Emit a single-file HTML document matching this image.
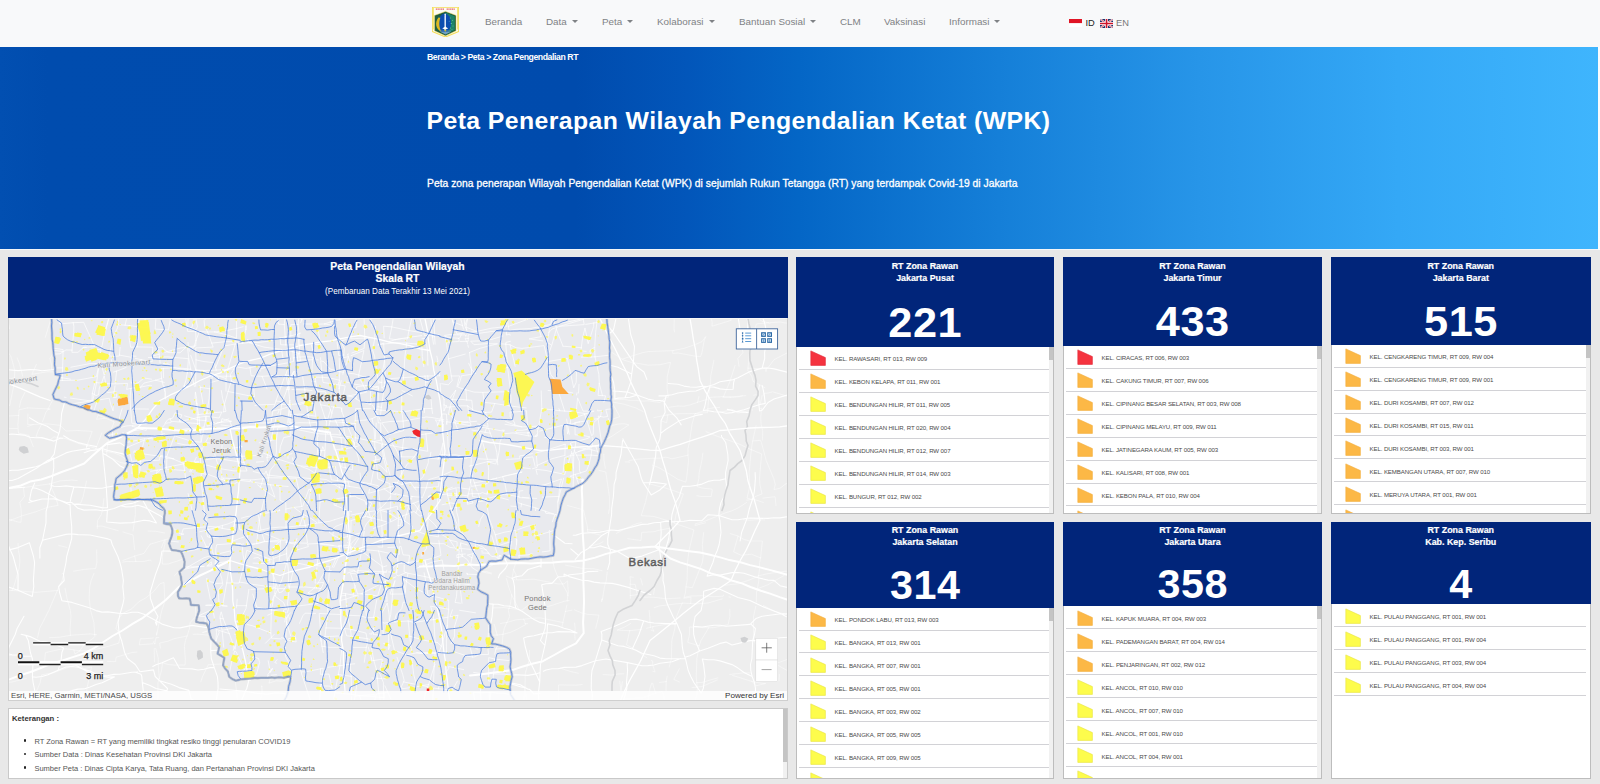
<!DOCTYPE html>
<html><head><meta charset="utf-8"><title>Peta Penerapan Wilayah Pengendalian Ketat (WPK)</title>
<style>
*{box-sizing:border-box;margin:0;padding:0}
html,body{width:1600px;height:784px;overflow:hidden;background:#e8e8e8;font-family:"Liberation Sans",sans-serif;}
body{position:relative}
.abs{position:absolute}
#nav{position:absolute;left:0;top:0;width:1600px;height:47px;background:#f8f9fa}
#nav .it{position:absolute;top:15px;font-size:9.85px;color:#7f8285;white-space:nowrap;line-height:14px}
#nav .car{display:inline-block;width:0;height:0;border-left:3px solid transparent;border-right:3px solid transparent;border-top:3.2px solid #7f8285;margin-left:5px;vertical-align:2px}
#hero{position:absolute;left:0;top:47px;width:1598px;height:201.5px;background:linear-gradient(90deg,#024fb1 0%,#004cae 3%,#004bad 36%,#0256ba 43%,#0466c6 50%,#157fd8 62.5%,#2795e8 75%,#34a8f6 87.5%,#3fb5fd 100%)}
#bc{position:absolute;left:427px;top:51px;font-size:8.7px;font-weight:bold;color:#fff;white-space:nowrap;line-height:12px;letter-spacing:-0.42px}
#ttl{position:absolute;left:426.5px;top:105.3px;font-size:24.8px;font-weight:bold;color:#fff;white-space:nowrap;line-height:32px;letter-spacing:0.41px}
#sub{position:absolute;left:427px;top:176.8px;font-size:10.3px;color:#fff;white-space:nowrap;line-height:14px;-webkit-text-stroke:0.3px #fff;letter-spacing:0.02px}
#wband{position:absolute;left:0;top:248.5px;width:1600px;height:1.5px;background:#f4f6f8}
.navy{background:#01257a}
#mp{position:absolute;left:8px;top:257px;width:780px;height:444.2px;background:#e9e9e9;overflow:hidden}
#mph{position:absolute;left:0;top:0;width:780px;height:60.5px;background:#01257a;color:#fff;text-align:center}
#mph .a{-webkit-text-stroke:0.2px #fff;position:absolute;left:0;width:779px;top:3.6px;font-size:10.4px;font-weight:bold;line-height:12.6px}
#mph .b{position:absolute;left:0;width:779px;top:29.2px;font-size:8.15px;line-height:11px}
#map{position:absolute;left:0;top:60.5px;width:780px;height:384px;overflow:hidden;background:#e9e9e9}
#attr{position:absolute;left:0;top:434px;width:780px;height:10.5px;background:rgba(255,255,255,.82);font-size:7.75px;color:#4a4a4a;line-height:10.2px}
#ket{position:absolute;left:7.5px;top:708px;width:780.5px;height:70.5px;background:#fff;border:1px solid #c9c9c9;font-size:7.5px;color:#555}
.card{position:absolute;background:#fff;overflow:hidden}
.chead{position:absolute;left:0;top:0;right:0;background:#01257a;color:#fff;text-align:center}
.ct1,.ct2{-webkit-text-stroke:0.2px #fff}
.ct1{position:absolute;left:0;right:0;top:3.3px;font-size:8.9px;font-weight:bold;line-height:12px}
.ct2{position:absolute;left:0;right:0;top:14.9px;font-size:8.9px;font-weight:bold;line-height:12px}
.cnum{position:absolute;left:0;right:0;font-size:43.5px;font-weight:bold;line-height:48px;letter-spacing:0.6px;text-indent:0.6px}
.clist{position:absolute;left:0;right:0;overflow:hidden;border:1px solid #bdbdbd;border-top:none}
.row{position:absolute;left:2px;right:4px;height:22.96px;border-bottom:1px solid #d2d2d6}
.row .ic{position:absolute;left:10.5px;top:3.3px}
.row .rt{position:absolute;left:35.5px;top:1.6px;line-height:21.96px;font-size:6.1px;color:#4a4a4a;white-space:nowrap;letter-spacing:-0.1px}
.sbar{position:absolute;right:0;top:0;bottom:0;width:4px;background:#f1f1f1}
.sthumb{position:absolute;left:0;top:0;width:4px;height:13px;background:#c4c4c4}
</style></head><body>
<div id="nav">
<svg class="abs" style="left:432px;top:6.7px" width="27" height="30.4" viewBox="0 0 27 30.4">
<path d="M0.3,0.3 H26.7 V24.4 L13.5,30 L0.3,24.4 Z" fill="#fdfcf4" stroke="#f4dc55" stroke-width="1.1" stroke-linejoin="round"/>
<path d="M1.2,1 V22.5 M25.8,1 V22.5" stroke="#f6e36a" stroke-width="1.3" fill="none"/>
<path d="M3.8,2.1 H12 M14.6,2.1 H22.8" stroke="#e4606a" stroke-width="1.3" stroke-dasharray="1.3 0.45" fill="none"/>
<path d="M13.5,4.4 L24,8.4 L24,23.8 L13.5,28.8 L2.6,23.8 L2.6,8.4 Z" fill="#1c5a3c" stroke="#e9d34a" stroke-width="0.5"/>
<path d="M13.5,5.6 L22.8,9.2 L22.8,22.8 L13.5,27.6 Z" fill="#1f8466"/>
<path d="M3.9,9.4 L13.5,5.6 L13.5,27.6 L3.9,22.8 Z" fill="#1b5f45"/>
<ellipse cx="12.8" cy="16" rx="6.3" ry="9.6" fill="#0c4db0"/>
<path d="M6.4,10.4 C2.6,15.5 3.4,22 9.8,25 C7,21 6.6,15.5 8.4,10.8 Z" fill="#dcb81f"/>
<path d="M8.5,25 L18.5,25 L13.5,27.6 Z" fill="#6f9fc4"/>
<path d="M8,24.1 H19" stroke="#5b8fc0" stroke-width="1" />
<path d="M13.2,7.2 V21.5" stroke="#ffffff" stroke-width="1.25" stroke-linecap="round"/>
<path d="M13.2,9 V20" stroke="#dbe9fb" stroke-width="0.5"/>
<path d="M10.2,21.6 L13.2,19.4 L16.2,21.6 L14.4,21.9 L13.2,23.4 L12,21.9 Z" fill="#ffffff"/>
<circle cx="13.3" cy="23.6" r="1" fill="#c9c238"/>
<g fill="#7fe0c0"><circle cx="18.2" cy="11" r=".45"/><circle cx="20.4" cy="13.2" r=".45"/><circle cx="19.2" cy="16.6" r=".5"/><circle cx="21" cy="19" r=".45"/><circle cx="18.4" cy="21" r=".45"/><circle cx="20" cy="22.6" r=".4"/><circle cx="17.2" cy="14.2" r=".4"/></g>
</svg>

<span class="it" style="left:485px">Beranda</span>
<span class="it" style="left:546px">Data<i class="car"></i></span>
<span class="it" style="left:602px">Peta<i class="car"></i></span>
<span class="it" style="left:657px">Kolaborasi<i class="car"></i></span>
<span class="it" style="left:739px">Bantuan Sosial<i class="car"></i></span>
<span class="it" style="left:840px">CLM</span>
<span class="it" style="left:884px">Vaksinasi</span>
<span class="it" style="left:949px">Informasi<i class="car"></i></span>
<svg class="abs" style="left:1069px;top:18.7px" width="13" height="8.6" viewBox="0 0 13 8.6"><rect width="13" height="4.3" fill="#e01525"/><rect y="4.3" width="13" height="4.3" fill="#fff"/></svg>
<span class="it" style="left:1085.4px;color:#1c1c1c;font-size:9.3px;top:15.6px">ID</span>
<svg class="abs" style="left:1100px;top:18.7px;border-radius:1.5px" width="13.2" height="9" viewBox="0 0 60 40" preserveAspectRatio="none"><rect width="60" height="40" fill="#20336b"/><path d="M0,0L60,40M60,0L0,40" stroke="#fff" stroke-width="8"/><path d="M0,0L60,40M60,0L0,40" stroke="#cf142b" stroke-width="3"/><path d="M30,0V40M0,20H60" stroke="#fff" stroke-width="13"/><path d="M30,0V40M0,20H60" stroke="#cf142b" stroke-width="7"/></svg>
<span class="it" style="left:1116px;color:#777;font-size:9.3px;top:15.6px">EN</span>
</div>
<div id="hero"></div>
<div id="wband"></div>
<div style="position:absolute;left:1598px;top:47px;width:2px;height:203px;background:#fbfcfd"></div>
<div id="bc">Beranda &gt; Peta &gt; Zona Pengendalian RT</div>
<div id="ttl">Peta Penerapan Wilayah Pengendalian Ketat (WPK)</div>
<div id="sub">Peta zona penerapan Wilayah Pengendalian Ketat (WPK) di sejumlah Rukun Tetangga (RT) yang terdampak Covid-19 di Jakarta</div>

<div id="mp">
 <div id="map"><svg width="780" height="384" viewBox="0 0 780 384" style="position:absolute;left:0;top:0;font-family:'Liberation Sans',sans-serif">
<rect width="780" height="384" fill="#eeeeee"/>
<path d="M43.2 -17.6l-.2 2.9-.1 2.8 .7 3-.2 3.8-.3 3.2 .5 3.3 .2 3.2-.3 3.4 .3 3.9 .2 3.1 0 3.2 .1 3 .7 3.5 .2 2.7 .2 3.2 .4 3.6 .3 3.2 .8 2.6-.1 3.5-.1 3.3 .7 3.2-.1 3.3 .3 3.3 4.8 .6-.7 2.9-1 2.6-.8 3.7-1.2 2.5-1.9 3.9-1.7 3.7 1.2 4.3 2 .7 3.3 .6 2.8 1.6 3.6 .3 3.3 1.7 3.3 1 3.5 .9 3.7 1.3 3.9 .9 3.6 1.9 2.8 .4 2.7 1.2 3.1 .2 3.3 1.2 3 .9 2.8 1.2 2.9 1.3 3.2 1.4 3.1 1.2 3.6 1 2.7 1 2.3 1.2-2.9 4.9-3.6 1.5-3.6 2-4.2 2.5-3 2.5 4.1 3 4.1-.9 4.8-1.3 3.8-1.4 4 .2 .5 3.3-.3 3-.2 3.7-.6 3.4-.4 4.8 .8 3.6 1.3 3.2 .7 3.4-1.5 3.9-1.8 3.4-2.5 2.9-3 2.6-3 2.5-.5 3.3-.9 3.5 .1 3.7-.7 3.4-.5 4.1 .7 3 2.5 .4 3.9-.2 3.3 0 4.1-.5 3.5 .3 3.3 .1 3.4-.5 3.1 .3 3 .1 2.7 0 3.1 .3 2.6 .3 3.3 1.7 2.9 1.8 2.2 2.7 2.2 1.7 1.2 2.2 .2 2.9-.7 3.6 0 3.6-.2 3.1 3.3 .7 3.1 .6 1.3 2.7 .9 3-.3 2.9-.9 3.7-1.3 3.1-1 3.2 1.5 4.1 1.3 2.7 4.5 .3 4.4 .9 1.5 2.8 1.4 3.7 1 3.9-.3 2.8-.1 3-4.9 4.3 1.6 4.7 .4 3.8 .7 4.3-1.8 3.8-2.3 3.9 .1 3.5 1.2 2.3 3 .3 4.2-.1 3.2 .3 .8 2.8 .4 3.4 4.2 .4 3.7 0 .5 5.1-1.3 3.9-1.4 4.3-.3 3.1 3 .9 3.7 .3 3.6 .7 1.5 2.4 .9 3.5 .4 3 1 3.3 1 3 2.6 2.5 3 3.2 2.2 2.7-.9 4-.7 2.5 3.3 1.8 3.6 2.5-.7 3.3-.5 4 1.9 3.4 2.8 2.8 1.3 5.2 2.9 2.3 3.9 1.7 4.5-1.2 2.9-.4 3.8-.3 3.7-.2 3.7-.7 3.1 .2 3.1-.3 3.8 0 3.4 0 3.8-.4 2.9 .5 3.7-.6 2.7 .1 3 .4 4.1-1.4 2.4 .3-.2 3.2-.7 3.1-1.1 3.3-.4 4.5-.9 3.2-1.2 3.3-2.1 3.8-2.6 3.2-1 3.9-.4 3.1 .6 3.9 3 2.8 5.7 2.3 1.6 .6 2.7-.4 2.5 .2 2 .1 2.4 .2 3 .1 2.8-.2 2.1 .1 3 .2 2.8 .3 2.8 .3 3 .1 2.4-.3 3.5 .1 2.5 .1 3 .3 3.4-.4 3.3 .3 2.7 .1 3.6-.1 2.6-.1 3.2 .3 3.5 .3 3.2-.6 3.5 .1 3.2 .1 3.3 .4 3.9-.2 3.1 0 3.6 .2 2.8 .1 3.6-.4 3.3 .5 3.9-.3 3.3 .2 3.1 0 3.9 .2 3-.3 3.7 .2 3.4-.1 3.8-.2 3.1 .3 3.1 .1 3.6-.4 3.3 .2 3.6-.1 3 .1 3.9-.2 2.8-.3 3.5-.2 3.6 .2 3.2-.2 3 .4 3.2-.3 2.7-.1 3.4 .3 3.4 0 3.1-.6 2.3 0 2.9-.2 3.3 0 2.9 0 2.6 .4 2.7-.2 2.9-.2 2.4 0 3.1-.5 2.3 .2 2.5 0 2.5-.4 2.4 .2 2.1-.2 2.4-.2 5-2.6 3.3-2.8 .4-3.4-.2-3.4-2-3.5-1.7-3.6-2-3.3-2.3-3.3-.2-2.8-.5-4.7 .7-3.5 .5-3 1.1-3.8-.5-3.3-.9-3.4-.7-3.2 .6-4.2 .2-3.4-.3-3.6 .1-3.4-1.3-3.3-2.8-1.6-4-1.5-3.2-.8-4.2-1.1-3.6-.1 1.8-5.2-2.2-3-1-3.6 .1-3.9-.1-3.5-2.5-3.6-2-3.2 .3-3 .5-4.5 .3-2.6 .9-3.3 0-3.4 .2-3-.1-3-3.6-1.9-3.1-1.4-3.5-2.5 .7-3.1 .7-2.9-.4-3.4-.8-2.9 .7-3.6 2-3 3.3-2.2 2.6-1.7 2.8-5.1 2.7-.4 4 .2 3.3-.7 2.9-.5 2.1-4.7 2.9 1.7 4 2.3 2.8 .2 4 .3 3.2-.7 4.2-.2 2.8 .1 3-.6 2.9-.6 3.2-.5 2.8-.4 3.4 .2 3.7-.4 3.3-.8 2.9-.3 .7-3.5 .2-3.5-.5-4.5 .2-3.9 .3-3.7 .2-3.5 .4-3.6 1-3.3 .3-3.6 1-3.4 1.2-3.3 1.6-5 1.1-5.6 1.1-3.6 1.2-3.5 1.8-3.3 1.3-2.9 3.4-1.7 4.1-2.1 2.6-1.5 2.1-1.1 3.2-1.6 2.4-1.7 2.5-2.7 1.8-2.5 2.4-2.6 2-3 1.8-3.3 2.1-3 1.4-3.7 .9-3 .3-3.5 1-3 .3-3.3 1.6-3.3 1.7-3 1.7-3.7 1.3-3.2 1.2-3.2 .6-2.6 .9-3.5 1.1-2.5 .9-3.8 .2-2.8 .1-3.5 0-3.3-.4-3.4 .1-2.8-.8-3.9 .5-3.2-.5-2.7 .1-3.3-.4-3.3 .1-3.8-.3-3.2 0-3.3 .4-3.1-.6-3.6-.2-3.2 .1-3.6-.1-3.1-.4-3.2 0-3.4 .3-2.8-.4-3.3 .2-3 .1-2.9-.5-2.7-.4-3.6-.4-3.1-.4-3.3-.4-3.3-.6-3.2-.2-3.2-.6-3.6 .4-3.1-.2-3.9-.5-3.1-.1-3 .4-2.6z" fill="#e9eaee"/>
<path d="M-37.3 333.9l-11.8 24.6-1.6 6-.4 12-4.1 18-.3 6 1 18 M-38 26.3l6 2.3 6 1 6 1.9 18 1.1 4.5 4.7 1.1 3.2 3.2 12-.3 7.2 M-38 100.9l18-4.1 6-.3 6-1.4 2.2 1.2 M-38 182.8l6 2.2 7.9 1.3 M-38 234.1l12 .6 8.4-1.3 M-38 335.6l2-.1 M-38 370.6l6-2.3 6-.2 12.4-2.4 M-38 422.5l6-1.4 13-5.7-.4 3.1 M-37 78.4l11 4.6 6 1.9 21.7 2.7 4.7-23.1 .1-4.8 M-37 78.4l35-16.3 8.5-2.4 M-26.5 270l-1.9 28.5 4.8 6-4.8 13.8-3.3 6 M-24.1 186.3l7.5 1.3 M-24.1 186.3l4.1-1.8 3.2-4 .6-8-1-18 .6-6 7.3-18 3.1-12 1.4-8.4 .8 .1 M-17.6 380.9l9.6-.2 18 2 11 2 M-17.6 380.9l-.1 7.6-.9 6 .6 6.6 16-3.5 6-.6 4.8-5.2 M-13.6 365.7l-4 15.2 M-13.6 365.7l17.6-1.7 14.2-3.5 M-12.1 231.8l-4.1 12.7-4 18 .5 13.2 5.7-1.3 6-.2 6-1.3 6.1-.5 M-7.4 337.3l20.1 .6 M-5.9 -37.5l1.3 12 3 12 0 6 1.9 10.2 M-4.4 107.8l-.4 2 .8 .4 M-4 110.2l13.3 .4 .8 .2 .4 4.4 10.4 2.1 4.4 11.4 M-4 106l3-7.9 11.7-.7 M.3 2.7l-.6 7.4 M.3 2.7l1.2 7.9 M3.4 202l.6-.3 9.3-3.6-.2 6.2-3.1-.3-6.6-2 M3.4 202l-12.4-3.5-.6 7.7 7.6-1.9 5.4-2.3 M4.1 272.4l23.9 1.9 21.3-1.8 M10 225.4l.4 7.1 1.2 6 .2 6-.7 6-5.2 18-1.8 3.9 M9.2 40l2.6 6.5 2.8 11.6 M10.7 97.4l-.8 9.1 .2 4 M10.7 97.4l.3-5.6 8.4-1.9 M16.9 74.4l-3.9 8.1-1.6 6.7 M13.4 197.8l-.4-7.3-1.2-6 4.7-6-1.1-8.9 26.3-3.7 M13.9 197.9l14.1-4.2 12-4.5 10.1-1.9-2.7-8.8-5.7-12.6 M17.2 390.2l-2.7 4.3-2.3 6-1.8 11 11.6 1.4 12 .2 18-5.4 18-6.6 7-1.1 M19.4 89.9l20.7 1 M19.8 108.4l5.3-1.8 M19.9 96l-.2 10.6 5.4 0 M21 384.7l7 .3 6-1 24 3.2 13.6-.7 M21 384.7l5.7-8.2 3-6 2.5-6 1.4-7.6 12.4-2.3 23.5-8.6 M25.1 106.6l8.6-.5 M28.4 46.4l-4.5 9.9 16.1-2.6 6.2 .3 M49.3 272.5l-8.5 20-9.2 18-2 8.9 M33.7 106.1l-3.4 6.4-2.3 6.2 14 3.3 4-3.1 12 1.8 12 4.6 9 2.5 M33.7 106.1l6.3-.2 12 1.4 6 5.7 12-.5 14.1 .9-5.1 14.4 M40.1 90.9l2.3 .2-2.6 .3-1.9 3.1-3.3 9 M36.6 343.5l.8-8.8 14.6-3.4 6-.5 7.9 1.1 M42.5 2.3l-5.2 17.1 M44.9 80.2l-.5 2.3-4.3 8.4 M41.5 319.7l10.5-.5 10.4-1.9 M41.7 165.9l10.3-3 12-.8 5.3 .5 M44.9 35.7l-2.9 4.8 1.3 6 .2 5.1 M48.1 -23.2l-.7 4.7 M54.9 258.7l-.8 3.8-4.8 10 M52.5 -37.5l-1.9 15.2 M50.7 227.5l8.1 1.9 M54.1 255.6l1.6-.3 M57.1 270.3l1.9 10.2 3.4 12 .6 6-.9 12 .3 6.8 M62.4 317.3l19.6-1.4 4.7 .5 M64 186.6l8.7-1.4 2.5-6.7 3.3-15.4 M65.6 253.2l10.4-1.8 11.6-.9 1.3-6-.3-12.6 M65.9 331.9l5.8 1 M65.9 331.9l1 4.2 4.8-3.2 M69.5 346l-.9-3.3 7.4-2.1 9.3 .2 M69.5 346l.5-.3 6 5 7.5-1.7-4.6 21.5-.4 16.7 15.5 1.9 12-1.4 6 .3 12 2.1 8.8 2.2-5.5 2.5 M71.6 386.5l3.9 .4 M86.7 316.4l.2 2-2.4 2.5-7.9 5-4.9 7 M71.7 332.9l10.3-.2 18-4.2 9.8-3.1 M77.7 402.1l0 4.4-2.9 12 M77.8 400l10.2-1.7 15.5 1.4 M79 127.8l8.9 2.6 M79 127.8l-1.1 4.2 4.1-.1 5 1.1 M86 255.4l-2.9 7.1-1.4 6-.5 12 1.4 12 3.3 12 .8 11.9 M86.7 316.4l1.9 .2 M87.9 130.4l10.9 3.3 M93.8 115l-5.9 15.4 M89.3 208.2l0 2.3 M95.9 180.6l-1.1 9.9-1.4 6-3.8 6-.3 5.7 M89.3 208.2l4.7-.1 16.2 4.6 M90.1 97l16.1 6.9-3.2 8.1 M90.1 97l-1.6 4.3 8.5-1 M98.8 133.7l7.2 1.1 6 2.5 5.2 3.1 M98.8 133.7l-.1 4 13.3 6.7 6.4 1.2 M100.5 120.5l-1.7 13.2 M99.3 343.4l8.3 .2 .5-4.4 15.9-4.7 4.9-.4 M103.5 399.7l.5 6.8-.4 6-1.5 5.9 M102.1 418.4l9.9-.5 12-1.9 5.7-.1 M103.5 399.7l2.5 .3 12-1.8 9.3-3.4 M107.8 -27.8l-.4 9.3 M107.6 390.8l19.7 4 M109.1 -37.5l-.1 3 M149 314.1l-.5 3.2 5.2-24.8 2.2-6 .8-6-.7-16.1-4.1 1.4-6.2 7.6-7.8 6.5-7.1 3.8-7 7.1-9.1 4.6-4.5 5.9-2.2 9.2 4.4 6-1.5 8.5-1.1 .4 M114.8 244.1l3.2-.6 9.8 .1 M114.9 242.4l11.8-4.3 M115.1 214l9.9 3 1.6 14.6 M118.3 -37.5l.7 2.6 M119 -34.9l18.7 6 M119 -34.9l.9 3.4 .6 13 M127 182.5l.4 14-2.3 16.3 M126.7 238.1l1.1 5.5 M126.7 238.1l9.3-2.7 6-9.2 14.5-4.2 M127.8 243.6l8.2-.2 6-1.4 1.3 .8 M137.7 -28.9l-3 10.4 M135.1 392.8l11.2 .4 M137.7 -28.9l23.6 10.4 M139.4 416.9l32.6 6.3 12 .3 6-1.1 18-6.2 17-2.4 M139.4 416.9l.3 1.6 M139.4 416.9l-.8-4.4 1.8-12 5.1-4.6 1 0 M140.1 213l7.9 .3 8.7 1.7 M145.3 320l-9.3 .8-3.5-.2-1.3 6.2 13.5-1 1.3-2.6 M146.5 343.9l-.3-13.2 1.6-.1 2.5 9.9-.1 6 1.1 14 M146.5 395.9l4.2 .2 M147.4 393.3l-.9 2.6 M146.8 325.4l-.1 .8-.2-.7 .3-.1 M146.8 325.4l1.2-5.8 2.7-.1 M149.7 383.9l.5-.1-.3 1.1-.2-1 M151.3 360.5l-1.3 4-.3 19.4 M150.7 396.1l3.3 .3 9.7-1.2 M150.7 396.1l-.2-3.1 3.5-.5 6-.5 12 .6 12-2.5 2.3 2.1 M179.1 318l-1.7 4.5-1 6 .9 12-.2 6.5-11.1 .1-6-.7-5.5-1.5-1 7.6-2.2 8 M152.4 330l-.7-5 8.3-1.8 6-2.5 13.1-2.7 M156.5 222l-3.1 7.9 M157.1 221.8l-.3 4.7-2.6 12 .2 7.6 5.6-.1 14.7-4.7 M157.1 221.8l2.6-.7 M170.5 253.8l-4 3.8 M187.5 288.3l.2 10.2-5.5 6-.7 6-2.4 7.5 M185.2 316.3l4.8-.1 11.4 1 M192.8 363.8l1.7-5.3 5.8-11.8 13.8-.7 M200.1 312.4l-5.7 2.2 5.9-1.5 M215.3 -37.5l-3.5 19 M227.4 363.7l2.2 18.8-.3 6-2.3 10.9 11 1.9 8.2 .2 M245 418.5l-.4-6.6 7.3-1.3 M246.2 401.5l3 .4 M246.2 401.5l.9-7-.3-6.2 5.1 .2 M249.1 418.5l3.4-2.3 M251.9 388.5l-.3 13.7 4.5 .5 .2-8.2 2.5-5.1 M254.1 368.4l-.1-.5-.6 .1 .6 2.5-.1 6-1.7 6-.3 6 M257.9 409.9l2.3 8.6 M262.3 409.8l10-5.1 16.7-.1 M262.3 360.8l-1.4 4.4 7.1-2.4 6 .4 7.2-2.6 M278.2 -37.5l2.5 19 M288.8 418.5l.3-3.7 .5 .1 M289.2 413.3l.4 1.6 M289.6 414.9l14.4 2.1 12-.6 6 .6 6 4.8 18 2 18-1.5 6-1.1 4.3-4.1 6.4 0 M300.7 -37.5l-3.1 12-.5 7 M305.8 -37.5l-.4 12 1.1 7 M328.1 -37.5l-3.2 19 M334.7 -37.5l-2.6 19 M344.3 -37.5l-1.8 12 4.8 6 .3 1 M347.2 403.5l-1.9 15 M349.6 403.5l-1.4 15 M355.2 -18.5l.6-7 1.4-6 1.9-4.2 8.8-.7 M367.9 -36.4l2.1-.2 4.1 .8 M374.1 -35.8l12.4 3.8 M374.1 -35.8l1.7 4.3 2.6 13 M379.4 403.5l1.3 13.6 M380.7 417.1l1.3-.1 12.7 1.3 M394.7 418.3l6.8 .6 M417.1 403.5l-5.3 14.1 M411.8 417.6l6.2-1.2 6-.1 M418.1 -37.5l-1.8 14.3 M424 416.3l-.8 2.2 M426.3 403.5l-1 9-1.3 3.8 M424 416.3l6-.4 6 .5 17.1-2.4-5.1-10.5 M426.6 -20.3l3.3-1.5 M428.6 -18.5l.3-.8 2.5 .8 M434.8 -37.5l-1.2 6-3.7 9.7 M429.9 -21.8l12.1-3.4 11.9-1.7 M453.1 -37.5l.8 10.6 M453.9 -26.9l1.1 8.4 M456.9 -25l-.9 6.5 M456.9 -25l3.1 2.2 6.7-1.8 M457.7 -37.5l-.8 12.5 M466.7 -24.6l-.7 6.1 M466.7 -24.6l5.3-1.9 12-2.8 7.3-.8-1.1 11.6 M493.9 403.5l-3.4 3 .3 7.6-21.4 .8-.5 3.6 M472.9 253.6l10.5 2.3 M473 253.4l5 .1 5.6 1.6 M475.9 251.5l7.7-3.9-.6-3.3 M484.3 247.2l7.2-3.7 M484.4 289.9l11.6-.3 5 .8 M484.4 317l4.8 .1 M486.2 306.3l3 10.8 M489.2 317.1l5.8-.8 M490.7 414.6l1.5-.5 M492.6 305.5l6.3-1.1 M495 316.3l-.9 10.6 M498.9 304.4l-2.7 6.1-1.2 5.8 M495 316.3l7-1.8 6-2.7 9.7-5.2-.2-.9 M495.5 241.4l3-1 0-.7 M498.2 258.1l5.8 2.2 M498.5 260.7l2 7.8 3.2 8.5 M501 290.4l-.7 2.1 1.4 6-2.8 5.9 M498.9 304.4l9.1-2.6 7.7-.6 M501 290.4l10 1.2 M503.7 277l-1.4 9.5-1.3 3.9 M507.1 -31.5l-2.3 6-1.5 7 M503.7 277l7.3 14.6 M504 260.3l3.2 1.6 M505.6 251.7l-1.6 8.6 M505.6 251.7l2.2 4.8 .7 5.4 17.5-.7 24 4.7 4.3 0 M508.5 242.4l-2.9 9.3 M510 -37.5l-1.5 3 M508.7 -31.8l2.2 13.3 M511 291.6l3 .5 6-4.7 12 1.6 6-.1 6-1.5 12-4.1 3.2-.5 M515.7 301.2l1.1 2.2 0 2.3 .7 0 M515.7 301.2l16.3-1.4 22.9 4.7 M516.7 414.7l0-1.8 9.4 2.4 M516.8 368.7l.1 1.9 M516.9 370.6l1.9 11.9-.2 12-1 10.2-.5-10.2 1.2-6-2.5-6 1.1-11.9 M517.9 353.2l-.7 3.1-.1 12.4 M517.5 305.7l2.1-.1 M521.6 332.3l0 8.2-3.7 12.7 M523.8 416.2l2.3-.9 M526.1 415.3l5.9-2 11.7-5.4 M531.7 416.6l6.3 .3 1.6 1.6 .8-1.8 M543.7 407.9l-3.3 8.8 M540.4 416.7l9.6 .4 18-1.7 6-1.1 14.9-.2-2-7.6-1.1-12-2.6-2.9 14.8-5.7 13.6-3.6 .2 5 4.3-4.8-.5-1.3 18.4-1.3 6.8-2.3 M543.7 407.9l1.5-7.4 4-12 1.1-6 .3-15.6 17.4 .3 6.2-.7 M544.5 238.4l.5 6.1 1.5 6 2.4 6 5.4 9.4 M552.5 350.2l9.5 3.2 8.4 1.8 M554.9 304.5l-1 4.8 M554.3 265.9l1.7 0 3.5-3 .8 11.6-.5 3.2 M554.3 265.9l4.8 8.6 .7 3.2 M557.5 293.4l-2.6 11.1 M558.8 287.2l-1.3 6.2 M557.5 293.4l6.5-1.2 M557.6 247.2l16.4 3.1 12 .5 7.9 1.9 M559.8 277.7l-.6 5.1 M559.2 282.8l1.9-.3 M559.5 187.5l16 4.4 3.8 16.6 .2 3.2 M561.5 -37.5l1.7 6 1.8 11.8 M566.4 291.8l7.6 3.3 6 1.3 11 .7-3.3 13.2 M566.6 305.1l.6 5.4-.5 6 .4 5.1 M578.7 -23.5l9.8-3.3 .4 8.3 M579.5 211.7l.1 2.1 13.8 3.6 M579.5 211.7l.5 0 13.9 1.7 M581.6 228.5l10.4-3.1 3-1.7 M590.9 152.4l6.9 1.6 3.6 24.5 0 12-.8 5 M591.3 -18.5l0-7-.5-2.4 2.6-1.4 M592.7 414.1l11.3-.8 9.7 .3-.2-10.2 M594.5 281.1l-.8 2.7-.3-2.6 1.1-.1 M599.2 254l-.9 8.5-1.8 6-2 12.6 M595.2 356.6l8.8 .5 6-1.1 5.8-.2 M595.8 136.3l.2 6.2 1.3 7.8 M598.6 121.1l5.4-2.9 16.8-11.3-4.8-1.2-6 .4-6.9 1.6 M602.7 33.6l11.5 7.5 19.8-6.3 6-1.2 24.9-1 M614.5 41.3l1.5 .9 6 1.8 18 3.2 12-.5 10.6-2.4-3.3 14.2-.2 12 1.2 8.7-2.3 .1-6 5.2-12-1.7-6 .4-6-.8-6 0-6-1.1-6 .2-5.8-.6 M604.3 101.2l7.6-2.5-7.4-13.3 M604.4 84l11.6 2.2 12 3.8 7.1 3.6 M608.3 215.5l7.7-4.2 12-5.4 5.3-1.3 M611.7 363.2l1.3 9.6 1.4-9.2 M617.2 143.9l4.6 .2 M619.9 220.7l13.1 1.8 .7-8.1 12.3-.7 6-1.7 13.7-2.4-1.3 4.9-4.3 10.8 M621 142.6l7-1.3 18.5-1.1 M621.7 312.7l12.1-1.4 M621.7 312.7l-3.2 14 9.5 5.5 10.9 7.7 M621.7 312.7l-12.7-.6 7-2.7 6.7-3.9 M622.2 266.2l5 .3 2.1 10.2 M622.2 266.2l.1 11.4 M622.2 266.2l.3-3.7-.6-3.7 3.4 .5 M622.3 277.6l.1 2.7 M622.3 277.6l7-.9 M629.3 276.7l.6 2.4 16.1 .1 12 1.6 14.3-.8 M640.8 377.6l-1.9 10.9-4.1 12-2.6 12.9 M632.8 260.6l1.7 6.4 M638.5 310.3l4-1 M640.8 377.6l1.2-7.1 1.6-5.2 1-.1 2.9 9.9 M640.8 377.6l6.7-2.5 M641.2 292.5l1.3 16.8 M641.6 166l-4.2 18.5-4.2 13.1 12.8 .9 20.6 6.2 1.4-8.2 7.3-20.6-17.3-5.7-16.4-4.2 M645 147.3l-1.5 13.2-1.9 5.5 M642.5 309.3l2.4-.7 M643.1 312.1l2.9 1.2-1.4-2.8 .3-1.9 M643.4 342.5l1.3 .6-.1 3.7 2.5 7-2.3-.4 M644.9 308.6l13.1-2.3 9.2 .4 M645 147.3l7 2.9 18 11.2 7.7 2.7 .9-3.6 2-18-.7-5.3 M646.5 140.2l-1.5 7.1 M646.5 270.2l-.9 6.1 M645.8 99.6l14.1-2.8 M646.1 289.7l5.9-1.9 22.2-2.6 M646.5 140.2l5.5 0 6-1 6 1.6 15.9-3.6 M647.5 375.1l6.7-1.7 1.2 3.1 1.9 9.5 M651.6 364.5l6.6-.9 M659.9 96.8l-1.3 7.9-4.9-1.6 M653.9 417.6l4.9-.3 M658.2 363.6l-.2 9.1 M658.2 383.8l-.2 5.4 M659.1 358.2l-.9 5.4 M659.9 96.8l10.1-1.1 17.5-.1 M660.9 89.3l9.1-1.3 6 .2 6-1.3 7.6-2.6 M667.2 306.7l-.3 3.8-3.1 12-.4 18-2.2 8.5 M662.3 417.4l7.7 .8 6 4.9 6 1 12-.8 18-3 12 1.6 6 1.8 18 1.9 12-.3 12-2.6 6-.4 18-4.3 6 0 12 1.8 6 0 M664.9 32.6l-.4 2.8 5.5-.4 18 3.3 4.6 .2 1.4-4 2.2-12 1.5-3.9-3.7 5-6 2.6-12 4.2-11.1 2.2 M666.5 205.3l19.4 6.6-4.9 20.6-1.5 12-.4 18-1.1 6.4 M673 -37.5l-1.3 6 .1 6-5.5 24-.3 12 .5 3.4 M674.2 285.2l-5.6 13.3-1.4 8.2 M671.4 350.7l-5.6 10.7 5.7 2.6 M674.2 285.2l1.8-.1 6.7 .5 M675.8 280.3l7.2-1.2-.3 6.5 M695.6 214.6l-1.2 11.9 .8 12-.9 6-9.9 25.1-6.4-.7 M678 268.9l-.5 5.6-1.4 5 5.9-1.4 12-.4 12 1 9.2-.5 .3-1.2 M687.5 95.6l-.7 .3-2.8 10.6-2.6 18-1.4 6-.1 6.7 M689.3 371.4l-.4 5.1-5.1 18-1.7 12-.1 12 M682.7 285.6l5.3 .3 12-.9 14.2-4.1 M684 369.6l5.2-.5 M687.5 95.6l.5 0 6-.7 5.5-.2 .3-3.8 M687.5 95.6l6.5-2.1 5.8-2.6 M688.8 364.7l.4 4.4 M691.1 327.8l-2.2 12.7-.7 18 .6 6.2 M688.8 364.7l5.2-.3 15.8-4.5 M694.8 135.2l-.9 7.3-2.7 12-.4 6-1.7 8.1 4.9 1.4 10 1.1 .2 1.4-1 6-9.2 0-5.2-.7 M689.2 369.1l4.8-.6 15.4-6.6 M690.9 78.6l-1.3 5.7 M689.6 84.3l11-3.4 M700.7 309.8l-19.3-.8 .1 7.5-1.8 7.9 11.4 3.4 M700.7 309.8l-7.7 12.7-1.9 5.3 M697.7 204.8l-10.7 2.7 .4-1.8 6.6-1.4 24-9.7 6-1.8 6-2.8 8.6-5.5 M698 113.6l8 3.5 23.2 8.2 M700.6 80.9l-.8 10 M699.8 90.9l6.2-1.2 5.6-.3 M700.6 79.4l0 1.5 M705.9 42.3l-3.2 16.2-.1 6-2 14.9 M700.6 79.4l14.9-.8 M700.7 309.8l5.3-.2 14.1-3 1.8-8.1-.1-7.3 M703.1 -11.7l-.4 4.2 .4 6 1.1 6-.2 3.7 19.2-5.9-3.6-9.8-1.1-6-3.8-6-1.2-6-2.7-6.9 0-5.1 M710.6 94.4l7.4-1.3 6-2 6 4 11.8-2.5 1.4-3.5 M715.1 79.5l7-.4 M715.5 78.6l6.6 .5 M727.1 47.4l-5.6 17.1-6 14.1 M717.2 267.2l12.8-1.4 12-4 8.6-4 M721 278.9l1.6 .4 M721.8 356.5l14.2-1.7 6.3 .1 M722.1 79.1l1.9 .1 6-.3 4.3-1 M722.1 79.1l12.2-1.2 M722.1 215.5l7.9 2.6 M724.5 357.4l19.6 6.1 M729.7 125.4l13.6 6.3 M730 218.1l6 3.4 6 1.5 12.4 0-1.8 16.9 M730 218.1l-4.4 15.8 7.7 3.3 10-1 9.3 3.7 M732.8 25.2l2.2 9.3-5.1 6 1.1 7.9 M734.3 77.9l3.4-.2 M735.5 201.7l6.5 .5 6-.5 8.6 .2 M738.8 182.2l4.7-.9 M740 50.1l14 .8 3.8-.8 .2 3.5 .4-3.6 1.6-.3 6-8 12-6.2 6-2.4 6-1.9 4.7 0 M740 50.1l-.1 2.4 3.9 6 1.3 4.8 11.9 6.4 M740 50.1l2.1-21.6 2.7-12 3.6-10.6 12.1-1.1 M743.2 89.1l1.3 3.1 M743.3 131.7l10.3 4.2-2.1 24.6 .4 6 2.1 9.5-6 2.2-4.5 3.1 M743.3 131.7l-2.2 22.8 .6 12-.8 6-1.9 7.6 4.5 1.2 M744.7 123l-1.4 8.7 M743.5 181.3l4.5 .7 7.4 2.5 M744.1 363.5l9.9 1.8 3.7 .2-9.7 2.3-3.9-4.3 M748 107.6l-3.3 15.4 M744.7 123l7.7-.7 1 2.2 4.8 18 7.5 18 1.6 6-1.3 5 6-1.2 6-4.6 10.5-.9 .1-4.3 2.8-6 .5-15.2 M745.6 77.2l2.4-.5 M747.8 288.4l-2.3 10.1 .1 24 4.3 6 .7 6 4.6 17.1 M748.3 284.1l.2-9.6 .9-3.7 10.6-4.1 18-10.4 10.3-3.4 M750.6 257.8l.2 4.7-1.2 7.2 M752.6 239.9l-1 4.6 0 6-1 7.3 M750.6 257.8l9.4-2.2 18-2.4 6 0 4.3-1 M751.7 90.6l1.8-.6-.8 10.5 .5 6 1.5 6-.1 9.6 M754.1 77.4l-1.7 8.3 M754.9 180.1l12.2-1.4 .9 8.9 M755.3 287.4l10.7 5.6 13.1 3.9 13.1-4.7 M755.4 77.4l.5-2.1 4.1-.2 4.6-1.3 16.3 4.8 9.1 .3 5.1-.5-.2 2.1 13.1 .6 6 .9 1.3 .3 .5 2.8 M760.5 4.8l1.5 .5 M761.6 -37.5l-.6 6-3.1 12-7.5 19.8 3.6 3 6.5 1.5 M761.9 4.7l10.1-.7 6 1.1 6 .1 6 1.2 9.2 3-4 13.1-.8 6 .3 2.7 M771.4 356.5l-.4 6.3 M781.7 370.7l-1.9 5.8-7.1 15.8 2.4 2.2 .4 6-1.3 18 M780.3 341l-13 4.8 10.7 6.1 8.3 3.2-.9 3 M787.3 299l-.3 11.5-1.3 6-.3 12-3.4 6-1.1 6-.6 .5 M780.3 341l9.4-2.3 1.5-10.2-.9-6 .9-12 1.2-10.4 .9 .1 M784.8 360.9l11.2 3.2 6.9 2.9 M787.9 265.9l2.6-.4 M788.3 252.2l-2.8-8.2 4.5 .1 M788.3 252.2l3-13.7 .3-6-1.7-12-.2-16.5 15.6-2.4 M788.4 252.8l7.6-4.1 6-.1 9.1-2.6 M789.8 183.4l6.2 3.1 20.3 7.2 6.8-15.2 4.7-18 2.9-6 2-6 5.1-8.9 M790.6 192.3l24.1 4.8-.9 2.6-8.5 1.9 M792.2 292.2l1.1 8 M792.2 292.2l-1.1-5.3 4.9-4.8-2.2 9.7 M793.3 300.2l.3 10.3 1.7 12 4.8 12 2.1 3 M794.5 85l7.5-.6 13.8 .7 M794.7 31.2l13.3 1.1 6.1-.3 1.9-9.5 0-6 .9-5.4 M795.2 74.6l6.8-3.3 10.7-3.9 M795.3 67.4l12.7 .5 4.7-.5 M801.4 372.2l12-.5 M805.3 201.6l2.8 18.9 .6 12 2.4 13.5 M806 357.4l.2-.9 6.6 3.8 6.8 22.2 5.9 10.1 M813.3 335.9l-2.6 4.6-2.5 8.6 M811 10.7l9-.7 M811 10.7l-9-.4-2.6-.8 8.6 .6 3 .6 M811.8 357.4l8.2 0 M813.1 67.2l6.9-1.6 M820 264.5l-6.5-.2 3.6 22.2 4.4 18-1.3 12-3.8 12-3.1 7.4 M813.3 335.9l6.7-.2 M814.9 80.4l5.1-.2 M815.8 85.1l.7 3.4 .2 10.1 M816.7 98.6l.2 7.9-1.9 12-.3 6 .8 12-2.2 18-3.1 10.9 9.8-1.3 M816.7 98.6l3.3-1.5 M840.2 -37.5l-.6 6-3.4 12-1.7 12 .2 6 2 12 2.1 36-3.1 24-4.8 18-.1 6 3.2 24 3.8 21.1 M870.5 -37.5l-6.9 24-1.1 12-3.5 12-2 18-2 6-4.1 18-3.8 12-2.4 12-.6 6 .3 6 3.7 6 1 18-1.3 6-2.2 6-7.8 15.1" fill="none" stroke="#ffffff" stroke-opacity="0.55" stroke-width="0.8" stroke-linecap="round" stroke-linejoin="round"/>
<path d="M-56.9 -37.5l1.8 6 1.1 6 .4 6 4.4 12 1.8 12-.1 12-1.1 6-.1 12 .6 12-.9 12 1.6 6 6.2 12 8.2 6 1.3 6 1.2 12 .2 12 .9 1.3 M-38 -108.9l6 .6 6 1.9 6 1 12 .3 6 1.7 6 .8 12-.7 6 1.7 12 6 12 8.6 12 9.8 6 2.1 18 4.8 12 1.1 6-.1 6-1.2 6-2.1 6-.8 18 2.3 24-.7 6 1.6 12 .6 6 1.4 6 2.4 6 1.6 12 2 12 4.1 6 2.9 6 4 12 9.5 12 7.1 6 4.3 6 2.5 6 1.5 8.7-.3-.1 8.1 M-38 48l6-.1 12 1.8 6-.3 12 2.1 12 1.1 12-1 6 .1 6 1 12.1-1.2 M-38 111.3l8.6 2.5 M-38 153.8l6 2.5 10 5.7 M-38 165.2l16-3.2 M-38 200l6-4.3 12-.4 6 .5 6 3.7 1.8-.7 M-38 230.1l18 1 6 1.5 6 .6 10.1-1.6 M-38 265.3l6 .2 6 1.1 12-1.1 6 .6 18 6.2 M-38 333.6l6 .9 6 0 12-1.9 6 .5 7.2 2.5 M-38 368.5l6-.3 6-1.9 6-.1 6-.9 9.8 .3 M-38 396l12 .4 12-3 7.9-3.7 M-38 459.6l6-1.3 6-.3 18 1.8 6-.4 6 .6 6 1.4 6-1.2 6-.3 12-2.6 12-3.4 12-2.3 6-2 6-3.2 12-4 12-2.2 6-.8 12-.5 6-1.6 12 .3 6-.9 12-3.9 6-.7 6 2.3 18-1.7 6-1.5 6-.6 12-3.5 12-6.1 6-3.7 6-2.2 8.2-4 M-38 463.7l6-.3 12-3.2 6-.1 6 .5 6 1.1 6 2.2 6 .2 6-.7 18-5.7 24-3.5 6-1.7 12-.9 6 .8 12 2.6 6 .5 12-.7 12-2.7 6-.1 12 2.5 6 0 18-3.1 6 5.3 24-7.9 6 .2 6 1.1 12-.1 12 1.8 12-.5 18 3 12 4.7 6 .8 18 5.5 6 .5 12-1.7 12-3.9 12-1.6 18 2.4 18-.4 6-1.8 6-.5 6-.2 12 1 6-.7 6-1.5 6-.5 6-5.3 18 .2 6 .5 6 1.3 6-.5 18-7.2 6-1.5 12-.9 6 .8 18 6.9 6 .7 12.9-2.6 M-37.9 174.8l17.9 2.8 6-.5 .7-.2 M-37.9 174.8l5.9-.5 12 2.5 6.7 .1 M-29.4 113.8l3.4 .6 6-.1 12 2.5 6 0 6-.8 12 1.1 6 2.1 6 .5 6-.1 12 3.5 2.7-1.3 M-22 162l8 5.1 5.9 2.1 M-14.2 156.1l18.2-3.9 6 0 12-2.3 6-1.2 5.4-2 M-13.3 176.9l6.7-1.7 M-13.3 176.9l6.8-1.4 M-6.1 389.7l-3.2 10.8-.8 6 .1 6-1.2 6 M-8.1 169.2l6.1 1.3 18.5-1.2 M-8.1 169.2l-.6-2.7-2-4.2 2.7 .4 12-.2 6-2 18-9.9 5.4-3.9 M-6.6 175.2l2-.4-1.9 .7 M-6.5 175.5l.8 3-5.4 6 2.6 6 1.3 6 1 2.3 M-6.2 198.8l1.6 3.7 4.6 24 2.1 5.1 M-6.1 389.7l4.1-1.8 6-6.2 6-1.8 6-.8 12.2 .2 M-.8 335.6l4.8 1.2 6 .2 6 1.2 7.6 .1 M16 298.3l-6.9 12.2-1.9 6-6 12-2 7.1 M2.1 231.6l3.1 6.9 4.9 18-.1 15.8 M2.1 231.6l7.9-2 11.4-4.9 4.1 13.8 1.1 6-1.2 18 .4 6-1.5 10-14.3-6.2 M13.1 316.2l4.6 1.2 M17.7 317.4l5.3 1.5 8.9 4.4 6.1 .4 10.4 3.2 7.2 3.2-1.7 4.4-.9 8.4 M17.7 317.4l2.6 5.1 2.1 12 1.2 3.8 M20.8 184.5l3.8-1.1 M21.5 99.7l8.4 5.1 9.3 3.4 6.1 4.4 5.6 2.8 M23.6 338.3l.7 2.2 .6 6-.5 12.2 M24.4 358.7l3.6 .5 6-.7 6-1.8 10.1-4.5 M24.4 358.7l.7 5.8 3.1 14.8 M24.6 169.8l-1.2 2.7-1.9 9.6 3.1 1.3 M24.6 183.4l9.4-2.4 6.4 0 M24.6 169.8l3.4 .5 6 2.1 6.8 3.5 M26.7 165.1l-2.1 4.7 M28.2 379.3l3.3 9.2 7.9 12.2 M34.5 222.3l-2.7 7.5 .1 10.3 M33.4 146.7l6.6-4.5 2.2-.9 M33.4 146.7l6.9-3 M40.4 181l-.6 6.1-1.7 6.3-.1 11.5-3.5 17.4 M34.5 222.3l23.5-5.9 5.7-.5 M39.4 400.7l-.2 5.8 1.5 6 2.9 6 M74.2 350.8l7.8 4.4 6 2 12 1.9 6.4-.2-12.4 5.9-6 1.7-6 2.5-6 1.9-6 .2-6 1.5-18 6.6-4.3 .3-2.3 21.2 M42.2 141.3l-1.9 2.4 M40.3 143.7l5.3-2.8 M40.8 175.9l-.4 5.1 M40.4 181l5.6-.1 5 1.2 M40.8 175.9l10.2 6.2 M43.4 167.5l-.1 1.7-2.5 6.7 M48.7 121.8l-2.5 14.3-4 5.2 M42.2 141.3l3.5-1.4-.1 1 M43.4 167.5l2.6 .8 6 .2 6-.6 7.9 1 M45.6 140.9l.2 8.9-2.4 17.7 M45.6 140.9l12.4-6 6-1.6 17.4-2.9 M50.9 115.4l-2.2 6.4 M48.7 121.8l3.3-1.6 2.6 .1 M53 342.9l-2.9 9.3 M50.1 352.2l7.9-3.2 6-.5 6 .7 4.2 1.6 M56.4 85l-2.8 10.5-.6 8.5-1.3 8.9-.8 2.5 M51 182.1l7 2.2 4.1 .2 M51 182.1l10 4.5 M53 342.9l5 1.8 6 1.1 6 2.4 4.2 2.6 M55.6 117.8l5.9 3.5 8.5 3.3 9.2 2.2 M56 -37.5l.5 6 2.2 6 3.3 7 M61 186.6l1.1-.2 0 .8 M62.1 184.5l1.9 .1 1.6 1.5 M65.9 168.9l-2.7 9.6-1.1 6 M62.1 187.2l.4 9.3 1.2 12 0 7.4 M63.7 215.9l0 4.6-5 18-.7 6-2.5 12 .7 6-5.6 6 1 6 2.4 8.3 10 1.6 18 5.7 6 2.5 6 1.5 6-.2 12.2 1.6 M63.7 215.9l.3 0 6 .7 12 .4 18 3.9 2.9 1.1 1.3 4.5 5.7 12 2 6 1.6 6 1.9 12-.6 6 1.2 12-1.2 6-2.6 9 M65.6 186.1l16.4 1.2 12 2.3 5.5 .2-1.2-20.5 M65.6 186.1l4.4 4.2 6 1.8 12-.3 6 1 5.4-.7 M65.9 168.9l22.1 1.5 6-.1 4.3-1 M75.6 -49.3l-2 7.7-2.5 23.1 M74.2 350.8l7.8 2.3 6 2.9 6 1.7 6-.2 6-1.1 6-.1 12-2.1 5.8-.2-1.7 .5 4.9 1.8 .8 2.2 .5 6.1 M76.1 134.7l5.9-1.9 6-.9 5-1.9 M79.2 126.8l-.7 2.2 M79.2 126.8l9.4 1.8 M93 130l1.3-.6 0 1 M94.3 130.4l5.7 2.1 16.1 3.6 M94.3 130.4l.5 5 M94.8 135.4l2.9 1.3 7.2 4.7 7.2 6.6 4.1 2 M94.8 135.4l3.5 33.9 M98.3 169.3l7.9-1.4 M99.2 126.6l12.8-1.7 4.9 3.2 M99.4 192.1l-.7 11.9 13.3 1.1 12-.5 12-2.3 6 .6 6.4 2-8.7-13.9 M99.4 192.1l6.6-1.6 6.7-2.8 M112.2 295.5l-2.1 9 1.2 12 2.3 6 3 12 2.8 6 7.9 6 4.7 7.3 13.5-1.9 1.7 6.6 4.5 4.3 M112.2 295.5l5.8 0 6-1.2 6 0 6 1.9 12.2 6.6 M112.7 187.7l5.3 1.2 6-.3 6-1.3 6 1.8 3.7 1.9 M112.7 187.7l5.3-1.5 6-.8 8.2-2.8 M134.3 364.6l7.7 2.8 6 3.1 11 2.4 .5-2.4-7.8-7.7 M134.3 364.6l1.4 11.9-.7 6-4 18 .1 6 2.2 6 1.1 6 M135.1 182.7l4.6 8.3 M139.7 191l14.3 7.8 1.5 1.6 M144.8 348.4l3.2-1.7 6-2 11.5-4.9 6 10.7 12.5 .4 6 1.1 6-.8 6-1.6 4.3 0 M148.2 302.8l-.7 1.7 1.2 2.7 .3-3.9 M154 233l-2 11.5-4.5 12-5.4 18 .3 6 4.3 12 3.3 6-1.8 4.3 M149 303.3l5 2.8 12 3.7 6 .1 12-2.5 15 2.2 M151.7 362.8l11.7 3.4 7.7 3.4 9.8 2.8 2.3 8.9 M154.9 233l9.5 .1 M163.2 -37.5l3 6 2.3 13 M183.2 381.3l12.8 5.1 6 1.2 6.4-.1 M183.2 381.3l1.2 13.2-.5 6 1.9 12 2.3 6 M202.7 332.6l.6 7.9 3 9.1 M203 321.7l-.3 10.9 M202.7 332.6l6.8-.3 M206.3 349.6l3.1 8.9 .6 6 .1 6-1.9 12.5 M208.2 383l7.5 .8 5 2.5 M208.2 383l.2 4.5 M208.4 387.5l5.6 .1 6.7-1.3 M211.9 371l25.5 2.2 M218.1 -37.5l2.9 12 2.5 7 M220.7 386.3l12.6 5.9 M220.7 386.3l12.6-2.1 M233.3 384.2l-.4 4.3 .4 3.7 M237.4 373.2l-3.9 9.3-.2 1.7 M233.3 384.2l16.7-.8 6 .8 6-.1 6 1.7 11.7 7 M233.3 392.2l9.5 1.2 7.9 3.4 6.9 1.6 7.6 2.8 M233.3 392.2l.3 2.3-.9 6 1.5 10.6 M234.2 411.1l9.8-3.2 6-2.6 15.2-4.1 M237.4 373.2l11.1 2 10.5 1.1 8.4-1.5 9.2 .7 M240.5 361.7l-.2 2.8-1.5 6-1.4 2.7 M265.2 401.2l14.6-5.7 M276.6 375.5l2.5 .9 M276.6 375.5l2.8 8.4 M285.9 403.5l.6 3 5.6 12 M292 403.5l6 3.1 18 6.4 6 1.4 6 .1 8.7 1.3 M297.2 -37.5l0 6-1.1 5.6 M331.8 -37.5l.5 6 2 6 .2 7 M356.9 -37.5l-1.3 6-.3 6 .8 7 M362.6 -37.5l2.2 6 2.9 13 M414.1 -37.5l-2.4 6-1.7 13 M421.6 -37.5l-.6 12 .9 7 M480.3 285.7l4.8 .4 M485.1 286.1l-1 12.4-1.3 6.7 M485.1 286.1l4.9 .2 6 1.5 6 .5 5.9 2 M496.5 239.4l3 7.4-2.1 3.7-5.8 6-1.2 3.3 M503.4 366l10.6 3.2 2.9 .2 M503.6 365l8.7 1.8 4.6 2.6 M504.9 357.1l3.1-.3 12 .6 8.1-1.5 M507.9 290.3l6.1 3 12 8.3 6 2.8 5.6 1.1 M533 240l.1 9.1-1.1-1.2-12 3.6-6 6.2-6 1-3.8 1.6 1.1 2.2 1.2 6 .5 18 .9 3.8 M516.9 369.4l3.3 1.9 1.5 .1 4.3 4.6 4.4-.6 M528.1 355.9l3.6 8 M528.1 355.9l-7.6-15.4-3.3-12-1.6-8.4 4.4-1.5 6-.8 9.3-2.4 M528.1 355.9l4-1.3 M530.4 375.4l.5 7.1 3.6 18-1 12 .6 6 M531.7 363.9l-1.3 11.5 M530.4 375.4l1.8-.2 M532.1 354.6l-.4 9.3 M536.9 327.4l-4.4 19.1-.4 8.1 M535.3 315.4l-2.9 7.1 4.5 4.9 M537.6 305.5l-.6 5-1.7 4.9 M535.3 315.4l3.8-.6 M535.4 353.2l2.6-1.2 6-1.2 6 0 6-1.4 12-.3 6-1.5 13.4-4.9 M539.1 314.8l-2.2 12.6 M537.6 305.5l-.8-19-3.1-19.7 4.3-1.1 6-.3 6-6.5 6-.4 M539.1 314.8l4.9-.1 6-1.1 12 .3 7.1 1-7.1-3.2-6-1.4-6-2.3-10.5-2.1-.4 8.9 M544.9 448.8l5.1 2 12 7.5 12 4.6 24 1.1 6-.8 12 1.6 6 0 12 2.7 6 .2 6 1.7 12 1.9 6 .1 12 2.4 30 1.7 6 1.7 6 .3 6 1.7 6 2.4 6 3.4 6 1.7 12 5.8 6 2.1 6 .6 6-1.5 6 2.1 12 6.2 6 4 6 1.6 6-.3 6 .6 6-.7 M544.9 448.8l5.1-2 6-1.3 6 0 12-1.4 6 .8 6-.6 12 .5 12-2.1 6 1.4 12-1.3 6 0 18-5.5 6 .3 12 2.6 12 .1 24 2.7 18 .7 6-2.5 6 0 6 0 24 2.7 6-.9 12 .4 12-2.9 24-2.3 M547.5 218.3l9.4 7 7.2 .5 M556 258.5l.1-2.5 3.2 1.6 M556 258.5l3.3-.9 M559.3 257.6l2.7 1.3 12 3.4 6 .3 6 1.5 6 .8 12 .5 6 1.2 12 3.3 21 6.9 M559.3 257.6l2.7-.8 12-1.3 6-1.9 9.9-.4 M562.8 230.9l7.8 6.6 M565.2 217.2l2.8-.1 6-1.8 18-1.1 9.1-1.9 M570.6 237.5l-3.4 4 M581.3 229.5l-1.4 1.3-6.7 3.6-2.6 3.1 M571.1 -30.1l3 5 5.2 6.5 M574 -37.5l.2 .8 .4-.8 M581.3 229.5l4.7 .3 6-1.9 9.6 2.8 M601 213.4l-6.8 3.8-12.9 12.3 M587.4 342.7l-3.4 9.8-.6 6-.2 12 1.2 6-.6 8.4 8.2 3.9 12 8.1 9 3.4 M593.7 322.1l-6.3 20.6 M587.4 342.7l10.6-1.7 21.5 3.6 M593.7 322.1l16.3 5.7 6 .6 8.3 2.6 M593.7 322.1l.2-5.6-.8-3.1 10.9-3.8 18-8.1 6-.4 7.7 1.7 M599.3 -7.2l10.6-1.2 M601.6 230.7l.8 1.8-.8 6 .1 6-2 6.9 M600.8 8.8l3.7 4.5 M601 213.4l-1.3 7.1 .1 6 1.8 4.2 M602.7 212.1l-1.7 1.3 M615.6 122.6l-1 0-1.6 13.9-4.9 18-.2 6-1.8 6-.7 12-1.7 12-.1 6-2.5 15.8 M601.1 212.3l1.6-.2 M601.6 230.7l8.4 3 13 7.5 5-1.8 6-1.3 17.5-6.7 M601.8 15.1l2.7-1.8 M602.7 212.1l1.3-.1 6 .6 24-6.2 6-.3 6-1.3 6.6-.5 M603.2 47.5l6.8 1.7 13.7 6.9 M603.6 58.9l2 5.6 1.3 8.5 M604 73l2.9 0 M604.6 13.4l20.8 30.7 M609.9 -8.4l-4.1 18.9-1.1 2.8 M606.9 73l12.4 1.1 M606.9 73l-.1 8 3.2-.9 6.9-.3 M610.3 -37.5l1.1 6 .3 6-1.1 6-.7 11.1 M613 400.3l9 2.6 12 4.6 18 2 12 3.6 6 2.7 6 1.2 12-.9 6-1.6 6-.4 10.2-2.1 M613 400.3l-.5 6.2 1.2 12 M619.5 344.6l-.3 1.9 .4 6-1.1 12 .4 6-3.4 12-2.5 17.8 M614.9 120.8l.7 1.8 M615.6 122.6l14.5 25.9 3.3 12 1.9 4.2 M619.3 74.1l-2.4 5.7 M616.9 79.8l5.1-.6 6.8-2.1 M619.3 74.1l9.5 3 M623.7 56.1l-1.1 8.4-3.3 9.6 M619.5 344.6l14.5 3.2 6-.2 6-.6 6-1.7 12-1.5 8.7-3.3 M625.4 44.1l-1.7 12 M624.3 331l3.7 1.2 6 3 12 2.6 6 2.3 6 .6 14.7-.2 M635.7 302.8l-4.7 13.7-6.7 14.5 M625.4 44.1l3.4 4.6 7.2 5.3 2.9 7.5 M626 -37.5l-3.4 12-2.5 12-.1 6 .1 6 2.6 18 3.8 12-1.1 15.6 M628.8 77.1l11.2 4 6 1.2 6 .2 3.3 .6 M642 164.5l4-.1 12.4 1.6-6.6 6-8.6 4.9-7.9-12.2 M635.3 164.7l6.7-.2 M635.7 302.8l4.3 1.3 6 .9 12 .6 10.9-.1 M642 164.5l-.6 2 M652.7 115.4l-.9 5.9-3.6 8.3-.6 8.5-1.8 10.9-3.8 15.5 M651 77.9l7.2-.3 M651.5 231.4l1.7 12.3 M652.6 204.3l.6 10.2-.4 6-1.4 6 .1 4.9 M652.6 204.3l5.4-1.2 5.2 .5 M656.5 84.5l-.3 1.3 1 8.5-4.1 8.3-.4 12.8 M652.7 115.4l5.3-4.1 12.8-8.2 M653.2 243.7l2 12.8-.2 6 1.5 6 1 12 2 6 5.5 12 3.9 7 M663.2 203.6l-2.5 16.9-5.2 18-2.3 5.2 M655.3 83.1l1.5 .3 M655.3 83.1l1.2 1.4 M656.5 84.5l4.4 7.5 7.9 7.9 2 3.2 M658.2 77.6l-1.4 5.8 M658.2 77.6l5.8-.8 6-1.8 12-1.7 6-.3 11.4-4.5 M660.2 65.5l9.8 .7 6 1.9 6 .9 6 .2 6-.8 5.4 .1 M663.2 203.6l.8 .1 6-.2 6-.3 6-1 12 .5 6-6 10.8 .8 M663.2 203.6l.8-7.1 1.7-6 2.1-6 3.5-6 3.1-10.1 7.6-.1 6-.9 6-1.3 6-2.7 6-1.2 6-.1 5.6-1.4 M668.9 305.5l4.5 11 .9 12 1 6 1.6 4.7 M670.8 103.1l2.4 3.8 M670.8 103.1l17.2-5.7 6.3-1 M672.7 340.5l4.8 .3 M676.9 339.2l.6 1.6 M676.9 339.2l5.1-1.4 9.7-4.7 M677.5 340.8l2.7 11.7 2.6 6 3.1 6 7.3 10.6 2.1-4.6 1.7-12-1.4-12-1.3-5.5 5.7 .8 6-.1 6 1.2 12 3.7 6 3.5 6 4.4 8.2 4.1 M685.4 308.2l8.6 .8 12-1.7 6 0 6 .9 24-1.8 .7-.6 M685.4 308.2l.3 8.3 1.5 6 4.5 10.6 M685.4 308.2l1.7-9.7 6-6 2.4-12 .1-7.3 10.4-2.8 6 .8 18 8.3 12 3 12 5.8 19 7.5 M691.7 333.1l8.3-2.8 12-4.9 6-1.3 6 2.9 18-4.4 2.7 0 M699.4 68.5l6.6-2 6-2.8 12-1.8 2.7-1 M710.8 197.5l13.2 4.2 6 0 9.1-1.4 M710.8 197.5l1.1 5 1.1 12-1.8 12-1.9 6-2.7 6-1.7 6-5.9 13.6 7-1.3 6 .3 12-2.5 6-.1 6 .8 12 4 12 2.8 6 .3 6 5.3 6 1.4 12 3.9 6 .8 12-1.8 6 .1 6-6.7 M717.6 160.7l.8 5.8-.4 6-1.9 6-3.1 6-1.5 6-.7 7 M713.5 117.3l0 1.2 4.2 6 2.1 12 .3 6-2.5 12 0 6.2 M719.3 91.4l9.1 2.1 M723.7 -12.1l5.8 0 M727.4 -37.5l.2 1.1-15.6 4.8-18 8.8-6 4.9-6 2.6-12 2.1-6.3 2.4 6.3 .5 18-.5 6 .4 12-.7 6-1.3 11.7 .3 M723.7 -12.1l3.2-7.4 2.4-8.4 .6 8.4-.4 7.4 M726.7 60.9l-1.1 3.6-.5 6.8-7.1 .2-6-.6-6-1.8-4.1-.4-2.7 7.8-2.4 12-1.5 4.3 4.7-.1 6 1 6 .3 6 1.2 6-.6 4.4-1.1 M726.7 60.9l3.3-1.2 12-6.1 12.2-3.5 M728.4 93.5l13.1 1.2 M728.4 93.5l7.6-1.8 14.9-4.9 M729.5 -12.1l7.9-.9 M729.5 -12.1l-.4 4.6 2.8 18 2.6 6 2.6 4.4 1.9-4.4 1.1-12-1.7-6-1-11.5 M731.2 -37.4l10.8-2.6 6 .3 6-4.4 12 1.9 6-.1 18-3.9 6-1.9 6-.7 6 .2 12 2.2 M739.1 200.3l-5.5 14.2-1.5 8.5 M737.4 -13l4.6 0 8.5-1.4 3.7 12.9 2.3 6 2.7 12-.5 6-2.1 12 .1 6-2.5 9.6 M747.1 154.5l.3 6-.9 12-1.1 6-4 12-2.3 9.8 M739.1 200.3l2.9-.2 18 .3 6-.7 6 .2 7.7-1.3 M742.7 305.8l4.7 4.7-.9 6-1.8 6.1 M742.7 305.8l5.3-5.4 6-2.1 19-2.5 M744.2 358.6l2.2 5.9 1.1 6-.1 6 1.6 18-1.7 10.4 6.7-.3 6 .4 6 1.2 12 3.5 12 6.6 6 4.5 6 2.5 18 10.7 M744.7 322.6l-.8 17.9-1.4 6 .3 6 1.4 6.1 M744.7 322.6l3.3-.1 6 .3 18-3.1 18-.9 6 .6 6-.3 6-1.4 5.9-.2 M750.9 86.8l.7 6.2 2.4-.7 6-7.8 6-3.5 12-3.6 6-2.6 6-1.2 18 .5 6 1.3 6 .5 M751.4 67l-.6 3.5 .1 16.3 M750.9 86.8l6.3-1.4-1-8.9-1.9-8.9 M777.4 -37.5l4.4 24 .2 6 1 6-.3 24 1.4 6 3.4 6 4.2 12 1.9 7.2-3.6 .7-6 .2-6-.7-12-3-6-.9-5.8 .1 M773 295.8l5 .1 12-2.4 6-2.8 6.9-1.7 M773 295.8l5 2.6 6 2.1 12 2 6 2.6 2.1 .4 M779.7 198.6l4.3 .2 12-1.1 6-2 6 0 9.3-2.1 M779.7 198.6l1.8 7.5 M802.9 289l-.9 9.5 2.1 7 M802.9 289l11.1-5 6-1.6 M804.1 305.5l9.9 1.1 2.8 .9 M807.4 91.5l3.4 .1 M810.8 91.6l9.2 0 M810.8 91.6l5 6.5 4.1 2.7 M814 317.7l-1.6 10.8 1.3 6 .7 6 0 6 2.7 18-.3 8.7 M816.8 307.5l-2.8 10 M814 317.5l6-.7 M816.8 373.2l-.8 15.3 .2 12 1.8 6-3.5 6 .7 6 M816.8 307.5l3.2 1.1 M818.5 198.5l2.1 10-.6 6 2.9 6 2.2 18 2.3 12 .1 6-3.2 6-.4 6-1.9 6-.8 6-1.8 6 2.9 6-4.8 12-.7 3 M816.8 373.2l3.2 1.3 M819.9 100.8l-1.3 5.7-.2 6-1.2 6-1.8 6-2.9 18 0 6-1.2 6-.3 6 .3 12 2.8 12 3.2 9.1 M817.3 193.6l2.7-.5" fill="none" stroke="#ffffff" stroke-opacity="0.95" stroke-width="1.1" stroke-linecap="round" stroke-linejoin="round"/>
<path d="M43.5 -10.3l-.1 3.9 M43.9 -17.5l-.4 7.2 M43.5 -10.3l4.9-.2 M45.3 30.1l9.8 1.5 0 1.9-9.5-1.1 M45.9 36.1l6.1-.3 3.1-2 M47 49.9l7.6 0 M48.4 -10.5l17.2 .5-.8-5.5 1.8-2 M48.4 -10.5l3.2 16.4 13.6-1.2 M50.8 62.3l3.5 .2 M51.7 59.5l2.5 .3 M54.2 59.8l8.3 1.4 M54.2 59.8l.1 2.7 M54.6 49.9l-.4 9.9 M54.3 62.5l15.7-.4 18.4-3.4 2.8-12.8 M55.1 33.8l-.5 16.1 M55.1 33.8l2.9-1.9 6 .2 M56.3 79.2l1.8 .3 M62.5 80.1l19.9 2.8 M62.9 49.2l19.1-3.6 9.2-.1 M63 86.1l19.4-3.2 M64 32.1l-.1 2.2 6.1 0 5-4.5 M65.2 4.7l.7 3.8-.2 6-1.7 17.6 M65.2 4.7l10.5-.4 10.9 24.3-8.5 .7 M75 29.8l1-.8 2.1 .3 M75 29.8l3.1-.5 M82.4 82.9l1.5-.1 M83.7 88.4l-.1 4.3 M84.4 75.3l-.5 7.5 M83.9 82.8l.7-.1 1.6-6.3 M84.4 75.3l1.8 1.1 M84.4 75.3l2.5-10.8 1.7 .1 M84.6 83.3l4.2 .7 M88.8 84l-3 9.4 M86.2 76.4l1.8 1.2 2.6-.9 .7-6.8 2.2-4.6 M88.6 64.6l-2.4 11.8 M87.3 30.8l5.6 1.2 M88.6 64.6l4.9 .7 M91.2 45.9l-2.6 18.7 M88.8 84l.6-1.8 11.9-2 1.4 6.3 2.4 6.4 .1-4.1 M91.5 43.7l2.9 6.8 1.6 6.1 M92.9 32l-.4 3.8 .6 .1 M93.4 28.5l.6 0 2.3-11.9 M93.5 65.3l2.7-7.6 1.6 7.9 9.1 .3 M99.3 5.4l-3 11.2 M99.6 5.4l-3.3 11.2 M103.4 41.7l.9 5.5-5.1-.7-2.6 10 M96.8 -17.5l7.5 3 M98.5 118.2l5.9-1.8 M101.1 -1.1l-1.8 6.5 M99.6 74.5l6.6-.6 M101.1 -1.1l-1.5 6.5 M103.5 -10.3l-2.4 9.2 M104.3 -14.5l-.6 3.2 M103.8 -11.3l2.2 0 6 4.7 8.1 .7 M104.7 -17.5l-.4 3 M104.4 116.4l0 2.9 M104.4 112.3l0 4.1 M104.4 116.4l5.2-1.1 M105.4 54.1l3.2-1 M106.2 73.9l-.6 5.7 3.2-.4-.9-5.6 M107 67.9l-.8 6 M108.6 53.1l-1.4 12.8 12.4-.5-1 6 4.2-1 M108.6 53.1l9.5-3.6 M109.9 6.7l7.2 .5 M109.9 6.7l-.3 3.1-4.4 8.9-3.9 19.1 4.7 .8 5.3-.7 .1-.8 M110.7 .7l-.8 6 M110.2 109.4l-.1 .7 1.5-.4-.4-.9 M114.1 90.6l-2.4 7.9-.6 4.2 M111.4 37.1l11.9 2.2-.8 7.9 M112.1 29.5l-.7 7.6 M112.7 107.1l.7 2.2 4.6-1.3 5-.4 1.4 .5 M115 114.4l.7 2.9 M117.1 7.2l4.2 .4 M120.1 -5.9l-3 13.1 M117.9 133.9l-.2 4.3 M117.9 133.9l3.7 .5 M118 124.7l1.6 4.5 M118 124.6l18.6-3.9 M118.2 148.3l.9 9.4 M119.6 129.2l2 5.2 M119.6 129.2l16.7-7.1 M120.6 -8.2l-.5 2.3 M120.6 -8.2l1.4 .5 M121.9 -17.5l-1.3 9.3 M121.3 7.6l9.9 1.3 M121.3 7.6l-.1 12.9 1.5 8.8 6.5-.4 M121.6 134.4l2.3 9 M122.6 90.9l1.2 14.4 15.3 0 M122.8 70.4l-.7 10.1 .5 10.4 M122.6 90.9l1.4 0 12 .1 4.5 .1 M122.8 70.4l9.9-1.3 M123 170.2l.4 11.3 M123.4 38l4.6 .2 M124.6 146.9l-.7 8.7 M124.4 108.1l10.1 3.3 M124.4 108.1l-.2-.7 14.8-1.8 M124.6 146.9l5.9 16.1 M124.6 146.9l.4-3.6 7.4-.1 M125.1 112.8l9.4-1.4 M125.9 134.8l.1-1.9 7.2 1.1 M127.4 40.4l6.4 1.4 M128.6 -5.9l3.9 .6 M131.2 8.9l-2 20 M129.2 28.9l15.7 .3-.7 9 7-2 M130.7 -17.5l2.6 9 M131.2 8.9l9.1 .9-5.7-14.9 M132.5 -5.3l-1.2 7.8-.1 6.4 M132.4 143.2l19.1-1 .6-3.9 M132.4 143.2l-.7 11.9 17.5-2.9 M133 135.6l-.6 7.6 M132.5 -5.3l2.1 .2 M132.7 69.1l3.3-4 11.7-2.9 M132.7 69.1l9.3-1.9 1.5 .3 M133.3 -8.5l-.6 2.5 M132.7 -6l1.5 0 M133 135.6l19.1 2.7 M133.2 134l-.2 1.6 M136.3 122.1l-3.1 11.9 M133.3 -8.5l.9 2.5 M134.8 -17.5l-1.5 9 M133.8 41.8l10.4 2 0-4.3 M133.8 41.8l-7.7 3.5-1.7 5.2-1.3 14.6 6.9-.1 6-5 7.5 1.2 M134.5 111.4l3.7 1 .2-1.4 M136.6 120.7l3.7-.1 M140.3 120.6l7.7-2.9 6.1-1.3 M140.3 120.6l1.7-.1 6 .8 7.3 1.6 M140.4 39.5l3.8 0 M144.2 39.5l7.3-.4 M147.7 62.2l6.5 1.7 M147.7 62.2l5.9-1.9 M148.5 -8.4l-1.3 19.5 13.3 .8 1.6-9.4-.3-12.9-7.8 .6-5.5 1.4 M149.9 -17.5l-1.4 9.1 M149.2 152.2l-.9 3.7 4.2-4.4 M149.2 152.2l3.3-.7 M151.2 36.2l.3 2.9 M151.2 36.2l-.7-6.9 3.5-.2 5.1 4.6 M151.5 39.1l.6 6 M151.5 39.1l8.5-.2 20.4 1.8-.7 10-13.7-1-6-3.9-4.6-.3 M152.1 138.3l6.8 1.7 M152.1 138.3l.2-.9 6.4 1.3 M152.5 151.5l2.5-.3 M153.6 60.3l.6 3.6 M153.6 60.3l-.8-9.7 2.5-.2 M154 115.2l-.7-4.7 4.8-5.4 4.7-.5 M154.1 116.4l.4 2.2 M154.1 116.4l2.3-.8 M154.2 63.9l2 .5 M154.2 63.9l2.9 10.6 0 6 .2 .7 0-6.7-.6-6.4 M155.3 50.4l.3 9.3 M155.3 50.4l10.7-.6 13.6 2.1 M155.4 149.7l3.2-.4 M156.9 105.3l3.1-3.9 2.2-.6 M157 34.4l2.1-.7 M158.6 149.3l-.2 1.9 18.3 1.3 M158.9 140l-.3 9.3 M158.6 149.3l16.9-3.4 M166.6 117.8l-7.8 20.6 M158.8 138.7l5.3 1.8 M158.9 140l5.2 .5 M159.1 33.7l.9 .8 12 .3 6-5.5 1.5 .1 M159.1 33.7l12.9-3.6 8.4-1.3 M162.1 223.1l8.3 .8 M162.2 100.8l1 2.8 M162.2 100.8l2.4-.6 2.5-5.5 6.8 2.2-2.8 6.6 14.7-2.9 M163.2 103.6l2.8-.1 23.4 2.1 M164.1 140.5l2 .2-1.4 .1 M164.7 140.8l10.6 4.5 M166.2 113l11.8-2.2 11.6-.8 M166.4 211l5.6 4.8 1.7 .1 M167.5 118.2l16.5 5.2 9 .8 M169.6 125.4l8.4 1.6 12-.1 3.3 2.7-.3 4.9 1.5-4 M172 253.3l3.3-1.7 M172.4 -17.5l2.5 6.5 M173.2 234.3l10.8-1.8 14.4-3.6 M173.5 216.6l2.4-.5-2.2-.2 M173.7 215.9l1.5-5 14.7-1.4 M174.9 -11l5.5 .3 M174.9 -11l2.2 7.5 1.8 11.7 M175.3 251.6l4.7-2.6 M175.3 251.6l8.7-2 12.4-1.3-16.4 .7 M175.3 145.3l-.8-3.5 3.5 1.9 6.8 .6 M175.5 145.9l1.2 6.6 M175.5 145.9l9.3-1.6 M176 68l3.7 .3 0 .3-3.9 0 .2-.6 M179.3 54.7l-1.4 7.8-1.9 5.5 M176.1 248.9l3.9 .1 M176.7 97.9l9.1 2.7 M176.7 152.5l1.1 10.4 M178.9 8.2l.7 5.2 8.1 0 M179.6 52.8l-.2 1.9 M179.5 29.4l1.3 11.4 M179.7 51.9l3.1 .1-.1-.7 M179.7 51.9l.1-1.1 2.9 .5 M179.8 8.5l3.9 1.6 M180.4 -10.7l-.6 19.2 M180 24.6l.4 4.2 M180 249l16-9.3 8.5-2.4 M180.1 175.6l6 24.9 3.8 9 M180.2 -17.5l.2 6.8 M180.4 -10.7l5 .6 M180.4 28.8l5.8-.7 M180.6 29.4l5 .4 .6-1.7 M180.6 29.4l.8 3.8 M180.8 40.8l1.9 10.5 M183.7 149l-2 4.7 M182.8 37.4l5.1 14.6 .1-10.1 M186 150.1l-2.5 2.4-.5 1.5 M183.7 149l2.3 1.1 M185.8 144.4l-2.1 4.6 M183.7 10.1l4.6 1.5 1.1-3.1-2.2-11.2 M187.2 -2.7l-3.5 12.8 M183.8 -17.5l1.6 7.4 M185.4 -10.1l4 .7-2.2 6.7 M185.8 100.6l3.6 1.3 M185.8 100.6l3.6-1 M188.3 139.4l-2.3 4.7 4.6-.7-.4 1.5-4.4-.5 M186 150.1l16 7 12.2 4.5 M188 22.5l-1.8 5.6 M186.2 28.1l1.6-.1 .2-5.5 M186.4 68.5l-3.3-14.5 4.7-.9-.1 15.2 M187.7 13.4l3.6 .2 M187.7 13.4l.3 9.1 M187.9 52l-.8 0 .8 .1 M187.9 52.1l3.5 .6 M187.9 52.1l2.1-.1 6.3 .5 M191.3 13.6l-3.3 8.9 M188 41.9l8 1.7 10.5 1.1 1.1 5.1 M203.7 25.1l1.5 4-17.5 .8 .3 12 M188.2 53.1l3.2-.4 M188.8 85.7l1.8 10.9 M188.8 85.7l.5 11 M188.8 85.7l-1.7-5.2 .3-6.6 1.2 6.6 .2 5.2 M189.3 96.7l.1 2.9 M189.4 101.9l1.9 .2 M189.4 101.9l0 3.7 M189.4 99.6l0 2.3 M189.4 105.6l2.2 .1 M189.4 105.6l.2 4.4 M189.4 99.6l1.6-.3 M189.6 110l2.2-.3 M189.9 209.5l7.2-.6 M190.1 298l7.3 .7-.4 6.4 M190.1 298l14.8-6.8 1.4 8.4 M190.6 96.6l.4 2.7 M190.6 96.6l6.2-.8 M191 99.3l.3 2.8 M191 99.3l6.4-1 M191.3 13.6l8.3 .4 M191.3 102.1l6.3 .4 M191.3 102.1l.3 3.6 M191.4 52.7l6.5 1.3 M191.4 52.7l4.9-.2 M191.6 105.7l.2 4 M191.8 109.7l1.1 6.8 .1 7.4 M191.8 109.7l4.3-.7 M191.8 67.8l.4 1.5 M191.8 213.7l6-1.3 M192.2 69.3l9.5 1.5 M192.2 69.3l4.6 26.5 M192.5 139.4l5.4 .4 .4 1.9 9.5-1.5-2-8.1 8.1-.7 M192.5 139.4l-.1 6 19 5.2 M196.1 109l-3 15.1 M193.3 217.8l5.1 11.1 M197.4 124.5l-2.5 4.9 M197.6 102.5l-1.5 6.5 M196.3 52.5l11.9-.4 M196.8 95.8l2-.5 M197.4 98.3l.5 2.6 M197.4 124.5l6.2 .7 M197.4 124.5l3.7-6.8 2.5 7.5 M197.6 102.5l.6 .1-.3-1.7 M197.9 100.9l-.3 1.6 M197.8 212.4l1.9 6.5 2.1 .3 M197.8 212.4l2.7-.8 M198.3 98.3l-.4 2.6 M197.9 54l7.2 2 M197.9 54l4.1 3.7 2.5 .1 M198.3 -17.5l2.2 9 M198.8 95.3l15-1.3-2.6 6-12.9-1.7 M198.4 228.9l3.9-.9-.7-2.3 1.5 .1 M201.7 70.8l-.6 9.7-2.3 14.8 M198.9 248.2l5.2-.3 M198.9 156.5l-5.7-1.1 .8 15.1 2.5 24 3.2 14.1 M200.5 -8.5l.8 5-5.2 6 .5 6 2.7 4.8 M199.6 14l6.9-.1 M199.6 14l4.1 11.1 M199.7 208.6l.8 3 M199.7 208.6l2.3-.2 7.1 .7 M200.5 211.6l1.3 7.6 M200.5 211.6l8.6-2.5 M202.8 64.5l-1.1 6.3 M201.8 219.2l8.6 .6 M206.5 264.5l-.1-.8-.1 .8-4.3-.7-3.3-3.5 .6 6.2 3.1 14.9 M204.5 57.8l-1.7 6.7 M202.8 64.5l8.2-2.3-1.1-4.1 M203.5 227.8l.8 5.7 1.4 3.5 M203.6 125.2l10.5 .5-.2 5.7 M203.7 25.1l13.7-1.4 M203.8 286.8l-6.3 .5 6.5 .2 M204.5 57.8l5.4 .3 M205.1 56l-.6 1.8 M205.1 56l4.8 2.1 M206 267.2l2-1.8 6.6-.2 .2 1.3-4.6 6 1 14.4 M206.5 13.9l12.9 3 M206.5 13.9l7.5-.5 14.7-2.9 M206.5 104.7l-7.8 .9 .4 2.5 9.2-2.6 M207.9 322.7l-.8 2.2 M207.3 245.5l-.1 2.3 2.3-.3 M207.3 245.5l.2-4.3 1.4 4 M207.3 245.5l1.6-.3 M207.9 322.7l-.3 2.7 M207.6 49.8l.6 2.3 M216 28l-8.4 21.8 M207.9 322.7l.6-8.2-.4-3.2 6.1 2.1 M210.7 313.3l.4 1.2-3.2 8.2 M208.2 52.1l11.6-.7 M208.4 105.3l.5-.8 2.6 0 M208.7 105.4l2.8-.9 M208.9 245.2l.6 2.3 M208.9 245.2l13.2-2.3 M209.1 209.1l5.1 1.2 M209.1 209.1l5.5-1.7 M209.5 247.5l4.3 13 .7 4.4 M211 58.1l7.3 .1 M211 58.1l7.1 2.5-.1 12.6 M211.2 287.9l.6 .3 3-1.2 M211.4 150.6l-3.4-9.8 4.8 .3 M211.5 104.5l1.8-.6 M211.5 104.5l10.4-.9 M212.2 300.4l3 .4 M212.2 300.4l1.8 11.8 5.3-.9 M215.2 300.8l-2-7-1.2 4.3 .2 2.3 M212.7 150.8l13.3 2.1 13 .1-3-8.5 M212.7 150.8l1.3 9.1 M212.8 141.1l-.1 9.7 M212.8 141.1l23.2 3.4 M212.9 139.9l21.1-1.6 M213.2 106.9l10.6 1.5 M213.3 103.9l.6-3.2 4.4 1.2 M213.3 103.9l5-2 M213.3 72.5l1.3 8 1.8 5.6 M213.9 131.4l18-2.3 M214 159.9l.2 1.7 M214.2 210.3l5.8 1.1 7.7 .4 M214.6 207.4l-.4 2.9 M214.2 161.6l2.3 .9 M214.2 313.4l7 2.1 M214.2 313.4l1.5 15.8 M214.6 207.4l5.4-1.5 10-4.3 1.9 10.2 12.1 0 5.9 1.3 M214.7 287.4l-.1 .8 4.8-.1-4.7-.7 M218.7 264.9l-3.9 22.1 M215.2 300.8l4.1 10.5 M215.4 160.1l26.9 1.9 M215.4 160.1l1.1 2.4 M217.4 23.7l-1.4 4.3 M216 28l11.2-2 M216.5 162.5l9.5 3.7 6-3.9 9.7 1.3 M220.1 73.5l-3.5 12.2 M219.4 16.9l-2 6.8 M217.4 23.7l2.6 0 6 .1 9.1 .4-.4 1.2 M218.3 58.2l-.1 2 M218.3 101.9l5.3 1.4-1.7 .3 M218.3 101.9l2.5-1 M218.3 58.2l1.7 0 2.7 0 M219.8 51.4l-1.5 6.8 M218.7 264.9l12.3 .2 .3-.9 M222.1 242.9l-3.4 22 M219.3 311.3l1.9 4.2 M219.3 311.3l11.3-2.6 M219.4 16.9l9 3.4 .3-9.8 M227.2 26l-7.4 25.4 M219.8 51.4l6.3-.5 M223.3 62.9l8.7 4 13.6 2.9 .9 9.1-26.4-5.4 M223.3 62.9l-3.2 10.6 M221 357.6l2.5-13.1 3.2-11.5 1.3 .6 8.2 18 M221.2 315.5l4.9 13.4 M221.9 103.6l1.9 4.8 M223.9 225.6l-15.2 1.1-.8 3.8-.3 6.1 15.3-3.8-.8 10.1 M222.7 58.2l.6 4.7 M226.1 50.9l-3.7 5.6 .3 1.7 M222.7 58.2l3.6-.1 M223.8 108.4l24-.4-.3-3 M224.5 223.1l-.6 2.5 M223.9 225.6l8.8-.1 1.9 2.5 M224.5 223.1l15.1-5.5-.6 8.5 M226.1 328.9l-.8 3.5 M226.7 316.3l2.6 .5-2.2 14.6-1-2.5 M226.1 50.9l.9-2.4 10.6 1.9 4.4-.6 M227.2 26l7.5-.6 M238.4 287.7l-.4 2.8-3 6-2.9 8.1-4.5-1.3 M227.9 -17.5l-.1 3.3 .8-3.3 M228.7 287.7l-.4 2.2 M228.7 287.7l9.7 0 M229.2 281.2l-.5 6.5 M228.7 10.5l-.6-16.6 .7-.1 M228.7 10.5l6.4-1.8 M230.9 -17.5l2.3 11.2 M231.3 264.2l5.3-19.3 M231.3 264.2l.7 0 6 .9 3.1 .7 M231.9 129.1l2.1 9.2 M231.9 129.1l.1 0 2.4-.4-2.8-.8 .3 1.2 M236.2 351.6l-3 3.1 M233.4 200.2l4.6-1.4 12.1-2.1 1.2 6.1 M234 138.3l2 6.2 M234 138.3l16.7-.9 M234.4 229.2l.5 7.3 1.6 7.8 2.2-12 22.7 8.6 M235.1 225.8l-.5 2.2 M234.7 25.4l5.4-.7 M236.2 351.6l2.9-2.8 5.8-10.1 5.6 1.8 1.1 4-3.2 12-3 2.3 M237.9 11.4l-2.5 11.6 4.6 1.4 M237.9 11.4l-.5-3.4 1.2-.2-.1 .7-.6 2.9 M240.9 271.4l-2.5 16.3 M239 226.1l-.1 1.7 8-1.9 M239 226.1l7.9-.2 M239.4 306.6l4.6 1 18.8 7.4 M240 24.4l-.4-3.2 1.6 3.4 M241.2 24.6l2.2-.1 M241.2 24.7l14.8 4.4 17.4 2.3 M242 49.8l1.1 8 11 .5 M242 49.8l8.5-2 M242.1 266l24 3.3 M242.3 162l12.7-1.2 M242.3 162l.6 1.8 10.7 1.8 M242.9 271.3l23.4-.9-.2-1.1 M244.7 276.1l4.1 13 12.5 2.5 M244.9 24.5l5.1 0 12-1.5 10.2-3.1 M245 245.1l11 .4 6.1-.6-.5-3 M245.2 153.5l11.4 2.7 1.5-3.3 1.3 3.9 M245.9 240.2l4.1-.8 6 4.5 5.6-2 M246.9 87.6l3.1-.7 16.2-.5 M246.9 225.9l1.8-.4 M247.5 105l15.5-.1 .6-4.3 M247.5 105l-7.2-.7 23.3-3.7 M248.4 144.1l7.1-.5 M248.7 225.9l4.5-1.4 M249.9 213.1l-1.2 12.4 M248.7 225.5l4.5-1 M249.6 166.9l2.7 2.1 M249.9 213.1l.1 0 2.9-1 M251.3 202.8l-1.4 10.3 M250.7 137.4l3.7 1.7-1.5-4.9 M252 133.9l-1.3 3.5 M251.1 124.8l11.7-2.2 M251.3 202.8l1.6 9.3 M252.5 196.2l-1.2 6.6 M252 133.9l.6-1.2 .3 1.5 M252.3 169l5.8 4.4 M253.6 165.6l-1.3 3.4 M252.3 53l-.7-1.9 10.4-3.1 17.5-3.1 M258.1 173.4l-5.6 22.8 M252.5 196.2l18.8-3.6 M252.9 212.1l9.1-2.1 9.5-.9 M252.9 134.2l6.8 2.6 M253.2 224.5l3.3-1.2 M253.2 224.5l3.4-.8 M253.6 165.6l6.1 .9 M255 160.8l-1.4 4.8 M254.1 58.3l4.9 12.6 M254.1 58.3l13.9-.8 8.6 1.1 M255 160.8l5.3-1 M256.5 223.3l1.5 .2 M256.5 223.3l-2.9-9 17.7 7.2 M262.6 320.1l-5.1 5.1 M258 223.5l13.3 .4 M258 223.5l13.3-1.3 M258.1 173.4l8.8 5.8-4.5-12.4 M259.7 166.5l-1.6 6.9 M259 139.4l.4 3.6 M259.7 136.8l-.7 2.6 M259 139.4l5.2-.7 M260.1 357.3l-1 2.5 M259.4 156.8l1.8 .4 M259.4 156.8l.9 3 M259.7 136.8l4.5 1.9 M259.7 166.5l2.7 .3 M260.3 159.8l.4 1.4-1 5.3 M259.7 297.2l3.6-1.6 M262.2 353.5l-2.3 3 .2 .8 M260.2 342.7l2 10.8 M261.2 157.2l-.3 2.5 M260.9 159.7l20.1 .4 M261.2 157.2l12.8 1.5 7.1-.1 M267.2 142l-.4 4.5-4.8 6-.8 4.7 M261.3 291.6l2.1 .4 M266.2 277.8l-3.1 6.7-1.8 7.1 M261.4 240.9l2 .4 M263.9 351.3l-1.7 2.2 M262.4 166.8l9.5 1 M263.9 351.3l-1.5 3.2 M268.1 99.6l-5.3 23 M262.8 122.6l5.7-1.4 M262.8 315l.5 4.4 M263.3 295.6l-.5 19.4 M263.3 319.4l.1 .8 9.9 .7 M266.2 316.4l-2.9 3 M263.3 357.2l5.1-.5 M263.4 292l-.1 3.6 M263.4 292l7 1.3 M266.2 277.8l-2.8 14.2 M264.8 92.9l-1.2 7.7 M263.6 100.6l4.5-1 M263.9 351.3l.5-1.2 0 .4-.5 .8 M264.2 138.7l3.2 1.3-.2 2 M268 83l-3.2 9.9 M264.8 92.9l6.7-1.4-1.7 4 M265.1 256.4l2.9 8.3 M265.1 256.4l1 12.9 M265.2 245.1l-.1 11.3 M265.2 241.5l0 3.6 M265.2 245.1l13.3 .3 M267.2 276.1l-1 1.7 M267.2 142l3.6-.6 M267.2 276.1l.4 2.4 7.9 6 2.8 6.6 M267.3 270.4l-.7 5.2 1.1-.2 M268 264.7l-.7 5.7 M267.3 270.4l.7-.1 1.6 .1 M267.4 -8.7l1.6 5.2 1.5 9.6 5.8 .4 M269.9 271.4l-2.2 4 M268.5 121.2l-.1 13.3-.7 3.7 M268 83l6.3 .9-.6 2.4 M276.6 58.6l-8.6 24.4 M268 264.7l1.3 4.5 M268.1 99.6l4.1-1.1 .8-7.3 M268.5 121.2l1.3-11.6 8.9 .4 M269 341.7l-2.2 2.9 1.9 .6 M269.9 271.4l1.1 3.3 3-.7 2.5-3.3 M269.9 271.4l.5-1 6.1 .3 M271 141.4l14.9 4.7 M278.5 245.4l-4.2 15.1-3.3 8.5 M271.7 238.1l-.5 4.5 M271.3 223.9l-6.8 6.6 .7 10.1 6.5-2.5 M271.3 192.6l.5-.1-.3-1.1-.2 1.2 M272.4 223.8l-.7 14.3 M271.7 238.1l6.9-2.4 M271.9 167.8l8.2 .7 M271.9 167.8l.1 14.5 5.8 2.5 .1 6.2 M272.2 19.9l.4 6.8 5.2 .2 M272.2 19.9l5-1 M272.3 222.2l.1 1.6 M272.3 222.2l6.4-.2 0 2.2 M272.6 209.1l5.5 .1 M273.7 86.3l-.7 4.9 M273 91.2l8.1-2.6 M273.4 31.4l5.3 .7 M273.4 31.4l1.8 9.5 M273.6 319.6l2.8 1.1 M273.7 86.3l7.5 .3 M274.3 83.9l-.6 2.4 M279 71.6l-4.6 12.1 M275.8 294.3l2.2 .1 M275.8 294.3l1.6 5.6 M275.8 294.3l-.4-2.3 2.9-.9 M276.3 6.5l.9 12.4 M276.3 6.5l1.4-14.1 6.4 1.1 1.4-10.1 1.5 10.6 4 .8 M276.5 270.7l1.4-1.9 M277.3 57l-.7 1.6 M277.3 300.7l-.5 3.3 M277.2 18.9l.6 8 M277.2 18.9l5.6-1 M277.8 57.1l2.3 .4 M277.8 57.1l2.4 10.8 M281.3 44.5l-3.5 12.6 M277.8 26.9l9.3-.1-2.2 6.7 M277.9 321.3l-.8 11.2 .5 6 3.2 6 3.2 17.4-2.1 .4 M277.9 191l.2 18.2 M277.9 191l8-1.6 M278.6 304l-.7 16.6 M278.1 209.2l13.7-1.5 M279 299.3l-.8 1.6 M278.5 245.4l1.1 0 1 9.1-.3 14.5 1.1 0 M278.6 235.7l.6 6.7 M278.7 224.5l-.1 11.2 M278.6 304l4.1 14 M278.8 301.1l-.2 2.9 M278.7 32.1l6.1 1.6 M278.7 32.1l.5 8.2 M278.7 224.2l8.6 .7 M278.7 224.2l-1.2-.1 1.2 .4 M278.7 224.5l8.1 1.6 M279.7 69.5l-.9 2.1 M279 299.3l-.2 1.8 M280.3 297.2l-1.3 2.1 M279.7 69.5l-.7 2.1 M279 71.6l1.5-.1 M279.2 242.4l.3 2.1 M283.7 233.9l-4.5 8.5 M281 271.4l-1.5 14.5 1 4.6-1.1 4 M279.5 244.5l6 .7 M280.2 67.9l-.5 1.6 M281.1 88.6l-1.3 16.3 M279.9 136.5l.1 3.9 M282.9 110.3l-.2 7.9-7 1.3-3.3 9-1.2 9.4 8.7-1.4 M279.9 136.5l4-.8 M280.1 57.5l3.1 .2 M280.1 57.5l.2 2 M280.2 67.9l.3 3.6 M280.3 59.5l2.3 .6 M280.3 59.5l.5 6.5 1.8-5.9 M280.3 297.2l1.8 5.1 M282.3 294.9l-2 2.3 M280.5 71.5l1.3 10.9 M280.9 66.1l.6 5.4 M281 160.1l7.2 .1 3.6 16.3 1.8 12 M281.4 269l-.4 2.4 M281.2 86.6l-.1 2 M281.1 158.6l24.2 2.2 M281.8 82.4l-.6 4.2 M282.6 40l-1.3 4.5 M281.3 44.5l4.3-1.1-.3-3.6 M281.4 269l16.6 0 8.5 .9 M286.9 245.3l-5.5 23.7 M281.8 82.4l.1 2.2 M281.9 84.6l.2 1.9 M282 88.3l-1.1 10.2 .4 6.4 1.6 .1 M288.7 85.9l-6.4 .6-.3 1.8 M282 88.3l.1 0 0 4.2 .3 4.2 M282.4 96.7l.5 8.3 M282.4 96.7l9.6-.6 8 .8 M283.2 57.7l-.6 2.4 M282.8 17.9l0-11.3 7.2-.1 M282.8 17.9l6.8-1.8 .2 .9 M282.9 110.3l25.7 5.2 M282.9 105l0 5.3 M282.9 105l3.1 .1 6-.4 9.6 .2 M285.5 54l-2.3 3.7 M283.7 320.6l3.9 0 M283.7 320.6l1.3 2.8 M283.7 320.6l-3.1-.1-.8 1.6 5.2 1.3 M286.8 226.1l-3.1 7.8 M283.7 233.9l4.8-1.8 M284 71.4l12.8 .5 M284.2 57.8l1.7 .1 M284.2 57.8l-1 2.4 2.2 .6 .5-2.9 M285.5 54l-1.3 3.8 M284.5 139.8l1.4 6.3 M284.9 33.8l5.2 1.3 M284.9 33.8l.4 6 M285 323.4l3.2 .6-.6-3.4 M285.3 39.8l4.3-.5 M285.5 54l.8-1-.4 4.9 M285.9 146.1l6.1 1.7 16.7 1.6 M285.9 189.4l6.7 5 M285.9 189.4l7.7-.9 M285.9 57.9l8.7 .6 2.2 13.4 M285.9 313.9l1.7 6.7 M286.9 245.2l5.1 .4 13.8 3.1 M287.2 -17.5l3.9 11.2 M287.3 224.9l12.2 .3-2.3-17.8 M288.9 220.5l-1.6 4.4 M288.1 390.2l16.1-.7 2 11.7 M289.4 226.1l-.9 6 M288.5 232.1l11.8-3.5-.7-2.6 10.3-.5 M288.8 288.2l21.6-2.9-.8-8.6 M289 85.9l9.2-2.6 M289.1 85.9l2.9 .7 4.5-1.7 M289.6 39.3l-.9 3.5 .8-.2 M289.8 39.2l-.3 3.4 M289.5 42.6l2.8-.5 M290.1 35.1l-.5 4.2 M289.8 17l.7 3.5-.2 6.3 1 0-.2-11.2 M289.8 17l.3-1.1 1-.3 M290.3 35.1l-.5 4.1 M290.1 6.8l1 8.8 M291 -5.2l-.9 11.7 M291.1 15.6l1.6-.5 M292.7 -17.5l-1.6 11.2 M291.4 26.8l.2 8.7 M291.5 305.4l3.4-7.7 2.2-2.5 10.5 .2 M291.6 35.5l.3 3.5 M291.6 347.3l1.3 6.3 M295.1 197.7l-3.3 10 M291.8 207.7l5.4-.3 M291.9 39l.4 3.1 M291.9 39l6.1-.3 7 .5 M292.3 42.1l12.2-.4 M293.8 1.9l-1.1 2.7 M293 -.4l.8 2.3 M293 -.4l-1.6-4.8 2.1 .4 M293.5 -4.8l-.5 4.4 M293.1 148.5l7.9 2.9 6 3.8 M293.5 -4.8l5.1 1 M293.6 188.5l1.1-.2 6.2-17.1 1.9 .7 M298.6 -3.8l-4.8 5.7 M293.9 190.6l.9 5.5 M296.8 -17.5l-2.6 7.9 M294.8 196.1l8.4 4.4 6.3 4.6-12.3 2.3 M294.8 196.1l.3 1.6 M295.1 197.7l2.1 9.7 M295.5 6l13.5 0 M296.8 71.9l1.4 11.4 M296.8 71.9l1.2-.1 6.1 .8 M298.2 83.3l6.7-1 M298.6 -3.8l9.3 1.8 M312.6 350.8l-14.6 3-4.4 0 .2 .5-.7 .1 10.1 30.6-4.1 .6 M299.1 84.5l6.3 1.2 M299.1 84.5l-.8 .1 1.7 12.3 M299.1 84.5l6.1-.6 M302.8 171.9l-1.8 10.6-1.6 4.9 M300 96.9l8 1.4-2.6-12.6 M300 96.9l1.6 8 M301.6 104.9l1.7 5.6 5.3 5 M301.6 104.9l7.1-.7 .3 11.4 M303.3 169l-.5 2.9 M303.2 26.6l2.5 8.8 M303.7 63.4l4 .4 M304.5 41.7l-.9 17.3 3.9 .2 M304.9 39.8l-.4 1.9 M304.6 -17.5l3.3 15.5 M304.9 39.8l1.9 .8 M304.9 82.3l.3 1.6 M304.9 82.3l6.3-.7 M305 39.2l1.6 .2 .2 1.2 M305.2 83.9l.2 1.8 M307 155.2l-1.7 5.6 M307 155.2l2.3 1.4 .3 4.2-4.3 0 M305.5 247.5l3.6 .2 M306.2 401.2l2.1 0 M306.5 269.9l2.1 .1 M306.5 269.9l-6.7 5.2 7.2 1.2 .2 3.4 M308.4 267.3l-1.9 2.6 M306.8 40.6l.2 1.2 3.1 .1 M308.7 149.4l-1.7 5.8 M310.1 8.8l-.2 1.4 2.8 16.5-5.5-.3 M307.5 59.2l6.9 .1 M307.5 59.2l.2 4.6 M307.7 63.8l1.6 9.4 M307.9 -2l3.4 .7 M308.9 249.6l-1.8 15.6 1.1-.2 M309.2 397.9l-.9 3.3 M308.4 267.3l.2 2.7 M310.1 264.8l-1.7 2.5 M308.6 270l4.1 .6 M308.6 140.2l2.8 .4 M308.6 140.2l.2 8.6 M309.7 132.9l-1.1 7.3 M312.7 270.6l-4 6 M308.8 148.8l.1 .7 5.7 .2 M309 115.6l8.8 .6 M309 115.9l1.4 2.3 M309.1 247.7l12.8 .9-.4 3.2 M309.1 247.7l1.1-11.2-.3-9.8 1.9-.6 M309.2 397.9l.3 3.3 M310.7 384l-1.5 8.5 0 5.4 M309.2 397.9l1.6-7.6 12.6 .6 M309.3 73.2l8.3 .7 1.5 6.9 M309.3 73.2l1.9 8.4 M309.3 118.2l.4 14.7 M309.7 132.9l4-.4 M309.9 163.3l0 .9 .3-.8 M309.9 225.5l3.3 .2 M309.9 225.5l1.9 .6 M310.1 8.8l.4-2.7 5.9-.1 M310.1 264.8l5.3-8.9 5.4-3.6 2.7 .5-2.3 2.3-.5 9.1 M310.1 264.8l5.5-.4-1.4 4.2-1.5 2 M310.2 163.4l5.8 1.7 8.3 .9 M311.1 160.9l-.9 2.5 M312 184l-1.2 20.9 M310.8 204.9l11.2-1.7 4.5-1.5 M311.1 160.9l7.3 .6 5.6 3.4 M312.1 158l-1 2.9 M311.2 81.6l7.9-.8 M311.2 175.2l.8 8.8 M311.4 140.6l5 .4 M313.7 132.5l-2.3 8.1 M311.8 226.1l13.3 1.4 M312 184l7.7-1.7 M312.4 371.9l-.8 12.1 4.4 0 10.5-1.7 M312.4 371.9l-.2-7 1.1 .9 M313.3 365.8l-.9 6.1 M312.4 318.8l.7 4.3 M312.6 350.8l-.3 5.6 2.3-.2 M312.6 350.8l2.6-.6-.6 6 M312.6 39.7l0 1.9 M312.7 86.8l8.6 1.6 1.2 3.4 M312.7 86.8l4.4 13.3 M312.7 86.8l-1.1-3.7 7.7-1.5 M312.9 318.8l.2 4.3 M319.9 296l-8.7-.6 1.7 23.4 M312.9 318.8l4.1-.1 M313.1 323.1l.9 5.2 M313.2 225.7l11.9 1.8 M313.2 225.7l11.2-3.6 M314.6 356.2l6.4-.1 3.2 14.5-2.2-2.5-6-.1-2.7-2.2 M314.6 356.2l-1.3 9.6 M313.7 132.5l1.1-3.9 1.5 3.7 M313.7 132.5l2.6-.2 M313.9 -17.5l6.1 17.3 5 0-1.8-9.3-3.1-8 M314 328.3l2.2 .3 M314 328.3l1.2 6.3 M314.4 59.3l7.6 .7 9.2 2.1 M314.4 59.3l.6 5.1 15.3 2.4 .8-2.6 M314.4 59.3l-1.8-16.6 3.4 1.1 6 7.2 9.8 2.6 M314.6 149.7l6.7-.5 M316.4 141l-1.8 8.7 M316.2 328.6l5.8 .8 11.9-.1-1.9 18.4 M317 318.7l-.8 9.9 M316.3 132.3l.7 1.6-.6 7.1 M316.4 6l5.6 .8 5 2.5 M316.4 6l6-2 M316.4 141l3.5-.1 M318 309.9l-1 8.8 M318 309.9l17 .4-.6 7.5-17.4 .9 M317.1 100.1l2.7 .6 M317.1 100.1l1.4 3.5 M317.6 118l-.5 14.3 M317.8 116.2l-.2 1.8 M318.5 103.6l-.7 12.6 M319.9 296l-1.9 13.9 M319.1 80.8l9.7-.7 M319.7 349.3l12.3-1.6 M319.8 100.7l2.6 .6 M322.5 91.8l-2.7 8.9 M319.9 140.9l1.4 8.3 M319.9 140.9l2.1 0 6 .7 6.9 1.2 M319.9 296l12.7 .5-.5-6 .6-8.1 M320.5 271.9l-.9 12.6 .3 11.5 M321.3 149.2l2 12.6 6.5 .9 M321.3 149.2l6.1-.7 2.4 14.2 M321.9 103.6l-2.6 12.7 8.7 0 4.5 .9-1.5-6.7-2.8-6.5 M322.4 101.3l-.5 2.3 M321.9 103.6l.1 0 6.2 .4 M322.4 4l4.6 5.3 M322.4 4l24-6.3 M322.4 101.3l4.8 .8 M323.9 95.2l-1.5 6.1 M322.5 91.8l1.4 3.4 M323.4 88.7l2.2 .3 M325.6 89l-1.7 6.2 M324 164.9l1.8 1.1 M324.3 166l1.5 0 M331.5 237.5l-3.7 3.1-3.5 8.5 M324.9 217.1l6.8 3.5 8-2.1 M324.9 217.1l-3.9-3.1 4.5-3.4 M325.5 210.6l-.6 6.5 M325.1 227.5l5.8 1 M325.5 210.6l2.5-2.3 9.9-3.9 M325.6 89l7.7 .9 .5 3.4 M325.8 166l3.5 .2 M325.8 166l5.9 3.8 M331.5 237.5l-5.7 11.9 M327 373.8l-1 6.4 M326.4 181.1l-.3 6.1 1.9 .5 M326.5 201.7l10.6-3.2-.9-7.5 M327 9.3l5.6 13.7 M327 373.8l1 1.1 15.5 1.4 M330.3 356.6l-3.3 17.2 M327.2 75.6l-1.2 4.2 6.1-1.1 M327.2 102.1l7.5 .1 M327.2 102.1l1 1.9 M328 187.7l8.2 3.3 M328 187.7l.5-6.9 14.2-2.1 M328.2 104l6.7 .5 M329.8 162.7l10.3 1.1 M330.3 356.6l12.9 1.7 M332 347.7l-1.7 8.9 M330.6 227.5l10.9-.3 M330.9 228.5l8.5 1.1 M330.9 228.5l2.1 6.9-1.5 2.1 M331 66.9l.2 3.8 M331.1 64.2l-.1 2.7 M331.2 62.1l.5 .1-.6 2 M331.2 40.2l.6 13.4 M331.8 53.6l-.6 8.5 M331.2 70.7l.9 8 M332 67.1l-.8 3.6 M331.7 169.8l7.9 3.8 M331.7 169.8l-1-3.4 10.5 2 M331.8 402.5l-.5-4-2.2-7.3 13.9 1.2 M331.8 53.6l3.4 .6 M332 347.7l10.2-1.5 M332 67.1l5.2 .8-1.9 9.2 M333.3 62.7l-1.3 4.4 M332.1 78.7l8.9-.8 M332.6 23l3.7 7.4-.5 6.6 M332.6 23l-3.5 1.2 1.7 13.5 5-.7 M332.6 23l5.4-1.4 M332.7 282.4l.3-4.5 4.6-.5 M332.7 282.4l5.3-1.3 M333 119.7l4.2 .2 M333 119.7l1.1 11.3 M333 119.7l-9.6-1.2 1.3 4 1.5 9.4 7.9-.9 M333.8 93.3l3.3 9 M333.9 89.9l-.1 3.4 M334.1 131l3.1-.2 M334.7 102.2l2.4 .1 M334.7 102.2l.2 2.3 M334.9 142.8l1.5 .3 M334.9 142.8l-1.3 6.2 3.8 .8 M334.9 142.8l.7-3.5 .8 3.8 M335.2 54.2l-.3 2.1 M334.9 104.5l3.3 .4 M334.9 104.5l2.2 13.7 M335.2 54.2l.2 .1 3.3-9.8 1.5-5.8 M335.8 37l-.1 2.7 4.5-1 M336.2 191l4.4 1.7 M336.4 143.1l8.3 1.2-.2 7.6-7.1-2.1 M336.4 143.1l1 6.7 M336.4 251.5l.2 7 M336.5 310.5l6 .7 M336.5 310.5l2.1 7.3 4.6 .5 M339.2 297.3l-3.6 10.1 .9 3.1 M336.6 258.7l-3.2 16.4 4.1 .6 M337.1 102.3l1.1 2.6 M337.1 118.2l7.1 1.1 1.5 4.7 M337.1 118.2l.1 1.7 M337.2 119.9l0 10.9 M337.2 130.8l8.1-1.5 .9-3.5 M337.2 119.9l2.8 .1 5.7 4 M342.4 229.9l-.2 6.6-4 6-.9 12.2 M337.5 275.7l7.6 1.3 M337.5 275.7l.1 1.7 M337.6 277.4l.4 3.7 M337.9 204.4l1.8 14.1 M337.9 204.4l4.2-1.6 M338 281.1l1.2 16.1 M338 281.1l9.8-3.4 M338.1 63.9l7.9 2.2 9.3 1.3 M338.2 104.9l9 .7 M338.2 104.9l5.3 12.7 M339.2 297.2l12.8 .6 6.7 1.9 M339.2 297.3l3.3 13.9 M339.4 229.6l3 .3 M341.5 227.2l-2.1 2.4 M339.5 255.1l6.5-2.3 .8 .4 M339.6 224.6l2.1 1 M339.7 218.5l2 7.1 M340.1 163.8l1.1 4.6 M340.1 55.2l5.9 .6 4.7 1.3 M340.1 163.8l12.9 .2 M340.3 38.4l-.8-2.1 1.2-.3 M340.3 38.7l1.7 4.6 M340.6 192.7l3.1 1 M340.6 192.7l.6 4.7 M341 77.9l5 1.4 2.2 1.5 M341 77.9l7.3-1.5 M343 392.4l-1.8 10.1 M341.2 168.4l12.3 1.9 M341.7 225.6l-.2 1.6 M344.3 392.4l-2.5 10.1 M341.8 252l4.7 .2 .3 1 M342 227.2l.7 0 .1 .9 M342.2 346.2l1 12.1 M342.2 346.2l4.5-.4 M342.2 175l.5 3.7 M342.4 229.9l.1 0 .3-1.8 M342.5 311.2l15.5 3.9 1 5.6 M342.5 311.2l.7 7.1 M342.7 178.7l4.4-.5 2.7 1.8 6.9 2.7 1.6 4.1 .6-3.4 4.9 1.6-3.6 7.4 M342.7 9.7l2.1 0 M342.7 226l.3 .7 .2-1.1 10.6-11.2-11 3.4 0 1.7 M356.3 198.9l-13.2 3.6-.4 15.3 M342.8 228.1l0 1.8 1.6 .1 M343 37.7l12.9-5.2-5.2 24.6 M343.5 378.6l-.5 13.8 M343.2 358.3l.3 18 M343.2 318.3l15.8 2.4 M344.4 230l-1 1.6 M343.5 196.9l13.9-2.6 M343.5 376.3l3.7 .6 M343.8 35l12.3-4.5 .7-10.4 M347.1 378.1l-2.8 14.3 M344.4 230l2.5 .2 M344.4 230l.9-1.2 1.6 1.4 M344.8 9.7l3.3-.1-.1-11.9 M344.8 9.7l-2.1 11.1 14.1-.7 M345.1 277l2.7 .7 M347 267.7l-1.9 9.3 M345.1 329.4l13.2 0 M345.7 124l1 .3-.5 1.5 M345.7 124l.5 1.8 M346.2 125.8l.8 3.1 M354.2 214.3l-7.9 13 M349.8 -17.5l-2.3 8-1.1 7.2 M346.8 253.2l2.6 1.1 M346.9 230.2l6.6 3.7 M347 128.9l3.5 11.6 .5 4 M347 128.9l4.4-1.3-3.1-3.2 M347 267.7l2.5 8.2 3.6-.1 M347 267.7l-4.6-12.4 5.2 .5 M347.1 378.1l4.5-.4 M347.3 119.8l-.2 3.1 M347.2 376.9l4.4 .8 M347.3 359l1.3 9.5-1.4 8.4 M347.2 102.9l0 2.7 M347.2 102.9l.4-12.4 15.2 .2 M347.2 102.9l10.8-.9 6.1-1.3 M347.2 105.6l.1 14.2 M347.3 119.8l17.4 3.5 M348.8 -10.9l-.3 1.4-1.1 6.9 M347.8 277.7l2-.7 .3 1.2 M348 -2.3l7.9-1.3 M348.8 -10.9l-.7 8.1 M348.2 80.8l3.8 2.5 10.9 3.3-.5-13.4 8-2.4 M348.3 76.4l-.1 4.4 M348.3 76.4l10.4-2.3-.8-1.5 M348.8 258.7l.4-2.7 8.8 .5 16.7-1.7 M350.1 -17.4l-1.3 6.5 M350.1 -17.4l.3 .1-1.6 6.4 M349.4 254.3l2.6 1.1 8.7-2.2 M349.9 252.6l-.5 1.7 M349.9 252.6l10.8 .6 M353.5 233.9l-3.6 18.7 M350.5 58.2l4.8 9.2 M350.7 57.1l10.8 3.7 M351.6 377.7l4.8 14.8-5.2 6 .5 4 M351.7 377.7l14.5-1.2 .3 2.3-2.5-.4-12.3-.7 M352.1 155l.9 9 M353 164l9.9 2 M353 164l.5 6.3 M353.1 275.8l2 .2 M353.1 275.8l1.7-.8 M353.5 170.3l1.6 6.4 M353.5 233.9l3.6 1.8 16.8 12.4 M353.5 233.9l.5-2.6 16.6 1.7 M354.4 -16.4l4.5 1 M354.4 -16.4l1.4 12 M356.2 213.4l-1.5 14.8 M354.8 275l18.6-9.4 M355.1 276l14.6 1.9 3.7-12.3 M355.1 276l1.9 8.5 1.7 15.2 M355.6 67.9l2.3 4.7 M355.6 67.9l-7.1 .9-.2 6.4 9.6-2.6 M355.6 67.9l1.9-.2 M355.8 -4.4l4-1 M355.9 -3.6l.9 23.7 M355.9 -3.6l2.1-.3 1.8-1.5 M358.3 329.4l-2 14.9 M356.3 198.9l1.5-.5 M363.4 202.8l-.5-2.2-4.2 5-2.1 3.9-.2 1.9 M356.8 20.1l7.6-.4 M359.2 194l-1.8 4.3 M357.5 67.7l4.6 .6 M357.5 67.7l4.5-.9 M357.9 72.6l4.4-1.2 M357.9 -17.5l1 2.1 M359 320.7l.5 4.8-1.2 3.9 M358.7 299.7l6.9-.3 M358.9 -15.4l10.1 3.2 M359 320.7l3.1 .7 M359 198.7l3.5 .8 M359 198.7l4.3 1.4 M360.2 192.4l-1 1.6 M359.8 -5.4l1.8-.6 M360.2 192.4l.4 1.4 M360.3 329.2l3 10.8 M360.6 193.8l1.9 5.7 M360.6 193.8l8.7-1.3 M360.7 253.2l13.9 .3 M361.6 -6l2.5 14.3 M361.6 -6l7.4-1.9 M361.6 171.1l-1 4.2 9.9-2.7 M361.6 315.8l2.1 .4 2.1-6.5-.5 6.8 10 1-.7-13.7 1.4 1.4 5.1-.8-.7 4.1 .3 18.4 M362.1 68.3l6.6 .6 M362.1 68.3l.2 3.1 M362.3 71.4l6.4-2.5 M362.9 166l7.4 1.7 .2 4.5 .6 .2 M367.1 144.4l-4.2 21.6 M363.3 329l2.5 13.5 M363.3 340l1 2.7 1.5-.2 M363.3 340l0 2.9 M363.3 200.1l.7 .3 .8-.3-1.2-.3 M369.3 192.5l-5.7 7.3 M363.9 360l5.5 .3 M364.1 100.7l1.9 9.8 .7 11.1 .6-.5 .9-16 M364.1 100.7l5.2-2.7 M366.9 381.5l-2.7 10.5 M364.3 87l2.7 4.2 M364.6 32l2 6.5 3.6 25 3.5 .9 M364.7 123.3l-.5 .5 1.5-.2 M367.5 8.4l-.8 12.1-1.3 7.3-.6 .1 M365.4 210.4l8.4-2.7 M368.7 282l-3.1 17.4 M365.6 299.4l4.4-.1 .9 .9 M365.7 123.6l7.4-1.5 M365.8 342.5l2.5 8.7 M365.8 342.5l8.4-1.4-.2 3.4-1.8 6 2.1 3.5 M366.7 123.8l6.6 1.8 2.4 14.7 M366.7 123.8l.2 6.2 M366.9 130l1.1 11.9 7.7-1.6 M366.9 130l-.9 4.5 1.7 6-.3 1.5 M366.9 381.5l1.3 10.5 6.1-.5 M367.6 378.9l-.7 2.6 M367 91.2l2.9 .5 M367 91.2l2.7 5.1 M367.1 144.4l1.5 .9 M367.1 144.4l-1.8-1.8 2.1-.6 M367.4 142l-.3 2.4 M367.6 378.9l4 .4 M367.6 378.9l.9-2.9 2.3-.4 M368.3 351.2l4 5.3 1.5 4.1 M368.3 351.2l1.1 9.1 M368.6 145.3l5.2 3.5 5.3 5.7-3.4-14.2 M368.6 145.3l1.2 15.8 12 4.5 .2 3.4 M368.7 68.9l1.6 .2 M368.7 68.9l1.6-.7 0 .9 M369 -7.9l0-2.2 4.9-.4 M369 -7.9l6.7-2 M372.2 189.7l-2.9 2.8 M369.4 360.3l4.4 .3 M369.4 360.3l1.4 15.3 M369.7 97.8l.6 7.2 2.3-.2 .4 13.4 M369.7 97.8l0-1.3 .6 1.1 M369.9 91.7l3.1 .5 M370 88.7l-.1 3 M370 88.7l3.4 .6 M370.4 70.8l-.4 17.9 M370 228.8l4.7 .5-.9-21.6 M370.2 65.1l3.5-.7 M370.3 97.6l2.2 4.9 M370.3 97.6l2.2-.1 .5-5.3 M370.3 69.1l.1 1.7 M370.5 172.6l1.7 17.1 M370.6 233l11.4 2.4 7.7 .8 M370.6 233l3.8 15.5 M370.8 375.6l.8 3.7 M370.8 375.6l4.8-.6 M371.1 172.4l5-1.5 M371.6 192.2l-6.1 8.1 8.4 2.2 M371.6 379.3l4.2 .2 M371.6 379.3l2.7 12.2 M382.6 178.5l-5.8 7.8-2.1 1.6-2.3 3.2 M372.5 192.1l1.4 10.4 M373 92.2l20.8 1.5 M373.4 89.3l-.4 2.9 M373 192l.9 .8 5.3 1.3 M373 192l9.7-2.1 M373 118.2l0 1.6 M373 118.2l-.3 .1 .3 1.5 M373 118.2l7.7-1.6 M373 119.8l.5 2.2 M373 119.8l.1 2.3 M374.7 254.8l-1.3 10.8 M373.4 265.6l4-2.2 M373.8 69.8l2.3 .5-2.7 19 M373.5 122l.9 4 M373.8 207.7l7.3-3.1-7.2-2.1 M373.8 360.6l1.6 4 .2 10.4 M373.8 64.4l0 5.2 2.5-1.2 M376.6 42l-2.6 14.5-.2 7.9 M373.9 248.1l.7 5.4 M374.3 391.5l1 4 M374.4 -10.5l4.2-.4 M374.4 126l11.4 2 M374.4 126l2.7 14.1 M384.7 276.1l-2 20.4-1.3 6.2-.2-6.2-1.9-11.5-4.9 9.3 M374.4 249.1l.8 4.4 M374.8 249l4-1.2 M375.2 253.5l.8 0 2.7 .3 .1-1.6 M375.8 379.5l-.6 11.9 M375.3 395.5l1.1 4.3 M375.3 395.5l.1 7 M375.4 254.7l2 8.7 M375.4 254.7l3.3-.5 M375.5 282.9l3.6 .2 M375.5 360.7l2.6 .2 M375.6 325.5l5.1 1.4 M375.6 375l.2 4.5 M375.7 26l.9 16 M375.7 26l-5.9 1 6-1.9 M375.7 26l12.3-1.2 10.8 .3 M375.7 -9.9l10.6 3.7 M375.8 379.5l.4 .1 0-4.7 3.5-.9 M376.1 170.9l6.6 4.6 M376.1 170.9l5.9-1.9 M376.2 19.9l-.6-11.7 8.2 .7 M376.5 65.1l-.2 3.3 M376.3 68.4l2-2.7 M376.4 399.8l.8 2.7 M376.4 399.8l.2 2.7 M376.5 65.1l1.8 .6 M376.6 63.9l-.5 1.1 .4 .1 M376.6 42l.6 14.5-.6 7.4 M378.1 267.9l-1.2 8.4 M376.9 367.8l2.8 6.2 M377.1 140.1l5.5 18.8 M377.4 263.4l.7 4.5 M378 63.8l4-3.1 13.5-1 M378 63.8l1.8-.2 M378.1 267.9l1 15.2 M378.5 262.9l-.4 5 M378.3 65.7l1.5-2.1 M378.5 262.9l9.3-4 M378.6 -10.9l9.5-2.4 M378.6 -10.9l9.2-1.2 M379.2 194.1l3.5 2.1 M379.2 194.1l3.6-1.3 M379.7 374l3 6.7 M379.8 229.6l10.2-.8-.3 7.4 M379.8 63.6l15.3 0 .4-3.9 M380.5 253.9l2.7 .5 M380.7 326.9l-.2 4.4 M380.7 326.9l1.5 .5-1.5 4 M380.7 116.6l-.6-2.3-6.5-9.5 8.4-1.3 13.1-.4 M380.7 116.6l15-4.1-.6-9.4 M380.8 23.8l6.6-2.2 M381.9 120.5l.8 2.9 3.1 4.6 M382 169l.6 5.7 M382 169l3.5-.8-1.1-3.1 2.6-.6 M382.7 196.2l6.5 4.3 M382.7 196.2l-.2 7.8 6.7-3.5 M382.7 175.5l4.7 1 M382.7 175.5l0 14.4 M382.7 189.9l6.7-1.7 1 11.7 4.4-2.1 M383.2 254.4l5.2 .8 1-8.5 M383.2 254.4l-1.3-.7 6.1-7.1 1.4 .1 M383.8 8.9l17.1 3.7 M383.8 8.9l-2.4 11.8 6 .9 M386.3 -6.2l-2.5 15.1 M384.7 276.1l.1-3.6 2.2-10-5 13.6 2.7 0 M384.7 276.1l12.1-.1 M384.7 402.5l-2.3-10 .8-2.1 13.1-2.3 3.4 14.4 M385.8 128l8.8 1.7 M385.8 128l2.4 3.5 3.4 7.4 M386.3 -6.2l17.6 5.8 M387 164.5l1.5 2 M387 164.5l1-.2 1.4 .6 M387.1 303.8l-5.6 .6 .9 10.1 4.1 18 12.2 4.3 M387.1 303.8l-.5-1.3 1.7-6 5.5-6 1.3-6.3 3.5 .2 M387.1 303.8l13.1-.8 M387.3 175.7l6.8 1.7 M387.4 21.6l6.6-1 5.5 .4 .2-1.5 M387.4 21.6l12.3-2.1 M387.8 -12.1l6.2-1.3 11.5 .4 M389 -17.5l-.9 4.2 M388.1 -13.3l18-2.7 M388.4 256.8l1.8 1.1 7.8-3.3 M389.7 246.7l-1 8.4 M389 339.3l5.7 17.2 1.5 6-.6 1.4 M389.4 164.9l3.9 1.6 M393.7 155.4l-4.3 9.5 M389.7 236.2l1.6 .2 .2-7.8 1.5-.3 2 8.5 6.6 .6-.9 7.1 M389.7 236.2l.1 9.4 M389.8 245.6l10.9-1.1 M390.2 207.4l2.1 .5 1.5-6 M390.2 207.4l.4 11.1 1.2 6.7 M390.4 200.8l-.2 6.6 M390.4 200.8l3.4 1.1 M391.6 138.9l1.5 3.6 .6 12.9 M391.6 138.9l1.7-.1 M394.6 129.7l-1.3 9.1 M393.3 138.8l12.9 .1 M393.3 166.5l1.1 .4 0-.7 M393.7 155.4l.7 10.8 M406.2 138.9l-7.3 7.8-5.2 8.7 M393.7 92.5l3.3 1 M393.8 75.3l-.1 17.2 M393.8 201.9l2.7 .9 M394.8 197.8l-1 4.1 M393.8 93.7l2.8-.1 M393.9 94l1.2 9.1 M394 72.5l10.3 5.4 M394.1 177.4l6.6 .9 M394.1 177.4l-2.1 11.1 .6 1 8.5-2.5 M394.4 166.2l8.1-1.8 M394.6 129.7l16.2 2 M394.6 129.7l1.2-10.5 10.2 .2 6-2.5 5.9-1 M396.5 202.8l-1.8 5.8 M394.8 197.8l3.4-1.1 M395.1 103.1l19.9-3.6 1.3 .4 0-.6 1.7-.3 6 .5 8 1.6 M398.8 25.1l-1.9 13.4-1.4 21.2 M395.5 59.7l21.5-1.6 M395.6 363.9l12.8 2.6 M395.6 363.9l-2.1 4.6 .4 2.3 15-2.1 M395.7 384.2l16.7 5.4 M396.2 247l-.1 7 1.9 .6 M396.5 202.8l8 5.3-.7 3.5 13.3 4.5 2.1 1.6 .1-1 M398.2 196.7l-1.7 6.1 M397.2 274.1l-.4 1.9 M397 93.5l19.6-2.8 M397.2 274.1l-1.6-13.1 2.8 2.4 M398.4 263.4l-1.2 10.7 M398 254.6l2 .6 M401.1 187l-2.9 9.7 M398.2 196.7l7.8-3.3 1.9 1.5 M398.4 263.4l10.3 7.7 8.7 4.1 M400 255.2l-1.6 8.2 M398.7 336.8l4.8 1.5 2.2 18.2 2.7 10 M398.7 336.8l10.3-2 M398.8 25.1l15 1.4 .5 12 1.5 10 M400.9 12.6l-1.2 6.9 M399.7 19.5l14-1.9 M400 255.2l16.9 3.4 M400.2 303l5.8 1.4 19.8-2.9 M400.2 303l1.6 15.3 M400.7 244.5l-.2 3.1 M400.7 178.3l2.5 3.3 1-3.1 M400.7 244.5l13.7-1.9 M400.9 12.6l12.5 1.9 M403.9 -.4l-3 13 M401.1 187l4.6-1.8 M401.8 318.3l16.2 4.3 9.2 1.6 M401.8 318.3l1.6 15.6 M402.5 164.4l3.5 4.9 M402.5 164.4l3.5-.7 3.5 .5 5.8-5.7 5-13.8 0-4.5 1.5 0 M403.9 -.4l7.7 1.2-.1-2.4 M405.5 -13l-1.6 12.6 M404.2 178.5l10.4 .9 M404.2 178.5l-1.2-.2 1.3 0-.1 .2 M406.1 -16l-.6 3 M405.7 185.2l4 5.3 M405.7 185.2l7.6-3-3.6 8.3 M406 169.3l1.5 0 M406 169.3l1.1 1.3 M406.4 -17.5l-.3 1.5 M410.8 131.7l-4.6 7.2 M407.1 170.6l1.2 1.6 M407.5 169.3l10.8 .5 M407.9 194.9l4.1 3.3 3.2-1.4-5.5-6.3 M409.7 190.5l-1.8 4.4 M408 -17.5l.3 1.3 3.3-.4 M408.1 250.4l7.4-2.7 M408.4 366.5l.5 2.2 M408.9 368.7l5.7-1.1 M409 334.8l3 .6 15.1 .1 M409 334.8l18.1-.3 M410.8 131.7l9 1.6-1.9-17.4 M415.5 124.5l-4.7 7.2 M411.4 -12.9l6.6-4.2 5.4-.1 M411.4 -12.9l.1 11.3 M411.4 -12.9l-2.1 0 2.2 11.3 M411.6 -16.6l-.2 3.7 M411.5 -1.6l.5 2.4 M412 .8l10.9-.2 M412 .8l3.8 13.9 M412.4 389.6l4.2 1.4 M412.4 389.6l.4 1.5 3.8 .1 M416.6 391.2l-3.1 11.3 M414 20.7l3-.2 1.6 6 .9 6 .4 14.7 M414 238.2l-.1-1.7 4.6-6 .1-5.6 12.7 .8 M414.4 242.6l1.1 5.1 M414.4 242.6l9.6-2.1 9-3.1-1.7-11.7 M414.6 367.6l5.2 1.2 M414.6 367.6l6-1.1 M418.3 169.8l-3.4 8.7 M415.5 247.7l8.5-3.6 10.2-2.1 2.2 12.6 13.3 .7 M415.8 14.7l8.1 .6 M415.8 14.7l.6 2.9 7.8-.4 M416.1 254.7l.8 3.9 M416.6 90.7l-.3 3.9 M416.6 90.7l7.2-.3 M419.8 368.8l-2.2 5.7-1.2 6 1.4 6-1.2 4.5 M416.9 258.6l13.1 3 19.5 3.4 M416.9 258.6l3.2 19.2 9.9 1.5 10.7 3.1 0 8.8 M417 58.1l.7 5.8 M417 58.1l2.8-.1 M417.3 391.2l6.8 .7 M417.3 391.2l6.7 1.4 M417.7 63.9l2.5 .1-.4-6 M417.7 63.9l.1 16.9 5.3 .5 .7 9.1 M417.9 115.9l10.1-1.5 M418.3 169.8l12.2-1.1 1.1-10.3-11.1 3.3-2.2 8.1 M419.3 216.7l11.2 2.2-.5-7.7 M420.1 200.1l-.8 16.6 M419.8 58l11.9-.2 M420.6 366.5l-.8 2.3 M420.1 200.1l7.3 7.1 2.6 4 M429.9 178.5l-.9 14.9-8.4 1.7-.5 5 M420.6 179.3l3.6-.1 2.4-1.8 M426.2 348.5l-5.6 18 M420.6 178.8l.1-.8 2.2-.3 M420.6 178.8l2.3-1.1 M421.8 140.2l8.4 .7 M422.9 134.2l-1.1 6 M422.9 .6l1 14.7 M422.9 .6l1.1 0 1.6 0 M422.9 177.7l3.7-.3 M423.4 -17.2l1.6 7.7 .6 10.1 M423.4 -17.2l.6-.1 5 .6 M423.8 90.4l.8 5.1 M423.9 15.3l.3 1.9 M424.1 391.9l7.9 1.1 M424.1 391.9l1.4-21.9 5.1 .7 M424.2 17.2l.2 1.7 M424.2 17.2l2.4 0 0 1.4 M424.4 18.9l1.1 7.3 M424.4 18.9l2.2-.3 M426.2 348.5l-.7 17.5 M425.6 .6l6.8 .6 M425.6 .6l1 15.3 5.8 1.3 M425.8 301.5l1.4 22.7 M425.8 301.5l-.7-5-2.5-8.3 18.1 3 M425.8 301.5l14.1-2.3 M427.1 335.5l-.9 13 M427 346.4l-.8 2.1 M426.6 177.4l3.3-.2 M426.6 18.6l.5 7.5 M427.1 334.5l4-.2 M427.1 335.5l12.4-1.3-1-.1 M427.2 324.2l2.8 .5 3.3 3.7 M428.8 38.2l1.2 5.2-.8 .3 M431.7 399.1l-2 3.4 M431.5 102.5l-4.2-.6 1.7 2.6 .7 3.2 M429.9 177.2l.1-2.2 8.7-2.5 M429.9 177.2l9.4-1.2 M430 211.2l3.1 4.9 8 4.9 .8 1.2 M431.5 102.5l-1.5 4.2 M434.6 136.6l.5-11.9-2.5 9.8-2.4 6.4 M430.2 140.9l3.2-.1 M430.6 370.7l13.8 1.3 5-8.8 M455.7 351.6l-15.2-3.1 .2 2-4.5 6 .8 6-6.3 6-.1 2.2 M430.9 222.7l.4 3 M433.3 328.4l-2.2 5.9 M431.1 334.3l7.4-.2 M431.3 225.7l4.7 0 6 3.7 4 .5 M431.7 399.1l-.4 3.4 M431.4 54.7l.3 3.1 M431.5 102.5l4.2 .8 M433.8 395.7l-2.1 3.4 M431.9 394.4l1.9 1.3 M432 101.1l3.8 .6 M432 101.1l2.4-5.2 4.1 .3 .2 5.6 M432.2 65.4l.5 9.1 3.4 7 M439.3 307.7l-6 20.7 M433.4 140.8l-.7-4.4 1.9 .2 M433.4 140.8l.7 0-.3 4.4 M433.7 65.7l6.6 1.1 3.9-4.3-.9-4.5 M433.8 395.7l2.2 1.6 24 .2 8.2 .6 M441.4 185.2l-7.3 1.6 M434.6 136.6l6.7 .4 M435.5 106.3l-.2 6.8 4.3-.2 M435.8 156.8l8.9-4 M436 86.9l2.3 .9 M436 86.9l-.1 6.2 2.4-5.3 M436.1 81.5l-.1 5.4 M436.6 17.4l5.4-.8 11.1 .3 M438.1 168.9l.5 2.5 M438.3 87.8l0 1.6 3.3-.4 M438.3 106.3l.5-2.5 M438.3 24.2l2.3 16.6 M438.3 24.2l-1.4-5.9 5.1 1.4 8.5 .6 M450.5 20.3l.7 1.5-.5 1.7-12.4 .7 M439.3 307.7l-.9 12.8 .1 13.6 M438.6 171.4l5.7-2.1 M438.7 172.5l.6 3.5 M438.7 172.5l9.3-2.6 M439.2 101.8l-.4 1.6 M438.8 103.8l8.4 1.1 M438.8 103.8l.2 2.5 M439.9 299.2l-.6 8.5 M439.3 176l.3 1.5 M439.3 176l9.3-.4 M439.6 112.9l.4 15.6 1.3 8.5 M447.2 104.9l2.9 7.6-10.5 .4 M439.6 177.5l1.8 7.7 M439.6 177.5l9.1-.3 M439.8 -17.5l1.3 8 3.8 13.4 M440.7 291.2l-.8 8 M440.6 40.8l2.7 17.2 M440.6 40.8l16.6-4.7 M440.9 81.5l3.6-.1 M440.9 81.5l7-9.5-3.4 9.4 M441.3 137l6.7-.1 10.7 2 M441.3 137l.5 4 17.3-.8-.4-1.3 M441.4 185.2l1.5 5.3 M448.3 185.9l-5.4-1-1.5 .3 M441.9 222.2l7.2 1.6-.1 6.4 M441.9 222.2l6.6 10 .5-.2 0 .9 M441.9 89.1l.8 .1 3.4 11.9 M441.9 89.1l-1.5 7.3 1.6 .2 4.1 4.5 M442.9 190.5l6.3 16-1 3.9 M442.9 190.5l5.4-1.2 M444.4 291.8l-2.4 7 8.1-1.6-3.6 11.3 .1 9.8-3.5 7.5 M443.3 58l8.3-.1-2.7 10.9 M444.5 81.4l-2.2 6.4 .3 1.1 11.4-1.1 5.7 .1 M444.5 81.4l9.5 0 4.7 .6 M444.9 3.9l9.6 3.7 M444.9 3.9l4.1 12.2 7.7-1.2 M445.2 333.5l14.8 4.8 4.4 .6 M446.1 101.1l1.9 2 M447.2 104.9l2.8 .5 M447.2 104.9l-.6-2.1 1.4 .3 M448 103.1l11.8 1 M448 169.9l.6 5.7 M448 -17.5l1.1 3.8 M448.3 189.3l.5 5.2 1.7 6 .8 12.2 4.3 3.5 M448.3 185.9l0 3.4 M448.7 177.2l-.4 8.7 M448.6 175.6l.1 1.6 M448.7 177.2l5.3-.1 5.9 .8 M449.1 -13.7l5.3 1.5 M449.1 -13.7l5.4 21.3 M449.5 265l2.2 .4 M449.5 265l-1 13.5-1.5 5.9 5.4 .8 M449.5 231.8l1.7 .9-.3 3 M449.5 231.8l1.9-.9 M449.7 169.7l11.8 1.4 M450 257.3l1.7 8.1 M459.8 104.1l2.4 .4 .9 3.4-13.1-2.5 M450 105.4l9.8-1.3 M450.6 239.3l-.5 16 M450.5 20.3l1.2-.1 1.4-3.3 M450.8 236.5l-1.9 .2-.1 3 1.8-.4 M450.8 236.5l-.2 2.8 M450.6 239.3l4.1-.9 M452.6 226.2l-1.1 4.2 M451.6 292.3l15.9 2.5 M451.7 265.4l10.8 1.4 M451.7 265.4l2.3 20 M451.9 236.4l2.8 2 M451.9 236.4l2.3-.2 M451.9 23.5l6.5-.1 M452.4 230.4l.8-.3-.6-3.9 M452.6 226.2l-.1-1.4 .5 .2 M453 225l6.5 2 M453.1 16.9l4.2 0 .5 1.6 .6-1.7 M453.8 234.1l-.6-3.6 13.1 1.2 M454.1 -17.5l.3 5.3 M454.2 236.2l.6 2.1 M454.2 236.2l3.1-.2 M454.4 -12.2l5.6 3.3 1.7 0 M454.4 -12.2l2.5 19.6 M454.5 7.6l1 3.5 M454.9 238.5l4.4 3.1 3.2 5.6 M460.2 -2.1l-3.3 9.5 M457.1 8.7l1.5 2.9 M457.9 71.8l8.1 2.3 8.8 .3 M457.9 71.8l.8 10.2 M463.5 51.3l.1 5-10.2 1.5-1.1 4.7-2.7 6.5 8.3 2.8 M458 9.1l10.7 4.3 M458 9.1l.6 2.5 M460.2 -2.1l-2.2 11.2 M458.4 23.4l-1.3-3.2 3.1 .3 M458.6 11.6l.6 2.9 9.5-1.1 M458.7 82l5.1 .3 .9 9.3 M458.7 138.9l4.6 .8-.3 8.1 M459 23.4l.5 2.1 M459 23.4l1.2-.1 0-2.8 M459.3 256.2l11.3 .5 M459.3 256.2l-.3-1.3-.1 1.2 .4 .1 M459.4 184.5l-.1 1.7 5.7-1.2-.3-1.6-1.9-.1-3.4 1.2 M459.9 177.9l-.5 6.6 M459.7 87.9l5 3.7 M459.7 87.9l2.4 15.9 6.4-.5 M459.8 27l.6 2.2 M460.2 176l-.3 1.9 M461.5 171.1l-1.3 4.9 M460.2 176l4.1-.3 M460.2 20.5l-.1-3.7 23.9-3.3 14.5-.7-.2 4.3 3.5-1.1 .3 1.3 M462.4 -8.8l-2.2 6.7 M460.7 45.3l2.8 6 M461.2 148.2l1.8-.4 M462 168.6l-.5 2.5 M461.5 34.5l2 16.8 M461.5 34.5l10.5-4.2 17.5-4.5-11.5-.1-12 1-3.3-3.5 9.3-.3 12-1.6 11-3.3 M463.4 -17.5l-1.7 8.6 M462.4 330.4l1.4 5.5 M462.4 -8.8l3.6 .1 6-.2 6 6.3 20.6 2.7-.2-9.6 .7-.7 M462.5 247.2l1.4 2.3 7.7 4.9 M463.9 239.8l-1.4 7.4 M462.6 164.7l.7 3.7 4.1-.6 M462.8 153.2l-.6 5.3 .4 6.2 M463.7 156.9l-1.1 7.8 M462.8 153.2l.9 3.7 M463 147.8l-.2 5.4 M463 147.8l3.7-.8 M463.5 51.3l4.1 4.4 M463.7 156.9l2.7 8 M463.8 335.9l.8 .1-.6 .9 M463.8 171.5l.5 4.2 M463.9 112.1l7.1 1 M463.9 239.8l-3.2-2-1.4-.7 5.8-1.5-1.2 4.2 M464 336.9l.4 2 M464.3 175.7l.2 2.8 7.3 1.1 M464.3 175.7l6-.1 M464.4 338.9l1.6 .2 5-2.4 M464.7 91.6l1.3 .9 6 1.4 5.7 .5 M465.7 354.5l7.5 1 M466.3 231.7l-1.1 3.6 1.7-.2 M467.1 229.1l-.8 2.6 M466.4 164.9l1 2.9 M466.4 164.9l13.9-2.5 M468.5 140.7l-1.8 6.3 M466.7 147l13.1-3.4 M467.1 229.1l10.2 2.3 M467.5 225.7l-.4 3.4 M467.4 167.8l1.9 5.1 M467.4 167.8l10.6-1.7 2.1-1.8 M467.5 225.7l7.5 3.4 2.3 2.3 M467.5 225.7l-.1-.1-2.3-1.7 2.9-1.2-.5 3 M467.7 330.5l2.3 .9 M468.5 140.7l10.9 .6 M474.3 122.9l-5.8 17.8 M468.7 13.4l15.3-3.3 13.3-1.4 M469.6 106l10.6 2.5-.7-3.2 M470.1 109.1l7.9 .7 2.6 .6 M470.1 109.1l.9 4 M477.1 182.8l-6.9 .8 M470.3 175.6l1.7 .1 2.3-1.1 4.3 1.5 .9-2.2 M470.3 175.6l1.5 4 M476.5 195.2l-4 6-1.8 7.2 M471 113.1l6 1.2 M471 113.1l3.3 9.8 M480.4 305.3l.1 9.2-1 12 1 9.9-9.5 .3 M471.8 179.6l5.8 1.5 M472.5 374.7l8.7-.2 M472.5 374.7l.3 5.8 2.5 12.8-7.6 1.1-.3-7.9-2-12.1 7.1 .3 M473.2 355.5l-.7 19.2 M473 182.7l4.6-1.6 M473.2 355.5l7.5 .5 M473.7 232.8l0 .6 1.3-.4 M473.8 234.9l6.2 .3 M474.3 122.9l5.1 18.4 M474.6 247.4l3.3 1.7 M474.8 74.4l1.5 10 10.4 1.1 M474.8 74.4l27.8-.8 M477 114.3l5.2 .8 M477 114.3l1.4-4.3 2.2 .4 M477.3 231.4l1.3 .5-.6 .2 M477.6 181.1l1.4-.4 M477.7 94.4l5.9-.3 3.1-8.6 M477.7 94.4l1.5 9.2 M478 232.1l3.3 3.3-1.3-.2 M479 182.5l.1 6 2.1 12 6.1 16.3 M479 180.7l0 .9 1.5 .6 M479 180.7l8.6-2.4 M479.5 173.9l-.2 2.3 M479.4 141.3l10 .1 M479.8 143.6l9.2-.9 M479.8 143.6l7.8 2.5 1.4-3.4 M479.8 143.6l.9 8.9-.4 9.9 M481.8 98.1l-1.9 5.5 M480 235.2l4 3.3 2.9-.1 3.2 1.8 M480.3 162.4l-.2 1.9 M480.1 164.3l3-2.5 M480.3 162.4l2.8-.6 M480.6 110.4l15.4 2.9 .1-.8 M480.6 110.4l1.6 4.7 M480.7 356l0 7.1 3.3-.1 .9-.1 .6-7 M480.7 356l0-16.4 5.8 1.4 M481.2 374.5l.5 11.3 M481.2 374.5l1.6-.1 M481.7 385.8l-1.8 13.4 2.2 .3-.4-7.5 14.3-3.4 4.8-.2-4 13.9 M482.8 374.4l-1.1 11.4 M482.2 115.1l5.2 13.4 1.4 6 .6 6.9 M482.8 374.4l1.2 0 6 .7 6 .2 6.3 1.4 M483.1 161.8l.9-.8 4.7-.8 M483.1 161.8l5.6-1.6 M483.8 217.8l3.4 11.1 M486.5 341l-.2 9.5-.8 5.4 M485.5 355.9l10.5 .2 7.9 1.2 M486.5 341l15.3 1.7 M486.7 85.5l15.6 2.5 M487.9 331l-1.2 5.3 M487.2 228.9l2.3 7.7 M487.2 228.9l2.5-1 M487.3 216.8l2.4 11.1 M487.3 216.8l8.7-2.5 11.8-2.1 .5 9.5 M487.6 178.3l12.8 3.5 M487.6 178.3l9-2 14.3 2.4 M490.1 326.7l-2.2 4.3 M487.9 331l12.2-.8 M488 236.4l1.5 .3 M488.7 160.2l6-1.5 M489 142.7l.4-.1 .4 4.2 M489.4 141.7l2-9.5 .5-8 3.5-8.4 9.6-.9 15.3 2.9 M489.7 227.9l14.1-4.6-2.8 14.7 M489.8 238.3l.3 1.9 M490.1 240.2l.4 2.4 M491.2 237.3l2.1 .7-2.1 .2 M491.2 238.2l.1 2.7 M491.3 240.9l2.3 1.3 M493.6 25.9l4.2 .3 M494.1 112.1l2.1 .1 M494.7 158.7l2 5.8 2.1 11.2 M494.7 158.7l1.3-.6 6-1.4 9.6-2 M494.7 158.7l16.9-4 M495 50.3l4.6-.8 M497 106.3l10 1.6 M497.6 237.8l3.4 .2 M497.7 103.6l9.1 3.4 M497.8 26.2l4.3 .6 M497.8 26.2l1.8 23.3 M497.8 26.2l.1-1.8 4.6-1.1 M498.2 141.4l13.7-.7-.2-2.8 4.6-.7 M498.4 -17.5l.7 7.3 M498.6 2.2l.1 6.4 M503.5 -17.5l.3 2-4.7 5.3 M499.3 .1l20.7 1-19.6 7.3 M499.3 .1l1.1 8.3 M499.6 49.5l3 24.1 M500.4 8.4l.7 4 6.9-1.1 14.3-.8 20.3-4 1.6-5.9 M500.4 330.4l1.1 7.6 M501 238l-.4 2 M501 238l1 0 3.8-.2 1-1.3 1.7-10.2 M501.5 338l.3 4.7 M502.1 26.8l5.9 2.9 6 .7 22.1-2.8 2.8 11.8 M502.1 26.8l5 21.5 M502.3 88l15.9 1.9 M502.6 73.6l.4 6.9-.7 7.5 M502.8 188.1l6.6 .5-2.5 15.8 M506.8 107l7 1.8 M506.8 107l-.3-2.5-4.3-6-.2-4.6 6 0 10.5-1.2 1 16.1 M507 107.9l6.8 .9 M507.6 112.3l6.4 .1 5.7-1.1-.1-1.4 M507.7 112.7l.3 2 11.9 .2 M508.3 221.7l.2 4.6 M508.3 221.7l.7-.2-.5 4.8 M509.9 211.5l10.1-3.4 6.9-1.2-.1 11.3 14.2-4.2 .5-1.6 M510.2 184.7l3.3 1.2 M520.2 180l-9.4-.4 .1-.9 M510.9 178.7l.4-5.6 3.5-.5 M511.6 154.7l2.4-.5 .3-.3-2.3 .6 M511.9 149.7l.1 4.8 M513.5 185.9l-.5 3 M523.9 235.7l-3.9 1.2-9.3 .5 .9 3.6 1.7 .3 M513.5 185.9l14.4 4.1 M513.8 108.8l5.7 0 M514.3 179.3l5.9 .7 M514.3 149.7l8.1 1 M516.3 137.2l-.5 3 9-1.4 2.3 9.6 M516.3 137.2l8-1.5 M519.5 108.8l11.2-.8 3.1-17.4 M519.9 114.9l.4 2.9 M519.9 114.9l.1 0 1.5-.1-1.6-.5 0 .6 M528.8 180.4l-8.6-.4 M520.3 117.8l7.4 .5 M523.1 110.8l7.2-.5 1-2.4 M524.1 -17.5l2.9 15.4 15.8-6.1-2.6-9.3 M524.4 150.8l4.7-1.5 .1-1.9 M527.9 190l-.4 2.6 M527.7 118.3l1.4 .1 .1-1.2 M527.7 118.3l.3-1.5 1.2 .4 M527.9 190l9.3 3.2 M529.2 156.4l-1.3-5.1 10.1 1.2 17 3.5 M555.9 126.5l-17.9 5.9-9.8 2.5 1 12.5 M529.2 147.4l14.8-6.7 12.9-3.3 M530.3 110.3l-1.2 3.4 .7-.1-.6 3.6 M531.7 113.1l26.7-6.7 M531.9 167.7l6.1-1.4 15.6-5.4-1.7 5.2-1.1 12.3 M533.2 72.9l.6 17.7 M533.8 90.6l18 2.1 M534.2 233.9l7.9-1.1-.5-19 5.5-1.7 M550.8 178.4l-16.6 .7 M534.8 22.9l-13.7-2 12.2-2.3-3.1-9.4 11.8-.6-1.1 5.9 M536.8 119.4l21.1 3.4 M537.2 193.2l.6 2.1 8.3 .8-2.1-.6-6.8-2.3 M539.3 24.3l-.4 2.8 M538.9 39.4l-1.1 4.7 2-.5 M539.1 40.4l.7 3.2 M543.7 27.3l-4.6 13.1 M539.3 24.3l3.8 2.6 M540.9 14.5l-1.6 9.8 M539.8 43.6l3 12.9 4.7 6 2.7 10.5 M539.8 43.6l19.5-3.4 6.4 29.6 2.5-5.5 .3-10.8 M540.1 72.5l10.1 .5 M540.9 14.5l3.1-3.5 3.8-1.3 M548.3 11.2l-4.4 15.6 M544.2 .6l.5-2 .6 1.9 M547 196.4l-2.6 7.3 M545.3 .5l1.4 5.3 M547.8 -17.5l-1.4 8.3 M547 196.4l2.1 .6-1.7 6.5 M547.3 8.3l1.7 0-.2 1 M548.3 11.2l6.7 17 M548.8 9.3l-.5 1.9 M548.8 9.3l2.8-1 M549.2 5.5l12.8-2 13.1-3 .1 .9 M549.7 -17.5l-.5 17.3 M550.8 178.4l-1 5.7 M555.6 160.2l-5.8 23.9 M549.8 184.6l.1 9.2-.8 2.9 1.4 .3 M550.2 73l14.2 1.7 M550.2 73l6.5 20.1 M550.9 90.7l.9 2 M551.6 8.3l24.6-1.7-1-5.2 M551.6 8.3l23.6-6.9 M551.8 92.7l4.9 .4 M555 28.2l18.3 1.5 M555 156l1.7 .5 6-19 M555 156l1.6-16.4 6.1-2.1 M555.9 126.5l1.4-.3-.1 .5 M556.7 93.1l6.9 .5-1.3 11.7 M557.2 126.7l-.3 10.5 M558.6 101.1l.9 5 2.8-.8 M558.7 107.2l.9 8.5 M560.7 113l-1.1 2.7 M559.7 107l1 6 M560.7 113l.6 3.3 M562.3 105.3l-.2 1.1 4.9-1.3 M562.5 125.1l3.6-1.2 1.7 .4-.6 4.6 M562.6 125.5l1.4 2.7 M562.6 125.5l.3 2.4 1.1 .3 M562.8 137.1l.2-1.3 .7-.2 M563.5 133.5l.2 2.1 M563.7 135.6l2.3-.7 M563.9 136.6l2.1-.9-.2 1.6 M563.9 137.4l.6 9.1 .9 3.5 M563.9 137.4l1.9-.1 M565.4 159.3l-.3 11.4 M565.4 159.3l-3.5-1 3.5-1.3 M565.4 157l0 2.3 M565.4 150l0 7 M565.8 137.3l-.4 12.7 M565.4 157l1.9-.6 M566.4 132.8l-.4 2.1 M566.4 132.8l.9 1.7 M567.2 128.9l-.8 3.9 M566.8 99.7l9.7-3.2 M567 104.5l4.6-.6 M567 105.1l.1 11.7 6.9 .4 7.9 1.7-1.9 1.4-12.2 3.4 M567 105.1l4.6-1.2 M567.2 128.9l9.9 1.8 M567.3 156.4l1.2 3.7 M567.3 156.4l5.2-1.5 M567.5 135l1.1 2.2 M567.5 135l2.9-1.4 M568.4 92.1l1.2-12.2 5.5 13.2 11.1 0-7.9 2.7 M569 74.8l-.5 2.2 M568.5 160.1l5.4 1.6 M568.5 160.1l2.4 7 M568.5 94.3l7.5 1.1 M568.6 137.2l2.7 6 .2 9.4 1 2.3 M568.6 137.2l14.6-.1 M570.4 133.6l6.7-2.9 M570.4 133.6l9.5-2.6 M571 66.4l-.5 8.6 M571 -17.5l3.6 13 5-.5 M571.6 103.9l7.4-1.1 M572.5 154.9l6-2.1 2.5-6.3 2.2-9.4 M573.3 29.7l-.2 3 5 .8 M585.8 5l-.2 3.5-5.4 17.2-3.2-15.8-2.5 10.6-1.2 9.2 M573.4 39.1l9.9-.1 M573.9 161.7l1.5 .3 M573.9 161.7l.8-1.2 .7 1.5 M575.4 162l2.1 .3 M575.4 162l.8 1.7 M576 95.4l2.3 .4 M576.5 96.5l2.2 5.5 M576.5 96.5l1.8-.7 M577.1 130.7l6.7-2.1 M577.7 6.4l8.1-1.4 M578.7 102l11.4-1.3 M579.6 -5l-.7 4.9 M579 102.8l4.6 14.8 1.6-1.1 .5-12 4.4-3.8 M579.6 -5l9.5-.7 .7-7.7 M579.6 -.2l8.1-1.4 M579.9 131l3.8 .9 M579.9 131l3.9-1.3 M580.5 -13.8l9.3 .4 M583.2 137.1l7.7 .8-1.5-4.6 M583.7 131.9l-.5 5.2 M583.3 39l-1.5-6.4 4-2.9 M583.3 39l3.7-.2 M583.7 131.9l5.7 1.4 M584.4 119.6l.4 1-.8 6.8 2.8 .5 M585.8 5l3.1-.4 M586.7 29.7l.3 9.1 M588.9 4.6l-1.3 9.9-.9 15.2 M587 38.8l3.9 17.7 .4 8.9 M587 38.8l14.8-1.7 M587.5 127.8l2.9-.6 M587.7 128.1l2.7-.9 M587.7 -1.6l.9-2.3 3.6-1.6 6.2-.2 M587.7 -1.6l1.3-.3-.1 6.5 M587.7 128.2l1.7 5.1 M589.7 91.9l0 1 3.8-.5-.9 6.1 M589.8 -13.4l2.5 0 M590.2 -17.5l-.4 4.1 M590.1 100.7l3.6 25.4 M590.4 127.2l3.3-1.1 M590.4 127.2l3.3-.7 M592.6 98.5l-2.4-.4 .6 2 M592.6 98.5l-1.8 1.6 M591.3 65.4l3.1 12.2 M591.3 65.4l-1.2 12 4.3 .2 M592.6 98.5l3 .6 4.1-.6-1.9-7 6.2-.7 M593.7 126.1l1.6-.5 M593.7 126.5l.3 1.6 M594.4 77.6l3.2 .2-1.7 6.2 M600.4 100.6l2.1 5.7 M199.6 247.5l4.2-1.1-.5-2.5-3.7 3.6 M215.3 93.8l2.7-.4-1.5-7.1-.9 6.2-.3 1.3" fill="none" stroke="#ffffff" stroke-opacity="0.85" stroke-width="0.8" stroke-linecap="round" stroke-linejoin="round"/>
<path d="M740 .5l.9 5 1.7 7.2-.3 4.8 1.7 5 0 5.4-2.1 4.7-.1 4.2 .2 5.7 1.7 5.3 1.6 5.3 1.7 4.3 1 5.1-.4 5.7 2.5 5.1-.1 4.2-2.4 3.9-3.7 5.2-1.9 5.9-.9 5.1-2.4 6 .7 4.9-2.4 4 .9 4.5 .4 6.3 1.7 4.2-1.5 4.5-1.5 5.7-3 4.8-4.2 3.1-3.3 3.5-4.5 3.4-.6 4.1-.9 5.4-.5 4.8-2 5.7-1.4 5.1-.9 5 .3 4.2-2 5.7 M632 272.5l-2 5.5-2.6 4.4-3.4 5.1-4.8 2-4.6 2.1-4.6 2.9-2.7 5.9-2 6-1.3 6.1-.8 4.5-2 5.8 .7 4-1.9 5.7 2 5.4 2.4 5 .4 3.9 2.2 5.7 .1 4.5-2.8 6.4-.3 3.7 0 5.4 M662 202.5l.1 4.4 1.4 5.2-.1 5.2 .6 5.2-1.9 3.8-3.2 5.3-2.9 5.9-1.8 5.3-.5 3.7-.5 7-1.2 4-3 5-2.9 6-4.1 4-5.8 4.5-4.2 5.5 M-8 60.5l6.1 1.5 3.2 0 6.6 .2 4.1 .3 6.5 2.1 4.9 1.2 6.6 2.7" fill="none" stroke="#d2d3d5" stroke-width="1.6" stroke-linecap="round" stroke-linejoin="round"/>
<path d="M222 242.5l10.6 3.3 9.3 2.7 10.2 2.5 9.8 3.5 10.1 3 9.6-3.5 10.8-2.7 9.6-2.3 10.1-3.8 9.9-2.7 10.6-4.2 8.8-3.6 10.1-4.4 10.9-3.6 9.6-4.2 9.4-2.6 10.5-2.4 9.7-2.4 10.4-2.6 6.2-10.3 7-9.2 6.8-10.5 .5-9.7 1.1-10.2 1.3-10.1 1.4-10.1 .7-9.9-1.5-10.5-1-9.1-.3-9.8-1-11.2-1.2-9.4-1.8-9.7-1.9-10.3-2.5-10.1-1.4-10.2-2.4-9.7-1.6-10.7-1.2-10.3-2.2-11 M129.8 109.8l7.9-8.7 6.7-9.8 7.6-8.8 10-5.3 9.9-4.5 10.6-5.1 9.5-5.1 10.4-4.5 9.4-2.9 9.8-4.7 9.9-4.4 10.5-3.5 10.5-2.4 9.7-4 9.6-2.9 10.4-2.5 9.8-3.2 9.9-1.6 9.6-1.7 11-1.4 9-1.9 10.8-2 9.7-1.4 10.5 2.1 9.7 2.1 10.4 2.6 9.5 1.3 9.8 2 10.2 3.2 9.9 1.7 M222 110.5l2.1 10.5 2.9 10.4 2.8 11.1 2.2 10-.8 10-.6 9.8-1.3 10.4-1 10.2-1.3 9.6-1.6 10.1-1 10.1-.6 10-1.8 9.8 .2 10 1.7 10.5 .8 9.9 .1 10.1 1.6 9.6 .6 9.9 3 10.5 1.5 9.9 3.3 9.2 2.5 10.5 1.8 10.3 2.9 9.6 M322 114.5l2.6 9.7 3.3 9.2 3.2 9.9 2.5 10.2 3.4 9 .3 9.4 1.3 11 1.1 9.9 .6 9.9 .7 9.5 1 10.3-1.7 9.4-2.1 10.9-1.6 10-.9 9.6-1.8 10.4-1.9 9.7 1 9.6-.3 10.3 .9 9.9 0 10.3 1.7 9.7 .1 10.1 .4 10.5 .4 9.8 .8 9.8 M417 242.5l2.5 10 3 9.5 2.4 10.3 2.3 10.6 2.5 9.5 2.3 10.1 1.7 9.6 1 10.5 1.1 10.7 1.6 9.9 .6 9.6 1.4 10.1 1.1 11 1.5 9.6 M472 122.5l9.5 2 10.4 1.2 9.9 1.3 10.1 1.8 10 1.8 10.1 1.9 10.5-.3 9.4-1.2 10.6-1.2 9-.9 10.1-.4 10.4-1 9.8 .7 10.6 .6 10 1.4 9.5 1 9.9 .9 10.2 .4 10.5-3.3 9.7-2.8 10.1-3.6 10.1-3.1 9.9-3.3 9.7-3.9 9.7-.6 10.5-1 9.7-.9 10.6-.5 9.5-.1 9.6-.6 10.4-1.3 M592 .5l4 8.5 4.7 9.6 5.1 9.7 4.3 8.6 4.2 8.8 4.8 9.3 3.8 9.4 4.2 8.8 4.9 9.3 4.5 9.5 3.1 10.1 4.1 10.3 4 9.9 4.3 10.2 2.6 9.7 3.2 10.1 2.6 10.5 2.5 9.3 3.8 10.3 2.8 9.7 2.5 10.4-8.3 9.1-8.6 8.6-8.1 8.3 M-8 62.5l10.1 3.9 10.5 4 9.4 4.2 9.8 4.3 10.2 3.6 M682 .5l1.8 10.4 1.6 10.8 2.2 10.2 1 9.8 1.8 9.9 1.6 10.9 4.5 9.3 5.1 8.7 5.6 8.7 4.3 8.1 5.9 8.4 4.1 9.1 5.1 8.5 5.4 9.2 3.1 9.5 3.2 10.7 1.7 10.3 3.1 9.5 3.3 9.6 2.7 9.9 2.9 10.5-5.2 10.5-4.1 9.5-5 10.5-5.5 9.5-4.8 9.5-4.4 10.5 M612 383.5l4.5-10.5 5-10.2 5.4-9.7 5.5-9.8 4.9-10.6 4.7-10.2 8.8-7.1 7.4-5.9 9-7.3 8-6.6 8.4-6.5 8.4-6.6 10.2-6.3 10.8-7 10-6.7" fill="none" stroke="#ffffff" stroke-width="1.3" stroke-linecap="round" stroke-linejoin="round"/>
<path d="M-8 172.5l10.2-2.7 10.7-2.3 9.2-3.9 11.1-2.1 9.8-3.2 11.3-4.5 11-3.9 10.9-4.4 7.7-7.2 7.4-6.5 7.7-6.6 10.5-4.5 10.6-5.7 9.7-5.2 10.1 .4 9.7 .4 10.8 1 10.2 .9 10.1 .1 10.5-.8 9.9-1.1 10.4-.2 10.5 0 10 .1 10.2-1.5 10.3 .3 9.8-.4 10-.7 9.7-.8 9.8 2.3 10.8 .8 9.7 2.4 9.7 1.5 M-8 364.5l10-3.4 10.2-3.8 10.3-3.3 10.3-4 10.2-4.2 10.8-3 11.7-3.9 10.5-3.4 9.7-5.2 9.8-6.3 9-6 9.9-5.5 10.5-6.8 10-5.9 11.9-9.2 11-8.6 12.8-12.8 11.2-6.1 10.2-5.6 10.5-4.8 9.5-5.2 10-5 M412 248.5l11.7-.3 11.1-.8 11.7 .5 11.6-1.4 11.8 .4 11.1-.6 11.2-.7 10.4-.4 10.6-.1 10.1 .5 10.6-.8 11.1-.3 10.7-1 9.4 .1 10.6-1.1 11.4-2.9 11-3.7 11.6-2.8 11.9-3.4 12.2-.1 13.2-1.1 15.4 12 9.6 3.9 10.2 3.1 11.2 3.6 9.4 4.3 10.5 2.9 10.3 4.2 10.3 2.9 8.6 3.6 10.4 3.8 9.2 2.8 9.6 3.5 10.3 3.4 M647 228.5l11.6 1.8 11.4 1.5 11.2 1.4 10.8 1.3 10 2.2 10.2 2.7 9.3 2.7 10.9 2.2 9.7 2.8 9.9 2.3 10.6 2.7 9.5 2.7 9.9 2.7 M574.4 162.5l-.6 10.1 .6 9.9-.2 9.7 .1 10.3 .3 10.8 .7 10.6 .7 10.2-.3 9.6-.3 10.1 0 10.4 .4 10.5 .2 9.6-.4 10.5-.5 9.6 .6 10.8-7.7 10.2-11.1 5.5-10.7 6.1-11.3 6.2-10.7 2.6-10.1 3-9.9 3.3-10.5 1.3-10.8 1.6-10.7 1.6-10.2 .9" fill="none" stroke="#ffffff" stroke-width="2" stroke-linecap="round" stroke-linejoin="round"/>
<path d="M10.7 131.4l1-2.6 4.5-.9 3.2 1.7 .7 2 .7 2.9-5.1 1.3-3.6-2.2z M192.7 340.9l-2.5 1.1-1.4-4 .5-5.2 3.1-.9 2.3 2.9 .3 4.6z M740.2 320.5l-1.2 2.8-1.9 1.4-2.7-.2-1.2-1.7-.7-2.8 4-1.3z M416.5 79.5l1.5-2.1 2.7-.6 1.8 1.7 .9 2.4-2.8 .8-2-.7z" fill="#cfd0d2"/>
<path d="M146.4 11.8l1.4 1.8 .5 2.2-2.4 .4-.2-2.2z M285.6 189.4l-.4 .4-.6-.2 .2-1 .6 .1z M549.8 101.1l-.1 .9-.9 .8-1.2-.8 .5-1.1z M408.8 300.2l-1.1-1.1 1.3-.6 1.5-.2-.5 1.4z M371.9 153.4l-1.3-.4-.3-1.3 1.3-.5 .5 1z M225.1 235l-.2-1.2 .7-.5 .8 .3-.1 1.1z M424.4 165.9l-1.3-.4-.3-1.3 1.2-.4 1.2 .8z M136.5 59.5l.4 1.2-1.8 .1-1.7-.6 1.2-1.2z M246.1 326.4l-1.7 1.2-1.6-1.5 1.2-1.2 2.1-.4z M450 162.9l1.3 1.1 0 1.4-2 .4-.1-1.6z M182.2 224.4l-.2 .7-.8-.1-.1-.5 .4-.2z M146.9 128.7l-.3 .8-.7-.3 0-.8 .6-.3z M298.1 167.8l.4 1.2-.8 .6-.8-.5 .3-1z M330.6 360.3l-1.6 .9-1.1-1.9 1.4-1.7 2.2 .8z M461.8 327.4l1-1.4 2.1-.3 .5 1.8-1.9 .9z M213.9 51.4l.5 1.1-1.1-.1-.4-.7 .3-1.1z M442.7 97.7l-1.3-1.4 .9-1.4 1.4-.3 .1 1.9z M361.8 68.7l-.5 1-1.7-.3-.2-1.2 1.7-.5z M206 171.1l.3 .9-1 .2-.6-.4 .1-.7z M315.4 207.8l-.7-.2-.1-.4 .3-.5 .8 .3z M325.9 321.5l.4-1.4 1 .5 .3 1-.9 1.5z M231.6 268.4l1.3 .1 .4 .8-1 .5-.9-.6z M65.8 22.8l1.5 1-1.5 1.2-2.3-.5 .4-1.5z M282.8 323.1l1-.1 .2 1-.9 .2-.7-.4z M106.1 85.9l-.3 1.3-.9 .3 0-1.3 .4-.8z M444.8 178.5l-.6-2.7 .6-1.8 1 .8 .9 2.6z M179.9 28.1l1.1 .7-1.1 1-1.6-.4 0-1.5z M346 13.9l-.1 1-.8 0-.3-1.2 .8-1.1z M264.9 334.3l.6 0 .2 .8-.6 .5-.6-.7z M388.6 334.8l-1.4 .3-.5-1.2 .7-1.5 1.8 .7z M214.1 157.2l-1 .4-.1-1.1 .6-.9 1.1 .6z M212.7 47.4l1.3-1.1 1.1 .5-.1 1.3-1.2 .7z M305.1 292.5l-.4 .6-.5-.4-.1-.7 .7 0z M219.5 348.3l.9 1.3-2.2 .2-1.7-.9 1.1-1.5z M481.9 96.8l-.1 1.7-1.2 0-.4-1.3 .7-.8z M369.4 352.2l1.7 1.6-2.5 1.5-1.2-1.7 0-1.4z M268.9 303.5l-.9 .9-1.5-.6 .6-2.4 1.5 .3z M338.8 231.5l-.2 1.3-1.4 .6-.8-1.3 1.2-.6z M76.5 31.7l-.8 1-.8-.7-.1-1 1-.2z M408.3 221.2l-2.6-.7 .6-2 2.6-.9 1.5 2.1z M214 31.2l.5 1-1.1 .6-1.5-.7 .9-1.3z M172.4 46l.7 1-.2 1.4-1.5-.4 .2-1.2z M108 6.1l1.3-1 .8 1.2-.3 1.2-1.2 .2z M324.8 143.9l-.9-.5 .9-.7 .7 .5 .3 .8z M404.2 290.9l-.9 .5-1-.8 .8-1 1.2 .1z M82.8 30.4l-.5 .2-.8-.1 .3-.6 .7 .1z M276.9 332.4l.8-.5 .8 .6-.5 .6-1.2 0z M481.5 330.1l-2.7 .4-.9-2.2 1.9-1.7 2.6 1.3z M300.9 144.5l1.8 1.7-.1 2.2-1.7 .6-1.4-2z M83.4 3.3l-.7-1 1.1-.1 1.1 .2-.8 .8z M402.4 166.7l.1 .9-.5 .8-.5-.7 0-.7z M516 79l-1.6-.9 .3-1.9 1.9-.6 0 1.9z M478.5 5l-1.6-1-.3-1.7 2 .2 1.9 1.2z M433.8 313.3l.8 2-.4 1.4-1.3-.4-1.1-1.8z M534.2 92.1l1.9-.9 .1 1.9-1.1 1.5-1.4-1.3z M194.2 151.7l-.7-1.2 1.3-.9 .6 1.2 .1 1.4z M126.6 146.9l-.3-.9 1.1-.5 1.3 .5-.9 .7z M498 366.8l-1.1 .4-.8-.8 .6-1.2 .7 .4z M277.8 162.1l-3.2-.4 0-2.3 2.1-.9 2.7 1.2z M329.8 185.1l-.2-1.9 1.8-.5 1.1 1.4-1 1.5z M214.2 254.1l-1.1-1.5 1.1-1.6 1.2 .7 .9 2.3z M248.2 67.3l-1.8-.5-.8-1.4 2.1 0 .9 .7z M175.1 87.7l-.4 1.9-2.1 0-2.6-.7 2.2-1.5z M517.7 .6l1.2-.3 1.2 .4-.8 .6-1.2 .1z M339.3 203.3l.5 1.5-1.8 2.1-1.2-2.3 .3-2.3z M180.1 112l.8 .6-.5 1-.9 0 .1-1z M320.5 303.6l-1.2 0-.9-.6 1-.5 1.1 .1z M259.9 133.4l.2 1.4-.9 .9-.6-1 0-1z M182.7 91.6l-.4-1.5 1.3-1 1.9 .6-.4 1.7z M504.2 4.9l-.6-1.5 1.9-.6 1.2 1.4-1 1.6z M174.6 140.3l.1-1.5 1-.6 .7 1.3-.7 1.4z M185.7 82.1l.6-1.2 1.2 .4-.3 1.1-.7 .3z M428.3 282.8l-.6 1.6-1.7 .1-1.1-1.9 2-.6z M260.4 22.8l.4-1.5 1.9 .8-.3 1.6-1.5 .1z M399 142l.6-.1 .3 .8-.8 .8-.3-1z M335.6 219.8l.1 2.5-2 .6-2.1-1.3 1.6-2.5z M505.8 137.6l-.3 1.8-1.3-.2-.1-2.2 1.1-.8z M404.6 335l-1.1-.3-.6-1.2 .8-.8 1.2 .1z M396.2 329.9l1.5 .6 1.3 1.4-1.4 1.4-1.2-1z M225.1 21.7l1.4 .5-.4 2.3-1.4-.6-.9-1.5z M217.4 201.1l-1.4 .2-1-.8 .8-1.1 1.6 .1z M511.7 163.6l-.7 1.2-.9 0-.6-1.2 1-.4z M520.2 54.4l1.1 .6 .2 1-1.9 .2 0-1z M261.3 283.1l1.6-1.1 1.3 1.2-.7 1.7-1.3 .9z M339.8 286.4l-.8 .3-.5-.4 0-.8 .9 .1z M154.1 37.5l1.4 0 0 1.5-.8 1.4-.8-1.4z M270.8 295.5l.2 .6-1 .1-.3-.4 .1-.5z M370 328.2l-1.1-2.4 2.1-1.6 1.1 2.2-.3 2.4z M438.7 237l.7-.7 .9 .2-.3 1.2-.8 .4z M252.5 305.3l1 .1-.2 1.2-.5 .4-.7-.6z M344.9 120l-.8-.5 .1-1.8 1-.3 .3 1.5z M325 365.1l.4 1-.9 1-1.1-.8 0-1.3z M251.1 301.4l1.2 1.3-1.9 .6-1.6-.5 .9-.9z M100.4 23.3l.6-.9 1.1 .8-.6 1.4-1.1 .1z M300.6 93.9l2.1-1.5 2.5 1-.3 2.2-2.5-.3z M439.1 223.3l-1 .8-1.3-.7 0-1.1 2.3-.3z M107.1 116.1l.8-.8 1.5 .2-.6 1.1-1.2 .6z M58.7 58.1l-.8-.9 .2-1 1.6 0 .2 1.2z M201.5 231.3l1.7-.2 .7 .9-.9 .9-1.7-.4z M252.1 242.9l1.3 1.4-.9 1.5-1.2 .5-.8-2.2z M524 26.4l-1.1 .2-.8-.4 .4-.9 1.8 .1z M219.4 116.5l.1 1.5-2.3-.1-1.7-.9 1.7-1.3z M319.6 155l1.3-.7 .6 1.5-.8 1.2-1.7-.4z M202.1 31.3l1.9 .6 1 1.1-1.1 1.9-1.3-1.6z M429 45.7l-.2 1.9-1.2-.1-1.1-2 1.6-2z M511 43.4l-1.7-.7-.1-1.1 1.2-1 1.7 1.2z M152.9 189.4l.7-.9 .7 0 .3 .6-.5 .6z M122.4 123.9l-.1-1.8 1.9-.6 1.2 1.4-1 1.5z M234.6 340.5l.8 .5 .3 1.2-1 .3-.6-.9z M353.8 137.7l1.6 .4 .9 1.6-2.6 .6-1.8-1.6z M425 169.8l2-.5 1.4 1.3-1.5 1.1-1.9-.3z M268.8 230.3l1-.7 .3 1.1-.7 .6-.7-.4z M178.1 153.6l-.7 1-.7 .3-.7-.8 .8-.9z M477.1 130.9l1.3-.6 .2 1.2-.3 1-1.5-.3z M239.9 207.1l-.7-.7 .1-1 1.4 .1 .1 1.1z M299.8 318.3l2-1.2 1.5 1.4-.4 1.5-2.4 .1z M160.5 68l0 .8-.5 .6-.7-.6 .5-.6z M328.2 58l.3-1.1 .9-.7 .5 1-.3 1z M278.4 136.2l1-.7 1.7 .7-.9 1.4-2.1-.3z M314.8 163.3l1 .4 .1 1.1-.8 .2-.5-.6z M107.9 62.7l.6 .2 0 .7-.7 .8-.5-1z M485.9 121.5l.8-1 1.2 .9-.6 1.2-1.4-.1z M278.4 50.7l.9-.2 .2 1.1-.9 .7-.6-.9z M221.2 245.1l-.8 .8-.2-1.4 .3-1.1 .7 .6z M336.7 117.9l.8 .3 .3 .8-.9 .1-.5-.5z M311.4 66.4l1.1 1 .7 1.3-1.4 .3-.8-.9z M184.2 176.8l.5 1.6-1.6 .4-1.5-.4 .5-1.4z M136.1 156l.5-2.1 1.7 .8-.1 2.2-1.3 .1z M67.5 61.8l1 .2 .5 .7-1.1 .4-.9-.5z M283.2 244.5l-1.2-.3-.7-1.2 1.7 0 1.5 .6z M475.1 98.3l-.6-.6 .3-1.1 1.1 .3-.3 .9z M237.7 225.5l1-.6 .3 1.2 0 1.6-1.1-1z M187.7 164.4l.5-.8 .9 .3-.1 1.3-.9 .1z M434.3 355.8l.3 1.6-1.9-.2-1.1-1 1.2-1.3z M222.1 210.3l1.1-.4 .8 .6-.5 .6-1 0z M142.2 167.2l.5-1.1 .9 .3-.1 1.4-1 1.1z M429.6 272.3l.6 .1 .3 1.5-.9 .6-.8-1.2z M499.1 208.4l-1.7 .6 .2-1.5 1.1-.5 1.3 .6z M123.9 168.1l-2.4 1.4-1-2.2 .8-1.7 2.5 .1z M195.1 145.2l.8-.2 .7 .9-.8 .9-1.1-.4z M363.6 78.3l.7 .7-.3 .9-.7 .2-.3-.9z M337.8 241.9l2.2-1.1 1 2.2-1.9 1.1-2.9-.3z M295.5 119.3l1.4-1.4 .9 1.9-.8 1.2-1.4 0z M474.8 133.9l.2-.8 1-.1 .2 .8-.6 .8z M350.3 229.3l.9 2.3-1.8 1.2-2.1-.8 .8-2.1z M173.6 134l.3 1-.3 1.1-.8-.7-.3-1z M564 76.4l.7-.3 .8 .6-.7 .7-1.1-.2z M423.9 368.3l1.5 2.9-2.7 1-2.8-.5 1.2-2.7z M267.8 193.4l1.1-.5 .1 1.2-.4 .8-.8-.4z M377.2 332.6l-2.6 .2-2.1-1.3 2.4-1.1 2.9 .5z M421.6 214l.5-1.7 1.7 .1-.5 2.1-.9 .8z M314.2 273.7l-.7-.1-.4-.7 .7-.5 1 .4z M199.7 241.8l.7 1.4 .2 2.4-1.7-.5-.7-2.3z M311.8 167.3l.6-2 1.4 .4 .6 1.8-1.3 .9z M520.1 78.6l-1.2-.8 .3-2 2.6 .6-.1 1.9z M326.6 263l-.6-.6 0-1.1 .9 .3 .7 .9z M530.8 11.6l.2 2-1.8 0-1-.7 .7-1.3z M167.8 67.2l.9 .2 .5 .9-1.3 .2-.6-.7z M550.6 49.1l-.9-1 .9-.8 1.2-.2-.5 1.2z M229.8 135.4l-.4-1.5 1.1-.4 .5 .9-.2 1z M296.3 216.5l-.6 .9-.9-.6 .2-1.1 1.2-1z M119.9 146.7l.7 1-.9 .9-1.7-.5 .3-1.1z M171.7 85.8l-1.8 .7-1.5-.7 .8-1 1.8-.8z M430.4 291.8l-.2-.7 .6-.6 .5 .9-.4 .7z M328.4 346.1l1.3 .3-.3 1.6-.7 .6-.6-1z M187.4 2.8l-.7 2.3-1.6 1.6-.7-2.2 .7-1.7z M141 16.3l-1.8-.9 1.3-1.7 1.6 .4 .8 1.7z M69.2 71.3l-.7-1.4 1-1.3 1.2 1.1-.1 2.2z M441.6 197l.3 2.3-1.9-.1-1-1.5 1.1-1.6z M267.6 182.2l-1 .3-.2-.8 .7-.5 .8 .4z M345.4 214l-.7-.7 .7-.7 .5 .2 0 .9z M108 75.8l-1.8-.2 .1-1.2 1.5-.3 1.1 .7z M581.3 100.2l-.4 1.4-1.6 .8-.2-2 1-.9z M423.5 368.8l-1 .6-.8-.3 0-1.2 1-.1z M180.2 187.5l-.4-.6 .3-1 .7 .4-.1 .9z M206.3 301.3l.8 .6-.8 .5-1.2-.1 .6-.8z M343.9 339.9l-1-.2-.6-1 1.1-.6 .6 .8z M205.2 271.1l1.7-.2 .6 .8-.9 .7-1.2-.5z M228.1 268.3l.2 1.4-.4 1.2-1.1-.4 .3-1.5z M211.1 326.8l1.2 .2 .7 1.2-1.3 1.3-1-1.4z M163.1 50.5l.8 .7-.6 .7-1 .1-.2-1.2z M324.9 23.4l-.8 .7-.7-.6 .3-1.2 .6 .3z M363.9 146.3l.2-1.1 1.4 .5-.2 1.1-1 .3z M546.6 20.1l.1-2.2 2.2 .2-.1 2.2-1.2 1.5z M373.8 15l.8-.2 .5 .7-.8 .5-.9-.3z M321.7 87.2l-1.1 .3-.7-.8 .5-.8 1.7-.2z M444.8 255.9l-.4-.4 .1-.6 .7 .2 .5 .6z M308.3 266.4l2.4 .3 .7 1.9-2 .6-2.1-.8z M427.4 269.2l1-.5 1.1 .5-.7 .8-.9 .2z M458.9 245.6l.9 1.3-1.7 .8-2.2-.7 1.6-1.4z M581.6 155.8l-1.2-1 .8-2 1.8 .5 .4 2.6z M572.9 31.6l1.4 .4 0 2-1.7 .6-1.1-2z M530.2 218.8l-.8 1.8-2.3 .3 .4-2.4 1.4-.6z M419.5 104.8l-1.5-.3-.7-1.1 1.2-1.3 1.6 1.1z M436.7 290.3l-.6-.6 .5-.6 .9-.1 .1 1.2z M579.3 64.5l2.4 .8-.6 2.2-1.5 1-1.2-1.7z M145 179.4l1.4-.2 1 .4-.4 1.1-1.4 .7z M137.8 53l0-1 1.4-.1 .1 1.1-.8 .4z M216.7 17.7l1.2-.8 .8 .8-.2 1.1-.9 0z M386.9 245.9l-.8 1.1-.9-.5-.2-1.5 1.2-.7z M180.4 199.6l-1.5-.1 .5-1.3 1-.9 .9 1.2z M287.8 315.1l-1 3.1-2.3-1.4-.5-1.9 1.8-1.8z M572.9 160.1l-2 1-1.6-1.8 2-.9 1.3 .5z M478.3 34.7l-.9 .9-1.1-.5 .4-.9 1-.9z M82 20.7l-1.7-.3 .5-1.3 1.3 .1 .7 .7z M447.9 232.8l-.6-.5 .4-.9 .6 .3 .2 .7z M415.2 351.5l.9 .9-1.1 .6-1.9 .1 .8-1.2z M446.2 335.6l-1.7-.3 .1-1.9 1.8 0 .4 1.1z M274.2 172.7l.5 1-.9 1.1-1.1-1.2 .9-1z M365.8 213.1l.1 2.2-1.4 1.1-2.8-.6 1-2.2z M468.3 118.6l.2 .8-.7-.1-.5-.6 .6-.6z M218.7 52.9l1.7 .1 .5 1.4-1.3 1-.8-1.1z M303.9 346.5l-.7 .1-.2-.7 .6-.2 .6 .2z M306.7 327.8l.2 1.5-1.4-.2-.5-1.4 1-.7z M335 142.3l-2.5 .8-1.1-2.2 1.8-.9 2.1 0z M200.6 165.2l3 .9-.9 1.4-1.7 .4-2-.9z M119.8 120.1l1.7-.1 .7 1.3-1.3 1.2-1.5-.9z M446.7 298.1l.4 2.4-1.2 .9-1.2-1.1 .6-2.3z M237.8 318.7l2.1 1.6 .3 2.6-3.3-.1-.9-2.2z M197.3 214.3l-.4-.8 .7-.4 .7 .2-.1 1.3z M402.1 347.6l-.5-.8 .2-1.6 .8 .8 .4 1.4z M228.5 133.3l-.4-1.1 .9-.7 .4 1.2-.3 1z M243.4 335.3l2.7 0-.2 2.7-2.9 .8-1.1-2.2z M141 126.3l.4 1.3-.6 .9-.6-.8 .1-1z M466 172l-.3-.5 .1-.9 .6 .3 .1 .7z M322 303.2l1.1-.1 .8 .7-1 .4-.6-.3z M96.7 49.6l-.6 .4-.3-.8 .3-.9 .8 0z M412.3 289.3l.6 .5-.1 .9-.8-.1-.5-.9z M135.5 52.3l-.3 .7-.6-.2-.6-.8 .9-.2z M410.8 140.5l-.3-2.6 1.5-1.6 .8 2.1-.4 1.9z M306.2 157.1l.5-.3 .4 .5-.2 .8-.8-.1z M210.1 150.8l1 .1 .1 1-.8 .8-.6-1z M411.2 293.9l-2 1.6-2.5-1.9 1.6-3.1 2.5 1z M105.5 18.2l.4-.8 .9 .5 .2 .6-.9 .2z M297.1 181.5l.9-.6 .8 1-.8 .9-1.3-.3z M303.7 347.8l0 1.3-.7 .2-.7-.6 .4-1.1z M153.1 184.5l-.9 1-1-.8 .5-.9 .8-.2z M277.5 197l.9 .2 .4 1.1-1.4 .5-.7-1.1z M235.8 141.6l1.3-.6 1.2 1.2-1.3 .8-1.3 0z M325.7 137.5l2.4 .6 1.3 2.4-2.3 1.5-1.6-1.7z M383.9 198.9l-1.2 2-1.4-1.1-.4-2.4 2-.9z M463 308.5l.9 .1 .5 .6-.7 .4-.9-.1z M295.8 180.8l-1.1-.8 .2-.7 .8-.2 .4 .6z M289.6 148.4l-.9 1.3-1.1-.5-.1-1.2 1.1-.8z M268.9 316.3l0-2.4 1.6-1.3 1.3 2.1-1.3 1.4z M121.5 19.7l.3-1.7 1.1-1.4 1.5 1.5-.9 1.7z M386.6 123.4l2.1-.4 .5 1.5-.5 1.4-1.3-.7z M362.4 321.7l.8-1.6 1.3 .6 .8 1.5-1.7 1.3z M129.7 68.1l1-.5 .8 .7-.4 .6-1-.2z M326.4 33.3l-1-.2 0-1 .9 0 .3 .5z M481.3 144.9l.7 1.2-.7 1-1.1 0 0-1.9z M381.5 359l-1.2 1.5-2.2 .2-2.2-1.5 2.9-1.4z M293.2 348.7l.7-.2 .5 .4-.3 .8-1.2-.2z M196.5 67l.5 .8 0 1.1-1.5-.5 0-.9z M452.5 308.6l-.4 1.2-.9-.4 0-.9 .6-.9z M263.7 72.7l-1.6-.2 .8-1.1 1.1-.2 .3 .8z M409.9 374.3l-.7-.7 .7-.7 1 .3 .2 .9z M275.2 137.8l.3-.6 .8 .2-.5 .9-.6 .4z M160.8 206.1l-1-1.1 2.2-1.1 2.3 1.3-1.2 1.6z M437.5 174.6l-2.3-1.5-.7-2.8 2.8-.4 1.5 2z M422.2 67.2l-.9-.4-.2-.6 1.1-.6 .6 .9z M506.3 35.2l.6-.5 .7 0 .4 .7-1 .4z M365.6 260.9l-1.3-1.5 .5-2.3 2.4-.2-.4 2.6z M120.9 59l.6 1.7-.5 1-1.7 0-.2-1.5z M190.6 183.4l1.1 .6 .5 .9-1 .5-.6-.7z M185.1 261.2l.7 2.3-1.4 .7-1.4-.7 .8-1.8z M155.9 152.2l-.7-.3 .5-.6 1.1-.1 .1 .9z M374.7 291.5l-1.5 .8-1.4-.9 .5-1.8 2 .4z M406.9 292.6l.5-1.2 .7-.4 .3 .9-.2 1z M336.3 365.9l0-2 1.7-.1 1.5 .7-1.2 1.4z M358.1 303l.8 .8-.2 1.2-.9-.3-.1-.7z M257.1 5.3l.9 .4 .5 .7-.9 .5-.9-.6z M496.9 355.1l-.2-.6 .3-.7 .6 .6 .3 .8z M563.4 17.3l.4-1.6 1.4 .7 0 2-1.3 .3z M201.1 11l.2-1.4 1.8 .1-.4 1.5-.9 .5z M97.2 51.9l.9-1.9 1.3 .1 .2 1.6-.9 1.4z M481.3 44.3l1.4 .6-.3 .8-1 .8-1.1-1z M330.2 218.6l.4-1.4 1.3 .6 .5 1.6-1.6 .7z M520.7 163.5l.6 1.4-2.6 .3-2.1-1.1 1.8-1.4z M234.1 329.8l-.8 0-1-.6 .9-1.2 1.1 .9z M367.8 271.1l-.6 1.2-1.3 .6-.4-1.1 .7-.7z M353.1 248.7l-1-.4-.3-1.1 1.6-.1 .4 1z M45.7 40.5l.5-.7 1.3 .1 .2 .8-1 .1z M225.2 264.9l.3 1.4-1.1 .9-1.3-1.1 .8-1.7z M439.5 22.2l.4 1.9-1 .5-1.2-.4 .6-2.4z M389.7 334.9l-1.7 .2-.6-.7 .3-.9 1.3 .1z M542.5 106.5l-.8 .7-.5-.7-.1-1 1 .1z M130.4 166.7l-1.8 1.2-1.6-1.9 1.6-1.5 2 .3z M51.4 67.9l.8 1.8-1.4 1.7-1.8-1.3 1-1.5z M193.8 232.4l-1.1 .6-.5-1.6 .8-1.5 .8 1.2z M347.9 103.6l.5 .7-.6 .4-.4-.2 0-.8z M209.7 187.8l-.3 1.2-.9 .3-.5-.9 .6-.5z M295.2 268.7l-.1-3.6 2-1.5 .8 2.6-.7 1.5z M70.2 24.3l-1.3 .4-1-.7 .8-.9 1.1 .4z M148.4 33l1.3 1.5-2 1-2-.7 .8-1.6z M153.7 146.2l-.8 1.7-1.6-.8-.5-1 1.2-.6z M279.6 111.8l1.7 2.1-1 2.9-2.3-.9 .1-2.4z M481.4 98.5l.6-1.1 1.2-.1 1.5 1-1.8 .5z M243.7 343.1l-1.4 0 .1-1.7 1.1-.1 .7 .8z M122.4 7.9l1.1 2.4-1.9 1.3-2.2-.8 .5-2.1z M91.2 91.8l1.1 .3-.2 .6-.6 .3-.5-.5z M239.8 337.6l-.4 .9-.5-.8 .3-.6 .5-.1z M225.6 290.7l-1.2 .1 .3-1.8 1-.8 1 1.5z M451.6 243.7l.3 2.6-1.4 1-1.9-.6 1.2-1.8z M289.7 216.1l.7-1 1.1 .9-.2 1.3-1.5-.1z M360.8 125.5l-1.1-1.4 .8-1 1.4-.3 .4 1.7z M196 175.7l-1.1-.2-.3-.8 1-.4 .7 .6z M441.7 180.1l1.1 .2 .4 .6-.8 .8-.7-.7z M185.4 253.2l.1 1.6-.9 .8-.7-1.2 .3-1.7z M355.1 288.8l.8-.1 .9 .7-.8 1-1.1-.4z M373.1 159.4l1-2.1 2.2-.7 1.1 2.1-1.7 1.8z M194.7 140.4l.8-1.9 1.9 .1 .8 1.7-1.7 1.7z M215.8 252.7l-.3-.9 .6-.9 .7 1.2-.5 1z M244.5 215.5l.7 .7-.2 1.2-1.7 .2-.2-1.8z M474.8 55.3l.1 1.5-1.7 .6-.8-1.1 .5-1.2z M194.1 223.1l-1 .9-.9-1.2 .7-1 1 .4z M341.7 332.1l1.1 .1 .5 .7-1 .5-1.6-.5z M425.2 272.4l1.1 .4 .2 1.8-1.9 .1-.3-1.6z M492.1 37.3l1.4-.1 .9 .7-.7 1-1.4-.3z M51.6 10.7l.8-.4 1.2 .6-.6 1.6-1.4-.7z M281.8 197.6l-.5 2.8-2.2 .2-.1-2.5 1-2.3z M460.6 212.4l-.9 1-1-.9 .1-1.2 1.7-.4z M192.4 36.2l.6 .7-.6 .6-.7 0-.3-1z M492.7 27l.6 1.3-1.8 .6-.8-1.1 .6-.8z M297.5 201l-.6 .7-1-.3-.5-1.2 1.8-.3z M475.8 244.9l-1.6 .4-1-.6 .5-.6 1.1 0z M445.7 91.9l1.3 .5 .6 1.1-.9 .6-.8-.3z M271.1 167.7l1.7 .1 1.3 .5-1.2 .6-1.8 .1z M161.1 162.2l-1.9 .3-.2-2 1.3-.7 1.5 .7z M164.4 19.9l-.6-.9 .3-.8 .8 .3 .3 .7z M325.3 72l.8 .7 .3 1.1-1.4 .1-.2-1z M255.6 302.4l1.8 .1-.1 2.2-2.4 .7-.4-2.1z M184.6 220.4l-.7 2.3-1.2 1-.1-2.3 .5-1.7z M287.2 128.3l.1-1.3 .9-.5 1.1 1.2-1.3 .7z M247.7 204.8l.5-.5 .9 .1-.1 .7-1 .7z M212.7 188l1.2 .8-.6 1.5-1.3 .2-.2-1.6z M270.9 233.3l0-.7 .6-.4 1 .3-.8 .6z M366.1 75.8l1.2 1.1 .1 1.6-1.8 1.1-1-2.4z M181.4 102l-.8-.9 .6-1.2 1 .2 .3 1.6z M202.2 117l.5 1.7-1.6 1.1-.8-1.4 .4-.9z M235.6 254.1l.1-1.3 1.4-.2 .1 1.2-.6 .8z M95.9 94.7l-.9-2.7 1.4-2.3 2.1 1.5 0 2.4z M350.9 16.8l-1 .3-.5-.8 .3-1.1 1.2 .4z M450.2 314.4l.9-.4 1 1.1-.8 1.8-1-.8z M223.2 129.1l.6 1-.4 1.2-.8-.4 0-1.1z M171.9 195.7l.9 1.5-.7 1.8-1.1-1.2-.1-1.2z M244.4 4.3l1.9 .2 1.2 .9-1.3 .8-1.6-.1z M232.2 80.4l-1.7 .7-.6-1.4 .4-1.1 1 .4z M225 128l-1.1 .4-1-1.1 .9-1.1 1-.1z M541.6 96.5l-.5 .7-.8 .1-.2-1.4 1-.5z M390.2 249.8l-.1 1.1-.6 .3-.8-.6 .7-.9z M458.6 130.9l-.8 .5-.8-.4 .2-.5 .6 0z M279.1 138.4l-.8-.5 .3-1.1 .8-.1 .3 1.1z M525.5 224.3l-.6 .3-1 0 .5-.6 .7-.3z M261.1 326.6l1.4-.4 1 .5-.2 1.6-1.6-.1z M301.9 174.3l.8-.3 .5 .7-.4 .8-.6-.5z M386.6 350.1l.8 0 .4 .8-.7 .8-.6-.8z M601 80.6l-.6 .7-.8 .1-.3-1.3 1-.1z M254.9 260.5l-1 .1-.3-.6 .1-1 1 .5z M209.8 289.1l.6-.3 .5 .1 0 .5-.6 .2z M305 262.7l-1.2 0-.3-1.9 1.3-1 .9 1.5z M439 226.5l-1 .2-.3-.8 .6-.5 .9 .2z M136.3 51l-.8-.9 .6-1.2 1.3 .4 0 1.3z M439.9 117l.2 .5-.5 .5-.5-.4-.2-.8z M317.5 183.2l-.7 1.2-.9-1-.3-1.7 1.5 .6z M332 24.3l-.3-.9 1 0 .7 .5-.5 1z M283.3 85.4l.3 .8-.1 .6-.5-.1-.2-.7z M282.7 192.5l.2 .5-.4 .7-.4-.6 0-.7z M429.6 380l-.3 1.7-.9 1.5-1.4-1.3 .3-1.8z M182.9 62.3l-1 .4-1.2-.4 .4-1.1 1.6 .2z M315.5 249.5l-1.1-2.8 2.1-1.7 1.9 1.5-.5 2.3z M318.7 76.1l.6 .6-.3 .7-1-.3 0-.5z M464.2 273.4l.7 0 .5 1.2-.8 .2-.7-.2z M334.1 184.2l1.4-.5 .9 1.9-1.5 1.6-1.2-1.6z M386.9 254.8l-1.6 .3-.6-1.1 .7-1.4 1.8 .8z M158.2 45.4l-.7-.1-.3-.7 .7-.6 .6 .6z M133.6 78.1l1.3-.2 .7 .5-.3 .8-1.3-.1z M321.6 320.9l-.7-.7-.2-1.1 1.1-.4 .3 1.2z M206.9 162.4l1.1-1 .9 1-.2 1.3-1.3-.1z M555.7 155.3l-.1 .9-.9 .2-.3-1.2 .8-.6z M470.7 305.6l.3 .8-.9 .5-1.2-.3 .2-1.2z M244.4 208.6l.5 1.8-2.6 .6-1.8-1.5 1.8-1.4z M194.4 58l-1.6-2.3 1-3 1.5 1.1 .3 2.1z M477.5 210.6l-.2-1 .4-.5 .5 .1 0 1.1z M494.2 117.8l.4-2.2 1.4-1.6 .6 2.3-.6 2z M438.9 334.6l.4-1 .7 .9 .2 1.1-1.1-.2z M303.1 353.1l-.6-1.2 .6-1.2 .9 .5 0 1.5z M141.3 122.9l-1.2 1.7-2.4-.5 .5-1.8 1.7-1.1z M455.4 162.8l-.1 1.3-2 .1-.2-1.2 1-.8z M174.7 129.8l-1.2 .5-.6-1 .6-1 1.4 .5z M265.7 352.7l.3-.9 .7 .3-.1 1-.5 .2z M468.6 119.3l-.2 1.2-1.3 .2 0-2 1.2-1.1z M346.7 146.7l1.2-.1 0 1.3-1.3 .4-.9-1z M365.7 198.8l-.9-.5 .5-.8 1.2 .4 .3 .5z M335.8 245.3l-1.1 .6-.9-1 .7-.9 .8 .3z M534.5 215.6l-.4 .8-.7-.4-.4-1 1.1-.2z M433.3 201.6l-1.9-1 .6-1.6 1.8-.1 1 1.4z M228.5 3.2l-1.4-.9-.6-1.7 1.7-.2 1.2 1.1z M226.5 61.4l-2.2-.7 1.1-1.5 2.4-.1 .4 1.5z M152.9 96.3l-1.1 1.5-1.4-.2-.1-1.4 1.1-1.5z M319.9 76.8l.7-1 1.6-.1 .2 1.2-1.3 1.1z M371.2 263.9l-.7 .8-1.7-.2-.1-1.3 1.9-.4z M385.2 195.5l-.4-1.1 .8-.4 1.1 .1-.2 1.3z M247.1 164l-.7 .6-1.1 .1-.3-.9 1.1-.2z M462.8 260.8l-1.3 .7-.4-1.9 1.1-.6 1 .4z M215.6 285.7l-1.3 1-1.2-.9-.1-.9 1.6 .2z M118.7 141.9l1 .1 .1 1.1-.7 .4-.4-.6z M290.5 50.8l-2.4-.2-1.2-2.1 2.4-.8 2.1 1z M309.2 100.8l-.4-1.4 .8-1 1.3 .4-.6 1.7z M231.4 145.8l.8-.1 .1 .9-.9 .1-.8-.5z M255.5 43.7l.3-.5 .7 .2 .3 .7-1 .3z M224.8 156.1l1.4 .2 .2 .9-.6 .4-1.2-.2z M365.6 179.8l-.6-1.3 1.4-.8 1.9 .5-.5 1.2z M258 172.9l-.2-.7 .7-.8 .8 .8-.6 .9z M248.5 47.3l1 .5 .6 1.2-1.6 .7-1-1.3z M265.4 229.9l1.4 1.4-1 1.6-1.7 .5-.8-2.6z M452.7 360.9l0 1.6-1.2-.3-.5-.7 .6-.9z M374.4 345.2l-.3-.9 .6-.5 1.3 0-.4 1z M160.5 122.4l-1-.3 .2-1.1 1.2-.3 .3 1.1z M333.3 374.4l.8-.7 1.3 0 .6 1-1.7 .5z M230.3 255l.1-.8 .9-.3 .2 .9-.4 1z M449.9 155.6l-1.5-.2 0-1.6 .7-1.2 1.2 1z M283 361.5l-.7-.8 .5-.8 .9-.2 .1 1.3z M193.5 72.6l1-.4 .1 1.4-.7 1.1-.9-1z M461.4 375.6l.2-1.2 1-.2 1.1 1.3-1.4 .6z M528.1 138.1l-1-1.3 .6-1.2 1.5-.3 .1 1.7z M126 18l.8-.8 1 .4-.5 1.1-1 .6z M128.5 63.4l-.1 1.4-.9 .5-.9-.5 0-1.3z M310.2 326.2l-.3 .8-.9 .1-.3-1.1 .9-.4z M108.8 3.8l.4-1.2 .8 .9 .2 1-1.1 .4z M313.6 301.8l-1.3-1.8 2.7-1.3 1.5 1.7-.3 1.8z M267.4 168.7l-1-.9-.2-1.5 1.6-.3 .2 1.5z M499.6 .4l.7 .5 .4 1.2-1.1 0-.5-.8z M387.5 121l-.8 .9-1.2-.1-.1-1.6 1.2 0z M471.1 228.7l.5 1.8-1.8 1.1-1-1.3 .5-.9z M132.7 159.8l-1.2-.4-.6-1.7 1.5 .1 .9 .7z M281.6 173.3l.8 .6-.7 .7-1.5 .2 0-1.4z M168.5 62.5l-.5 1.1-1.6-.3 .1-1.6 1.6-.7z M56 40.5l.7-1.2 1.2 .8-.4 1.1-1.2 .5z M51.6 13.7l.4-1.1 1.6 .2-.1 1.7-1.6 1z M521.6 146.9l.5-.8 .2 1-.2 .7-.8 .1z M410.6 38.1l1.4-.3 .5 1.6-1.1 .8-1.6-.3z M379.4 335.9l.9-.1 .4 1-.9 .3-.7-.4z M280 270.6l2.1 1.3-.9 2.2-2.6 .2-1.4-2.6z M259.7 163.7l.9 .1-.4 .8-.8 .3-.2-.8z M366.2 308l1 0 .3 .6-.8 .6-1.1-.5z M286.8 164.4l-1.5-.7 .6-1.4 1.4-.7 .5 1.6z M230.9 233.1l1.1-1 1.2 .6 .2 1.4-1.7 .1z M240.1 104.1l.9 .3-.2 .6-.8 .5-.1-.8z M490.4 208.8l-1.4-.1 0-1.9 1.5-.1 .8 1.1z M251.5 231.1l-.4 2.1-2.4-.4 .4-2.5 1.5-.1z M241.6 147.9l-2.6 .1-.6-1.5 1.3-1.1 2 .7z M438.1 184.1l1.6-.2 .8 1.3-1.4 .4-.8-.4z M538.1 2.2l.3 1.4-1.4 .8-1.5-1.5 1.5-1.1z M282.8 46.8l-1 1.1-1-1.2 .3-1.5 1.6-.1z M260.7 350.5l1.1-.1 .2 1.2-.6 .6-.8-.5z M296 311.9l-1.8 .7-.8-1.9 1.4-.8 1.6 .1z M583.1 33.3l-.1-1.6 1.5-.9 2 1.6-1.6 2.6z M396.4 158.9l-.8 1.7-1.4 .4-.2-2.6 1.4-2.3z M391.2 143.9l-.2-1.6 1.3-.5 1.2 .9-.8 1.5z M523.6 76.8l1 .4-.2 .7-.9 .3-.6-.7z M357.8 148.6l-.8-.2-.2-1.3 .7-.5 .3 .8z M521.7 236.9l1.4-1.2 2 1.5-1.5 1.8-1.7-.3z M386.1 95.7l-.2-1 .5-.7 .9 .3-.3 1z M326.1 67.8l1.6-1.8 .3 2.6-.4 2.4-2-1.1z M485.3 211l.6-.4 .5 .3 .2 .7-.8-.1z M217 188.2l-.2-.6 0-1 .8 .3-.2 .9z M441.3 22.3l.8-1.6 2.2-.5-.1 2.8-1.9 1.9z M530 232.4l.9 0 .2 1.3-1 .6-.8-1.1z M404.2 17.2l-.3 2.3-1.7 1-1-2 1.3-1.1z M354.2 290.9l-1.6 .8 0-2.9 1.3-1.9 1.2 2.3z M328.1 382.9l-1.4-1.6-.6-1.9 2.3 .4 1 1.2z M381.3 260.4l.9-1.5 2.7 .5-.3 1.4-2 1.1z M358.5 333.9l.3 1.7-2 1.1-1.9-1.6 1.3-2.1z M236.3 320.9l1.4 1.4-.8 1.4-1.8 .4 0-1.8z M150.9 174.1l-1.6 .3-1.2-1 1-1.4 2.1 .6z M481.2 361.4l-2.3-.1 .1-1.7 1.7-.3 2 .7z M226.1 149.4l-1.1 .5-.8-.6 .4-.7 1.1 .2z M461.9 278l-1.1 .7-1-.7 .5-.7 1.2-.2z M78 41.7l-1.2-.1 .1-1.2 .8-.5 .7 .8z M332.4 361.1l1.9 .5 .4 1.3-1.8 .6-1.4-1.1z M380.5 161.6l-.6-.3 .3-.6 .5-.3 .4 .7z M134.2 131.5l-.4-1.3 1.7-.1 1.6 .3-.9 1.1z M590.1 18.2l-.7-.3 .8-.5 .7 .3 0 .6z M165.7 148.4l1.2 2-1.8 1.3-1.3-1.3 .1-2.5z M228.8 38.3l-.8 1.3-1.8 .7-.9-2.1 2-.4z M389.1 178.3l1-.2 .1 1-.8 .2-.9-.4z M177.9 267.3l-.2 1.6-1.6 .8-1.9-1.1 1.7-1.1z M576.1 139.8l0-1.5 1.2 .2 .6 .8-.6 1z M260.1 314.6l.2 .5-.4 .6-.5-.6 .3-.5z M335.1 265.4l-1.1-2 .3-2.5 1.5 1.3 .9 1.6z M185 155.2l.8 .5 .1 .9-1.2-.3-.7-.6z M589.8 4.9l-.6-1.5 1.1-1.4 1.6 1-.4 1.7z M266.4 214.6l-1 .6-.9-.9 .5-1.3 1.4 .5z M406.9 213.9l-2.5 .6-2.7-1.4 2.4-1.6 2.8-.5z M326.3 125.2l-2 .3-.5-2.4 1.8-.3 1.5 .7z M153.4 33.4l.4-1.7 1.9 .2 .7 2-1.9 .8z M234.9 120.6l-2-1.3 1.6-1.2 1.7 .1 1 1.5z M431.5 347.6l.7 1.3-1.3 .6-.7-1 .4-1z M286.1 222.8l0-1.1 1.3 0 .2 1.2-.9 .5z M206 264.8l.4-.4 .6 .3-.2 .6-.7 .1z M401.1 328.5l1.4 1.4 .1 1.8-1.7-.4-.7-1z M278.9 149.1l1.6-.1 .1 1.7-1.3 1-.9-1.3z M560.6 57.8l-.9 .6-1-1.2 1.1-.8 .9 .2z M190.2 158.7l-.1 .8-1 .3-.6-.7 .7-.5z M395.2 297.2l1.1-.9 0 1.6-.5 1-1.2-.5z M259.4 89.1l-1.3 .8-1.2-.3 .4-1.6 1.4-1.3z M323.1 245.4l-.3 1.3-1 .7-.2-1.3 .4-1z M209.2 239.1l.6-1.2 .9 .6 .2 2.1-1.5 .4z M327.2 173.6l.2-1.9 1.7-.8 1.2 2.1-1.5 2.1z M364.8 150.9l-.3 .6-.8 .3 .1-.9 .4-.4z M149.8 97.9l.7 1.5-1.4 .8-1.7-1 1.1-2.1z M303.7 180.8l1.1 .4 .2 1.6-1.4 .7-1.4-1.6z M154.1 52.6l-1.4 1.2-1.6-.7 .3-2.6 1.6 .3z M402.2 366.5l-.6 1.6-1.6-.6 .1-1.1 .9-.6z M332.9 361.9l.8-.1 .3 .7-.6 .5-.4-.5z M337.9 131.8l-1.6 1.3-1-2.5 1.7-1 1.1 .8z M369.9 135.7l-.5 .7-.6-.4 0-.7 .6-.2z M500.7 176.2l1.8 .9-.3 1.5-1.3 .6-1-1.3z M330.1 323.5l1.5 1.6-1.4 1.4-1.4-.2-.5-1.9z M424.7 343.3l.9-.7 .9 .3 .1 .8-1.2 .8z M139.2 167.7l-.2 2-2.2 0-.7-1.4 1-1.7z M306.5 199.3l1-1.3 2.2 .8-.7 1.8-2.2-.1z M307.9 58.9l-.3 1.2-1.6-.2 .1-1.1 .9-1z M403.4 241.5l-.1-1.7 1.5-.6 .2 1.6-.5 .8z M387.9 196.1l-.9 .6-.6-.7 .3-.7 .7 0z M272 104.2l-2.5 .5-1-1.3 .6-1.6 1.9 1z M560 139.8l.6 1.2-1.1 .6-.8-.8 .4-1.1z M364.3 121.8l-1.5 .7-1.1-.3-.8-.9 1.8-.3z M548.3 97.8l1.1-.5 1.1 .8-1.2 .5-1.1 0z M108.8 16.3l-1.4-.7-.8-1.4 2.3-.2 .7 1.2z M307.3 193.7l.1 1-.6 .6-.7-.7 .5-.7z M216.1 40.5l-.7-2 .5-1.7 1.7-.1-.3 2.3z M439.1 281.4l-.8 1.7-1.9 .2-.6-2.6 2-.4z M251.4 318.4l1.7 .9-.4 2-1.6 1.3-.6-2.4z M285.3 198.2l.8 .3 .1 .6-.7 .1-1-.4z M434.2 318.4l-1.5 1.5-1.2 0-.6-1.6 1.4-1.2z M219.4 163.6l-1.8 .4-.4-1.7 1.2-.8 1.6 .6z M279.8 59.2l.7-.9 .6 .7 .2 1.1-.9 0z M380.1 147.5l.4 .8-.7 .8-.9-.6 .3-1.3z M61.7 77.3l.9-2.5 1.7-.5 .8 2.8-1.6 .6z M297 309.8l1.2-.7 2.1 0-.6 1.5-1.9 .5z M544.1 100.8l.7-1.3 1.6 .1-.2 1.5-1 .5z M215.9 195.2l0-.9 .4-.9 .6 .7 .1 .9z M227.1 149.4l-.7-.4 .5-.8 .6 .1 .1 .7z M231.6 248.8l.6 1.2-1.7 .3-.5-1 .6-.8z M379.8 326.4l-1 0-1.1-1.1 1.6-.8 1.3 .9z M248.6 121.5l-.5 1.5-.8 .4-1.1-1 1-1.2z M164.1 32.4l.8 .1 .1 1.2-.6 .5-.5-.8z M250.3 223.5l-1.1-.4 0-1.6 1.8 .5 .2 1z M274.7 152.2l.7 1.2-.7 1.1-1.2-.4 0-1.6z M349.5 240l.8 1.1-.8 .8-1 .1 .3-1.1z M413.8 205.5l.9 1.4-1.6 .8-.9-1.3 .6-1.4z M347.4 279.5l1.3-.4 .6 .9-.5 .7-1.5 .4z M403.2 272.5l-.2 .6-.7 .1-.7-.5 .7-.8z M513.7 203.9l1.2 0 .3 1.2-.9 .6-.6-.7z M451.9 128.8l-1.6 .2-.6-1.2 1.2-.8 1.7 .5z M234.3 242.2l0 1.5-1.3 .7-.7-1.4 .8-.9z M214.5 134.4l.4 1.8-.6 1.2-1.1-.4-.2-2.2z M434.5 197.5l-.9-1 .4-1.4 1.1 .1 .5 1.5z M271.4 333.4l0-2.2 1.3-1.1 2.2 1.2-1.2 3.1z M244.7 340.2l-.5 1.6-1.6-.5-1.2-1.2 1.9-1.1z M479 181l.3-1.5 1.9 .7 .6 1.2-1.9 1.1z M346.9 367.2l-1-.1-.5-.9 .6-.9 .9 .5z M548.3 200.4l-.5-.3-.4-.7 .6-.7 .5 .7z M308 251.6l1.6 .5 .7 1.6-3.3 .2-1.5-1.6z M236.4 110.9l2.9 .4-.2 2.1-2.2 1.2-1.4-1.8z M508.8 111.6l-.6 1-1.2 .5-.6-.9 .8-.8z M320 15.2l-1.7-.7-.1-1.3 1.5-1.3 .8 1.7z M181 180.5l-.3 .9-.6-.4-.5-1.1 1 0z M529.6 213.6l.6 2.9-2.1 1-2.1-1.8 1.5-2.6z M499.3 3.9l-2.4-.4 0-2.6 1.8-1.4 1.5 1.9z M310.1 312.9l.9-1.4 .8 1.6-.2 2.2-1.4-.7z M241.1 300l-.5 1.4-.9-1-.1-1.3 1.2-1.1z M424 241.5l-.2-1 .6-.9 .4 1-.2 1z M530.2 229.6l1.5-.7 .6 1.3-1.1 1.1-1.4-.8z M425.1 293.2l1.9 1.2-1.3 1.3-1.4-.2-.9-1.2z M590.4 26.4l.8-.1 1 .6-1 .6-.8-.4z M316.5 362.2l-1.4-.5-.5-1 1.5-.6 1 .9z M319.3 232.8l1.1-1.6 1.3 .5 .7 1.2-1.4 .3z M457.8 279.2l2.2-.1 1.9 .9-1.7 1.2-1.8 0z M111.4 13.6l-.7-.3-.2-.7 .7-.4 .3 .7z M263.1 2.1l-1 .4-.3-.7 .5-.4 .6 .1z M152.1 41l-.3-1.4 .5-.8 1.3-.2 .1 2z M376.1 355.3l-1 1.2-1.1-.7-.3-1.7 1.5 .1z M409 348.6l-1.1-.9 .8-.9 .9 0 .4 1z M296.1 359.2l.8-.3 .3 .7-.7 .4-.9-.1z M211 168.9l-1.4 .9-1.7-1.1 .9-2.2 1.8 .7z M406.1 4.4l1.7 .2-.7 1.1-1.1 .6-.8-1z M585.8 101.7l-2.4 1.9-2.4-2 1.2-2.3 3-.5z M105 38.7l0 1.3-.8-.1-.3-.7 .3-1.1z M508.4 163.3l-.4 .6-.9-.2 .2-.7 .7-.2z M89.1 84.5l.2-.9 1-.1 .3 1.1-.9 .3z M279.5 48.1l1.5 .8-.3 1.9-1.5 .1-.7-1.5z M159.5 133.3l-1.8 0-.9-1.5 1.5-.5 .7 .5z M276.1 252l.3 .7-.9 .5-.7-.6 .3-.5z M357.6 193.2l-.5-.8 .5-1.1 .7 .8-.1 .8z M542.2 62.9l.9-.2 .4 .7-.8 .5-.9-.4z M296.9 77l-1.2 2.6-2.5-1.3-.9-2.4 2.9-.8z M238.5 297.3l1.4 1.1 .1 1.7-2.3 .9-.1-2.2z M572.4 118l-2-.6-.9-1.1 2.1-.9 1.7 1.2z M183.5 237.8l1.5-.6 .7 1.3-1.3 .8-1.6-.6z M372 278l1.7 1.5-.1 2.2-1.9 .3-.4-1.8z M402.8 356.7l.9-.5 .6 .7-.1 1.3-1.1-.1z M343.8 199.9l-1.2 .3-.4-.8 .2-.7 1.3 .1z M467.4 150.3l1.7 1.5 .4 2-2.1 1-1.8-2.2z M539.4 19.9l-1.2-.6-.6-1.2 1.6 .2 1.4 .5z M537 146l1.6-.6 .8 1.2-1.1 1.5-2.5-.8z M469 48.1l.6 1.7-1.1 .6-1.3 0 .3-1.8z M523.8 109l-1.5 2-1.7-1.9 1-2.4 1.5-.1z M527.4 206.3l.6 .8-.4 1-1.3-.2 .2-1.1z M520.5 27.3l1.2-.9 1 1.2-.7 1.3-1.1 .3z M413.6 142.1l-.7-.5 .7-.6 .6 .5 .3 .6z M336.2 256.9l-1.1-.5 .6-.8 1-.1 1.2 1z M333.1 32.4l-.4 1-.7-.8 .2-.7 .8-.3z M174.2 233.1l.2-.4 .8-.1-.2 .8-.6 .4z M130.3 132.9l.9-1.4 2.2-.2-.4 1.8-1.3 1z M317.7 19l-.7-1.4 .7-1.3 .8 .7 .3 1.2z M575 56.6l2.3-1.8 1.4 2-.3 1.8-1.9-.1z M344.7 230l1.3-.5 .5 2-1.2 .6-1.3-.4z M85.7 38.7l1.7 1.3 1 1.8-1.6 1-1.1-1.3z M538.3 111.8l-.2 .8-1.1 .5-1-1.2 1.4-1z M179.6 59.8l2.2 .1 1.1 .7-1.2 .6-2 .1z M511.6 202.8l-.9-.8-.3-1.6 1.9 0 .3 1.5z M190.9 69.6l-.5-.7 .6-.3 .8 0-.3 .6z M469.8 38.5l-1.6-.3-.5-1.5 .8-1.8 1.2 1.6z M384.5 342.1l.7-1 1.5 .6-.5 1.6-1.8 .4z M437 169.9l1-1.9 1.6 1.2-.3 1.5-1.3 .6z M147.5 52.5l-.8-1.2 1.1-.8 1.3 .5-.2 1.5z M512.8 164.6l1.3-1.3 .9 1.4-.2 1.2-1.6 .5z M318.6 138.3l1.9-.2 .1 1.1-.7 .5-1.8 0z M276.6 266.9l.9-1 .8 1.1-.3 1.1-1.6-.1z M111.6 101.8l-.5-.2 .2-.5 .4-.3 .4 .6z M452.2 103.8l1.4 1.1-1.4 1.1-1.6-.2 .1-1.6z M431.5 241.9l-.7-.4-.4-.8 1-.4 .9 .8z M394.6 350.3l-1.1 .2-.7-.9 .7-1.2 1 .8z M191.7 131.8l-3.6 .4-.6-1.8 1.3-1.7 2.2 1.3z M450.5 228.8l-.3 1.6-.9 .3-.5-.8 .2-1.5z M429.2 340.3l-1-.1-.6-.6 .9-.5 .6 .4z M208.3 109.1l-.1 .6-.5 .4-.7-.4 .5-.8z M164.7 15.2l.9 .6-.4 .9-.7 0-.3-.7z M261.2 312.9l.7-.2 .4 .8-.4 .6-.5-.3z M525.9 214.9l.1 1.6-1.1 1.7-1.4-1.7 .8-1.6z M150.9 138.6l0-1.3 .9 0 .5 .5-.4 .8z M151.1 168.1l.1-.7 .6 0 .5 .8-.8 .6z M339 298.1l.2 .8-.3 1-.6-.7-.1-1z M560.5 151.2l-.4 .6-.5-.4-.1-.7 .8-.3z M229.2 86.7l.5 .7-.3 .8-1.5 .1 .3-1.3z M326 148.3l.7 .2 .4 .7-1.1 .2-.3-.6z M363.5 344.6l-1.5 1.3-2.4-.5 1.1-2.1 2.1-.9z M363.3 336.7l-1.9 0-1.5-1.6 1.9-1.8 2.6 1.2z M397.7 32.3l-.4-.6 .1-1 .6 .3 .4 .9z M419.9 110.3l-.8 .2-.5-.2 .1-.6 .8 .1z M227.9 79l-.5 .7-.5-.6 0-1.2 .7-.1z M137.6 145l-.1 1.1-.9 .5-.7-1.2 .9-.5z M544.4 217.1l-1-.7 .8-.7 1.3 0-.1 .9z M193.3 111l-1.3-.1-1.2-.7 .9-1.7 1.7 .7z M211.9 274.3l1.6-.2 .1 .9-.7 1-1.4-.8z M508.6 219.2l-1 .7-1.1 .1-1.3-.8 1.8-.8z M328.8 231.6l1.2 .4 .8 .6-1.1 .3-.9-.3z M279.4 159.3l-.3 1.4-1.4 .5-.8-.8 .2-1.3z M330.2 369.3l-.5-.4 .1-.7 .6-.6 .1 1z M254.9 170.3l.6 .8-.8 .9-1.1-.6 .3-1.3z M134.3 115.9l-.9 1.2-1.6-.1-.1-1.5 1.5-.8z M367.1 136.4l-1.2-1.8 .5-2 1.9 .3 .1 1.9z M146.2 151.5l-2-.1 .6-2.6 1.7-.2 1.2 1.7z M275.8 113l1.3-.6 1.2 1.3-1 2-1.7-.8z M489.7 236.2l-1 1.3-2.5-.5 1.3-1.5 1.3-.5z M342.5 320.3l-.7-1 1.5-.5 1.7 .5-.1 1.7z M378 267.8l.4 1.3-.6 .7-1 .1 .3-1.6z M481.7 223.1l.8 .5 .6 1.7-1.4-.4-1.1-.9z M345.6 207.1l.4-.8 .6 .2 .3 .6-.6 .4z M435.1 368.6l-3-.6 2.2-1.9 3.3-.2-.7 2.2z M254.8 197.1l-.2-2.5 2.5 .1 .3 2.5-1.4 2.1z M311.9 311.4l.4-.6 .8 .4-.1 1-.9-.2z M414.4 43.8l1.9-1.6 1.5 1.9-.4 2.4-2.2-1z M267.5 322.5l0 1.3-1.5 .5-.8-1.4 1.2-.8z M219.5 157.6l-.2 1.1-.9-.2-.3-1.3 .9-.8z M119.5 181.6l.9-1.5 2.4 .4-.2 1.1-1.3 .8z M535.8 93.6l-1.8-1.8 2.1-1.6 2.9 .6-.9 2z M143.8 148.4l1.4 .1-.2 1.4-1.8 .1-.5-1.2z M290.2 287.1l-.4-1.3 .6-.6 .6 .3 .2 1.3z M232.9 355.3l1 0 .4 .8-1 .2-.6-.3z M130.4 76.7l.7-.5 1 .2-.2 .6-.9 .2z M454.9 357l.8-1.2 .9 .7 .6 1.2-1.3 .2z M434 213.9l-.7-1.3 .8-1.3 1.3 .7 0 1.8z M97 54.4l.5 .3 .4 .8-1.1 .3-.1-.9z M495.1 367.6l.5 1.4-.2 1.4-1.6-.1 .1-1.8z M246.4 351.7l-1.1 .5-.2-1.5 .7-1 1.4 .5z M184.5 144.2l2.1 .3 .5 2.3-2.7 1.2-2.1-2.2z M240.7 170l.3-.9 1.5-.1 .4 .7-.9 .5z M365.3 143.4l1.3 2.2-1.1 3-2.1-1.7-.6-3.3z M229.1 55.1l1-.5 1 .6-.3 1.3-1.1-.4z M143 165.3l-.4-.9 .4-.6 .8 0-.1 .8z M360.3 311.6l-2.2-1.1 1.2-1.8 2.1-.4 .2 1.9z M163.6 122.2l-1 .4-.5-1.7 1-.7 .5 .9z M330.2 320.4l1.3 .6-.3 1.6-1.1 .2-.2-1.2z M409.2 327.5l-.3-.7 .6-.3 .5 .5-.1 1z M387.3 366.7l-2.3-.4 .1-2 1.5-1 1.5 1.3z M131.1 116.6l1-.5 1.4 .3-.7 1-1.4 .2z M500.2 192.4l-.9-.5 .6-.9 1-.2 .2 1.2z M320.6 281.8l0 1.6-.9-.2-.6-1.1 .8-1.2z M440.1 219.9l-1.5-.4 .1-1.2 1.3-.2 1 .8z M480.4 21.6l-.3 1.1-1-.4-.5-1.1 1.2-.5z M383.4 93.4l0 1.3-1.7-.2-1-.9 1.3-1z M321.1 67.3l0-1.4 .5-.4 .5 .4-.3 .9z M506.1 171.8l-.6 .8-.6-.4 .1-.6 .4-.2z M435.4 297.9l-1.1 .5-.6-1.4 .7-.6 1-.2z M327.2 86.3l.8 .8 .5 1.8-1.2 0-.9-1.1z M213.8 48.5l.6-1.7 1.5 .2 .8 1.5-1.4 .8z M199.7 307.6l-1 .5-.7-1 .9-.4 .9 .1z M302.6 54.1l-1.7-.3-.8-1.9 2-1 1.4 1.5z M127.9 168.2l-.5 1.3-.9-.1-.8-.8 .9-1z M199 7.5l2.1 1.8-1.7 1.6-2-.2-.3-1.7z M163.7 151.4l.4 2.4-2.4 1.2-.6-2.3 .2-2.3z M80.8 90.9l-.1-1 1.3 .1 .1 1-.7 .6z M339.6 177l1.4 1.1-.9 1.5-1.3-.6-1-1.5z M370.8 53.2l.2-1.5 .7-1.5 1.1 1.3-.8 1.3z M150.8 122.4l0 2.1-1.1 0-.8-.8 .7-1z M431.6 107.3l1.9 .1-.4 1.8-2-.3-1.3-1.2z M140.6 152.1l1.7 1.3-1.7 1.1-1.1-.3-1-1.8z M344.6 371.7l1.3 0 .2 .9-.7 .6-.7-.5z M343 289.3l1.2-.2 .7 1.2-.9 .7-1.1 0z M500.3 337l-.5 .6-.6-.5-.3-.8 1.1 0z M161.6 59.6l-.8-.3 .2-.8 .8-.1 .3 .6z M491.8 162.2l.9 .3 .5 1.4-1.2 0-.8-.6z M427.9 117.8l-.8-.9 .9-.8 1.9 .2-.4 1.3z M213.8 54.7l.3-1.5 1.2-.2 .7 .6-.3 1.2z M204.6 165.8l.4-1.2 1.3 .2 .6 .8-1 .4z M417.8 213l.4-1.1 1.5 .2-.2 1.1-.8 .3z M171.3 113.4l.3-.7 1-.7 .3 1-.3 .8z M115.5 161.1l.6-.7 .9 .5 .1 1.1-1.3-.1z M408.5 277.9l1.3 .8 .4 1.7-2.1 .5-.8-1.7z M131.7 123.8l-1.5 .3-.8-2.3 1.7-.6 .8 1.1z M209.9 8.3l-.4-1 .9-.7 1 .7-.7 .7z M200.9 264.3l-1.8-.3-.2-2.1 1.5-1 .5 1.6z M340.9 104.3l1.4 1.1 .4 1.3-1.6 .1-1.5-.9z M145.1 162.1l.7-.3 .2 .9-.3 .5-.8 0z M87.8 64.5l-1.7 .8-.8-1.2 .3-1.2 1.4 .2z M484.2 88.2l-.8 .2 0-.9 .4-.4 .4 .4z M391.9 198.6l-.8 .2-.4-1.1 .9-.8 .5 .9z M357.3 269l-1.2-.8 1-1.5 1.7 .7-.5 1.4z M409.7 49.6l.5 1.3-1.5 1.6-1.6-1.7 .5-2.3z M336.8 65.4l-1.4-.6 1-1.4 1 .1 .3 1.3z M214.3 253l-1.4-.1-.1-1 1-.5 1.2 .6z M436.1 142.9l1-1.4 1.3-.3 .8 1.3-1.3 1.6z M152.9 184l-.7-.1 .2-.5 .8-.4 .1 .7z M169 122.6l-.4 1.6-1.5-.7 .4-1.6 1-.3z M355.9 61.1l.3 1.7-1 1-1.3-.7 0-1.5z M305 198.9l.2-1.4 2.1-.4 .6 1.3-1 .7z M56.8 52l.8-2.9 2.2 .4 .7 2.8-1.9 .7z M126.8 45l-.7-.3 .4-.5 .5-.1 .4 .5z M256.7 268.1l0-1.3 .9 .4 .6 .9-.8 .9z M168 130.6l.5 .4-.2 .9-1-.2 0-.9z M148 122.8l-.6-.9 .5-1.1 .7 .5 .2 1.1z M116.7 66.8l-.1 .6-.8 .3-.3-.7 .5-.7z M412.4 370.2l-.9-.5 .1-1.2 1.1 0 .8 1.1z M196.3 93.2l1.3-.2 .2 1.6-.8 1.9-1.6-1.5z M338.3 298.8l-1.3 0 .4-1.4 .8-.6 .8 1z M255.8 300.6l-1.4 .9-.4-1.9 .9-1.2 1.7 .5z M314.1 371.2l1.6 .7-.4 2.4-2-.3-.4-1.8z M75.8 71.8l-.4-1 .3-.8 .8 .2 .6 1.1z M99.7 70.4l-.9-1 1.2-.6 1.4 .2-.4 .8z M215.5 87.1l-1.1 .4-1-.7 .7-1.1 .8-.1z M163.4 204.4l-1.2 1.1-1.5-.7 .7-1.1 .9-.2z M446.8 207.9l-1.1 1-.8-1.1 .7-.7 1.1 0z M167.6 96l.8 0 .4 .8-.7 .6-1.2-.2z M183.8 239.7l-.9-.4 .2-1.5 .8-.3 .5 1.1z M85.3 59.2l-.8-.7 .3-1.3 1.1-.1 .3 1.6z M281.4 147.4l-1.4 .9-2.6-.4 .9-1.5 2.5-.3z M365.1 373.1l-1.1-1 1.3-1.2 2 .8 0 1.3z M446.1 349.2l-.1-1.5 1.3-.2 .7 1.7-1.1 .9z M105.7 75.9l.4 2.4-1.3 1.2-1-1.4 .4-2.3z M202.6 70.1l1.5-1.1 1.2 1.1-.5 .9-1.5 .3z M117.9 60.9l-.9 1.2-1.1-.5-1-1.7 1.9 .1z M180.2 86.6l-.2-1.8 2-1.7 1 2.5-1 1.9z M201.2 93.6l.7 .5-1 .5-1-.4 .6-.5z M144.9 174.9l-.2-.6 .3-.5 .6 .2-.1 .8z M256.3 178.6l.9-.3 .5 .6-.2 .6-.7 .1z M480.1 53.1l1-.9 .5 1.4-.7 1-1.4-.2z M112.1 6l.8 .3 .1 .8-1.4 0-.4-.7z M307.7 12.5l1.4-.9 2.1 .9-1.5 1.6-1.5-.5z M266.3 145.1l1-2.6 2.2 .4-.1 2.8-1.4 .2z M209.1 235.9l.1-1.3 1.7-.2 1 1.3-1.5 .6z M228.9 162.8l1-1.9 2.6 .1-.8 2.2-1.4 1.4z M378.9 167.6l.5 .3 .2 .5-.7 .4-.5-.7z M445.1 15.3l.1-.5 .7-.3 .3 .7-.5 .7z M448.5 253.6l1.8-2.1 1.7 1.8 .4 2.5-2.5-.3z M291.4 225.8l-.4 1.3-.9-.5-.3-1 .9-.7z M573.7 46.8l.4 1.1-1 .9-1.2-.8 .8-.9z M308.8 167.5l-1.7 1.1-1.9-1 1.1-1.3 1.9-.3z M233.7 349.3l1.3-.5 .6 1.2-.6 .9-1.4 .1z M76.9 86.4l.9 2.2-.6 1.4-1.6 .3-.4-2.2z M442.4 345.8l-1.8-.3-.3-1.6 1.6-.9 1.5 1.2z M485.5 111.7l-.6-.6 .6-.6 1.2 .1-.4 .9z M213.1 324.9l-.7 .9-.7 0-.4-.9 .9-.8z M172.1 183.6l-.1 1.1-1 .1-.4-.8 .5-1z M572.5 36.9l-.9 .6-1.8-.1 .4-1.3 1.7-.1z M312.5 279.1l2.3 2.4-1.2 2.8-2.7-.7-.1-2.1z M77 22.2l-.9-.1-.2-.9 .9-.4 .6 .7z M261.8 253.1l1 2-1.7 1.7-.9-2 .1-1.8z M275.4 219.7l.3 .9-.2 .8-1 .1 0-1.4z M137.2 15.9l-1.2-.3-.2-.7 .9-.4 1.1 .4z M538.2 42.3l-1.1-2.1-.2-2.4 1.9 .7 .3 1.6z M175.9 20.7l0-1.2 1.4-.2 .7 .6-.2 1.1z M306.5 341.9l-1.2 .2-.7-.8 .7-1 1 .6z M80.5 67.6l1 .6-.2 .7-1 .6-.6-1z M290.2 287l-.1-1.5 1.1-.1 .4 .7-.2 1.1z M473.1 178.4l.6 1.8-.4 2.6-1.9-1.1 .5-2.3z M195.4 205.7l1.1 .8-.7 1-1.2-.2 .1-.9z M359.9 193l-1.8-.4-.3-1.5 .8-1.5 1.6 1.1z M478.9 165l-1.1-1.5 1.2-1.6 1.1 1.2 .2 1.3z M240.4 201.8l-.2 1.5-1.4 .2-1-.6 .5-1.1z M358.3 156.6l.5 .2 .2 .6-.4 .4-.6-.3z M230.1 307.2l-1.3-1 .3-1.4 1.4 .1 .9 1.2z M478.4 187.9l.9-2.2 1.8 1.4-.9 2.3-1.3 .5z M141.7 68.8l2.5 .7-1.3 1.6-2.5 .8 .1-1.9z M162.4 13.3l1 1.1-1 .8-1.5 .2 .2-1.8z M219.2 156.7l-.3 .8-.9-.4 0-1.2 .9 .2z M386.1 183.7l.7 .9-.2 1.1-.9-.1-.6-1.2z M182.4 181.9l-.6 .2-.6-.5 .6-.6 .5 .4z M339.8 43.6l.5-1 .7 1-.4 1.2-.8-.4z M356.3 6.4l2.2 .9 1.2 2.1-2.3 1.3-2-1.7z M378.1 263.3l.8 .1 .4 .6-.6 .5-.6-.3z M226.3 165.7l.1 1.8-1.3 1.1-1.9-1 1-2z M442 373.9l-.8-1.2 .9-1.7 2.6 .9-.9 1.7z M544.5 174l-.7 1.6-1.9-.4-1-1.2 1.8-.8z M224.9 161.6l.8 .8-.5 .8-1.6 .1-.1-1.2z M337.2 297l1 .5-.7 .8-.9 .1-.1-.9z M578.4 86.4l-1.1-.9 .1-1 1.2-.7 .6 1.3z M518.9 159.6l.8-1 .9 .8 .2 1.2-1.2-.2z M483.3 226.7l-1.9-1.5 1.6-1.8 1.5 .3 .9 2.1z M393 94.5l-1.1 1.2-1.2-.7-.8-1.5 1.8 0z M508.6 213.6l.9 0 0 1.1-.8 .6-.5-.9z M131.3 180.4l.9-.2 .4 .8-.8 .6-1.2-.3z M230.3 338.8l-1.6 0-.1-1.2 1.2-.7 1.5 .7z M451.5 190.4l1.3-2.1 1.1 1.9 .3 1.9-2 .6z M440.8 277.2l-1.4-.5 .5-1 1.3 .2 1 .8z M152.5 84.9l-1.7 .4-.3-1.5 .7-.9 .9 .5z M397.1 21.9l.6-.2 .2 .7-.3 1-.6-.6z M93.7 3.1l1.4 0 .1 1.6-1.3 .7-1.2-1.1z M243.7 77.8l0-.9 1.3-.5 .4 1.4-.9 .9z M176.8 233.3l.7-1.3 1.8 0 0 1.3-1.1 .9z M410.1 235.3l1.2 1.3-1.7 .8-1.5-.5 .3-1.3z M454.9 273.6l1.1-.5 1.2 .2 0 1.1-1.3-.1z M227.4 224.3l.4 2.2-2.5 .2-1.5-1.1 1.4-1.1z M369.5 144l1-.3 .9 .6-.9 .6-.9-.2z M593.6 93l.7-.7 .7 .7-.3 .8-1.1 .1z M160.1 41.8l-.4 .4-.8-.3 .3-1.1 1 .2z M359.6 348.2l1.4 .5 .3 1.4-2.5 .2-.4-1.4z" fill="#fcf75a" fill-opacity="0.8"/>
<path d="M130.5 6.6l10.3-2.6 2.1 16.4-9.9 2.5z M132.5 10.1l6-3 3.2 16.9-6.7-.5z M131.5 2.6l8.8-.6 1 13.1-9.2 .8z M128.5 5.4l9.6-2.4 3.6 13.7-8.4 2.8z M133.3 9.7l7.8-1.1 2.2 16.8-8.3 .1z M131.9 5.2l5.9-1.5 4.8 13.7-5.1 3.1z M124.1 17l4.4 1-1.5 6.3-5.2-1.7z M122.7 18.8l4.5 .7-.9 3.7-4.1-.4z M123.8 18l4.5 1.1-1.3 4-4.4-1.5z M124.3 17.8l3 .3-.3 5-3.4-.1z M109.6 20.4l3.7 1.1-1 4.8-3.7-.8z M109.5 20.9l2.5 .3-.1 3.5-2.7 .3z M110.7 20.7l2.2 .3 0 3.2-2.3-.1z M110.6 23.2l2.1 .2-.2 3.3-2.2-.5z M90.2 6.9l7 2.4-1.8 8.2-6.6-2z M90.8 11.1l4.9 .5-1.1 6.5-5.1-1.3z M91.3 8.7l5.4 .4-.9 7.5-5.3-.7z M93.1 9.3l4.8 1.7-1.3 7.1-5.8-.9z M89.6 11.1l5.4 1-.6 5.3-6-.7z M89.8 8.8l5.2 1.5-2.1 6.7-5.8-2.5z M77.7 34.6l9.5-4.4 4.4 8.8-11.9 4.1z M81 36l6.2-2.6 2.8 5.6-6.9 2.3z M81.5 33.8l7.6-1.8 1.9 6.9-8 1.8z M81.1 32l7.3-1.9 2.3 6.7-7.1 2.1z M81.1 35.4l6.9-.8 1.5 6.7-6 2.4z M76.6 38.2l5-2.2 2.8 5.2-6.4 2.5z M90.3 34.4l9.4 2.1-1.9 6.1-10.1-2.8z M93.5 35l6.6 .9-.9 4.1-6.3-.7z M96 35.4l5.4 1.5-1.4 4.1-5.7-1.4z M93.5 38.1l5.4 1.4-.7 3.1-5.3-1.3z M89 35.6l8 1.8-1.2 4.8-7.2-1.6z M93.4 34.1l6.4 2.2-1.1 3.9-6.7-2.4z M47.9 18.8l5.2 1.6-2 5.3-5.1-.9z M47.4 18.7l4.5 .6-1.4 5.5-4.1-1.1z M46.8 22l4 1.1-.8 2.9-3.9-.9z M47.8 19.7l3.4 .2-.2 5.3-4.3-.4z M67 14.7l6.4 1-.6 3.6-6.5-.8z M66.4 15.2l4.8 1-.3 2.5-4.6-.5z M69 14.6l4.8 .6-.3 2.1-4.4-.7z M68.1 15.7l4.8 .9-.7 2.6-4.9-.7z M174 5.3l3.4-.3 .4 3.1-3.3 .4z M175.2 5l1.8-.4 .5 2.7-1.7 .4z M174.2 5l2.3-.2-.1 2.7-2.3 .1z M173.9 6.2l2.7-.3 .6 2.7-3 .3z M211.1 10.1l4.5-1.4 .9 4.3-4.8 1.2z M212.7 9.3l2.4-1.1 .9 3.8-2.7 .3z M212.6 10.4l4.1-.6 .2 3.5-3.9 .2z M211.1 9.4l2.5-.6 .5 2.3-2.5 .5z M91.7 65.8l6.8-1.3 .9 3.2-6.3 1.1z M92 66.1l3.5-1.2 .5 2.4-3.2 1.2z M93.8 65.9l3.2-.4 .6 1.5-3.5 .6z M92.7 65.7l3.8-1.5 .9 2.2-3.6 1.4z M111.9 75.9l6.7 1.3 .2 3.6-6.8-1.8z M110.8 75.7l4.3 1.1-.7 2-4.1-1.4z M115.1 76l4.6 .7-.2 2.5-4.3-.7z M112.9 77.2l5.8 .9-.9 2.5-5.6-.8z M113.2 75.8l5.2 1.4-1.2 1.9-5.3-1.4z M112.7 76.7l5.2 1.6 .1 2.7-6.3-1.8z M126.8 66.6l3.4-.9 2.1 6-3.4 .7z M127.5 66.8l3.3-.3 .6 3.5-3.2 .7z M126.6 68l1.7-1.1 2.5 5.7-2 .5z M126.7 68.8l2.7-.9 1.2 4-2.6 1z M128.6 66.8l1.8-1 1.3 5-1.8 .2z M128.5 67l2.3 .1 1 6-2.5 0z M161.3 80.6l5.7 1.7-.9 5.2-5.7-.6z M162.9 80.4l3.2 .7-.8 4-3.3-.9z M160.5 83.2l4.1 1.4-1.2 2.7-3.5-.7z M162.7 81.1l4 1.1-.2 3.3-4-.4z M146.8 84.2l5.2-.1 .1 2.6-5.9-.1z M145.8 84.5l2.6 0 .1 1.4-2.8 0z M148.4 84.6l3 .3 0 1.7-3.2-.5z M145.6 84.6l3.8 .4-.1 1.5-3.7-.5z M192.9 87.2l5.2-1.2 .1 2.4-4.9 1.3z M192.4 87l3.6-.9 .4 2.1-3.6 1z M194.1 88.6l3.5-1.4 .8 1.4-3.5 1.3z M194.8 87.3l3.1-.8 .4 1.4-2.6 1z M86.4 81.8l4-1.4 1.3 2.8-4.8 1.4z M89.1 81.2l2.4-.8 .5 1.7-2.1 .8z M87.8 81.8l2.3-.8 1.3 2.3-2.5 1.1z M86 81.6l3.1-.4 .4 1.8-3.1 .2z M233.2 1.1l4.6 1.8-.6 3.7-4.9-1.7z M235.4 3.1l2.3 .8-.6 2.3-2.6-.6z M234.6 3.6l3.5 .4-.3 2.5-3.5-1z M234.6 2.4l4.1 1.1-1.3 2.9-3.4-1.2z M233 14.7l3.1-1.1 1.1 9.6-3.8-.4z M232.9 15.9l2.8-.3 .2 5.6-3 .4z M232.7 16.3l3.1 0 1.2 5.5-3.2 .7z M234.8 15.3l2-.1-.1 6.1-2 .4z M233.1 15.8l2.3-.3 .1 4.7-2.4 .1z M233.7 17.4l2.8-.6 .7 7.3-2.6-.5z M257.8 4.8l2.7 .4-1.1 4.8-2.4-1z M258.2 5.9l2 .2-1.2 3.2-1.8-.2z M258.3 5.5l1.6 .4-.7 2.3-1.5-.6z M258.8 5.9l2 .3-.6 2.4-2.3-.4z M249.9 14.3l2.9 .2-.3 3.6-2.8 0z M250.1 14.2l2.2-.5 .4 3.5-2.5-.1z M249.4 14.3l2.6-.5 0 2.6-2.3 .2z M250.6 14.6l1.7-.1 .2 2.1-1.8 .4z M281.1 9.4l2.4-.7 .8 3.3-2.2 .7z M281.6 9.3l2.1-.5 .2 2.6-2 0z M281.7 10.1l1.8-.6 .8 2-1.8 .7z M281.1 10.4l2-.3 .5 2-2.2 .3z M304.2 6.4l5.4-1.7 1.8 4.2-5.5 2.2z M306.1 6.4l3.3-.9 .9 2.2-3.4 1.1z M304.1 5.5l3.5-.9 .8 3.1-2.8 1.3z M305.4 6.7l3-1.6 1.5 3.7-2.9 1.7z M409.7 23.1l6.7 .6-1.2 4.7-6.2-1.1z M411.2 23l5 .9-.5 2.7-5.3-1z M410.2 22.7l4.7 .1-.1 3.7-4.9-.5z M412.7 24.7l3.2 .6-.3 3.2-3.4 0z M365.8 43.2l4.1-.2-.6 4.6-3.8 .3z M367.4 44.4l2.8-.4 0 3.2-2.7 .1z M366.5 43.4l3.5 .7-.3 2.6-3.6-.8z M365.7 44.4l2.6 .3 0 2.3-2.8-.2z M367 50.9l3.9 .8-1 4-3.4-.3z M368.4 52.4l2.8 .6-.8 2.3-2.3-.7z M368.2 52l2.7-.2 0 2.5-2.9 0z M367.2 50.6l2.3 .5-.6 2.6-2.6-.4z M399.1 36.2l4.4 .8-.7 5.2-4.1-1.5z M399.5 37.1l3.5 1.1-1 3.8-3.3-.9z M400.6 38l2.6 1-.9 2.7-2.7-1z M398.5 37.6l2.8 .3-.4 2.7-2.6-.5z M297.5 82.9l6 1-.2 4.1-6.9-1.4z M297.6 83.6l5.2 .5-.2 2.9-6-.5z M297.3 83.3l5 1.6-1.1 3.7-5.1-1.9z M297.9 83l3.9 .2-.3 3.7-4.1-.7z M339.2 85.8l3.5-1.5 1.3 4.1-3.5 .7z M340.4 85.5l2.3-.6 .7 2.5-2.2 .7z M341.5 86.2l1.7-.7 1 3.3-2.1 .5z M340.2 85l3.3-.6 .1 2.3-3.1 .5z M368.6 12.8l1.8 .5-.9 3.1-1.7-.6z M369.3 13.2l1.1 .1-.7 2.3-1.2-.2z M368.6 12.2l1.2 .4-.5 1.9-1.3-.4z M368.7 12.8l1.7 .2-.2 1.9-1.7-.3z M346.6 29.2l3.7 .5-.6 3.4-3.7-1.1z M380.6 53.7l2.9 .7-.8 2.6-2.9-.5z M380.1 82.9l2.8-.8 1.4 3.5-3.1 1.1z M264.4 37.1l3-.9 .5 2.1-3 1.2z M237.8 62.2l2.5-.2 0 2.4-2.4 0z M240.9 78.3l3.5 .8-.9 2.9-3.6-.8z M394.1 62.7l3.5-.3 .3 4-3.5 .1z M406.5 59.4l3.3-1.1 1.2 3.6-3.7 1.2z M364.8 28.2l2.4 .1-.3 2.6-2.2-.2z M340 5.8l2.4-.6 .8 3.2-2.1 .9z M309.5 27.7l2.3-1 1 3.3-2.2 1.2z M393.9 84.3l2.7 .5-.2 2.7-3-.2z M321.4 65.7l1.8 .3-.2 2.4-1.7-.1z M246.9 8.3l2.6-.4 .6 2.9-3 .4z M490.3 46.7l6.7 .3-.7 6.9-6.9 0z M489.7 47.1l6.1 1-.9 5.2-6.8-1.4z M489 50.3l5.2-.3-.1 4-4.5-.2z M491.7 49.3l5.1 1-.5 4.7-4.9-1.2z M492.3 46l5.7 .6-.2 4.2-6.1-.8z M491.4 49.6l6.3 1.3-1 4-6.1-1.5z M488.7 59.9l4.7 .2 .7 7.3-4.9 .6z M490.7 61.4l2.9-.4 .9 7.1-2.8 .1z M490.3 62.4l3.5 .1-.4 5.6-3.3-.2z M488.5 62.3l3.6-1.3 1.1 6-3.5 .6z M490.2 62.5l2.7-1.1 1.2 6.2-2.6 .8z M489.1 62l2.7 .3 1 5.6-3 1.1z M497.1 73.2l4.3 .7-.9 13-4.4 1.1z M496.9 74.3l3.7 .6-.9 6.3-4.3-.3z M496.6 73.3l2.5-.6 .8 11.2-2.2 0z M496.9 73l3.2 .4-.8 10.3-3.5-1.5z M496.6 72l2.6 .8-1.5 10.3-2.5-.8z M496.3 76.5l2.5-.5 .2 8.1-2.3-.6z M502.2 32l5.1-1 .9 3.8-4.4 1.4z M504.5 31l3.8-.5 .1 2.6-3.6 .5z M504.2 31.4l2.5-.3 .4 3.5-2.7 .3z M503.5 32.3l3.4-1.3 1.3 3.5-3.7 1.3z M512.2 33l3.3-.8 1.3 3.1-4.2 1.2z M512.7 34l3.1-1.1 1.1 2.3-3.6 1z M513.1 32.8l3.1-1.2 .7 2.4-2.7 1.2z M512.1 33.4l2.6-.5 .8 2.6-2.7 .5z M523.9 40.6l3.7-.4 .2 3.6-3 .7z M525.2 40.4l1.9 .1 .3 2.7-2.1 .2z M524.1 40l2.7-.4 .1 3.1-2.8 .2z M525.2 40.9l2.5-.3 .4 3.4-2.4 .4z M492.6 36.3l2.6 1-1.1 2.9-2.6-.9z M492.8 37.3l1.2 .4-1.2 2.4-1.3-.2z M492.5 37l1.8 .4-.7 2-1.7-.5z M492 36.2l2.5 .7-.7 2.7-2.1-.6z M507.5 42.2l3.6 .5-.1 3.7-3.8-.7z M594 5.5l4.6 .7-1.8 5.8-4.9-1.4z M594.9 6.5l3 .2-.4 5.3-3.3 .2z M595.5 5.9l2.9 1.7-1.6 3.4-2.8-1.3z M595.2 6.1l3.2 .6-.8 3.4-2.9-.6z M576.9 17.4l6.2 2.1-.8 2.5-6.5-1.8z M577.1 17.9l4.7 2-1.2 1.5-4.1-2z M579.9 18.3l3.5 .6-.4 1.9-3.1-.7z M576.8 18.4l5.1 1.8-.8 1.8-5.2-1.8z M575.3 17.8l4.8 .9-.1 1.9-4.6-1.1z M576.5 17.9l5.1 1.1-.3 1.8-4.6-1z M576.3 36.2l7.7 0-.8 2.3-6.9 .2z M576.6 36.9l4 .1-.1 1.5-4 .3z M575.6 36.6l5.9-.7 .7 1.8-6.9 .7z M576.9 37.4l5.3-.8 .7 1.3-5.5 .9z M576.5 36.7l5-.6 .4 1.7-5.6 .4z M575.3 37l6.6 .6-.5 1.6-6.3-.6z M553.3 40.5l4.1-.4 .6 3.3-4.6 .5z M554.4 40.1l3.2-.1 .2 2-3.1 .1z M554.5 41.3l2.6-.4 .7 2-2.8 .7z M554 41.7l3-.7 .3 2.2-2.9 .6z M561.7 36.9l3.3 .6-.3 3.8-3.3-.7z M561.6 37.4l2.6 .6-.6 3.4-2.7-.4z M560.8 36.7l2.9 0-.3 2.4-2.6 .2z M562.2 37.9l2.8 .6-.6 2.9-2.7-.7z M586.3 44.8l4.4-1.5 .6 3.3-3.9 1.5z M587.8 43.8l3.4-.6 .4 2.5-3.3 .8z M586.5 45.5l3.2-1.1 .5 2-3.2 1z M588.5 46.1l2.2-.5 .7 1.6-2.6 .7z M564.1 27.8l3.4 .2-.1 2-3.7-.3z M564.2 27.8l2.1 .1 .1 1.3-2.2 .1z M564.2 28.4l2.4 .3 0 1.4-2.6-.3z M563.9 28l2.2 .5-.1 1.2-2.4-.4z M582.5 69.3l5.2 1.7-.8 3-5-1.7z M582 69.1l4.3 1.8-1.1 1.9-4.2-1.5z M583 71.4l4.3 .8-.4 1.8-4.7-1.3z M583.9 70l3.7 2-1.1 2.1-3.4-1.8z M532.6 4.7l3.7 1.1-1.1 3.4-3.3-.6z M533.5 4.7l2.3 .4-.4 2.3-2.6-.8z M532.9 5.9l3.1 1-.8 2.4-2.8-1.3z M533.6 5.1l3 .8-.8 2.1-2.9-.8z M492.7 3.1l4.5-.6 .9 3.9-5 1z M493.3 3l2.8 .1 .5 2.7-2.7 .1z M492.5 2.4l4.8-.1-.3 2.9-3.9 .1z M492 5.3l3.2-.2 .2 2.2-3.2 .2z M562.4 89.8l6.2 1.3-.6 1.8-5.7-1.5z M562.6 90.3l4.9 1.1 .2 1.1-5.2-1.1z M562.3 89.9l4.8 1.6-.2 1.4-4.9-1.5z M563.2 90.2l4 1.4-.6 1-3.7-1.2z M436.2 57l3-.5 .9 4.8-3.3 1z M436.8 58.5l2.9-.5 .1 3.6-2.6 .3z M436.1 57.3l2.5 .1 .2 4.2-2.7 .4z M436 57.8l2.6-.2 .3 4.4-2.7 .4z M453 52.1l3-.5 .5 3.2-3.2 .3z M472.8 83.7l1.8 .3-.5 3.8-1.8-.5z M473.4 84.5l.9 .3-.7 2.8-1-.3z M473.2 84.6l1.6 .2-.3 2.9-1.7-.1z M472.7 84.5l1.5 .2-.3 2.6-1.5-.3z M488.4 77.2l2.3 .5-1.2 3.7-1.9-.7z M487.9 78.5l2 .5-.6 2.1-1.7-.1z M489.4 78l1.3 .6-.5 2-1.3-.6z M488.9 78.5l1.5 .4-.2 2-1.8-.5z M92.7 92l4.6 1.8-.8 2.1-4.2-1.6z M92.6 93l3.3 .8-.6 1.3-2.9-.6z M94 92.2l3.6 1.1-.6 1.7-3.4-.9z M92 92.4l3.7 2-1.2 1.7-3.4-1.9z M111.6 102.6l3.6-1.3 .8 2.6-3.6 1.2z M111.8 102.1l2.4-.6 .5 2.4-2.2 .8z M111.7 102l3.2-.7 .6 1.9-3.2 .8z M111.2 102.8l2.4-.7 .6 1.2-2.9 .8z M138.4 97.9l4.2-1.2 1.6 6.3-4.3 1.3z M138.3 99.4l2.5-.6 1 3.4-2.8 .9z M140.2 99.8l3.6-.4 .9 3.6-3.8 .3z M140.7 99.3l2.6-.7 .8 3.6-2.8 .7z M150.5 108.8l3.7 .7-.7 3-3.9-.6z M149.9 108.5l2.4 .1-.3 3-2.6-.7z M149.5 109.9l2.5 .4-.2 2.1-2.2-.2z M151.9 110l1.9 .5-.1 2.1-2.2-.5z M160.9 108.2l5.2 1.5 0 2.4-5.5-1.6z M161.7 108.9l3.1 1.1-.8 1.5-3.1-.7z M162.3 108.3l4 .9-.8 2-3.5-.9z M161 108.8l4.6 .8-.3 1.4-4.2-.7z M173.1 111.5l3.6 1.3-1.4 3.7-3.7-1.4z M172.2 111.7l2 .6-1 3.3-2.1-.4z M173.2 113.5l3.3 .5-.9 2.9-2.8-.9z M172.4 111.2l3.3 1-.9 2.8-3.2-1z M185.4 92.3l2.4 .6-.7 2.9-2.1-.7z M189.4 107.5l2.3 .9-1.5 5.1-2.4-.9z M189.1 106.9l1.6 .1-.9 4.6-1.5-.4z M189.9 108.6l1.7 0-1 5.6-1.2-.9z M189.5 109.2l1.8 .2-.8 4-1.8-.3z M146.2 120.2l10.7-2.1 1 2.6-10.6 2.2z M145.4 120.3l8.5-1.2 1.1 2.2-9.5 1.1z M148.8 120.3l8.6-1.9-.6 1.9-8.1 2z M148.2 119.1l6.1-.8 .4 2.4-6.4 .9z M148.7 119.2l8.7-.9 .1 1.7-8.5 1z M147.4 119.9l7.2-1.2 .3 2.1-7.4 1.5z M153.7 123.8l5-.9 .1 5.4-4.7 .5z M154.9 124.4l3.3 .4-.1 3.4-3.2-.4z M154.9 123.4l3.1-.9 .4 4-2.7 .9z M154.8 125.9l2.9-.5 .7 3.3-2.8 .5z M117.2 131.7l3.5-1.7 1.8 5.6-3.2 1.4z M117.4 131.7l2.8-.8 .8 3.9-2.8 .8z M118.6 131.1l2.4-1 1.4 4.3-2.5 .9z M117.4 132.5l3.2-.8 1.3 2.6-3.3 .8z M126.4 135.1l8.3-2.5 2.5 7.7-7.5 3z M127.5 136.3l5.5-.7 .7 5.5-5.1 .5z M127.8 133.5l3.9-2.2 3.2 6.5-4.3 1.8z M127.8 136.2l4.1-1.2 1.3 6.1-4 .7z M127.8 133.2l7-1.3 1.9 6.2-6.9 2.2z M126.4 137.6l4.9-2.3 2.1 4.5-5.8 1.9z M181 121.9l2.9 1.2-1.3 3.2-2.4-1.3z M180.9 123.5l1.5 .2-.4 2.7-1.6-.3z M181.1 122.2l2 .6-.2 2-2.2-.6z M182.3 122.6l1.8 .7-1.2 2.4-1.8-.8z M194.4 125.5l3.5-1 .8 2.5-3.4 1.2z M196.4 126.8l1.9-.8 .9 1.4-2.2 .9z M194.5 125.8l1.9-.3 .6 2-1.8 .4z M196.3 125l2.4-.3 .3 1.7-2.3 .5z M182 131.2l3.9-.8 .4 3.4-3 1.2z M190.5 134.5l3.5-.3 .3 5.7-3.5 0z M192 134.7l2.1-.2 .4 5-1.7 .3z M190.4 134.4l1.7 .2 0 3.2-2 .2z M192.3 134.4l2.5 .3-.4 4.8-2.5-.3z M173.2 139.1l3.7 .3-.2 3.9-4.2-.8z M172.6 139.5l3.2 .1-.2 3.1-3.2-.2z M173.2 141.4l2.4 0-.3 2-2.2 .1z M174 139.4l3.2 .7-.2 2-3.4-.8z M179.5 143.8l15.3 1.7-.7 7.4-14.9-3z M186.5 145.5l8.8 1 0 5.4-10-2.2z M177.1 143.7l7.1 2.4-1 2.8-6.7-2.2z M178.8 143.1l8.3 2-1.6 4.7-8.7-2.1z M178.5 144.9l10.4 1.7-.1 4.1-11.5-2.1z M180.2 144.9l13.3 1.8-2.2 5.2-11.5-1.4z M187.8 148.9l8.2 1.2-1.3 4.4-6.9-1.1z M189.8 151.5l5.1 .8-.5 2.9-5.1-.9z M189.9 150.7l6.1 1-.2 3.4-6.6-1.4z M186.9 147.8l6.4 2-.9 3.5-6.2-2.2z M191.7 151.3l3.9 1.2-.5 2.4-4.1-1.1z M189.2 149.5l6.3 .2 0 3.3-6.6-.4z M124 147.9l5.1-1 .7 11.2-4.3 1.1z M127.4 146.8l2.8 .2 .1 8.9-2.8 .6z M126.8 150.3l2.9 .5 .8 7.4-3.1 .1z M125.5 151.5l3.4-1.2 1.7 8-3.2 .7z M126.4 149.6l3.3 .9 .5 9.7-3.5-.3z M125.5 147.6l2.8 0 .1 6.2-2.9 .1z M132.4 153.7l5.3 1.7-1.3 4.5-5.8-1.5z M132.5 153.5l4 .7-.6 3.6-3.6-.9z M134.5 154.6l3.1 1.1-1.4 3.3-2.5-1.2z M133.8 153.6l3.3 1.4-1.9 3.7-2.8-1.6z M115.4 154.3l4.1-.1 .1 6.1-3.9 .5z M116 155.2l3.3-.4 .7 3.8-3.3 .6z M115.3 154.7l2.2 .5-.5 4-2.1-.3z M116.8 154.6l3 0-.3 3.7-3.4-.6z M141 146.1l3.3-.4 .9 4.5-3.7 .4z M140.5 146.6l2.6 .3-.3 3.7-2.4 0z M141.2 148.1l2.7-.8 .8 2.9-2.8 .8z M140.8 146.8l3.4-.6 .9 3.3-3.4 .7z M144.3 157l7.7-.6 1.8 7.7-7.3 1.8z M145.6 156.8l4.2-1.2 1.2 5.5-4.4 .4z M143.8 159l4.1-.9 1.3 7.3-4.2-.2z M148.2 160.3l4.5-1.1 1.6 5.3-4.6 1.2z M146.5 161.2l4.3-1 1 4.4-4.1 .9z M146.7 156.1l5.7-.7 1.4 4.9-6.1 1.2z M166.7 163.2l8.6 .2-.9 2.7-7.1 0z M167.1 163.1l6.1 .1 .1 2-6.2 .2z M169.9 164.5l5.8-.8-.3 2.4-6.1 .5z M166.2 163.7l6.5 .1-.6 2.2-5.5-.1z M168 163.5l5.1-.1 0 2.4-4.8 0z M168.6 163.5l6.4 .9-.4 1.8-6.2-1.1z M184.5 161.5l9.6-3.5 1.9 4.6-10 3.6z M188.2 161l6.8-1.2 1.7 2.6-8.3 1.7z M184.7 160.6l6.3-1.7 1.9 3.2-7.3 1.7z M184.7 160.3l7.1-2 .7 2.8-7.2 2z M187.9 162.1l6.2-1.9 1.3 3.4-7.5 2.3z M188.3 162.8l6.9-3 .7 3.2-6.8 2.9z M185.2 165.9l2.7 .7-.2 6.7-3.2-.8z M185.8 168.5l1.4-.2-.2 5.7-1.5-.4z M185.3 167l1.4 .7-.7 5-1.6 .3z M185.2 168.6l2.5 0-.1 3.8-2.5 0z M147.5 170.2l6.4-1.6 2 9.2-6.9 1.2z M149.4 171.9l4.3-1.3 2.1 5.1-4.8 1z M147.8 171.3l3.3-1.4 1.3 6.7-3.6 .6z M150 172l4.8-1.1 .3 7.3-3.9 .5z M146.8 171.2l3.5-1.8 2 5.8-3.7 .5z M146.1 170.6l3.7-.8 2 8.2-3.4 .9z M112.5 177.2l18.3-6.3 .3 7.4-14.7 4.6z M111.2 180.2l12.3-5.6 1.9 3.4-12.8 6.1z M112.5 176.8l9.6-3.1 1.9 5.7-10.6 3z M121.8 176.3l9.7-4 .7 4.7-8.8 3.4z M111.5 177.7l10.2-2.6 .9 4-10.1 2.5z M116.8 176.6l12.9-4.5 2 3.9-11.8 4.6z M106.4 169.7l3.5-1.4 .6 2.9-3.3 1.1z M106 169.4l2.9-.8 .6 2.1-3.1 .9z M105.9 169.5l2.7-.7 .6 1.8-2.9 .9z M106.4 170.7l2.6-1.1 .8 1.6-2.9 1.2z M151.3 182.6l7.5-.5-.3 2.7-7 .5z M151.1 183.6l5.5-1 .5 2.2-5.6 1.1z M150.6 183.1l5.5-.5 .1 1.5-4.8 .5z M151.4 182.7l5.3 .3-.2 1.5-5.2-.3z M176.5 189.1l3.5-.4-.2 4-3.7-.3z M200.8 169.8l3.5 .1 0 2.3-3.8-.3z M208.4 177.6l6 1.7-1 2.9-5.5-1.7z M209.1 178.5l5.1 1.6-.7 1.7-5.4-1.7z M208.8 178l4.8 1.9-.7 1.7-4.8-2z M207.8 177.7l4 .9-.5 1.7-4-1z M224.1 179.7l7.3 1.1-.4 1.6-6.3-.8z M225.6 179.9l2.9 .6 0 1.6-3.6-.6z M224.7 179.9l5.5 .7-.2 1.2-5-.6z M226.3 180.3l4.9 .3 .3 1.4-4.8-.4z M208.9 146.6l3.5 .3-.2 4.6-3.4 .2z M209.9 148.4l3 .2-.5 3.2-3.2-.1z M208.4 148l2.9-.2-.2 3.9-3.1-.1z M209.6 147l2.2 .1 .2 2.7-2.5-.2z M213.1 138.8l2.9 .6-.8 2.5-2.9-1z M229.7 149.5l2.2 .2-.6 5-2.1-.8z M229.9 152l1.1 .4-.6 2.3-1.2-.4z M230.1 148.5l2 .7-1.3 4-1.7-.5z M230.5 148.7l1.6 0-.6 3.3-1.3-.1z M227.9 113.5l2.9 .4-.5 3.3-2.8-.9z M227.5 113.4l2.1 0-.2 1.9-1.9 0z M228.1 113.7l1.9 .3-.2 2-2.1-.1z M227.5 113l2.5 .1-.1 2.3-2.3 0z M198.7 104.2l2.6-.2 .4 2.6-3.1 0z M203.3 92.3l2.8 .5-.2 2.4-3.2-.7z M192.4 184.7l3.1-.8 1 2.6-3.3 .7z M193.2 185l2.6-.5 .4 2.3-2.7 .5z M192.5 185.2l2-.4 .7 1.7-2 .7z M193.8 185.1l2-.7 .5 1.8-1.9 .7z M181.2 183.7l3.3-1.1 .7 3-3.5 .9z M231.8 117.8l4-1.4 1.3 5.5-3.4 .4z M232 120.4l1.9-.8 1.1 2.4-1.8 1.2z M233.1 120.1l2-1.1 1.6 3.2-2.1 1.2z M232.4 119.5l2-.2 .8 2.8-2.2 .4z M238.1 132.6l5.9 .1 0 7.5-5.7 0z M237.3 133.3l3.2-.2 .2 6.6-3.4-.1z M239.2 134.2l4-.8 .7 7.5-3.7 .7z M238.1 133.9l5.1-.5 0 7.5-5.1 .6z M240 135.7l4.4 .6-.1 5.2-4.6-.5z M238.1 132.2l5 .5 .3 6.7-5.2-.6z M264.8 116.6l2.9-.4 .4 5.6-2.9 0z M266.1 116.5l1.8 .3-.2 2.5-1.7-.2z M265.4 117.9l1.5-.3 .4 3.3-1.4-.3z M264.7 117.3l1.9-.1 .5 3.4-2.1 .1z M270.5 136.1l2.4-.7 .5 3.5-2.6 .3z M270.5 135.3l2.1 0-.3 2.9-1.8 .3z M270.6 137.3l1.6-.1 0 1.9-1.6-.1z M271.1 137.3l2-.4 .3 1.9-2 .2z M301.8 136.9l8.1 2.5-3.1 8.7-8.2-2.3z M305.1 138.2l4.3 1.6-1.7 6.5-4.5-1z M299.6 139.5l5.2 1.7-1.9 6.6-5-1.7z M303.6 136.2l6.9 2.1-1.6 4.7-7.2-2.4z M304.9 138.1l5.3 2.4-3 6.6-4.7-2.2z M301.4 142.1l6.8 1.9-1.8 5-6-1.9z M309.3 142.7l9.3-1.2 .8 8.9-8.6 .8z M310.6 141.8l5.7-.1-.2 6.7-5.4 .2z M308.7 144.7l4-1.8 1.5 6.1-4.5 1z M312.3 142.3l4.5-1.1 1.1 6.1-5.2 .7z M312.4 144.2l7.3-.2-.1 6.4-6.6 1.4z M312.5 141.9l6.5-1.8 1.2 4.7-6.8 1.1z M302.7 156l7.4-.5 1.6 8.5-7.9 1.1z M306.6 155.3l4.6-.9 1.2 5.2-4.8 .6z M305.7 156.5l6.1 .2 0 5.6-5.8 .1z M306.6 159.5l4.7 0-.4 4.6-4.6 .1z M304.1 158.7l5.2-1 1.4 6.1-5.6 1.5z M303.8 158l4.9-1.4 2 7.6-5.3 .9z M307.7 170.9l4.5-1 .8 5.5-4.9 .5z M310 171.2l3.3-.8 .4 4.5-3.3 .8z M307.3 171.8l3.5-.5 1 4-3.8 .8z M307.6 171.4l3.1-.9 .9 3-3.3 .9z M330.9 133.5l7-.1 .1 3.2-6.8-.1z M333.1 133.3l5.3 .6 0 2.8-6.3-.7z M331.2 133l4 0-.2 2.4-4-.1z M332.2 133.1l5 .1 .4 2.5-5.2 .2z M336.3 139.5l3.5 .1 .1 4.5-3.2 .3z M336.4 141.8l2.6-.2 .3 2.4-2.3 .5z M336.7 139.8l2.6-.2 0 2.6-2.4 .1z M337.7 142.3l2.6 0-.1 2.3-2.7-.3z M335.5 171.4l3.5-.6 1.3 4.1-3.7 .9z M335 172.6l1.7-1.1 1.3 3.7-1.9 .4z M337.3 172.9l2.2-1.5 1.2 2.3-2.4 1.2z M335.2 174.2l3.1-1 .7 2.4-3.1 .9z M325 180.5l4.8 1.2-1.1 3.2-4.4-1.5z M324.2 181.1l2.6 .6-.8 2.3-2.2-.6z M326.4 181.5l3.8 .6-.3 2.6-4-.7z M326.1 181l3.7 1.7-1.3 2.5-3.1-1.6z M338.6 121.6l3.6-1.1 2.5 5.9-3.9 1.2z M338.8 122l2-1.3 1.7 3.8-2.3 1z M339.5 123.4l2-.5 1.4 4.2-1.6 .7z M338.5 121.9l3-1.3 2.1 4-3.1 1.3z M316.1 108.3l4.8 1.4-.9 1.6-4.7-1.4z M317.9 108.5l3.3 .9-.7 1.8-3-1z M315.5 108.3l4.2 1-.7 1.4-4-.8z M316.3 108.3l3.3 .6-.3 1.3-3.5-.7z M236.4 180l2.8 .5-1.6 5.3-2.8-.8z M235.9 180.6l1.9 .3-1 4.2-2 0z M236 179.9l1.4 .9-.9 3.1-1.7 0z M237.3 180.6l1.5 .9-2 4-1.2-1.1z M404 92.4l5.6 1.9-.9 4.4-6.6-1.3z M406.6 92.1l3.8 1.8-1.2 3.2-3.6-1.2z M404.6 93.4l5.6 1.6-.9 2.3-5.3-1.6z M405.3 93.8l4.3 1.2-.5 3.7-5-1.9z M412.5 121.1l3.9 .6-.4 6.7-3.8-.5z M412.4 121.4l2.7 .1-.4 4.7-2.9-.3z M412.5 121.8l3.1 .2 .3 6-2.8 .2z M413.8 122.6l2.3 .6-.8 6.2-2.3-.6z M412.7 123.1l2.6 .6-.5 5.2-3.1 0z M412.7 120.4l2.9 .1 0 4.5-3.2 .1z M414.4 152.4l2.3-.7 .8 3.6-2.4 .4z M414.4 151.9l2.1-.1 .3 3.1-1.8 .1z M415.6 153.5l1.3-.3 .6 2.3-1.3 .1z M415.4 151.7l1.5-.4 .5 3.1-1.4 .1z M424.1 175.9l5.4-.8 .8 4.8-5.2 1.1z M423.7 176.5l4.9-.9 1.2 4.6-5.1 .7z M423.2 175.6l5.4 .1-.2 4.3-4.3-.1z M427.6 176.5l3.2-.6 .1 3.9-2.9 .8z M392.4 183.9l2.4-1.3 2.3 8.4-2.7 .7z M392.4 184.5l1.9-1 2 6.1-1.8 .4z M393 185.6l1.6-.7 .9 6.8-1.8-.1z M392.7 184.8l1.7 .1 1.8 6-1.9-.3z M394.1 183.3l1.9 0 .8 4.6-1.9 .6z M394 185.3l1.5-.1 1.4 5.8-1.3 .9z M423.1 187.5l2.6 .9-1.1 3.9-2.5-1.4z M423.3 188.4l1.9 1-1.5 3.3-2-1.4z M422.6 187.9l2.2 .9-1 2.2-1.9-1.1z M422.6 187.5l1.7 .1-.8 3.2-1.5-.6z M248.2 105.6l2.2 .7-.3 3.2-2.2 0z M400.6 141.3l3.8 .8-.8 2.8-3.3-.7z M320.4 137.5l3.4 .4-.3 3-3.5-.2z M365.2 186.2l2.2 .4-.9 2.6-2-.7z M464.7 132.3l5-.1 .6 6-4.9 .6z M465.5 133.8l3.9-.5 .8 4.1-3.9 1z M466.7 135l2.6-.9 .9 4.3-2.7 .6z M465.2 132l3.7-.2 .2 3.6-3.8 .3z M457.4 133.5l4.1-.5-.2 3.4-3.4 .5z M457.6 133.8l2.1 0 .2 2.1-2.4 .3z M457.3 133.2l2.4-.4 .3 1.6-2.2 .4z M457.8 134.5l3.3-.1 .2 2.1-3.5 .2z M498.3 134l2.7-.1-.1 4.2-2.8 .1z M497.4 134.9l2.4-.2 .3 3.1-2 .2z M498.7 133.8l2.2 .5-.2 2.5-2.3-.1z M497.7 133.8l1.5-.2 .2 2.8-1.6-.1z M506 144.9l6.8-2 2.3 7.5-6.9 1.4z M508.7 144.6l4.9-1 1.3 4.5-5.3 .9z M507.4 146.7l4.9-2.2 2 5-5.4 1.5z M506.5 145.5l3.6-1.6 1.4 5.4-3.8 .7z M509.6 145.8l3.3-1.1 1.7 3.7-3.7 1.4z M507.9 146.1l4.1-1.1 1.2 4.6-4.2 1.1z M513.6 128.5l2.7-.5 1.2 2.9-3 .7z M513.7 129.1l2.2-.3 1 2.3-2.4 .7z M515.1 128.2l1.5-.4 .7 2-1.6 .4z M514.9 129.2l1.4-.6 .6 2.8-1.4 .4z M526.4 126.6l1.8 .5-.5 3-1.8-.1z M526.5 128l1.7 .4-.5 2.1-1.7-.2z M526 127.4l1.5 .5-.6 2.2-1.2-.5z M527.3 126.5l1.1 .2-.4 2.1-1.2-.1z M557.2 145.8l6.8 .3-.3 7.2-6.8-.3z M557.6 146.7l5.3-.4-.4 5.7-5.1-.1z M557.3 146.5l5 .7-.5 5.4-5 .3z M559 144.9l5.2 .5-.1 5.3-4.8 .5z M559.7 145.9l3.9 .6-.7 5.4-4.4-.6z M556.4 146.7l5.5-.6 .2 4.9-5.5 .6z M558.6 160.1l3.8 .3-1.1 5.5-3.2-.8z M558.8 159.2l3.2 1-.5 3.9-3.3-.2z M560.5 160.3l2.4 .2-.6 4.2-2.6-.4z M559.4 160.9l2.2 .1-.8 4.3-1.9-.6z M561.2 94.2l6.5-1.2 1.1 5.6-6.3 1.9z M561 96.3l5.2-1 1.1 4.1-5 1.7z M561.3 96.3l5.5-1.4 1.3 4.8-5.4 1.7z M563.5 96l4.8-2.4 1.9 4.9-4.7 1.9z M582.2 103.9l3.3 .4-.9 3.1-3-.4z M582.1 105.3l3.1 .2-.4 1.9-2.6-.1z M583.1 104.6l1.9 .5-.6 2.5-1.9-.7z M582.8 104.1l1.6 .3-.5 2.7-1.9-.6z M597.9 103.5l2.9-.9 1.3 3.8-3.1 .9z M598.4 103l2.1-1.1 1.3 3.2-2.1 1.4z M598.9 103.5l2.3-.2 .5 2.8-2.3 .7z M597.9 103l2.8-1 .6 2.2-2.5 .9z M572.9 114.9l2.7 .2 0 3.3-3.1-.5z M572.7 114.2l2.2 .5-.5 2.3-2.1-.4z M572.5 115.9l1.8 .1 0 2.4-1.7 .1z M572.9 114.4l2.3 .3-.8 2.9-1.9-.1z M560.1 127.9l2.6-.1 .2 3.3-3 .1z M559.9 127.5l2.2 .1 .1 2.4-1.9 0z M560.1 127.6l2.3-.2-.2 3-2.2-.3z M560.3 128.5l2.5-.6 0 2.5-2.2 .4z M573.7 135.7l1.9 .5 .3 4.1-1.9 0z M574.6 135.7l1.6 .7-.3 3.6-1.7-.2z M574 135.9l1.2 .3 .3 3-1.4 .1z M574.9 137.6l1.1-.1 0 2.4-.9-.2z M576.8 143l4 .5-.3 3.5-4.1-.7z M578.7 142.9l2.2 .2-.3 2.3-2-.2z M576.7 144l3.7 .1-.1 2.1-3.4-.1z M577.5 143.9l3 .1-.2 3.1-2.8-.5z M512.6 97.6l3.9-.5 .3 5.1-3.4 .6z M514.4 99.6l2.1-.4 .8 2.7-2.4 .3z M513.8 98.2l2.7-.3 .1 4.2-2.3 .1z M513.3 97.5l2.7 .2 .2 3.8-2.7 .5z M531.8 101.4l2.3 0 .2 3.2-2.3-.1z M532.5 101.1l1.4 .2-.2 2.8-1.4-.4z M532.3 102.1l1.8-.2 .3 2.7-1.7 .5z M532.8 102.1l1.9 .2-.3 2.6-1.7-.1z M544.5 104.7l3.2 0-.3 3.2-3-.4z M459.5 95.9l4 .4-.3 2.3-4.1-.4z M460.4 97.1l3.3 .9-.6 1.1-3.1-.9z M461.1 95.8l2.5 .4-.5 2-2.4-.6z M459.2 96.5l3.2-.1 0 2.1-3 .1z M493.5 94.3l2.4 .2-.3 3.8-2.2-.4z M473.8 165.9l3.3 .4 0 3.2-3.8-.2z M485 165.2l3.2 0 .1 3-3.3 .4z M486.1 172l5-.5 .5 3.8-4.7 .4z M486.1 172.4l2.3 .1 .1 2-2.5-.1z M485.7 172.2l4.6-.2-.1 3.3-4.6 .1z M485.7 172.7l3-.1 0 2.5-2.9 .3z M480.3 171.9l3.5 1.4-.8 2.3-3.1-1.4z M481.3 172.6l2.7 .9-.2 2-3-1.1z M480.7 173.5l3 .6-.2 1.6-3.4-.9z M480.8 173.4l2.2 .5-.4 1.6-2.3-.5z M489.2 177.2l3.3 .9-.7 3.5-3.6-.9z M489.9 176.9l2.2 .6-.9 2.5-1.9-.7z M489.6 176.9l2.7 .4-.6 3.2-2.7-.6z M489.1 176.9l2.8 1.1-1.1 2.6-2.6-.7z M448.7 185.5l3.7 0 .1 3.3-4-.1z M455 182l3.2 .2 .1 1.7-3.2 .2z M455.3 182.5l1.8-.3 .3 1.5-1.9 0z M456.9 182l1.8 .1-.2 1.8-1.7-.1z M455.9 182.6l1.9-.2 .1 1-2.1 .2z M531.5 173.4l1.6-1.1 1.1 3.3-1.7 .9z M532 173.4l1.2-.3 .8 2.5-1.4 .2z M532.3 173.3l1-.4 .6 2.4-1.2 .1z M531.8 173.5l.8-.5 .8 2.1-1 .3z M443.4 148.6l2.3 .2 .5 3.2-2.7 .7z M474.2 154.1l1.9 .4-.9 3.3-1.8-.3z M474 155.6l1.2 .3-.4 1.5-1.1 0z M473.9 154.2l1.1 .3-.3 1.9-1.2 0z M473.7 155l1.2 .3-.1 2.9-1.2-.1z M465.4 114.2l3 0-.1 3-3.2 .2z M450.8 174.1l3.2 .3-.7 3-3.1-.3z M160.2 192.4l3.6 .2 0 3.3-3.3 .6z M172.5 192.1l3 .6-.4 3-3.1-.3z M169.2 217.8l3.5 .4 0 3.5-3.6 .1z M167.6 212.4l2.6-1.1 .9 3.1-2.6 .5z M173.2 226.9l3.6 .7-.7 2.7-3.7-.6z M176.1 199.2l3.4 .3-.3 2.5-3.4-.6z M176.8 199.8l3.1 .4-.4 2.1-2.8-.4z M176.3 199.7l2.8 .6 .1 1.4-3.2-.7z M176.5 200l2.7 .3-.2 1.6-3-.6z M188.9 205.4l2.9 .2 .1 3.7-3.1-.2z M206.8 195.5l3.4-.2 .3 2.5-3.5 .1z M206.1 195.8l2.7-.2 0 2-2.6 .1z M206.4 196.2l2.6-.6 .7 1.7-2.9 .8z M205.9 196.2l3.6-.7 .1 1.6-3.3 .5z M206.4 210.5l3.7-.8 .4 2.3-3.8 .9z M207.5 210.2l1.9-.6 .5 1.9-1.9 .3z M207 210.6l2-.1 .6 1.8-2.1 .4z M206.7 211l2.7-1.1 .9 1.8-3.1 1.1z M222.5 209.7l2.9-.3 .4 3-2.9 .3z M222.8 209.6l2.4-.5 .6 1.5-3.1 .6z M222.9 210.7l3.3 .1-.1 1.7-3.1 .1z M222.6 210l2.9-.2 0 2-2.8 .2z M233.8 207.8l2.4-.4 0 4.3-2.1 .3z M234.4 207l1.6 .2 .1 2.5-1.7-.1z M234.7 206.5l1.5 .4 0 4.3-1.7-.3z M234.1 207.8l1.6 0 0 3.3-1.3-.2z M239.1 214l2 .2 .5 2.9-1.9 .2z M239.2 214.2l1.4-.1 .5 1.8-1.3 .4z M240 214.7l1.6 .1 .1 2.1-1.5 .2z M240.4 214.4l.9 .1 .1 1.8-1-.1z M276.8 195.3l3.2 0-.2 6.9-3-1.1z M276.8 195.5l3-.1-.9 5.4-2.5 0z M277.3 198l2.2 .4-1.1 4.4-1.8-.7z M276.8 195.7l2.7 .3-.6 5.1-2.5-.7z M266.7 227l4.3 .1 .8 4-4.9 .2z M268.8 228.6l3.1-.2 .1 3.4-3.3-.1z M268.3 229.2l3.4-.6 .2 2.7-3.1 .4z M268.9 228.5l2.5-.3 .2 3.6-3.1 .2z M284.7 229.8l3.6-.6 .3 3.9-3.3 .4z M285.5 231l2.7-.5 .1 2.3-2.7 .5z M286.7 231.4l1.8-.3 .1 2.7-1.8 .1z M286.4 230.4l2.1-.3 .5 2-2.6 .1z M283.9 242.1l5.4-.4-.4 6.2-4.9 0z M285 241.8l4.4 0-.8 4.1-3.6-.2z M284.3 241.2l3.5 .2 0 3-3.3-.1z M285.6 241.1l4.7 .6-.8 5.3-4.8-.7z M302.1 237l5.3-1.1 .8 3.5-5.6 .6z M302.2 236.6l4-.2 .1 2.6-3.6 .7z M302.4 236.5l3.5-.5 .6 2-3.7 .4z M302.2 237.1l3.9-.7 .6 2.5-4.1 1.1z M300.2 243.8l5.8 1.2-.7 2.8-6.1-1.1z M300.4 244.1l3.8 .5-.5 2.6-4.2-.6z M300.8 244.9l5.2 1.9-.7 1.5-4.9-1.6z M302.5 244.9l3.4 .4-.6 2.1-3.1-.4z M302.8 254.6l3.6-.9 2.1 6.8-3.1 .3z M303.5 254l2.3-.8 1.3 3.9-2.4 .6z M305.4 257.6l1.8-.8 1.2 3.3-1.9 .9z M303.6 257.2l2.3-.9 1.1 4.3-2.1 .3z M314.5 228.4l5.8 1.4-1.1 3.6-5.7-1.4z M314.9 227.7l4.4 1.6-1.3 3-4-1.3z M315.8 228.5l4.6 0 0 2.5-5 0z M313.8 230l4.4-.1 .1 3.5-4.7-.6z M324.3 229.4l5.3 1.2-1.1 4.1-4.8-1.7z M324.7 231.7l2.4 .9-.7 2.1-2.6-.9z M326.5 230.9l3.1 .3-.3 2.9-3.3-.7z M326.1 230l3.4 .9-.5 2.9-3.5-.4z M323.9 219.3l1.9-.3 .8 4.2-1.8 .8z M323.7 218.8l1.4-.1 .8 3.5-1.1 .5z M324 219.6l1.8-.5 .9 3.7-1.6 .5z M324.3 220.8l1.3 .3 .3 3-1.3 0z M262.9 250.9l3.4 .3 .2 3.4-3.8-.1z M263.9 251.9l2.3 .2-.5 2.8-2.3-.5z M263.2 250.8l3.6-.2-.3 2.6-3.5-.1z M263.2 251.5l1.7 .2-.1 2.1-2.1-.4z M250.5 250.5l3.2 .2-.2 3.8-3.7-.4z M256.9 270.5l6.1-1.6 1.5 4.1-6.1 1.9z M257.2 270l4.6-.4 .8 2.1-5.1 1z M256.3 270.2l3.6-1.4 1.5 2.6-3.8 2.1z M257.8 270.7l4.8-.9 .5 4-5.2 .9z M291.1 271.4l4.4 1.8-1 3.5-4.5-1.2z M291.3 271.9l3.4 1.1-1 3.2-3.2-.9z M291.3 271.5l2.4 1-.9 3-2.4-.6z M292.7 273.2l2.7 .7-.9 2.9-2.4-.6z M300.8 280.2l4.3-.3 .1 4.6-4.6 .5z M301.3 281.3l3 0 .1 2.6-3.2-.3z M302.2 280.1l2.5-.3 .4 3.4-2.5 0z M301 280.2l3.3 .7-.3 3.2-3.8-.6z M317.3 281l4.8 1-.8 4.3-4.7-1.4z M316.4 283.1l3-.1-.2 3.1-2.8-.3z M317.8 280.7l3.7 1.7-1.2 3.3-3.8-1.5z M317.9 280.3l4.2 .9-1.4 3.7-3.6-.9z M282.2 283.1l6.5-1.4 .5 4.5-5.7 1.2z M281.8 282.9l5.9-.7 .3 2.2-5.1 .7z M284.5 284.5l3.8-1.6 1.1 3.2-3.9 1.2z M283.3 283.8l4.8-1.4 .4 2.8-4.7 1z M276 278.3l3.4 .2-.1 2.8-3.5-.1z M277.4 278.5l1.7 .4-.6 2.1-1.7-.5z M276.5 278l3 .1-.1 1.5-2.5 .2z M277.6 278.7l1.7 0 0 1.4-1.8 0z M184.2 262.1l2.8 .8-.1 3.4-3.1-.7z M183.9 262.5l1.4 .1-.1 2.4-1.5-.1z M184.3 262l2 .7-.6 2.7-1.8-.4z M186.1 263.6l1.6 .1-.5 2-1.5-.2z M189.4 272.1l3.2 .6-.2 2-3.2-.5z M189.7 272.4l2.4 .2-.4 1.5-2.2-.2z M190.6 272.8l2 .6-.3 1.4-2.2-.8z M189.3 273.3l2.4 .3-.4 1.3-2.2-.5z M207.3 285.3l3.5-.7 .8 3.1-3.2 .9z M207.7 285l2.6-.6 .2 1.9-2.6 .7z M208.8 284.9l2.5-.8 .4 2.3-2.5 .4z M208.7 284.7l2-.5 .8 2.3-1.9 .6z M204.8 249.9l2.5-.9 .8 3.5-2 .7z M238.7 250.8l2.8-.6 1.2 3.4-3.1 .9z M256.8 241l2.4-.1 .4 3.8-2.2 0z M302.6 206.5l3.7-.9 .5 3.2-3.8 .4z M306.9 287.2l5.2 1.7 0 2.6-6.2-1.6z M306.2 288.2l4.9 1.3-.9 2.1-4.7-1.3z M306.8 288.1l4.8 1.6-.9 1.8-4.4-1.6z M306 288l4.9 1.6-.3 1.6-5.3-1.6z M211 271.8l3.7-.5 .1 3.4-3.1 .7z M269.4 287.3l2.3-.8 .7 3-2.1 .6z M218.8 221.1l4.1 .3-.3 3.1-3.8-.5z M288.2 203.9l2.7 .5-.4 2.9-2.9-.5z M346.6 198.6l3.9-1.5 1.7 6-3.7 1.3z M347.9 197.3l2.8-.1 1.5 4-3 .6z M347 199l2.5-.7 1 5-2.7 .7z M347.8 200.4l3.4-.8 1.2 4.4-2.9 .6z M361.3 204.5l3.7-.8 1.2 3.5-3.4 .8z M361.2 204.4l2.6-.5 .9 3.3-2.8 .9z M361.5 205.8l3-.6 .5 2.4-3 .3z M362.9 205.6l2.2-.8 .5 3-2.1 .2z M375.4 212.4l2.6-.3 .5 3.3-2.3 .4z M375.9 214.2l2.3-.4 .1 2-2 .4z M376.8 212.5l1.6 .1 .2 2.2-1.4 .3z M375.9 212.6l2-.4 .6 2.4-2 .7z M451.3 208.4l6-1.8 1.5 5.2-5.2 1.8z M451.4 209l4.3-2 1.4 4.3-4.1 2.2z M454.1 210.7l2.8-1.8 2.6 4.2-4 1.3z M454.7 210l3.3-.9 .8 4.2-3.1 .3z M491.3 205l3.2 1.2-1.3 3.5-2.8-1.3z M491.2 205.4l1.7 1-1.1 2.7-2-.7z M491.7 205.5l2.9 .7-.5 2.1-3.1-.7z M491.3 205l1.7 .6-.4 2.5-1.7-.5z M503.2 195.2l3-.5 1.2 5.2-3.5 .3z M504.8 196.1l1.8-.6 .3 3.3-1.7 .1z M503.5 196l2.4-.2 .4 3.2-2.2 .1z M503.2 194.4l2.4 .2 .6 4.1-2.7 0z M511.8 203.4l3.1 .7-.8 3.9-3.4-.4z M512.6 203.6l1.9 .5-.9 2.8-2-.6z M513.5 202.5l1.8 .4-.7 3.6-2.1-.5z M512.8 202.9l2.7 .1-1.1 3.7-2.3-.3z M522 207.9l3.8-1.2 1 4.4-3.3 1z M524.2 207.8l2 0 .3 2.2-2.4 .4z M523.5 208.8l2.2-.5 .7 2.7-2 .6z M523.1 210.2l2.2-.6 .3 2-2.2 .8z M515.4 213.3l4.3 .4 .5 4.2-4.9 .2z M515.5 213.5l3.8 0-.3 3.3-3.4 .3z M515.7 214.1l3.4 .4-.6 2.9-3.2-.8z M517.4 213.8l3.1-.2 0 2.5-2.8 .2z M496.3 219.9l3.7 .5-.7 3.2-3.8 0z M496.7 219.4l2.6 .6-.1 1.8-2.7-.6z M496.7 219.5l2.3 .2-.3 3-2.3 .3z M496.2 219.2l2.5 .3-.2 1.9-2.6 .1z M490.2 221.3l2.3-.6 .7 3.4-2 .6z M491 221.9l1.8-.5 .7 2.3-2 .4z M491.1 223l1.2-.7 .9 1.9-1.3 .5z M489.9 221.5l2.3-.3 .3 2.5-1.6 .7z M495.3 229.6l4.8-.9 .6 4.3-5.1 1.6z M496.7 229.1l3.1-.1 .1 3.2-3.2 .1z M496.7 230.7l3.2-.1 .2 2.7-2.8 .7z M495.9 228.8l2.3-.5 .6 2.5-2.3 .7z M503.3 231.2l4.8 .8-.8 6.3-5-1.5z M503.4 233.6l3.2 1-.6 3.4-3.4-.6z M504.6 234l2.6 0-.1 3.6-2.9 .2z M504.2 231.9l4.4 .5-.6 3.5-4.5-.7z M511.4 230.1l5.5-.6 .6 6.8-5.2 .4z M513 229.7l3.9 .5 .3 5.1-4.1 .1z M511.1 230.5l2.9-1 1.3 5.9-2.9 .5z M512.2 232l3.8-.4-.2 4.2-3.1 .2z M481.2 224l3.6 1.3-1.2 3.2-3.2-.8z M472.6 237.6l3.4 .3-.3 2.9-3.4-.2z M466.4 228.5l3.3 1.2-.6 1.9-3.5-1.1z M466.6 229.2l2.7 .4-.1 1.3-3-.5z M466.1 228.6l1.9 .9-.5 1.8-2.2-1.1z M467.7 229.3l2.8 .9-.6 1.1-2.4-.8z M387.6 231l3 .6-.9 3.5-2.9-.2z M388.6 231l1.7 .3-.6 3.4-2.1-.5z M388.5 231.3l1.6-.2 0 2.5-1.6 .2z M387.9 231.8l1.9 .3-.8 3.5-1.7-.1z M378.7 264.2l4 .7-.5 3.5-3.9-.2z M379.9 264.4l2.7 .5 0 3.1-2.7-.4z M380.2 265.4l3.1 .7-.9 2.8-2.8-.2z M379.3 265.8l3.1 .3-.1 2.7-3.2-.3z M408 270l2.3-.2-.6 4.3-2.4-.4z M407.7 269.7l1.9 .4-.4 3.8-2-.4z M408.7 269.5l1.7 .3-.6 3.4-1.4-.3z M407.6 269.1l1.8 0 0 2.8-1.7 .4z M385.9 281.4l4.8 .7-1.9 5.3-4.5-1.3z M385.1 282.6l3.7 .9-.6 3.6-3.7-.5z M386.6 284l3.7 1.2-1.3 2.7-3.4-1.2z M385.9 283.8l2.9 .4-1 3.9-2.4-.3z M431.2 283.6l4.3 1.3-.9 2.3-3.8-.5z M431.2 284.7l3.3 .6-.4 2-3.1-.8z M432.1 283.6l2.6 .4 0 2.5-3.2-.7z M433 284.8l2.8 .5-.3 2.5-3.1-.8z M360.4 277.7l4.2-.6 .1 3.7-4.5 .2z M362 279.4l2.8 0 .3 1.8-3 .3z M360.4 277.3l3.3-.3 .1 3.2-3.2 .2z M360.3 277.2l3.2 .1 .5 2-3.3 0z M349.8 282l4.9 1.1-1.4 3.7-4.6-1.6z M351.7 282.3l2.8 1-1 2.7-3.1-1.2z M350.3 282.9l2.7 .5-1 2.9-2.7-.8z M350.4 283.4l2.5 1-.6 2.1-2.4-1.3z M343.2 271.2l2.9-.6 1 3.7-3.1 .5z M356.2 254.4l4 .2-.2 2.4-3.5-.1z M358.9 240.7l2.9-.4 .2 2.9-3 .4z M411.7 240.7l3.5 .7-1 3.6-3.5-.7z M421.5 192.1l5.7 1.8-.6 1.6-5.9-1.8z M421.9 192.9l3 1-.3 1.2-3.1-1.1z M421.4 192.2l4.1 .9 .4 1.3-4.9-1.1z M421.2 192.2l4.8 .7 .2 1.9-5.1-.9z M432.1 192.8l3.4 .1-.1 1.9-3.4-.2z M431.8 193.2l2.6-.2 .1 1.4-2.4 .2z M433 192.8l1.6 .2-.3 1.5-1.6-.3z M432.1 193l2.4 .3-.2 1.8-2.4-.4z M413.6 200.2l2.1-.1 .5 3.7-2 .5z M413.5 201.8l1.6-.3 .5 2.6-1.8 .4z M414 200l1.7 .1 .2 2.9-1.3-.1z M413.7 199.9l1.5-.2 .5 2.4-1.4 .1z M467.3 203.3l2.1-.7 1.1 3.1-2.3 .4z M467.6 203.9l1.5-.7 .4 1.8-1.4 .6z M467.3 203.6l1.5-.6 .5 2-1.7 .3z M467.3 203.8l1.8-.7 .5 1.7-1.5 .8z M336.7 199.4l1.9-.2 1.6 4.2-1.9 .4z M337 201.1l1.2-.5 1.2 2.1-1.2 .8z M336.9 201l1.3-.8 1 3.5-1.4 0z M336.7 200.3l1.2-.3 1.2 3.5-1 .4z M401.9 284.1l3.2 .6-.8 3.6-3.3-.6z M528.8 218.6l2.6 0 .5 3.3-2.9 .3z M528.9 219.8l1.6-.2 .6 2.6-1.7 .2z M529.5 219.7l1.6-.3 .3 2-1.7 .4z M530.1 220l1.5-.3 .5 1.9-1.4 .6z M227.3 314.4l7.1-1.1 3.5 10.7-7.9 2.2z M230.6 315l5.9-.7 1.3 7.1-5.5 1z M227.3 313.7l4.7-1.8 1.9 5.7-4.2 1.9z M228.5 315.3l6.6-2.4 1.1 7.4-5.6 1.7z M227.9 319.3l6.1-2.6 3.1 8.2-6.8 3.1z M229.4 317.9l4.5-2.3 3.1 8.1-4.9 2.5z M229.8 297.5l6.4-.4 .6 8.3-6.2 .1z M229.1 296.2l4.9-.1 .4 5.8-5.8 .1z M233.1 296.2l3.7 .8-.3 6.7-3.2-.3z M230.1 296.9l6.1-.3 1.2 6.7-5.7 .3z M229.7 301.8l5.4-.8 .5 5.8-4.6 .4z M230.2 297.7l3.3 .1 .8 8-3.6-.7z M214 332.9l5.2-2.3 1.8 5.6-5.3 2.2z M214.6 335l4-2.1 1.5 2.6-3.8 1.7z M215 335.2l4.3-1.6 1.6 3.6-4.1 1.2z M214.5 334.3l3.7-.3 .7 3.2-3.2 1.2z M224.7 336.5l5 1.6-1.3 6.6-6-2.1z M224.3 339.3l4.1 .7-.6 3.2-4.3-.7z M224.4 337.4l4.7 .5-.9 5-4.5 .2z M225.4 339.6l4.8 1.9-1.2 3.6-4.6-1.5z M229.3 348l6.4-2 1 3.4-6 1.9z M231.5 347l5.1-1.5 1.3 2.6-6 2.3z M229.8 348.5l4.8-2.6 1.4 3.1-4.9 2.1z M231.6 348.7l4.5-1.6 .8 2.6-4.4 2.1z M239.3 346.2l3.9 0-.6 3.8-3.7 0z M235.8 353.7l8.6-.2 2 7.1-10.1 1z M235.7 356.2l5.2-1.2 .9 4.3-4.8 1.4z M238.7 356.5l6.6-1.2 1.4 4.7-7.4 .8z M238.9 356.2l6.4-.6 .4 3.9-6.3 1z M238.7 353.4l6.4-.5 .6 5.4-7.2 .8z M238.6 353.8l7.7-.4 .5 3.8-8.6 .5z M274.1 354.3l6.7-2.1 1.7 5.4-6.9 2.7z M276.8 355.9l5.7-1.5 .5 3.3-5.9 1.4z M277.1 355.3l3.6-1.5 1.3 4.1-3.6 1.6z M276.4 354.4l6-1.8 1.1 2.9-6 2.2z M277 356l5.1-1.8 1 3-5.4 1.7z M275 356.4l5.2-.3 .9 3.6-5.7 .7z M222.1 324.2l3.7 1.1-.3 2.2-4.1-1z M223.5 325.4l2.4 .8-.6 1.4-2.2-.4z M224 325.3l2.5 .4-.4 1.6-2.2-.6z M222.4 324.5l1.9 .8-.8 1.9-2.1-.7z M266.4 293l10.7 2.8-.3 4.1-10.4-3.5z M270.5 293.4l6.5 2-.1 3.3-7.2-1.9z M267.6 292.8l7.8 3.3-1.6 2.5-6.7-2.8z M268.4 292.9l8.4 1.4 .5 3.8-9.9-1.8z M267.5 293.1l5.9 1.7 .2 1.8-6.2-1.2z M266.2 294.6l7.3 1.7-1.3 2.8-6.1-1.9z M283.3 319.1l3.7-.1 .2 3.2-3.7 .3z M283.8 320.2l2.6-.4 0 2.4-2.6 .2z M282.8 320.1l3.1-.4 .3 2.1-3.5 .8z M283.5 319.3l3-.4 .4 3-3.2 .1z M268.1 324.6l3.8-.2 .4 3.2-3.3 .9z M298.3 323.3l3.1-1.4 1.4 3.5-3.6 1.6z M299.5 322.8l2.4-.8 .6 3-2.6 .4z M299 324.4l3-1.2 1 2.9-2.9 1.3z M298.3 322.7l2.5-1.1 1.2 2.3-2.7 1.1z M273.3 343.5l6.5 1-.2 2.4-6-.9z M272.8 343.5l5.7 .4-.4 1.3-5.2-.1z M273.6 343.8l3.5 .3-.1 1.3-3.9-.4z M276.3 343.9l4.2 1.1-1 1.9-3.9-1.2z M262.9 339l2.7 .3-.4 3.2-3.1-.7z M262.5 340.4l2.2 .8-.2 1.8-2.6-.5z M263.9 339.3l2.2 .5-1 2.4-2.1-.8z M264.2 339l1.6 .5-.3 2.1-1.7-.4z M246.2 346.5l3-.2 .1 1.7-2.9 .7z M246 347.2l3.1-.2-.3 1.4-2.9 .2z M246.4 347l2.6-.4-.1 1.5-2 .1z M246.1 346.6l2.4-.5 .5 1.3-2.5 .5z M308.8 368.4l4.8 .8 .1 2.8-4.9-.6z M310.1 369.1l2.6 .5-.8 2.4-2.5-.4z M309.4 369.6l2.7 .4-.3 1.4-2.6-.5z M308.3 369l3.5 .1-.1 1.9-3.4 0z M326.8 358l4.1-.6-.1 3.6-3.5 .3z M325.3 344.9l2.3-.4 .9 3-2.3 .7z M325.3 344.8l1.2-.8 1.1 3-1.6 .5z M325.2 346.1l1.4-.4 .6 1.8-1.4 .5z M326.3 345.7l1.6-.1 .4 2-1.7 .4z M201.5 293.3l3.5-.8 .3 1.7-3.3 .9z M203.6 293.4l2.1-.1 0 1.1-2.1 .2z M201.3 293.8l3.1-.8 .1 1.5-2.8 .7z M201.9 293.7l1.9-.1 .4 .9-2.3 .2z M294.6 339.5l2.7 .9-.7 2.7-2.7-.7z M247.8 307l3.8-.6 .4 2.8-3.8 .7z M378.2 307.5l4.7 1-1.1 6-4.6-1.2z M378.1 307.2l3.6 .4-.8 4.2-3.2-.2z M378.3 307.2l2.9 .7-.6 3.2-2.7-.5z M379.9 307l3.2 .6-.7 4.7-2.9-1z M368.7 319l3.3 .4-.5 2.8-3.3-.3z M368.3 319.9l2.6 .4-.6 1.8-2.3-.4z M368.3 319.4l2 0-.3 2.3-1.9-.2z M369.5 319.3l2.2 .3-.4 1.7-2-.3z M389.8 302.1l2.9 .5 0 5.2-2.7 .1z M389.6 303.9l2.5 .3 .3 3.8-2.4 .2z M390.5 304.3l2.4-.2 0 4.5-2.3-.2z M390 304.1l2.1-.2-.3 3.7-1.8-.2z M400.9 297l2.9-1 1 4.5-3 .7z M400.5 296.2l2.4-.4 .6 4.1-2.4-.1z M401.1 297.7l1.3-.6 1.3 3.9-1.7 .4z M401.2 297.2l2 0 .5 3.2-1.8 .6z M409.5 292.6l3.7 1.1-.3 2.6-4.3-.9z M411.2 292.6l2.4 .3-.5 2.2-2.2-.1z M410.5 292.5l3.3 1.2-.8 1.8-3.1-.8z M410.4 292.9l2.8 .7-.5 2.2-2.8-.4z M419.2 293.5l3.5-1 .4 2.3-3.6 .8z M419 292.7l3-.2 .3 1.7-2.8 .2z M419.8 293.5l3-.5 .3 1.7-2.9 .6z M420.6 294.5l2.6-1.1 .7 1.5-2.4 1.1z M427.9 301.6l2.2-.2 .8 2.8-2.3 .5z M427.7 302.1l1.2 0 .7 2.3-1.4 .2z M428 301.5l2-.2 .1 2.9-1.6 0z M427.6 302.8l1-.3 .8 1.9-1.1 .5z M397.1 316.7l3 .1 0 2.9-2.8 .2z M411.3 318.7l4.2-1.1 1.1 3.6-4.2 1.2z M411.7 318.9l2.8-1.4 1.6 2.4-3.3 1.8z M411.2 320l3.3-1.3 .5 2.6-3.1 .8z M411 318.2l2.7-.9 .8 3-2.5 .6z M421.1 322l2.7 0 .2 2.6-2.6 .2z M421.5 330.9l3 1.4-1.4 3.7-3-.6z M421.4 330.7l2.5 .9-.5 3-2.7-.5z M421.3 331.1l2.9 .8-1.3 3.3-2.9-.7z M421.4 332.3l2.7 .2-.5 2.9-2.5-.7z M424.9 338l4 1.3-.3 2.5-4.6-1.5z M425.1 338.3l3.2 1.5-.8 1.6-3.1-1.8z M426.3 339l3.1 1-.5 1.6-3.4-1.3z M425.3 338.1l3 1.3-1 1.6-2.6-1.1z M395.6 328.4l2.8 .7-1.1 3.8-2.6-.7z M396 330.8l1.5 .5-.7 2-1.4-.5z M395.7 329.7l1.7 .6-.9 2.6-1.7-.6z M395.9 328.5l2.3 1.1-.9 2.3-2.2-.9z M383.2 333.1l3.5-.7 .8 3.2-3.5 .9z M384.2 332.9l2.7-.4 .5 1.9-3.1 .5z M384.4 333.8l2.2-.3 .4 2.6-2.5 .1z M383.9 332.6l1.9-.4 .5 2.3-1.9 .2z M377.4 346.9l3.7-.3-.1 3.7-3.4 .5z M372.7 350.3l3.5-1 .6 3.2-3.4 .7z M393.3 344.8l3.1 .4-.4 4.8-3.2-.7z M395 345.3l1.6 .4-.6 3.5-1.6-.4z M393.8 345.9l2.6-.1-.5 4.3-2.2 0z M393.3 344.6l2.4-.1 .5 3.7-3 0z M400.9 342.9l2.1-1 1.3 4.5-2.3 .6z M401 344.9l1.5-.5 .8 2.2-1.4 .6z M400.8 342.2l1.6-.6 .9 2.8-1.7 .4z M402.1 343.2l1.4-.5 .9 3.3-1.4 .3z M417.5 350.7l3.2 1-1.2 3.7-3-.9z M418.3 351.1l2.4 1-1 2.2-2.3-.8z M418.1 351.5l2.3 .6-.4 2.6-2.4-.7z M417 351.8l2.1 .8-1.1 2.7-2-.8z M434.9 357.7l2.9 .2-1 4.7-2.7-.3z M435.7 356.8l2.3 .8-1 2.9-2.4-.7z M435.5 357.9l2.4 .3-.7 3.5-2.3-.5z M435.1 357l1.9 .6-.5 3.6-2-.5z M437.3 343.5l2.4 .2-.6 4.1-2.4-.5z M437.7 344.8l1.6 .3-.5 3-1.8-.5z M437.6 345.5l1.3 .4-.3 2.5-1.3-.5z M437.4 342.8l1.3 .5-.5 2.2-1.3 0z M466.2 305.3l3.9-.7 1.7 5.5-4.3 1.1z M466.2 307.9l2.2-.7 .9 3.7-2.3 .6z M466.8 307.6l3.5-1.2 .8 4.5-3 1z M467.6 305.1l3.4-.5 .7 4.4-3.6 .4z M449.4 317.3l3.6-.9 .7 2.4-3.2 1.2z M451.1 317.1l2.3-.6 .4 1.4-2.4 .6z M449.7 317l2.5-.6 .6 1.8-2.7 .8z M450.5 317.8l2.3-1.1 .8 2.1-2.7 1z M456.9 318.5l2.4 0-.3 3.2-2.4 0z M456.7 318.7l1.6 0-.4 2.3-1.6 0z M456.9 319.3l1.8-.3-.2 2-1.5 .2z M456.6 319.3l1.7-.1 .1 2.1-1.8 .2z M471.1 318.4l2.7 1-.9 3.4-3.1-1.1z M477.7 319.5l4.3-.3 1.1 6.6-4.6 .6z M477.6 321.1l3-.6 1 3.3-2.9 .9z M477.2 320.8l3.7-.5 .7 6-3.4 .2z M479.1 323l3.1-.7 1.1 4.2-3.7 .8z M479.1 322.1l2.9-.5 .9 5.2-2.7 .5z M478.4 321.6l3.5-.7 1.8 5.4-4.1 .8z M463.2 324.8l2.4 .6-.6 2.4-2.4-.7z M480.6 346.9l6.1-1.8 1 4.1-6.2 1.4z M480.1 347.5l4.3-.5 .8 2.9-4.1 .7z M482.5 346.7l3.4-1.1 .4 2.8-3.7 1z M481.5 347.8l4.3-1.2 1 3-5 .9z M491.2 347.6l4.6-.3-.1 5.7-4.8-.1z M490.7 348.8l3.2 .1-.2 4.4-3.1-.1z M491.8 349.3l2.8-.2 .2 4.3-2.9-.4z M491.9 348.6l3.6-.4 .7 2.8-3.7 .6z M497.7 357.1l5.7 .5-.9 5.7-5.4-.1z M496.7 358.2l4.4 .5-1 4.3-4.1-1.2z M498.2 357.6l4.6 1-.7 4.1-4.3-.4z M497.6 357.4l5 1.1-1.5 5.1-4-1z M490 366.4l11.3 2.2-.6 2.9-11.5-2.1z M489.6 367.8l6 1.6-.7 2.4-6-1.8z M491.8 366.4l9.2 2.5-1.3 2-8.6-2z M494.9 366.8l6.6 .7-.2 2.2-6.6-.7z M489.3 367.3l6.5 .4 .3 2.2-7.1-.4z M489.7 367.1l6.9 .5-.3 1.9-6.4-.3z M491.7 361.7l3.1 .4-.6 3.3-2.8-.5z M470.7 365.7l5.1 1.2-.6 4.1-5.2-1.4z M470.5 367.2l3.4 .2 0 2.3-3.4-.5z M472.3 367l3.9 1.4-1.1 2.5-3.7-1.3z M472.6 366.4l3 .6-.1 2.7-3.1-.4z M402.3 368.1l5.2 1.8-.6 3.7-5.4-2z M402.8 369.2l5 1.1-.4 2.8-5-1z M403.6 369l3.3 1.2-.7 2.2-3.3-1z M402.8 370.1l4.8 .5-.5 2.9-4.5-.6z M335.1 293.3l2.1 0 .2 3.9-2.4 .5z M336 294.4l1.4-.5 .4 3.6-1.5 0z M335.3 293.4l1.5 .2-.4 2.4-1.5-.2z M335.2 293l1.6-.3-.4 4.2-1.5-.3z M347.5 318.2l3.6-.1-.2 2.8-3.3 0z M345.9 362.8l3.5-1.1 .6 2.9-3.5 1.1z M387.2 364.4l3.3 .7-.9 3-2.9-.7z M377.6 324.6l2.4 .7-1.1 3.3-2.5-.6z M378.4 326.3l1.4 .2-.4 2-1.4-.2z M378.5 326.4l1.2 .4-.6 1.6-1.3-.2z M378.1 325l1.3 .4-.6 2.2-1.2-.2z M340.6 335.6l3 .8-.4 2.3-3.3-.7z M331.8 359.4l2.2-1 .8 3.6-2.2 .6z M342 308l2.3-.2 .6 2.8-2.3 .7z M367 299.4l2.5 .1-.3 3.1-2.6 .2z M367.1 299.2l1.4-.4 .2 2.4-1.4 .2z M366.9 299.6l1.9 .2-.4 2.1-1.8-.5z M366.7 299.8l1.4 0 .2 2.8-1.4 .1z M411.7 365.1l2.5 .3-.1 3-2.4-.1z M505.3 55l8.3-2.6 12.8 11.5-11.5 20.4-1.3 6.4-2.5-10.2-2.6-6.4-1.2-12.7z M418.7 212.9l3.9 14-9 2.6 0-5.1z" fill="#fdf84a" fill-opacity="0.95"/>
<path d="M132 129l3.7 .7-.5 2.2-3.5-.4z M133.6 129.3l2 .2-.2 1.4-1.9 0z M132.5 129.3l2.4 .4 0 1.6-2.3-.4z M132.4 129.8l2.9 .2-.2 1.6-2.5-.3z M236.4 122.1l3.3-.1 0 2.3-3.1-.1z M423.1 179.1l2.1-.9 .9 3.2-2.1 .7z M414.2 234.1l1.7 0 .3 2.1-1.8 .5z M464.7 228.9l2 .1-.3 1.9-1.7-.2z M110.5 80.5l9.2-.7 .7 6.1-10 2z M113.6 79.9l5-.7 .9 4-5.7 .6z M109.6 82.2l7.7-.8 .1 5.5-7.1 .5z M110.2 81.8l6.5-.6-.2 5.3-5.8 .4z M110.1 80.9l7.6-.5-.1 4-8.1 .1z M113.5 80.2l5.7-1 .8 4-5.4 .8z M77 86.3l5.7 1.5-1.2 3.9-5.3-1.1z M75.8 88l4.1 .3-.1 2.7-4.4-.6z M75.9 88.5l3.6 .9-.3 2.4-3.5-1.2z M76.2 88.7l4.9 1.5-.7 2.4-4.8-1.5z M541.7 60.7l10.8 .7 1.9 7.6 6.4 7-16.6 0-1.2-7z" fill="#fba83e"/>
<path d="M404.2 112.9l3.8-1.9 4.5 1.9 0 6.4-3.2-.7-3.8-2.5z M418.7 370.6l2.6 0 0 2.5-2.6 0z" fill="#f0262c"/>
<path d="M43.2 -17.6l-.2 2.9-.1 2.8 .7 3-.2 3.8-.3 3.2 .5 3.3 .2 3.2-.3 3.4 .3 3.9 .2 3.1 0 3.2 .1 3 .7 3.5 .2 2.7 .2 3.2 .4 3.6 .3 3.2 .8 2.6-.1 3.5-.1 3.3 .7 3.2-.1 3.3 .3 3.3 4.8 .6-.7 2.9-1 2.6-.8 3.7-1.2 2.5-1.9 3.9-1.7 3.7 1.2 4.3 2 .7 3.3 .6 2.8 1.6 3.6 .3 3.3 1.7 3.3 1 3.5 .9 3.7 1.3 3.9 .9 3.6 1.9 2.8 .4 2.7 1.2 3.1 .2 3.3 1.2 3 .9 2.8 1.2 2.9 1.3 3.2 1.4 3.1 1.2 3.6 1 2.7 1 2.3 1.2-2.9 4.9-3.6 1.5-3.6 2-4.2 2.5-3 2.5 4.1 3 4.1-.9 4.8-1.3 3.8-1.4 4 .2 .5 3.3-.3 3-.2 3.7-.6 3.4-.4 4.8 .8 3.6 1.3 3.2 .7 3.4-1.5 3.9-1.8 3.4-2.5 2.9-3 2.6-3 2.5-.5 3.3-.9 3.5 .1 3.7-.7 3.4-.5 4.1 .7 3 2.5 .4 3.9-.2 3.3 0 4.1-.5 3.5 .3 3.3 .1 3.4-.5 3.1 .3 3 .1 2.7 0 3.1 .3 2.6 .3 3.3 1.7 2.9 1.8 2.2 2.7 2.2 1.7 1.2 2.2 .2 2.9-.7 3.6 0 3.6-.2 3.1 3.3 .7 3.1 .6 1.3 2.7 .9 3-.3 2.9-.9 3.7-1.3 3.1-1 3.2 1.5 4.1 1.3 2.7 4.5 .3 4.4 .9 1.5 2.8 1.4 3.7 1 3.9-.3 2.8-.1 3-4.9 4.3 1.6 4.7 .4 3.8 .7 4.3-1.8 3.8-2.3 3.9 .1 3.5 1.2 2.3 3 .3 4.2-.1 3.2 .3 .8 2.8 .4 3.4 4.2 .4 3.7 0 .5 5.1-1.3 3.9-1.4 4.3-.3 3.1 3 .9 3.7 .3 3.6 .7 1.5 2.4 .9 3.5 .4 3 1 3.3 1 3 2.6 2.5 3 3.2 2.2 2.7-.9 4-.7 2.5 3.3 1.8 3.6 2.5-.7 3.3-.5 4 1.9 3.4 2.8 2.8 1.3 5.2 2.9 2.3 3.9 1.7 4.5-1.2 2.9-.4 3.8-.3 3.7-.2 3.7-.7 3.1 .2 3.1-.3 3.8 0 3.4 0 3.8-.4 2.9 .5 3.7-.6 2.7 .1 3 .4 4.1-1.4 2.4 .3-.2 3.2-.7 3.1-1.1 3.3-.4 4.5-.9 3.2-1.2 3.3-2.1 3.8-2.6 3.2-1 3.9-.4 3.1 .6 3.9 3 2.8 5.7 2.3 1.6 .6 2.7-.4 2.5 .2 2 .1 2.4 .2 3 .1 2.8-.2 2.1 .1 3 .2 2.8 .3 2.8 .3 3 .1 2.4-.3 3.5 .1 2.5 .1 3 .3 3.4-.4 3.3 .3 2.7 .1 3.6-.1 2.6-.1 3.2 .3 3.5 .3 3.2-.6 3.5 .1 3.2 .1 3.3 .4 3.9-.2 3.1 0 3.6 .2 2.8 .1 3.6-.4 3.3 .5 3.9-.3 3.3 .2 3.1 0 3.9 .2 3-.3 3.7 .2 3.4-.1 3.8-.2 3.1 .3 3.1 .1 3.6-.4 3.3 .2 3.6-.1 3 .1 3.9-.2 2.8-.3 3.5-.2 3.6 .2 3.2-.2 3 .4 3.2-.3 2.7-.1 3.4 .3 3.4 0 3.1-.6 2.3 0 2.9-.2 3.3 0 2.9 0 2.6 .4 2.7-.2 2.9-.2 2.4 0 3.1-.5 2.3 .2 2.5 0 2.5-.4 2.4 .2 2.1-.2 2.4-.2 5-2.6 3.3-2.8 .4-3.4-.2-3.4-2-3.5-1.7-3.6-2-3.3-2.3-3.3-.2-2.8-.5-4.7 .7-3.5 .5-3 1.1-3.8-.5-3.3-.9-3.4-.7-3.2 .6-4.2 .2-3.4-.3-3.6 .1-3.4-1.3-3.3-2.8-1.6-4-1.5-3.2-.8-4.2-1.1-3.6-.1 1.8-5.2-2.2-3-1-3.6 .1-3.9-.1-3.5-2.5-3.6-2-3.2 .3-3 .5-4.5 .3-2.6 .9-3.3 0-3.4 .2-3-.1-3-3.6-1.9-3.1-1.4-3.5-2.5 .7-3.1 .7-2.9-.4-3.4-.8-2.9 .7-3.6 2-3 3.3-2.2 2.6-1.7 2.8-5.1 2.7-.4 4 .2 3.3-.7 2.9-.5 2.1-4.7 2.9 1.7 4 2.3 2.8 .2 4 .3 3.2-.7 4.2-.2 2.8 .1 3-.6 2.9-.6 3.2-.5 2.8-.4 3.4 .2 3.7-.4 3.3-.8 2.9-.3 .7-3.5 .2-3.5-.5-4.5 .2-3.9 .3-3.7 .2-3.5 .4-3.6 1-3.3 .3-3.6 1-3.4 1.2-3.3 1.6-5 1.1-5.6 1.1-3.6 1.2-3.5 1.8-3.3 1.3-2.9 3.4-1.7 4.1-2.1 2.6-1.5 2.1-1.1 3.2-1.6 2.4-1.7 2.5-2.7 1.8-2.5 2.4-2.6 2-3 1.8-3.3 2.1-3 1.4-3.7 .9-3 .3-3.5 1-3 .3-3.3 1.6-3.3 1.7-3 1.7-3.7 1.3-3.2 1.2-3.2 .6-2.6 .9-3.5 1.1-2.5 .9-3.8 .2-2.8 .1-3.5 0-3.3-.4-3.4 .1-2.8-.8-3.9 .5-3.2-.5-2.7 .1-3.3-.4-3.3 .1-3.8-.3-3.2 0-3.3 .4-3.1-.6-3.6-.2-3.2 .1-3.6-.1-3.1-.4-3.2 0-3.4 .3-2.8-.4-3.3 .2-3 .1-2.9-.5-2.7-.4-3.6-.4-3.1-.4-3.3-.4-3.3-.6-3.2-.2-3.2-.6-3.6 .4-3.1-.2-3.9-.5-3.1-.1-3 .4-2.6z" fill="none" stroke="#9aa3b5" stroke-opacity="0.5" stroke-width="2.6" stroke-linejoin="round"/>
<path d="M49.1 1.9l4.5 3.2 .3 3.1 .6 3.5 .1 3.2 .4 3 2 2 2.6 1.9 3.2 1.5 3.6 .8 3.6 1.3 4.2 1.1 3.3-.2 3.1 .3 3.2-.1 3 .2 3.4 1.8 2.7 1.3 3.1 1.6 3.3 1 3.2 .4 2.8 .5 M106.4 2l-1.3 3.5-1.9 5 .4 3.2 .6 3.6 .9 3.5 .2 3.5 .3 3.6 .1 3.6 .2 3.1 1 4 .2 3.5 M47.4 56.4l2.5-.6 3.2-.4 3.5-.4 4-.5 3.4-.6 2.9-1.1 3.7-.6 3-.9 3.4-.9 3.4-1.3 3.1-.7 3-.3 3-1.2 3-.6 3.7-.5 3.3-.7 4.1-.3 2.4-.2 2.9 .1 3.3 .1 2.8 .3 3.3 .4 3.1 0 3.6 .1 3.3 .2 2.8 .2 3 .2 3.1 .4 3.2 0 2.4 0 3.8 .2 3.5 .5 3.3-.2 3.6 .4 2.9 .1 2.6 .3 2.3 .2 M129.6 1.2l-.2 3.1 .3 3.2-.3 3.3 .1 3.6-.1 3.6-.2 3.5-.4 3.1-1.1 3.3-1.6 3.3-1.5 3.2-.1 2.8-.2 3.2-.5 2.8 .2 3.4 0 3.4-.3 2.8 .3 3.3 .2 3.2 .2 3.6 .3 3.2 .2 3.2 .2 3.4 .4 3.4 .1 2.9 0 2.6 .5 4.6 .3 3.5-.2 2.7 M101 48.6l.3 3.2 1.1 3.2 .4 3.7 .2 3.5-.4 3.5-.2 3.1-2.2 2.5-1.8 2-2.6 2.3-2.2 1.6-2.5 2.3-2.9 2.4-2.6 1.9-3.4 1.4-3.5 .9-3.2 1.1-2.7 1.2 M153.3 2.5l1 2.7 1.5 3.2 .6 3-1.7 2.9-2 2.6-2 2.6-2.2 2.6-1.8 2.5 1.6 3.4 1.6 3-2.6 3.1-3.1 2.8 .8 4 2.8 .1 3.1 .2 4.1 .1 3.7 .1 3.2 .1 2.9-.1 M169.1 20.8l-.4 2.9-.2 3.6-.5 3.7 0 3.8-1.6 3.7-1.5 2.9-.2 3.6 0 3.8-.1 3.4-.6 3.3 .1 3.4 1.1 4.1 0 3.7-2.3 .9-2.6 1-3.4 .7-3.2 1.2-2.9 1.3-3.2 1.3-2.8 1.6-3.3 1.6-3.2 2.1-2.7 1.8-2.9 1.8-2.5 2-2.7 2.8-1.7 2.2-1.9 1.6 M163.8 2l2.5 1.5 3.2 1.3 2.9 1.2 3.6 2 2.8 1.2 3.2 1.1 3.3 1.2 3 1.3 3 1.3 3.3 1.3 3 1.5 3.7 .7 3.9 .6 3.6 .6 3.6 .4 3.1 .4 2.8 .3 M169.1 20.4l2.2 1.8 1.9 1.8 3 2.1 2.4 2.2 3.3 1.5 2.8 1.8 3 1.8 3.5 1.4 3 .1 3.7 .7 3.1 .2 3.4 .3 2.8 .3 2.9 .2 M220.3 2.3l-.6 3-.1 3.5-.8 3.9 0 3.7-.5 3.7-.8 3.2-.8 3.2-.8 3.1-2 2.3-1.8 1.8-2 3-1.4 2.8-1.6 3.2-1.5 3.3-1.3 3.3-1.8 3.2-.9 2.5 M164.7 52.4l2.6 0 3.6 .6 3.5-.2 3.8 .6 3.4-.2 3.6 .6 3.4 0 3.5 .3 3.2 .4 3.2 .8 3.2 .5 2.9 1.5 2.7 1.9 3.3 2.4 2.8 .8 2.8 .7 3.4 .8 3.1 .5 2.9 1.1 3.2 .3 2.3 .7 M187.1 53.9l-1.3 2.3-1.4 2.9-1.7 3-1.6 3.3-2.2 2-2.5 2.3-2.4 1.6-2.3 2.4-1.8 1.9-2.1 3-.7 3.2 2.9 1.4 3 1.8 4.2 1.5 2.8 .4 3.3 .8 3 .5 3.4 .6 3.2 .6 3.2 .2 2.8 .6 2.6 .7 M203 61.3l-.5 31 M227.1 66.7l-.4 25.9 M229.2 25.5l.4 3.3 .4 3.8 .2 3.6 .4 4 .4 3.3-1.9 3.6-1.7 2.9-.1 4.1 1 4.6 1.5 4.1 1.3 3.6 M218.1 20l14.1 2.3 M244 22.7l1.5 2.1 1.8 3.5 2.1 3.3 1.7 2.8 1.6 3.4 1.6 2.9 1.6 3.4 1.5 3.2 1.2 2.6 1.6 3.2 1.1 2.5 1.2 3 1.6 2.8 1.6 3.2 1.2 3.3 1.8 3.2 1.7 2.8 1.7 3.4 1.9 2.5 1.9 3 2 2.7 2.9 3.8 2.1 3.3 M232 24l2.6-.6 2.6-.2 3.4-.5 3.7-.4 2.7-.2 3.3 .1 3.3-.5 3.1 .1 3-.1 3.7-.5 3.3 .1 3-.3 3.1-.4 3.3 .2 3.1-.4 3.2-.1 3.3-.1 2.3-.3 4.4 .6 3.6 .9 M250.9 2l.1 3 .6 3.5 1 3.4 3.2 0 3.9 .3 3.9-.7 2.6 0 M270.3 2.7l-2.2 1.7-1.6 3.5-.2 2.8 .1 3-.2 3.5-.2 4 .2 3.5 0 3.7 0 3.3 0 3.1 .9 3.6 1.1 2.3 .7 2.8 .2 3.2-.2 3.3-.1 3.3-.5 3.1-4.4 2.5 M278.6 1.9l.8 3 .6 3.4 .4 3.2-.1 3-.2 3.1-.3 3.3-.1 3.4 .4 3 .3 3.5-.1 3.3 .2 2.9 .7 3.2-.3 3.5 .2 3.8 .4 3.6 0 3.8 .2 2.5 M286.8 2.2l.6 2.8 1 3.8 .1 3.9 .1 3.2-.7 3.2-.4 3.1-.7 3.6-.1 3.2 .7 3.7 .1 3.9 .3 3.5 .3 3.2 .1 3.4 0 3.3 .2 3.4 .4 3.1 .2 2.2 M297.1 2.3l-.2 3-.2 3.7 1.8 2.9 2.6-.2 2.9-.2 3.7-.4 3.4-.3 3.4-.8 3.3-.3 3.4-.6 2.5-.8 2.3-3 .3-3.3 M327 2.2l.1 2.7 .3 3.1 .8 3.3 .4 3.4 .2 3.2 .9 3.5 1.2 3.2 1.2 3.2 .8 3.2 .7 3 .3 3.1 .8 3.3 .8 3.2 .8 2.8 1.1 3.1 1 3.2 .8 3.5 1.4 2.5 .9 4 1.5 3.1 1.4 3.4 3.2 2.6 2.8 2.1 M251.1 34.7l2.8-.6 3.3-.4 3.3-.4 3.4-.4 4-.4 2.9 0 3.5-.1 3.5-.1 3.6-.3 3.4-.2 3.2 0 3.8 .5 3.4 .7 3.4 .2 3.4 .6 3.4 .3 3.3 .6 3.8-.2 3-.5 3.3-.7 3.6-.1 3.5-.7 3.7-.2 3.3-.2 M257.7 47.3l4.9-.1 3.4-1.9 2.7-1.8 M269 41.2l11.4-1.3 M269.1 49.7l12.1 .4 M288.4 44.9l9.9-1.4 M264 58.9l2.8 .1 3.8-.4 3.9 0 3.9 0 3.4 .1 3.7 .3 3.1 0 3.5-.8 3.9-.9 3.5-.4 3.8-.6 3.6-.4 3.2-.3 3.5 .2 2.9-.3 3.4-.7 3.4-.4 3.6-.9 3.2-1.1 3.4-.6 3.3-.7 4.1 .8 3.4 .7 M295.9 21.2l0 2.6 .5 3.8 .4 3.7 .3 3.3 1.1 3 .7 3.5 1.1 3.3 .7 3 .9 2.9 .8 2.8 1.1 3.1 .4 3.2 .9 3.3 .4 3.4 .9 2.7 2.5 5.1 M303.6 12.8l2.3 2 2.6 3.1 2 3 1.8 2.7 2.2 3.2 1.6 2.6 2.6 4 .3 2.8 .2 4 .3 3.4 .2 3.7-.1 4.1 .2 3.7 1.2 3 1.6 3 1 2.9 1.2 3.3 .5 3.7 .6 3.4 M305.7 24.3l0 3.7-.1 3.6-.4 4.2 1.2 4.1 .9 4 1.4 3.6 2.3 3.3 2.7 3 3.5 .6 2.6 .5 M323.7 33.3l.7 3.1 1.1 3.4 .7 3.8 .5 3.3 .5 3.2 .3 2.3 M332.9 32.1l.2 3.6 .3 4.1 .6 3.6 1.3 4.2 1.4 3.5 M326.4 8.5l.3 3-.2 3.4 .6 3.3 4.3 3.7 3.4 3 3 2.1 1.3-2.4 1.3-3.6 1.3-3.4 1.5-3.2 1.2-3.5 1.7-3.2 1.4-3.1 1.4-2.3 M338 27.1l2.8-1.6 3.2-1.5 2.6-.9 2.6 1.9 2.8 1.8 2.4-1.8 3-2.5 2.2-1.3 .8 2.4 .9 3.5 .8 3.7 .6 3 .7 3.2 .4 3.4 .8 3.3 .6 3.1 .9 3.3 1 3.3 .1 3.1-2 2.8-2.4 2.2-2.2 2.2-.4 4.6 .5 3.4 1.8-1.9 2.6-2.9 2.3-2.8 2.5-3.3 2.4-2.9 2.5-2.8 2.8-3.3 2.4-3.1 2.6-2.5 1.4-3.7 .9-2.6-3.9-4-4.7 1.1-1.4-2.4-1.3-3.1-1.5-3.1-.8-3-.9-3.3-.9-3.8-1.3-2.6-.9-3.3-1.3-3.2-1.2-2.6-2.9-4.5 M344.5 52.5l.1-3.2-.1-3.4 .4-3.3 .6-2.9 2.6 .8 3.2 1.6 3 1.6 3.8-.3 3.9-.4 3.8-.8 3.5-.2 3.6-.7 3.1-.2 3.3-.7 3-.2 2.8-.4 M381 35.9l.1-1.9 2.8-.8 3.6-.7 4.1-.6 2.5-.1 3.1-.7 3.4-.2 3.2-.3 3-.8 2.4-.3 4.4-1.8 3.3-1.8 M406.5 2l.5 3.2 .2 3.5 .7 2.9 2.5 1 3.2 .9 3.2 .7 3 1 3.3 .7 3.2 .9 2.9 .4 2.9 .8 M427.2 2.1l-1.6 3.3-1.8 3.8-1.6 3.6-1.8 3.4-1.7 2.7-1.8 2.8-.1 3.9 M385.2 43.3l2.1 2 2.6 1.9 2.3 2.1 3.1 1.8 3 1.6 3.2 1.8 3 1.2 3.3 1.6 2.6 1.7 3.6 1.4 3.4 1.7 3.2 .5 2.9-1.9 3.4-2.3 2.8-2.4 2.1-2.4 M395.3 51.1l-.8 2.8-1.1 3.9-1.5 3.6-1.8 2.4-3-.1-3.2-1-3.5-1.3-2.9-1.5-2.5-4.9 M390.1 63.7l2.4 1.4 2.7 1.9 2.9 1.6 3 1.7 3.3 1.2 2.9-.4 3.3-.6 2.9-.8 3.2-.9 3.1 1.2 3.3 1 3.3 1 2.9 1.4 2.6 .9 M423.4 62.7l-1.9 2.7-2 3.9-1.1 2.5-.7 3.6-1.1 3.2-1.2 3-.1 3.9-.5 3.9-.6 2.9 M404 71.7l-2.2 1.1-2.5 1.6-3.1 1.4-2.8 1.7-3.1 1.6-2.7 1.6-2.5 .9-5.3 1.5 M344.3 69l.8-3.8 1.6-3.9 3.5-.6 3.6-1.1 3.8-.1 3.5-.9 M350.5 74.1l3.2-.8 3.3-.8 3.9-.7 3.6 .6 3.7 .9 3.5 .7 3.4 .4 1.8-3.2 .9-3.9 .8-3.1-1.1-3.9 M378.8 63.7l2.4 4 1.2 3.3 0 3.1-2.3 3.4-2.6 2.9 2.4 2.8-.4 3-.2 3.6-.6 2.8 M350.9 74.3l.7 2.9 .5 3.8 .9 3.4 .8 4.5 .7 3.6 M368.5 74l-1 18.5 M353.4 84.1l2.5 .1 3.8 .4 3.7-.2 4-.2 3.1-.3 3.3-.2 3.5-.5 2.7-.1 M232.1 66.4l2.9 1.3 4.1 1.2 4.3 .8 3.1-.1 3.6-.4 3.2-.3 3.5-.5 3.4-.2 3.7-.3 3.1 0 3.5-.4 3.4 0 3.2 .3 3.2-.2 2.7 0 2.8 .2 M243.6 69.7l-.8 5.9 1.5 2.8 1.4 3.1 1.5 2.7 2.8 3.1 2.8 2.9 2.1 2.1 M255.1 45l-1.5 2.1-1.5 2.8-2 3.3-1.5 3.2-1.7 3.5-1.2 3.5-1.4 3.4-.8 3.1 M231.8 43.3l4.2 .3 3.7-.1 1.4 3.2 2.8 .3 3.5 .1 3.7 0 4 .4 4.3-.3 3.1 .3 M232.2 83l12.4 .2 M233.8 83.1l.3 9.3 M263.8 92.5l2.9-2.7 3.6-2.9 3.2-2 2.5-1.7 M285.4 57.4l.4 3.3 .8 4.4 .4 3.9 .3 3.4 .2 3.2 .3 2.8 .2 3.3 1.4 4 1.6 3.6 1.2 3 M288.3 68.9l2.8 .1 3.2-.1 4.1-.2 3.6 .2 3.9 0 3.2 .8 3.5 .6 3.3 .7 3.6 1 3 1.2 3.3 .9 2.9 2.5 2.2 2.8 2.4 3.1 2.6 2.2 1.8 2.3 3.6-2.1 2.9-3.3 2.3-2.4 2.5-2.7 1.7-2.6 M288.1 77.4l10.3-2.1 M308.8 74.2l-1.4 3.6-1.2 3.8-.5 3.9-.6 3.6-.6 3.5 M447.2 2.3l-.2 2.6-.9 3.4-.7 3.5-.4 3.1-.8 3.4-.9 3.4-.8 3.3-.9 3.2-.6 3.1-1.1 3.2-2.2 3.3-2.2 3.6-1.7 3.3-1.9 2.4 M431.8 18.6l11.7 3 M445.2 11.7l24.9 4.8 M468.5 1.9l.4 3.1 .5 4.2 .3 3.9 .7 3.6 1 3.7 1.3 2.6 3.6 .1 4.3-1.1 2.3-3.1 2.9-3.2 2.4-3 3.4-.5 2.8-.6 2-3.8 1.9-3.9 1.2-2 M488.3 12.9l2.1 .1 2.5-.2 3.1 .2 3.3 0 3.1 .1 3.4-.1 3.3 0 3-.2 3.2 .2 3.1 0 3-.1 3.6-.6 3.1-.3 3.3-.9 2.9-.3 2.8-.8 3.1-.7 3.5-1.5 3.4-1.1 3.6-1.1 3.4-1.6 2.9-.8 2.4-1 M544.1 6.6l1.4-3.2 3.4-1.5 M480.3 22.1l.2 2.5-.2 2.8 .1 3.7-.1 3.1-.1 3.8 .1 2.7-.5 3-5.6-.1-1.8 1.9-1.5 2.3-1.6 2.3-1.6 2.9-2.1 2.9-1.8 2.7-1.5 2.6-1.6 3.1-2.2 3.2-1.8 2.6-1.8 3-2.1 3.3-1.4 3-1.4 2.3-1.4 2.4 1.1 3.8 2.2 2.3 1.8 2.3 M473.9 43.6l3.3 .7 3.3 .5 2.6 1.3-.3 3.8-1.1 3.6-1.7 3-2.1 2.5-1.4 2.6 3.5 1.6 3.1 2.2-2.6 3.4 2.6 4.1-2 2.5-2.5 3.4-2 3-.5 3.6-.3 4-.7 3.2 M431.8 75.4l2.6 1.5 2.4 1.7 2.7 1.6 2.8 1.4 2.1 2.8 2.5 2.5 1.7 2.7 2.4 3.1 M494.6 11.8l-.7 2.7-.7 3.3-.3 3.6-.6 3.5-.2 3.4 1.4 3.6 2.4 2.8 .5 2.9 1.1 2.8 .6 3.3 1.8 3.3 2 3.3 1.5 3.3 .7 3.3 .4 2.7 .3 3.3-1 2.7-.6 2.9-1.2 2.9 0 3.3-.6 3.1 0 3.5 .1 2.9 1.5 4.7 1.8 3.5 M526.4 2.2l1.6 2.3 1.8 2.4 2.4 2.9 1.6 3.2 1.7 3.1 1.5 2.9 1.3 3.5 1.1 3.1-.1 3.2 .4 2.6 .5 3.4 .1 2.8 .2 3.2-.1 3.9-.1 3.6 .2 3.9 0 3.3 .1 3.2 2.3 5.3 .6 2.9 .2 3.1 .3 3.1 .2 3.5 .1 3.2 .6 3.3 .1 3.8 .5 2.8 .2 3 M539.2 39.5l-1.4 2.3-1.6 2.7-1.8 2.8-1.5 2.5-3.1 2.4-3.6 1.6-2.7 .8-3.2 .7-2.9 1.1 M540.6 46.9l3.7-.5 4 .5 .1 2.5 .4 3.4-.3 3.5 .2 2.4 M554.4 62.4l3-1.8 2.8-1.9 3.1-2.4 3.8-3.9 3.2 .9 2.9 1.2 3.1 .7 1.7-3.3 2.2-3.3 2.4-.5 3.3-.4 2.8-.1 3.6-1.1 3.7-1.2 3-.5 M602.7 82.9l-2.6-.1-3.7-.3-3.6-.1-3.2 0-3.1 0-2.6 3.2-1.5 3.9-1.3 3 M507.3 59.9l.4 2.8 .4 3.1 .6 3 .5 3.6 .8 3.2 1.2 3.5 .5 3.6 .6 3.4 .8 3.7 .5 2.9 M120 92.3l-1 3.8-1.7 4.1-2.4 4.8 M126.3 92.3l.5 3 .8 3.4 .3 3.5 1 3 4.3 0 4.6-.4 3.5 .3 3 0 2.7-1.9 2.5-2 2.4-2.1 2.5-3.8 1.8-2.8 M117.2 117.3l2.9 .1 3 .1 2.7-.1 3.4 .3 3.5 .1 3.6 .1 3.4-.1 3.7 .1 3.4 .2 3.2-.4 3.3-.1 3.4 .2 3.4-.4 3.1-.2 3.5-.3 3.3-.2 3.2-.3 3.4-.1 3 0 3.1-.1 3.5 0 3.4-.5 3.2 .4 2.7-.4 3.2 .2 2.5-.1 3.2-.4 3.2-.9 3.1-.6 3.2-1.3 3.2-.8 2.8-1 3.4-1.5 3.2-1 2.8-.9 2.7-.6 M169.1 92.5l.2 2.7 .4 3.9 2.8 2.1 3 2.1 3.1 1.9 2.9 3.3 2.5 3.2-1.4 4.3 .6 4.5 2.3 2.5 2.2 2.5 2.5 2.8 1.9 3.6 2 3.8 1.3 4.1 1 3.5 1.1 4.3 .4 3.7 1.3 5-1.8 3.9-2 3.8 .1 3.5 1.1 4.2 .5 3.4 1.4 3 .7 3.8 .3 3.7 .4 3.7 .7 3.2 M204.2 92.4l-.6 3.1-.7 3.4 1 3.3 .8 2.9-.1 3.5-.2 3.6-.4 3.2 M226.9 92.4l1.3 3.6 .9 4.2 3 5.3 M118.1 143.4l2.8 .9 2.9 .9 5-.5 4 2.8 3.6-3.1 3.2-.6 3.1-.4 2.2-1.8 2.5-2.2 1.8-2 2.3-3.6 1.6-3.1 2.4-.6 4.1-.5 2.9-.2 3.2-.2 3.4-.2 3.7 .1 3.7-.1 3.3-.3 2.7 .2 4.7-.2 3-.4 M156.5 131l-.5 2.7 0 3.2 0 3.2-.5 3.6 .4 3.5 0 3.3 .5 3 1.2 4.1 .7 3.6-2.9 2.4-3.4 1.7-5.1-1.6-2.9 .3-2.8 .2-3.1 .2-3.6 .2-3.5 .3-3.3 .1-3.6 .5-3.7 .2-3.3 .4-3.4 0-2.7 .1-2.3 .2 M158.4 161.5l2.7-.4 3.1 0 3.6-.2 3.4 .3 3.1-.4 3.2-.2 5.2-2.5 1.1 5.8 .4 3.2 .4 3.8 .3 3.1 1.9 2.6 2 2.6 0 3.3-.6 3.6-.2 3.5-.6 2.7 M105.9 181.8l2.3 .1 2.9-.1 2.4-.1 3.3 .1 2.7-.2 3.3-.1 3.3 .2 3.2-.4 3.7 .2 3.2 0 3.5-.2 3 0 3.3-.5 2.8 0 3.6-.1 3-.2 3.3 0 3.1-.3 3.5-.1 3.2-.2 3.3 0 3.2 .1 3.3-.1 2.7-.2 3-.2 2.4-.2 2.4-.3 5.6-.1 2.4-.4 M142.8 181l1.7 3.3 2.4 3.8 3.6 2.4 4 1.8 M196.6 139.9l2.6-.2 2.8-.4 3.7 .2 3.2-.4 3.4 .1 3.2 0 3.8-.3 3.5 .3 3.3-.3 3.3 .4 2.4-.3 M215.4 138.9l-1.1 3.6-2.2 3.5-1.7 4-.6 3.1-.5 2.8 .1 2.7 1.7 3.1 2.6 2.7 .9 1.9-3.2 .6-3.9 .4-4 0-3.7 .2-3.3 .2 M214.5 166.7l3.9-.9 3.8 .2 .8 3.5 .1 4.6 .7 3.1 .3 3.7-.2 3.4-1.2 2.8-2.6 .4-3.5 0-3.2 .2-3.8 .1-3.2 .4-3.2 .1-2.8-.2 M221.9 165.8l.1-3.7 3-.2 3.9-.6 3-.1 M222.7 187l9.2-.6 M230.2 118.1l.6 20.9 M257.6 92.6l.1 2.6 .3 2.9 .2 3.4 .4 3.4 .4 3.3 .6 3.5 .3 3 .3 3.7 .8 3.1 .7 3.1 .3 3.2 .8 2.9 1 3.9 1.3 3.6 1.6 2.9 1.7 2.5 1.8 2.9 1.6 2.9 2.4 3.1 1.7 2.6 1.8 2.5 2 2.4 2 2.5 2.2 2.9 2 2.8 2 2.3 1.4 2.2 2.7 3.5 2.3 3 1.9 2.3 1.9 2.7 2.4 3 1.4 3 1.3 2.4 M284.4 92.3l.2 2.7 .9 3 .2 3.2 .3 3.9-.1 3.2 .2 3.1-.5 3.5-.1 3.3-.1 3.5-.6 3.1 .1 3.5-.5 2.6-2.3 2.3-2.8 1.4-2.8 1.1-3.6 2.6-3.8 1.9-4.1-2 M233.3 92.7l0 2.2-.2 2.5-.2 3.4-.3 4.3 0 2.7 .2 3.1-.1 2.9-.2 3.1-.1 3.4 .2 3.4-.2 3.5 .2 3.7 .2 3.5-.4 3.1 .2 3.1-.2 2.8 .4 2.9-.3 2.3 M232.8 105.3l2.3-.4 3.5 0 3.4-.4 3.3-.2 3.6-.4 3.3-.4 2.7-.8 1.6-3.2 .7-3.8 .2-3 M259.3 100l3.1-.4 3.8-.7 4-.6 3.9-.7 4 .9 3.2 .8 2.8 .7 M259.6 106.7l2.9-.6 4-1 4-.3 3 .9 3.5 1.1 3.3 1.2 3.2-1.1 2.5-1.9 M259.6 113.5l2.8-.1 4-.3 4-.1 2.9-.1 3.6-.4 3-.1 3.3-.2 3-.4 3.6-1.4 3.6-1.3 2.7 .1 3 0 3.6-.1 3.3-.3 3.6 0 3.6 0 3.5 .3 3.4-.2 3.2 .2 3.4 0 3.7 .1 3 0 3.5-.6 3.5 .2 2.8-.3 2.5-.3 M286.3 97.6l3.2 .9 3.9 .4 2.2-1.2 2.8-1.8 2.8-1.8 2.2-1.6 M293.4 99l2.4 .5 2.7 .6 3.2 .7 3.2 .6 3.5 .4 2.9 0 3.2-.2 3.4-.1 3-.2 3.6 0 3.4-.5 2.9-.1 3.1-.3 2.9-.1 4.2-2 2.9-1.5 2.7-1.6 2.6-2.6 M309.7 102.1l.2 2.9-.1 4.2-1 3.1-.9 2.8-.6 2.9-1 3.8-.5 3.9 2.6 2.4 2.8 2.4 .3 4 0 3.7 M284.3 116.8l2.5 1.2 3.3 1.3 3 1.4 2.9 .8 3.5 .5 3 .3 3.7 .9 2.7 .2 3 .3 2.9 .1 3.2 .2 3.1 .5 3.1 .3 3.9 .8 3.3 .4 3.5 .5 3.7 .9 3.2 .5 2.3 .1 M330.2 109.2l1.6 2.2 2.2 3.3 2 3.2 1.7 2.5 2.3 3 2 2.3 2.3 2.7 2.3 2.6 2.7 2.8 2.7 3.2 2 3 1.9 2.9 1.8 3.3 2 2.3 .1 3.9-2.1 3-2.3 3.3-2 3.5-1.7 3.2 .9 3 1.4 2.7 2 3.2 1.8 3.3 1.7 4 .4 4.1-.4 3.8 .1 2.9 M336.6 100.3l1.1 4.9 4.1 1.6 3.6 1.6 1.6 4.3 2.5 2.8 2.4 2.3-.7 3.2-.8 3.4 2.2 2.4 2 2.9 2.4 3.8 3.2 .1 3.6 .6 3.4 .3 3.4 2.6 3.2 2.8-1.5 4.7-3.9 .9-3.7 .4-1.3 5.4 2.5 1 3.5 .6 3.1 .8 2.2 2.9 2.7 2 3.4-.2 3.5-.1 2.6-.8 M349.6 92.5l.4 2.5 .5 3.3 .6 3.5 .7 3.4 1.5 3.2 1.6 3.4 1.5 3.2 1.8 2.9 1.5 3 2 3.3 1.6 2.9 1.4 2.4 2.7 5.2 M355.5 92.7l1.5 2.8 1.9 3.6 1.9 3.5 1.9 2.6 2.5 2.6 2.5 2.7 2.5 2.4 2 2.5 2.2 2.8 2.1 2.2 1.8 2.8 1.9 2.7 1 2.8 1.5 2.6 1.2 2.9 1.3 2.8 .7 3.4 1.2 3.8 .5 2.9-.3 3.5-.3 3.5-.1 3.6 2.5 1.9 3.2 2.3 2.6 2.1 1.7 2.9 1.7 3.5 2 3.8 .4 2.6 .5 3.4 .3 3.6 .3 3.3 .3 3 .6 2.4 M365.9 92.3l2.6 5.2 3.5 .2 4.1-.1 3.4-2.4 3-2.6 M382.6 92.5l1.1 2.3 1.1 2.9 1.7 3 1.1 3.3 1.3 2.4 1.4 5.4-2.7 1.1-2.6 1.6-3.5 1.2-2.8 1.1-2.4 1.1-4.1-2.6 M395.2 92.6l1.6 2.1 1.5 2.9 1.7 2.6 1.8 2.5 1.1 3.6 .2 2.6-3.1 .9-3.2 .6-3.8 .9-2.8 .1 M402.7 109.3l5.2 2.1 M413 92.3l.2 2.6-.1 3.4-.1 3.2-.1 3.4-.3 3.4 .1 3.5-.3 3.4-.1 3-.3 2.9-.1 3.2-.9 3.4-.7 3.8-.3 3.4-.9 3.5 .1 3.3 .5 3.4 .4 3.1 .4 2.8 .3 3.4 .4 2.7 .2 3.3 .4 3.7 .2 3.4-.2 3.4 0 3.9 .2 3.4 0 3.6 .2 4.1 .6 3.8 .5 3 M408 119.8l-3-.2-3.4-.4-4 .1-2.8 .6-3.3 .9-3.5 1.2-2.8 1-3.4 2.3-2.7 1.9-2.8 2.3-3.5 2.9-2.9 2.4-2.8 2.3 M412.7 111.8l2.9 .4 4.4 .1 3.2 .4 4 2.6 5-.6 M391.4 133.2l3.1-.6 3.2-1 3.6-.4 2.7-.2 5.4 2.1 M410.4 141.6l2.9-.5 3.7-.8 3.6-.5 4.1-.5 3.9-.6 3.5-.3 M385.1 137.2l2.1 2.6 3 3.3 2.5 2.9 1.9 3.1 1.8 1.9 3.9 .7 4.4 .6 3.5 0 M389.1 152.2l7.4-1.3 M386.8 157.3l2.5 3 3.3 2.4 2.6 .1 3.5 .2 2.9 0 3.8 .1 3 0 3.4 .3 3.3-.4 3.9 .1 3.7-.1 3.4-.1 3.3-.4 2.8 .3 M359.6 148.5l-2.5-.4-3.3-.7-3.3-.8-3.5-.6-3.3-.6-3.5-.6-2.8-.6-3.5-.1-3.5-.6-3.4-.4-2.6-.2-3.2-.5-2.9-1.2-3.1-1.4-3.5-1.6-2.6-.2-3.3-.6-3.5-.9-3.4-.5-3.4-.8-3-.6-2.8-.6-2.9-.5-2.4-2.9 M286.7 133.2l1.1 3 .5 3.3-2.5 4.3 1.4 2.9 1.8 3.7 1.5 3.3 1.3 5.1 3 2.1 3.1 2.6 3.2 1.9 M232 147.2l3.4 .3 4.4 .7 3.6 .6 2.8 2.5 3.5-1.5 4-.2 3.8-.9 2.1-2.2 2.2-3.2 1.7-2.5 1.5-2.5 M250.1 149.8l1.4 2.9 2.1 3.3 2.1 2.7 1.9 2.7 .7 3 .7 3.7 .6 3.6-.8 2.6-.4 3.4-1.1 2.6 .2 3.1 .2 3.2 .1 3.1 .4 2.9 M232.2 181.9l3.4 .8 4.4 1.2 3.6 .5 2.4-4 3.6 0 4.6 0 3.5 .2 M265.3 192.5l1.9-1.7 2.3-1.8 2.9-2 2.7-1.8 3-2.4 2.5-1.7 2.5-1.8 2.2-2.2 2.1-2.3 2.2-1.8 2.1-1.8 2.8-1.8 2.5-1.8 2.8-1.9 2.2-1.7 2.6-3.2 2.3-3.1 1.7-2.6 M321.2 142.5l1.5 3.1 1.1 4.3 1.2 3.5 1.3 2.9 2.8 1.9 2.3 2 2.4 1.1 2.7-5.1 1.7-2.7 1.9-3.6 1.8-2.4 M310.9 154.8l15.5 1.6 M303.4 166.6l2.7-.4 3.3-.4 3.5-.1 3.6-.1 3.6-.5 3.5 .2 3.6-.1 3.5-.1 3.2 .2 2.7 .7-.3 3.3-1.1 3.5 1 3.2 .3 3.1 0 3.5-.3 3.4-.8 3.4 0 3.2 M303.5 166.6l1.1 2.5 1.6 3 1.1 3.2 .6 3.6 .1 3.4 .3 3.9 .1 3.3 .2 3.1 M308.4 183.1l3.4-.3 3.2-.9 3.8-.1 4 1.1 3.6 1.4 4.7-.2 4.1-.2 M336.7 156.3l1.4 2.3 2.4 2.8 2.5 .8 2.8 1.2 3.1 .9 3.2 .8 2.9 1.3 3.1 .5 2.9 1.4 2.6 .6 5.1 2.7 2.4-1.8 2.7-2.3 2.4-2.2 1-3.4 .1-3.2 M341.7 176.5l14 0 M340.2 176.7l0 16 M368.5 171.5l-.6 20.8 M359.7 182l2.6 .3 3-.1 3.3 .4 3.9 .7 3.2-.2 3.6-.1 3.9-.3 3.5 .2 3.6 .3 3.4 .7 3.5 1.2 3.2 .7 2.3 .8 M383.7 174.3l1.9-2.4 1.8-2.9-2.4-3.6 5.3 2.2 2.5 1.9 2.3 2.3-.2 3.4-.9 4.1-4 3.7 M413.1 186.7l2.1-1.7 2.9-2 2.8-2.6 2.4-1.9 2.7-2.6 2.6-1.9 3.4 .3 M391.4 133.1l1.1 12.9 M447.4 92.4l-.6 2.9-.9 2.9-1 3.9-1 3 .2 3.6-.5 3.2-.1 2.7-.1 3.6 0 3.1-.4 3.1-.4 3.6-.6 2.7 .5 4.1 .4 3.7 M432.2 114.9l2.2-.5 2.6-.6 3.2-.6 3.7-1.2 3-.3 3.1-.2 2.9-.6 3.3-.6 3.3-.5 3.2-.6 3.4-.2 2.7-.8 2.7-.2 4-2.4 2.7-2.6 2.5-2-2.6-2.7-2.5-2.1-1.6-3.8 M480.7 100.6l2.4 .4 2.8-.1 3.3 .5 3.3-.1 3.3 .2 3.7 .1 2.7 .2 2.3-.2 .8-4.8-1.4-4.5 M461.2 92.6l14.4 3.9 M474.1 107.9l-1.6 3-2.4 3.2-1.6 2.3-2 2.8-1.4 2.5-.3 4.6-.2 4.6-.1 4.2-1.7 3.3-2.7 .1-2.7 .1-3.4-.1-3.3 .4-3.7-.3-3.3 .1-3.3 .1-3-.5-3.1 .3-2.4-.4 M474.2 116.9l-1 3.1-.9 3.7-1.1 3.4-1 3.6-.4 3.4-.5 2.7-.3 3.1-1.1 3-1.3 3.9-1.7 3.6-.9 3.2-.7 3.6-.3 3 M474.2 117l2.3 1.5 4.1 1.2 2.8 .4 2.8 .3 3.4 0 3.4-.1 3.7-.1 2.8 .2 2.6 .1 1.2 3.2 2.9 .1 3.6 .1 4.1-.5 3.4 0 3.9-.3 2.6 0 M515.7 92.3l.2 3.8 .4 4.2-2.9 2.3 4.1 2.4 2 3.2 1.7 3.4 1.7 3.5 1.4 3.1-.6 4.9 1.1 3.7 .8 4.1-4.4 3.9-3.2 2-3.2 3-.4 2.5-.5 3.3-.1 3.3-2 3.6-2.1 3.9-.4 4.2-.1 4.8 0 3-.5 3 .2 3.8-.3 3.4-.3 3.3 .6 4 .5 3.6 .6 2.8 M521.1 111.7l3.1-.4 3.6-1 2.6-2.5 5 2.6 1.3 3.8 1.3 3.9 3.7 3.5-.2 3.1-.3 3.2-.3 3.6-.5 3.2 0 4.4 .8 4.6 2.4 3 2 3.1-.7 2.7-.9 3.1-1.2 3.1 .4 3.7 .8 3.6 .2 3.2 M545.5 92.5l-.1 2.6 .3 3.2 .1 3.1-.1 3.7-.2 3.8 .2 3.2 .1 3.4-.4 2.3-2.5 4.2 M541.5 121.7l3 .3 3.6 .4 4.2 .1 3.4 .2 4-.2 3.5-.2 4.2 .1 3.2 1.2 4 1.5 3.4 1 3.4 1 2.1-2.2 2.5-2.8 1.6-2.2 3.7 1.8 .7 4.1-.1 3.8 M555.5 122.4l-.1-2.6-.4-3.6-.1-3.9 .4-3.1 .7-2.6 2.3-.2 3.1 .6 2.8 .5 3.7 .6 2.9 1 2.9-.2 2-2.1 1.8-3.6 1.3-3.1 2.1-3.8 1.8-3.6 M431.9 158.9l3.6-.6 4 .1 3.3 .2 3.9 .5 3.6 .8 3.4 .1 3.1 .3 3.1-.3 3.6 0 2.9 .3 2.7 .5 3.5 .8 3.8 .5 2.9 .2 2.8 .5 3.3 .2 2.9 .4 3.3 .3 3.7 .3 3.3 .7 3.2 .1 3.6 .6 3.2 .2 3.1 .6 3.1 .2 3.7 .5 3.3 .2 3.5 .1 3.1 .2 3.3 .5 3.1 .4 3.3 .4 3.4 .2 2.6-.1 3.6 .4 3.5 .5 3.3-.1 3.6 .2 2.8 0 2.4 .5 2.9 0 M455.6 139.5l-.5 3.4-.4 3.6-.2 3.6 1.2 4.8-2.2 5.3-.2 2.9-.7 2.9-.1 3 .3 3.2 .1 3.1-2 3.1-2.1 3.5-1.5 3.6-1.4 3.8-1.3 3.2 M448.5 180.5l3.6-.1 3.9 0 3.4 .3 .6 2.4 3.2-.8 3.5-1 3.7-.9 2.9 .9 3.5 .9 3 1.3 3 .3 3-2.1 2.9-3.3 3.2-2.3 3-.6 4-.7 3.4 0 3.3-.3 3-.4 M470.2 180.3l-.8 3.8-1.3 3.9 2.1 4.5 M439.6 158.1l-1.9 2.9-1.7 2.7-.4 4-.2 4-1.3 3.1-1.2 3.3-.7 2.5 M522.4 167.9l-.2 3.5-.1 4.1 .8 3.2 .9 3.3-.3 3.3-.1 3.9-.4 3.2 M537.8 168.9l-.3 3.5-.1 4.5-1 3.1-1.3 3.4-.8 3.4-1.6 3.2-1.4 2.5 M432.1 148.8l.4-2.9 .3-3.2 .7-3-1.7-1.4 M433 139.7l22.4-.3 M156.4 205.2l2.4-.3 3.4 .3 3.5-.4 3.9 0 3.1 .1 3.2 .3 3.3 .7 3.4 .7 3 .7 2.7 .6 M184.1 192.6l.7 2.4 .8 3.3 1 3.1 .8 3.3 .9 3.1 .2 3.4 .2 3.3 .1 3.7 .4 3.6 .8 4.3-.4 3.3-3.1 1.4-3.6 .5-3.4 .7-3.8 .9-2.7 .6 M189.6 229.4l11.4 1.6 M194.4 192.6l3.8 3.6-2.4 5.2 3.9 3.7-.9 3.5-.6 2.9 2.4 3.5 2.9 3.2 1 3.2 .1 3.1-2 2.9-1.6 3.4 .2 3.4 1.1 3 2.3 2 2.8 1.6 3.6 2.5-3.7 4.2 2.4 2.9 2.6 3.5-1.7 3.2-2.2 3-1.2 2.9-1.3 3.7 1.4 3.9 1.1 3.6-1 5.3-2.8 2.1 2.5 5-1.9 3.2-1.8 2.8 M200.7 199.7l3.1-.3 3.2-.4 3.6 0 3.6-.2 3.6-.1 3.9-.5 3.2 .3 2.6 .2 1.4 2.8 .4 3.7-.1 3.9-.5 3.5-1.1 3.1-2.8 .7-3.1 .8-3.7 .9-3.6 .4-3.4 .1-4.3-.1-3.5-.4 M227.8 205l4.1 0 4.8-.6 3-2.5 3.5-3.1 2.3-1.2 3.4-1.2 2.7-1.6 3-1.5 2.3-.6 M236.7 204.8l-.9 3-.2 3.7-.1 4.2 1.7 2.7 2.3 3.1 2.1 2.9 1.5 2.8 .7 3.2 .5 2.9-2 2.9-2.1 3.2-2.1 3-1.1 3.8-.2 3.9-.2 2.9 .7 2.8 .6 2.9 1.1 3.5 1.5 3 2.5 1.7 2.6 1.8 2.7 1.6 .1 4.5-.2 4.6-1.2 3.8-1.4 3.9 1 5.2 M201.9 236.9l3.3 .5 3.3 .3 3.7 .5 4 .4 3.5-.1 2.7-.3 1.4-3.5-.4-4.4 .7-3.5 2.5 .2 3.6 .4 3.4 .5 3.2 .3 3.3-.5 2.8-.6 M176.6 266.3l1.7-1.6 2-2.1 2.6-2.3 2.2-2.2 2.5-2.4 2-1.8 1.3-3.8 1-2.7 2.4-1.7 2.7-1.6 3.1-2 2-1.3 M213.8 251.4l2.8 .6 3.7 .9 3.8 1 2.9-.1 3.7 0 2.9 0 2.8-.3 M238.1 211.5l2.7 1.2 3.9 .9 3.8 .9 3.2 1.1 3.6-.7 3.1-1.2 3.7-.6 3.1-.4 3.6-.3 3.7-.1 3.8-.5 3.4-.3 3.9 0 3.6-.1 3.8-.7 3.4-.1 3-.3 2.8 .2 M261.9 192.5l.4 2.6 0 3.3-.1 3.3-.3 4 .5 3.5-.2 3.7-.5 3.3 .1 3-.5 3.3-.2 3.4-.2 3.1 .1 2.8-.4 3.1 .5 2.2 2.4 .6 3.2-.9 3.2-1 2.4-1.9 2.8-2 2.3-2.5 1.8-2.7 1.2-3 .6-3-.1-3-.3-3.2-.3-3.2-.1-3.2-.2-2.7 2.2-3.2 2.9-2.2 2.9-.6 3.5-.9 2.7-.9 1-5.2 M246.8 230.7l3.8 1.1 4.1 1.7 .2 3.2 .4 3.4 .4 3.2 4 4.2 4 0 3.6-.2 .1-2.5 2.6-.2 3.3-.2 3.2-.7 3.3 .2 2.7-.3 M298.9 192.6l.9 3.1 1.2 3.4 .4 3.8 .1 3.6-1.1 3.7-1.5 2.9-1.6 3.3-2.1 2.7-2.6 3-2.5 3.2-2.4 2.9-1.5 3-1.3 3.2-1.2 2.9-1 2.5 .1 3.5 .6 3.7 1.9 4.1 1.4 2.7 1.7 2.2 1.8 2.8 .9 3.9 .2 3.6-1.1 4.2-1.3 3.8 2.6 2.8 2.5 3.7-1.2 2.2-2.3 3-1.7 2-2.4 4.6 M259.7 247.5l.2 2.7 0 3.2 .1 3.6-.2 3.2 .2 3.5 .3 3.8 0 3.8 .3 3.8 .2 3.5 .3 3.4-.2 5-.1 3.5 M237.7 258.7l3.2 .2 3.9 .5 3.5-.2 3.6 .5 4.5-.7 3.1-.2 M260.3 263.9l2.2 .3 3 .3 3.6 .4 3.2 .5 3.7-.5 3.5-.2 3.8-.2 3.8-.4 2.8-.3 M246.8 290.6l2.7 .3 3.8 0 4 .1 3.3-.2 3.5-.5 2.7 .1 3.2-.4 3.1-.4 3-.2 3.6-.4 3.1-.3 3.7-.2 2.3-.5 M282.5 241.6l2.7-.1 2.9-.1 3-.2 3.5-.3 3.1 .1 3.6 0 3.2 0 3.6-.6 3.6-.1 3.3-.4 3.8-.5 3.4-.8 3.8-.3 3.1-.5 2.7-.5 M301.5 210.6l2.7 1.7 2.5 1.9 2.7 2.7 .8 2.5 0 3.3 .6 2.8 .3 3.5 .2 3.7 .1 4.2 .4 3.6 1.2 3.2 1.4 3.1 1.2 3 1.6 2.8-.9 3.9-.4 3.5 1.6 3.1 1.9 3.6-1.4 3.1-2.6 2.9-3.1 1.2-3.2 1.5-1 2.7-.7 2.9-.9 3.2-.9 2.6-1.5 5.8 M304.1 192.3l2 2.3 2.2 2.5 2.5 3.2 2.3 2 2.2 2.2 2.9 2.5 2.5 2.3 3.1 1.1 3.1 1.8 2.7 1 2.3 .8 M301.7 210.5l2.4 .2 3.2 .8 3.1 .5 3.2 .3 3.4 .5 3 0 3.4 .2 3.2-.3 2.9 .2 2.5-.1 M310.5 224.2l21.4-1.6 M316.7 253.6l15.1 .3 M289.1 274l2.7 1 3.1 .9 3.8 1.4 3.2 .6 3.8-.9 3.8-1.8 M319.6 266.7l.9 3.2 1.6 4.1 .4 4.3 .9 3.4 2.9-.1 3.3-.9 .4-4.1 .2-3.9 .4-3.6 1.4-1.2 M305.3 282.9l3.2 1.3 3.7 1.1 3.7 1.6 3.5 2.2 4.2 1.7 2.9-.9 2.8-.7 2.5-.8 M337.7 192.6l-.1 2.6-.5 2.8-.6 2.9-.5 3.2-.5 3.8-.4 2.9-.7 3.5 .1 3.7 .1 3.5 .1 3.3-.1 3.9 .4 3.2 .4 2.9 4.4 3.6 3.4-.7 4.1-.6 3.8-1.5 3.4-.8 3.2-1.7 .1-3.3 0-3.6-.4-3.9 .3-2.9 M331.9 214.6l2.6-.2 3 .7 3.3 .6 3.8 .9 3.5 1.2 3 1.1 2.6 .4 3.7 0 2.9-.2 3.3 .4 3.4-.3 3.4 .3 3.3 0 3.9-.4 3.3 .3 3.3-.1 2.6-.1 5 .3 4 .3 2.6 .8 3.3 1 3.1 1.4 3.7 1.1 2.6 .9 2.6 .8 M357.4 192.7l-1.4 3-2.3 3.6-1.1 3.2 .1 3.4 1.2 3.1 .5 2.5-1.7 3.9-1.3 3.3 M368.6 192.7l-.2 2.3-.1 3.5 .1 3.1 .2 3.9 0 3.1 .6 3.1 1 4.1 1.6 2.9 M380 192.5l0 27 M357.3 226.8l29.5-1.6 M389.9 192.4l2.5 3.4 1.9 4.5 1.4 3.8 0 3.7-3 2.4-3.2 2.5-.9 3.1-.9 3.2-.7 3-.4 2.9 1.3 3.8 1.4 3.1-.3 4.4-1 3.5-2.3-2.3-2.6-2.9-2.4 2.2-1.5 3.2 1.7 2.3 2 2.4 1.1 3.8 .2 4.3-.8 2.7-1.3 3.5-1.4 2.7-5.3-2.5-4.1-3 1.4 3.4 1.6 4.2 1.3 4.2 .9 3.8-2.2 5.2-3.2 1.7-3.9 1.5-3.1 1.5-2.6 2.4-2.2 1.9-1.7 2.3 3.9 4.3 M401.9 192.5l.2 2.5 .5 3.1 0 3.6 .1 3.7 .3 3.4-.1 3-.5 3.8-1.1 3.6-.6 2.5 M413.6 192.4l.6 2.5 .7 2.8 .6 3.2 1.2 2.8 .7 3.6 .8 2.6 .7 3.2 .7 3.3 1 3.5 .5 3.2 .4 2.5-3.9 .4-3.9-.3-1.9 2.8-2 3.8-1.1 3.6-.8 3.3-.6 3.3 .1 3.7 .2 2.6 .3 3.2 .5 3.2 .2 3.9-.1 2.6-.1 3.3 .1 3.6 .1 3.4-.3 3.8 .3 3.3 .1 2.6 .7 4.2 .8 3.7 1 2.8 M421.2 225.8l4.6 3.9 0 2.7-.1 4-.6 3.7 .2 3.6 .5 2.9 .3 3.7 1 2.9 .7 3.1 1 5.2-2.3 2.1-2.7 1.6-3.3-1.1-3.1-.2-.8 3.6-.5 4.3 .2 3.4 2.3 2.8 2.6 1.1 5.3-2.6-.3 3.4 0 4.3 1.6 3 2.2 2.7 1.6 2.4 M428.5 192.4l.2 3.7 .2 4.3 2.1 2.5 1.9 2.4-2.1 3.5-1.9 2.8 M421.2 213.5l3.2-.9 4.5-1.2 3.6 .3 3.3 .2 4 .1 3.9 .2 3.2 0 4 2.2 3.7 2.2 2.2 2.5 1.9 2.6 2.1 2.5 1.9 3.7 1.5 3.4 1.8 3.5 1.8 2.6 1.7 3.2 1.4 3 1.3 2.4 .5 3.8-.3 2.9 M441.8 192.3l1 3 1.6 3.6 1 3.7 .6 3.7 .3 3.3 .7 2.7 M421.4 215.8l2.7 0 3-.2 3.7 .1 3.6 0 3.4-.5 3.6 .2 2.9-.1 3.2 1.7 1.7 2 2.9 1.5 2.5 1 3.3 1 3.2 .8 3.8 .9 2.9 .9 3 .5 2.9 .1 2.9 .6 3.4 .7 3.3 .5 3.5 .5 3.6 .4 3.2 .7 3 .4 5 1.2 M471.1 192.6l3.4 1.2 4 2.7 1 2.4 .8 3.2 .9 3 .8 3.3 .6 3.2-.4 3.2-.7 3.1-.5 3.4-.4 3-.7 2.5 M508.1 192.6l-.5 2.8-.2 2.8 0 3.7-.5 3.5-1.2 3.2-.7 3.2-1.2 2.9-1 3.3-.3 3.3-.3 3.3-.5 3-.1 3.3 .3 4 .7 3.5 .1 3.2 M512.5 192.5l.9 4 2.6 .6 3.8 .5 3.4 .8 4.9 .1 3.8 .3 M361.9 235.8l.6 3.8 .1 3.7-.6 3.5-.8 3.1 2.8 3 2.7 3.3-1 3.2-.6 3.1-.1 2.6 3 .6 3 .1 3.7 .4 3.3 .3 2.7-.1 M332 253.9l3.9-4.5 3.3-.5 3.7 .2 3.9-.3 3.1 .1 1-5.2 3.3-.6 3.8 0 3.1-.4 M331.8 267.6l2.9-3.5 2.6-.5 4 0 3.7 .2 3.5-.2 2.9-.5-.7-3.4-.9-3.3 3.1-.4 3.4-.1 3.8-.3 3.6 .2 2.8 0 M351 263.3l1.7 2.2 1.7 2.7 2.1 3.4-.4 3.1 0 3.6 .1 4-.3 3.8-.3 3.3-.2 3.1 M384.3 247.6l2.5-1.5 3.5-1.7 3-.8 3 .8 3.1 2 2.8 .9 3-1.5 2-2.1 M394.5 258.7l2.9 .9 3.9 .9 3.7 .8 3.7 .7 3.3 .8 3 .6 2.4 .3 M394.4 259l.1 2.9 .7 3.7-.8 3.4-2.8 .4-4.1 .5-3.9-.1-2.9 .7-2.1 2.5-.8 2.7-1.2 3.7-.8 3.4-1.2 3.1-1.2 3.7-.7 2.9 M394.4 268.8l.6 3.2 .8 3.2 .6 3.2 .8 3.5 1 3.8 1.6 3.7 1.2 3.1 M332 234.8l3-.3 M331.8 290.5l3.7 0 4.3-.5 3.8-.8 2.3-4.6 3 .7 3.7 1.6 3.2 1.4 M203.4 292.3l-2.5 2.4-2.5 2.9 1.1 2.9 2.3 3.4-.6 4.2-.3 3.4 M201 311.5l3.2-1 4.1-1.2 3.2-.8 3 .1 3.2-.3 3.2-.4 3.2 .1 3 1.8 1.7 2.3 M247 292.6l-1.7 3.7-2.5 3.7-2.1 2.2-2.3 2.2-2 2.1-.5 2.7-.3 3.1-.2 2.9 .4 3.8 .3 3.7 .4 2.9 2.7 5.3 3.1 1 3.1 1.2 1 3.7 .4 4.3-1.9 2.6-1.9 2.2 .9 3.7 .1 2.9-2.4 .1-3.3 .5-3.6 .1-3.2 .2-2.3 .3 1 3.9 2.7 3.7 M245.3 333.7l32.1 .7 M286.3 292.6l-1 3.1-1.2 3.4-1.4 3.5-1.7 3.3-2 2.7-1.6 2.8-.7 3.4-.6 3.4 2.7 5.2-1.3 2.7-1.1 3.5 1.1 5.2 1.8 2.3 1.5 2.6 1.9 2.6-1.6 3.4-.9 2.8 3.5 4.2-.4 3.1-.6 3 M283.9 352l3.1-.7 3.8-.2 3.8-.3 3 .3 .4 3.6-.5 4.4 .3 3.8 2.8 .5 3.4 .5 4 .8 3.6 .3 2.6 .1 M304.3 292.4l-.6 3-.6 3-.6 3.3-1 3.5-.9 3.3-1.4 3.1-1.3 3.3-1.5 3.3-.5 2.8-.4 2.8-.8 3.1-.3 3.2-.5 3.2-.1 3.4-.3 4.3 .2 3.9-.2 3.1-.3 3.4 M322 292.6l-1.5 2.8-1.7 3.1-1.4 3.3-1.7 3.3-1.7 3.3-1.5 2.7-1.3 3.1-.5 2.4 2 2.3 3.1 1.8 2.6 2.2 .5 3.1 .2 3.7 0 3.6 .2 3.6 0 3.4 .3 3-1.1 3.9-.7 3.2-1.3 2.9-.7 3-.9 3.1-.5 3.2-.1 2.7 .9 3.8 1.9 3.2 3.1 .3 3.8-.3 3-.2 4.8-3.3 M310.8 316.7l2.3 1.4 3.5 1.6 3.5 1.7 3 1.8 3.3 1.7 3.3 1.7 2.4 1.5 M341.7 292.3l-.8 3.1-.6 3.1-1 3.5-1 3.2-2 3.6-2 3-1 3.1-1.3 3.1 M354.4 292.5l-.4 2.8-1 2.9-.8 3.5-.7 3.7-.9 3.3-.6 2.9-2.1 3.7-1.7 3.1-1.5 3.4-.2 3.2-.5 3.1-.1 3-.2 3.3-.6 3.2-.8 3-.2 2.9-.7 3.3-.3 3.1-.3 2.6 2.2 3 3 2.3 2.6 2.2 2.6 2.3 2.3 1.6 3.8 2.8 5.4-1.7 1 5.1 4.2 3.9 M344.6 322.1l2.6 .3 3.4 .9 3 .5 3.9 .6 3.6 .7 2.9 .3 M360.9 292.3l-1.2 3.5-.7 4.2 .6 3.3 1.5 2.8 1.4 3.2 2.2 2.8 1.7 1.9 4.9-2.5-.1 3-1 3.7-2.6 3.3-2.5 3.1-1.2 4.9 3.7 .8 3.7 .5 2.4 3.9 1.9 3.8 4.7 2.2-.1 3.9-1.1 3.9-2.7 4.1 2.9 3 2.3 3.2-5.2-2.8-3.8-2.3-3.4-1.5-1.3 2.8-.5 3.1-.8 3.3-4.1 3.8 M373.4 292.6l.6 19 M374 316.8l3.4-.3 3.2-1 2.6-4-1.6-3.2-1.2-3.1 2.6-1.3 3.4-1.3 3.1-1.1 .6-3.1 .8-3.5 3.3-.2 2.9 .2 M383.1 315.9l3.2 1.3 3.7 .8 3.1 1.4 1.4 3.9 1.1 3.5 5.1 2.7 2.1-2.6 2.1-4 .3-3.2 0-3.3 .6-4.1-.1-3.4 0-3.5-.1-3.8-.1-3.6-.3-2.8-.3-2.8 M406.2 304.1l3.6-1.8 3.6-2.2 1.6-3.9 1.1-3.7 M413.5 292.5l1.4 2.7 1 3.3 1.4 3.5 1.3 3.4 1.2 3.1 1.3 2.9 1.7 3.4 1 3.1 1.2 3.5 1.1 3.2 1 3.2 .7 3.3 1.2 3.4 .5 3.1 1.1 3 .9 3.2 .7 3.2 .7 2.8 .5 3.6 .6 3.4 .4 3.4 .4 3 .5 3.2 .4 4.2 .1 3.5 M426.4 292.5l-1.3 3-1.4 3.3-2.7 3.3-2.1 3.3 M401 329.4l-1.7 2.2-1.5 2.4-1.8 3.2-1.9 3-1.6 2.8-1.7 3.4-1.3 3-1.4 3.3 .1 3.1 .6 2.5 .5 2.9 1.2 3.6 .8 3.3 1.3 3.2 .4 3 M407.5 305.4l.8 2.8 1.4 3.7 1.4 3.7 1.6 2.9 .8 3.2-1.3 2.6-2.2 2.9-1.7 2.5 3.3 2.2 3.3 2.7 2.5 3.2 2.5 3.3 4.7 .6 4.5 0 M398.6 337.2l3.3 .8 4.3 1.8 1.8 3 1.9 3.5 5 2.6-.2 3.5-1.2 3.8-1.5 2.3-1.9 3-1.5 2.5-.6 3.5-.6 3.6-.3 3 M412.3 358.6l2.9 1.4 3.1 .9 3.2 1 2.8 2.4 3.2 2.2 4 .9 4 .2 M431.3 292.3l1.1 3.1 .7 3.1 1.1 3.7 1 2.9 1.6 3.5 1.3 3.1 1.2 2.5 .8 3.3 1.6 3.1 1.5 2.4 3.4 3.8 3 .4 3.1 .7 3.8 0 2.9 .4 3.2 .4 3.2 .3 3.5 .2 2.8 .4 3.7-.1 3.3 .1 3.3-.3 2.8 .1 M437.9 311.8l2.6-.7 3.8-.4 3.2-.3 3.8-.6 3.3-.7 2.8-2.4 2.9-2.8 2.9-2.6 3.9-.3 3.7-.3 3.7-.2 2.7-.5 M446.7 327.1l-.1 3.8-1.3 3.8-4.7 .6-3.6-.3-3.5-.2-3.2-.3 M473.1 329.4l0 3.3-.8 3.2-2.7 .5-3.2 .2-3.2 .3-3.5 .3-2.6 .4-1.8 2.9-.7 3.1-3.1 1.7-2.3 1.9 .1 3.7 .8 4.1 .6 4 2.6 2.4-.7 3.7-1 4.4-1.1 3.3-3.2-1.4-3.2-2.2-3.9 1.3-.9 3.5 M501.7 334.7l-2.9 .2-3.3 .1-3.7 .1-2.8 .7-1 3.9-.4 3.7-2.9 .7-3.5 .5-2.5 2.5-2.9 3-2.1 2.2-1 3.3-.3 3.1 1.1 3.9 1.4 3.8 2.3 2.7 5.2 0 .5-4.1 1.1-3.9 4.3 .2-.6 3.8 .8 3.8 2.9 1.2 3.5 .3 3.7 .9 3 .5 M331.9 330.5l3.2 1.5 3.2 2.4 .2 3-.1 2.7-.4 3.3-.5 3.5-.2 2.9-.6 3.2-.4 3.5-.5 3-.9 3.3-.2 2.4-2.7 1.2 M341.1 374.3l1.2-5.2 3.1-1.4 3.2-1.3 4.9-2.2" fill="none" stroke="#4378dc" stroke-opacity="0.8" stroke-width="0.9" stroke-linecap="round" stroke-linejoin="round"/>
<path d="M43.2 -17.6l-.2 2.9-.1 2.8 .7 3-.2 3.8-.3 3.2 .5 3.3 .2 3.2-.3 3.4 .3 3.9 .2 3.1 0 3.2 .1 3 .7 3.5 .2 2.7 .2 3.2 .4 3.6 .3 3.2 .8 2.6-.1 3.5-.1 3.3 .7 3.2-.1 3.3 .3 3.3 4.8 .6-.7 2.9-1 2.6-.8 3.7-1.2 2.5-1.9 3.9-1.7 3.7 1.2 4.3 2 .7 3.3 .6 2.8 1.6 3.6 .3 3.3 1.7 3.3 1 3.5 .9 3.7 1.3 3.9 .9 3.6 1.9 2.8 .4 2.7 1.2 3.1 .2 3.3 1.2 3 .9 2.8 1.2 2.9 1.3 3.2 1.4 3.1 1.2 3.6 1 2.7 1 2.3 1.2-2.9 4.9-3.6 1.5-3.6 2-4.2 2.5-3 2.5 4.1 3 4.1-.9 4.8-1.3 3.8-1.4 4 .2 .5 3.3-.3 3-.2 3.7-.6 3.4-.4 4.8 .8 3.6 1.3 3.2 .7 3.4-1.5 3.9-1.8 3.4-2.5 2.9-3 2.6-3 2.5-.5 3.3-.9 3.5 .1 3.7-.7 3.4-.5 4.1 .7 3 2.5 .4 3.9-.2 3.3 0 4.1-.5 3.5 .3 3.3 .1 3.4-.5 3.1 .3 3 .1 2.7 0 3.1 .3 2.6 .3 3.3 1.7 2.9 1.8 2.2 2.7 2.2 1.7 1.2 2.2 .2 2.9-.7 3.6 0 3.6-.2 3.1 3.3 .7 3.1 .6 1.3 2.7 .9 3-.3 2.9-.9 3.7-1.3 3.1-1 3.2 1.5 4.1 1.3 2.7 4.5 .3 4.4 .9 1.5 2.8 1.4 3.7 1 3.9-.3 2.8-.1 3-4.9 4.3 1.6 4.7 .4 3.8 .7 4.3-1.8 3.8-2.3 3.9 .1 3.5 1.2 2.3 3 .3 4.2-.1 3.2 .3 .8 2.8 .4 3.4 4.2 .4 3.7 0 .5 5.1-1.3 3.9-1.4 4.3-.3 3.1 3 .9 3.7 .3 3.6 .7 1.5 2.4 .9 3.5 .4 3 1 3.3 1 3 2.6 2.5 3 3.2 2.2 2.7-.9 4-.7 2.5 3.3 1.8 3.6 2.5-.7 3.3-.5 4 1.9 3.4 2.8 2.8 1.3 5.2 2.9 2.3 3.9 1.7 4.5-1.2 2.9-.4 3.8-.3 3.7-.2 3.7-.7 3.1 .2 3.1-.3 3.8 0 3.4 0 3.8-.4 2.9 .5 3.7-.6 2.7 .1 3 .4 4.1-1.4 2.4 .3-.2 3.2-.7 3.1-1.1 3.3-.4 4.5-.9 3.2-1.2 3.3-2.1 3.8-2.6 3.2-1 3.9-.4 3.1 .6 3.9 3 2.8 5.7 2.3 1.6 .6 2.7-.4 2.5 .2 2 .1 2.4 .2 3 .1 2.8-.2 2.1 .1 3 .2 2.8 .3 2.8 .3 3 .1 2.4-.3 3.5 .1 2.5 .1 3 .3 3.4-.4 3.3 .3 2.7 .1 3.6-.1 2.6-.1 3.2 .3 3.5 .3 3.2-.6 3.5 .1 3.2 .1 3.3 .4 3.9-.2 3.1 0 3.6 .2 2.8 .1 3.6-.4 3.3 .5 3.9-.3 3.3 .2 3.1 0 3.9 .2 3-.3 3.7 .2 3.4-.1 3.8-.2 3.1 .3 3.1 .1 3.6-.4 3.3 .2 3.6-.1 3 .1 3.9-.2 2.8-.3 3.5-.2 3.6 .2 3.2-.2 3 .4 3.2-.3 2.7-.1 3.4 .3 3.4 0 3.1-.6 2.3 0 2.9-.2 3.3 0 2.9 0 2.6 .4 2.7-.2 2.9-.2 2.4 0 3.1-.5 2.3 .2 2.5 0 2.5-.4 2.4 .2 2.1-.2 2.4-.2 5-2.6 3.3-2.8 .4-3.4-.2-3.4-2-3.5-1.7-3.6-2-3.3-2.3-3.3-.2-2.8-.5-4.7 .7-3.5 .5-3 1.1-3.8-.5-3.3-.9-3.4-.7-3.2 .6-4.2 .2-3.4-.3-3.6 .1-3.4-1.3-3.3-2.8-1.6-4-1.5-3.2-.8-4.2-1.1-3.6-.1 1.8-5.2-2.2-3-1-3.6 .1-3.9-.1-3.5-2.5-3.6-2-3.2 .3-3 .5-4.5 .3-2.6 .9-3.3 0-3.4 .2-3-.1-3-3.6-1.9-3.1-1.4-3.5-2.5 .7-3.1 .7-2.9-.4-3.4-.8-2.9 .7-3.6 2-3 3.3-2.2 2.6-1.7 2.8-5.1 2.7-.4 4 .2 3.3-.7 2.9-.5 2.1-4.7 2.9 1.7 4 2.3 2.8 .2 4 .3 3.2-.7 4.2-.2 2.8 .1 3-.6 2.9-.6 3.2-.5 2.8-.4 3.4 .2 3.7-.4 3.3-.8 2.9-.3 .7-3.5 .2-3.5-.5-4.5 .2-3.9 .3-3.7 .2-3.5 .4-3.6 1-3.3 .3-3.6 1-3.4 1.2-3.3 1.6-5 1.1-5.6 1.1-3.6 1.2-3.5 1.8-3.3 1.3-2.9 3.4-1.7 4.1-2.1 2.6-1.5 2.1-1.1 3.2-1.6 2.4-1.7 2.5-2.7 1.8-2.5 2.4-2.6 2-3 1.8-3.3 2.1-3 1.4-3.7 .9-3 .3-3.5 1-3 .3-3.3 1.6-3.3 1.7-3 1.7-3.7 1.3-3.2 1.2-3.2 .6-2.6 .9-3.5 1.1-2.5 .9-3.8 .2-2.8 .1-3.5 0-3.3-.4-3.4 .1-2.8-.8-3.9 .5-3.2-.5-2.7 .1-3.3-.4-3.3 .1-3.8-.3-3.2 0-3.3 .4-3.1-.6-3.6-.2-3.2 .1-3.6-.1-3.1-.4-3.2 0-3.4 .3-2.8-.4-3.3 .2-3 .1-2.9-.5-2.7-.4-3.6-.4-3.1-.4-3.3-.4-3.3-.6-3.2-.2-3.2-.6-3.6 .4-3.1-.2-3.9-.5-3.1-.1-3 .4-2.6z" fill="none" stroke="#4378dc" stroke-opacity="0.85" stroke-width="0.9" stroke-linejoin="round"/>
<path d="M155.3 190.2l1.6 2.3-.2 2.9-.3 3.5-.3 3.5 .1 2.9 3.1 .7 3.3 .5 .9 2.7 .7 3.1 .3 3.2-1 3.4-1.3 3.5-.9 3.3 .9 3.5 1.7 2.8 4.4 .5 4.5 .8 1.6 3.1 1.2 3.7 1 3.4 0 3.4-.6 3-4.5 3.8 1.3 5.1 .8 3.8 .5 3.9-2.2 3.8-2.3 3.8 .1 3.5 1.2 2.9 3.4 .1 4-.2 3.4 .1 .8 3.2 .5 3.2 3.9 .3 3.8 .3 .6 5-1.2 3.8-1.4 4.1-.6 3.6 3 .7 3.8 .2 3.4 .4 1.6 2.9 1 3.4 .7 2.9 .8 3 1 3.1 2.5 3 2.9 3 2.3 2.9-.6 3.4-.7 3 3.2 1.9 3.2 1.9-.6 3.7-.7 3.9 2.5 3.3 2.6 3.1 1.3 5.1 3.1 2.2 3.3 1.7 5.1-1.3 3-.3 3.2-.4 3.6-.3 4.2-.3 3-.1 3.2-.1 3.4 0 3.5-.1 3.6-.1 3.5 0 3.3-.1 3.1 0 2.7-.1 4.2-.4 2.2-.3" fill="none" stroke="#97a5bf" stroke-width="1.35" stroke-linejoin="round" stroke-linecap="round"/>
<text x="317.7" y="82.5" font-size="11.6" fill="#5c5c5c" letter-spacing="0.9" text-anchor="middle" stroke="#5c5c5c" stroke-width="0.45">Jakarta</text>
<text x="639.8" y="248.3" font-size="11.4" fill="#5c5c5c" letter-spacing="0.7" text-anchor="middle" stroke="#5c5c5c" stroke-width="0.45">Bekasi</text>
<text x="213.4" y="126.3" font-size="7.3" fill="#777" letter-spacing="0.15" font-weight="normal" text-anchor="middle" stroke="#ededed" stroke-width="1.0" paint-order="stroke" stroke-linejoin="round">Kebon</text>
<text x="213.4" y="135.4" font-size="7.3" fill="#777" letter-spacing="0.15" font-weight="normal" text-anchor="middle" stroke="#ededed" stroke-width="1.0" paint-order="stroke" stroke-linejoin="round">Jeruk</text>
<text x="529.4" y="283.3" font-size="7.5" fill="#777" letter-spacing="0.15" font-weight="normal" text-anchor="middle" stroke="#ededed" stroke-width="1.0" paint-order="stroke" stroke-linejoin="round">Pondok</text>
<text x="529.4" y="291.7" font-size="7.5" fill="#777" letter-spacing="0.15" font-weight="normal" text-anchor="middle" stroke="#ededed" stroke-width="1.0" paint-order="stroke" stroke-linejoin="round">Gede</text>
<text x="443.9" y="257.5" font-size="6.3" fill="#a0a0a0" letter-spacing="0.1" font-weight="normal" text-anchor="middle" stroke="#ededed" stroke-width="1.0" paint-order="stroke" stroke-linejoin="round">Bandar</text>
<text x="443.9" y="265.2" font-size="6.3" fill="#a0a0a0" letter-spacing="0.1" font-weight="normal" text-anchor="middle" stroke="#ededed" stroke-width="1.0" paint-order="stroke" stroke-linejoin="round">Udara Halim</text>
<text x="443.9" y="272.2" font-size="6.3" fill="#a0a0a0" letter-spacing="0.1" font-weight="normal" text-anchor="middle" stroke="#ededed" stroke-width="1.0" paint-order="stroke" stroke-linejoin="round">Perdanakusuma</text>
<text x="116.2" y="48.0" font-size="6.8" fill="#8a8f98" letter-spacing="0.4" font-weight="normal" text-anchor="middle" transform="rotate(-4 116.2 48.0)" stroke="#ededed" stroke-width="1.0" paint-order="stroke" stroke-linejoin="round">Kali Mookervart</text>
<text x="14.0" y="64.5" font-size="6.8" fill="#8a8f98" letter-spacing="0.4" font-weight="normal" text-anchor="middle" transform="rotate(-8 14.0 64.5)" stroke="#ededed" stroke-width="1.0" paint-order="stroke" stroke-linejoin="round">ookervart</text>
<text x="258.0" y="123.5" font-size="6.2" fill="#8a8f98" letter-spacing="0.3" font-weight="normal" text-anchor="middle" transform="rotate(-72 258.0 123.5)" stroke="#ededed" stroke-width="1.0" paint-order="stroke" stroke-linejoin="round">Kali Krukut</text>
</svg></div>

 <svg class="abs" style="left:0;top:60.5px" width="780" height="384" viewBox="8 317.5 780 384" font-family="'Liberation Sans',sans-serif">
  <!-- top-right buttons -->
  <rect x="736.3" y="328.3" width="41.3" height="20.2" fill="#ffffff" stroke="#3f669c" stroke-width="0.9"/>
  <path d="M756.6,328.3V348.5" stroke="#3f669c" stroke-width="0.9"/>
  <g transform="translate(0,-0.6)">
  <g stroke="#4a90d0" stroke-width="0.9" fill="none"><path d="M745.2,333.2H751.2M745.2,335.9H751.2M745.2,338.8H751.2M745.2,341.6H751.2"/></g>
  <g fill="#2f6fae"><circle cx="742.6" cy="333.2" r=".8"/><circle cx="742.6" cy="335.9" r=".8"/><rect x="741.9" y="338.1" width="1.5" height="1.5"/><path d="M741.7,342.5L742.6,340.6L743.5,342.5Z"/><path d="M742.6,333V342" stroke="#2f6fae" stroke-width=".4"/></g>
  <g fill="#2d6aa6"><rect x="761.1" y="332.3" width="4.8" height="4.7"/><rect x="767.2" y="332.3" width="4.8" height="4.7"/><rect x="761.1" y="338.3" width="4.8" height="4.7"/><rect x="767.2" y="338.3" width="4.8" height="4.7"/></g>
  <g fill="#d9ecfa"><rect x="762.3" y="333.5" width="2.6" height="2.3"/><rect x="768.2" y="333.5" width="2.8" height="2.3"/><rect x="762.2" y="339.4" width="2.6" height="2.6"/><rect x="768.3" y="339.3" width="2.6" height="2.6"/></g>
  <g stroke="#2d6aa6" stroke-width=".6"><path d="M762.4,335.8L764.8,333.6M768.4,335.6L770.8,333.7M763.5,339.5V342M769.6,339.3V342"/></g>
  </g>
  <!-- zoom control -->
  <rect x="755.8" y="637.8" width="21.9" height="43.4" fill="#ffffff" stroke="#d6d6d6" stroke-width="0.5"/>
  <path d="M755.8,659.4H777.7" stroke="#d9d9d9" stroke-width="0.7"/>
  <path d="M761.6,647.3H771.8M766.7,642.3V652.2" stroke="#5c5c5c" stroke-width="0.8"/>
  <path d="M761.6,669.1H771.6" stroke="#9a9a9a" stroke-width="0.9"/>
  <!-- scale bars -->
  <g>
   <rect x="33.1" y="641.6" width="70.1" height="3.2" fill="#ffffff"/>
   <path d="M33.1,642.3H50.6M68.2,642.3H85.7" stroke="#111" stroke-width="1.3"/>
   <path d="M50.6,644H68.2M85.7,644H103.2" stroke="#222" stroke-width="1.3"/>
   <rect x="18" y="660.6" width="85.2" height="4.2" fill="#ffffff"/>
   <path d="M18,661.7H39.3M60.6,661.7H81.9" stroke="#111" stroke-width="2"/>
   <path d="M39.3,664H60.6M81.9,664H103.2" stroke="#222" stroke-width="1.5"/>
   <g font-size="9" fill="#222" stroke="#222" stroke-width=".25"><text x="17.8" y="658">0</text><text x="103.2" y="658" text-anchor="end">4 km</text><text x="17.8" y="678.2">0</text><text x="103.2" y="678.2" text-anchor="end">3 mi</text></g>
  </g>
 </svg>
 <div style="position:absolute;left:0;top:60px;width:780px;height:1.6px;background:#f7f7f7"></div>
 <div id="mph"><div class="a">Peta Pengendalian Wilayah<br>Skala RT</div><div class="b">(Pembaruan Data Terakhir 13 Mei 2021)</div></div>
 <div id="attr"><span style="position:absolute;left:3px">Esri, HERE, Garmin, METI/NASA, USGS</span><span style="position:absolute;right:4px;font-size:8.1px;color:#333">Powered by Esri</span></div>
 <div style="position:absolute;left:0;top:60.5px;width:780px;height:383.7px;border:1px solid #cfcfcf;border-top:none;box-sizing:border-box;pointer-events:none"></div>
</div>
<div id="ket">
 <div style="position:absolute;left:3.5px;top:4.4px;font-weight:bold;font-size:7.7px;color:#333;line-height:11px">Keterangan :</div>
 <div style="position:absolute;left:15px;top:26px;line-height:13.4px;white-space:nowrap">
  <div style="height:13.4px"><span class="bl"></span>RT Zona Rawan = RT yang memiliki tingkat resiko tinggi penularan COVID19</div>
  <div style="height:13.4px"><span class="bl"></span>Sumber Data : Dinas Kesehatan Provinsi DKI Jakarta</div>
  <div style="height:13.4px"><span class="bl"></span>Sumber Peta : Dinas Cipta Karya, Tata Ruang, dan Pertanahan Provinsi DKI Jakarta</div>
 </div>
 <div style="position:absolute;right:0;top:0;bottom:0;width:4px;background:#f1f1f1"><div style="position:absolute;left:0;top:0;width:4px;height:53px;background:#c4c4c4"></div></div>
</div>
<style>.bl{display:inline-block;width:2.6px;height:2.6px;border-radius:50%;background:#222;margin-right:8.3px;vertical-align:2px}</style>
<div class="card" style="left:796px;top:257px;width:258px;height:257px">
<div class="chead" style="height:89.89999999999998px"><div class="ct1">RT Zona Rawan</div><div class="ct2">Jakarta Pusat</div><div class="cnum" style="top:41.0px;font-size:43.3px">221</div></div>
<div class="clist" style="top:89.89999999999998px;height:167.10000000000002px">
<div class="row" style="top:-0.0px"><svg class="ic" width="16" height="16" viewBox="0 0 16 16"><path d="M0.8,0.9 L15.4,7.6 L15.4,15.4 L0.8,15.4 Z" fill="#f5333f" stroke="#e02838" stroke-width="0.6"/></svg><span class="rt">KEL. RAWASARI, RT 013, RW 009</span></div>
<div class="row" style="top:22.9px"><svg class="ic" width="16" height="16" viewBox="0 0 16 16"><path d="M0.8,0.9 L15.4,7.6 L15.4,15.4 L0.8,15.4 Z" fill="#fcb846" stroke="#f2ac3c" stroke-width="0.6"/></svg><span class="rt">KEL. KEBON KELAPA, RT 011, RW 001</span></div>
<div class="row" style="top:45.9px"><svg class="ic" width="16" height="16" viewBox="0 0 16 16"><path d="M0.8,0.9 L15.4,7.6 L15.4,15.4 L0.8,15.4 Z" fill="#fdfc4c" stroke="#e6e23e" stroke-width="0.6"/></svg><span class="rt">KEL. BENDUNGAN HILIR, RT 011, RW 005</span></div>
<div class="row" style="top:68.9px"><svg class="ic" width="16" height="16" viewBox="0 0 16 16"><path d="M0.8,0.9 L15.4,7.6 L15.4,15.4 L0.8,15.4 Z" fill="#fdfc4c" stroke="#e6e23e" stroke-width="0.6"/></svg><span class="rt">KEL. BENDUNGAN HILIR, RT 020, RW 004</span></div>
<div class="row" style="top:91.8px"><svg class="ic" width="16" height="16" viewBox="0 0 16 16"><path d="M0.8,0.9 L15.4,7.6 L15.4,15.4 L0.8,15.4 Z" fill="#fdfc4c" stroke="#e6e23e" stroke-width="0.6"/></svg><span class="rt">KEL. BENDUNGAN HILIR, RT 012, RW 007</span></div>
<div class="row" style="top:114.8px"><svg class="ic" width="16" height="16" viewBox="0 0 16 16"><path d="M0.8,0.9 L15.4,7.6 L15.4,15.4 L0.8,15.4 Z" fill="#fdfc4c" stroke="#e6e23e" stroke-width="0.6"/></svg><span class="rt">KEL. BENDUNGAN HILIR, RT 014, RW 003</span></div>
<div class="row" style="top:137.7px"><svg class="ic" width="16" height="16" viewBox="0 0 16 16"><path d="M0.8,0.9 L15.4,7.6 L15.4,15.4 L0.8,15.4 Z" fill="#fdfc4c" stroke="#e6e23e" stroke-width="0.6"/></svg><span class="rt">KEL. BUNGUR, RT 012, RW 002</span></div>
<div class="row" style="top:160.7px"><svg class="ic" width="16" height="16" viewBox="0 0 16 16"><path d="M0.8,0.9 L15.4,7.6 L15.4,15.4 L0.8,15.4 Z" fill="#fdfc4c" stroke="#e6e23e" stroke-width="0.6"/></svg><span class="rt"></span></div>
<div class="sbar"><div class="sthumb"></div></div>
</div></div><div class="card" style="left:1063px;top:257px;width:259px;height:257px">
<div class="chead" style="height:88.80000000000001px"><div class="ct1">RT Zona Rawan</div><div class="ct2">Jakarta Timur</div><div class="cnum" style="top:39.9px;font-size:43.3px">433</div></div>
<div class="clist" style="top:88.80000000000001px;height:168.2px">
<div class="row" style="top:-0.0px"><svg class="ic" width="16" height="16" viewBox="0 0 16 16"><path d="M0.8,0.9 L15.4,7.6 L15.4,15.4 L0.8,15.4 Z" fill="#f5333f" stroke="#e02838" stroke-width="0.6"/></svg><span class="rt">KEL. CIRACAS, RT 006, RW 003</span></div>
<div class="row" style="top:22.9px"><svg class="ic" width="16" height="16" viewBox="0 0 16 16"><path d="M0.8,0.9 L15.4,7.6 L15.4,15.4 L0.8,15.4 Z" fill="#fcb846" stroke="#f2ac3c" stroke-width="0.6"/></svg><span class="rt">KEL. CAKUNG TIMUR, RT 007, RW 006</span></div>
<div class="row" style="top:45.9px"><svg class="ic" width="16" height="16" viewBox="0 0 16 16"><path d="M0.8,0.9 L15.4,7.6 L15.4,15.4 L0.8,15.4 Z" fill="#fcb846" stroke="#f2ac3c" stroke-width="0.6"/></svg><span class="rt">KEL. CIPINANG BESAR SELATAN, RT 003, RW 008</span></div>
<div class="row" style="top:68.8px"><svg class="ic" width="16" height="16" viewBox="0 0 16 16"><path d="M0.8,0.9 L15.4,7.6 L15.4,15.4 L0.8,15.4 Z" fill="#fcb846" stroke="#f2ac3c" stroke-width="0.6"/></svg><span class="rt">KEL. CIPINANG MELAYU, RT 009, RW 011</span></div>
<div class="row" style="top:91.8px"><svg class="ic" width="16" height="16" viewBox="0 0 16 16"><path d="M0.8,0.9 L15.4,7.6 L15.4,15.4 L0.8,15.4 Z" fill="#fcb846" stroke="#f2ac3c" stroke-width="0.6"/></svg><span class="rt">KEL. JATINEGARA KAUM, RT 005, RW 003</span></div>
<div class="row" style="top:114.8px"><svg class="ic" width="16" height="16" viewBox="0 0 16 16"><path d="M0.8,0.9 L15.4,7.6 L15.4,15.4 L0.8,15.4 Z" fill="#fcb846" stroke="#f2ac3c" stroke-width="0.6"/></svg><span class="rt">KEL. KALISARI, RT 008, RW 001</span></div>
<div class="row" style="top:137.7px"><svg class="ic" width="16" height="16" viewBox="0 0 16 16"><path d="M0.8,0.9 L15.4,7.6 L15.4,15.4 L0.8,15.4 Z" fill="#fcb846" stroke="#f2ac3c" stroke-width="0.6"/></svg><span class="rt">KEL. KEBON PALA, RT 010, RW 004</span></div>
<div class="row" style="top:160.7px"><svg class="ic" width="16" height="16" viewBox="0 0 16 16"><path d="M0.8,0.9 L15.4,7.6 L15.4,15.4 L0.8,15.4 Z" fill="#fcb846" stroke="#f2ac3c" stroke-width="0.6"/></svg><span class="rt"></span></div>
<div class="sbar"><div class="sthumb"></div></div>
</div></div><div class="card" style="left:1331px;top:257px;width:259.5px;height:257px">
<div class="chead" style="height:87.69999999999999px"><div class="ct1">RT Zona Rawan</div><div class="ct2">Jakarta Barat</div><div class="cnum" style="top:39.6px;font-size:43.3px">515</div></div>
<div class="clist" style="top:87.69999999999999px;height:169.3px">
<div class="row" style="top:-0.0px"><svg class="ic" width="16" height="16" viewBox="0 0 16 16"><path d="M0.8,0.9 L15.4,7.6 L15.4,15.4 L0.8,15.4 Z" fill="#fcb846" stroke="#f2ac3c" stroke-width="0.6"/></svg><span class="rt">KEL. CENGKARENG TIMUR, RT 009, RW 004</span></div>
<div class="row" style="top:22.9px"><svg class="ic" width="16" height="16" viewBox="0 0 16 16"><path d="M0.8,0.9 L15.4,7.6 L15.4,15.4 L0.8,15.4 Z" fill="#fcb846" stroke="#f2ac3c" stroke-width="0.6"/></svg><span class="rt">KEL. CENGKARENG TIMUR, RT 009, RW 001</span></div>
<div class="row" style="top:45.9px"><svg class="ic" width="16" height="16" viewBox="0 0 16 16"><path d="M0.8,0.9 L15.4,7.6 L15.4,15.4 L0.8,15.4 Z" fill="#fcb846" stroke="#f2ac3c" stroke-width="0.6"/></svg><span class="rt">KEL. DURI KOSAMBI, RT 007, RW 012</span></div>
<div class="row" style="top:68.8px"><svg class="ic" width="16" height="16" viewBox="0 0 16 16"><path d="M0.8,0.9 L15.4,7.6 L15.4,15.4 L0.8,15.4 Z" fill="#fcb846" stroke="#f2ac3c" stroke-width="0.6"/></svg><span class="rt">KEL. DURI KOSAMBI, RT 015, RW 011</span></div>
<div class="row" style="top:91.8px"><svg class="ic" width="16" height="16" viewBox="0 0 16 16"><path d="M0.8,0.9 L15.4,7.6 L15.4,15.4 L0.8,15.4 Z" fill="#fcb846" stroke="#f2ac3c" stroke-width="0.6"/></svg><span class="rt">KEL. DURI KOSAMBI, RT 003, RW 001</span></div>
<div class="row" style="top:114.8px"><svg class="ic" width="16" height="16" viewBox="0 0 16 16"><path d="M0.8,0.9 L15.4,7.6 L15.4,15.4 L0.8,15.4 Z" fill="#fcb846" stroke="#f2ac3c" stroke-width="0.6"/></svg><span class="rt">KEL. KEMBANGAN UTARA, RT 007, RW 010</span></div>
<div class="row" style="top:137.7px"><svg class="ic" width="16" height="16" viewBox="0 0 16 16"><path d="M0.8,0.9 L15.4,7.6 L15.4,15.4 L0.8,15.4 Z" fill="#fcb846" stroke="#f2ac3c" stroke-width="0.6"/></svg><span class="rt">KEL. MERUYA UTARA, RT 001, RW 001</span></div>
<div class="row" style="top:160.7px"><svg class="ic" width="16" height="16" viewBox="0 0 16 16"><path d="M0.8,0.9 L15.4,7.6 L15.4,15.4 L0.8,15.4 Z" fill="#fcb846" stroke="#f2ac3c" stroke-width="0.6"/></svg><span class="rt"></span></div>
<div class="sbar"><div class="sthumb"></div></div>
</div></div><div class="card" style="left:796px;top:521.8px;width:258px;height:257.20000000000005px">
<div class="chead" style="height:85.80000000000007px"><div class="ct1" style="margin-top:-0.8px">RT Zona Rawan</div><div class="ct2" style="margin-top:-0.8px">Jakarta Selatan</div><div class="cnum" style="top:39.2px;font-size:41.3px">314</div></div>
<div class="clist" style="top:85.80000000000007px;height:171.39999999999998px">
<div class="row" style="top:-0.0px"><svg class="ic" width="16" height="16" viewBox="0 0 16 16"><path d="M0.8,0.9 L15.4,7.6 L15.4,15.4 L0.8,15.4 Z" fill="#fcb846" stroke="#f2ac3c" stroke-width="0.6"/></svg><span class="rt">KEL. PONDOK LABU, RT 013, RW 003</span></div>
<div class="row" style="top:22.9px"><svg class="ic" width="16" height="16" viewBox="0 0 16 16"><path d="M0.8,0.9 L15.4,7.6 L15.4,15.4 L0.8,15.4 Z" fill="#fdfc4c" stroke="#e6e23e" stroke-width="0.6"/></svg><span class="rt">KEL. BANGKA, RT 013, RW 001</span></div>
<div class="row" style="top:45.9px"><svg class="ic" width="16" height="16" viewBox="0 0 16 16"><path d="M0.8,0.9 L15.4,7.6 L15.4,15.4 L0.8,15.4 Z" fill="#fdfc4c" stroke="#e6e23e" stroke-width="0.6"/></svg><span class="rt">KEL. BANGKA, RT 007, RW 001</span></div>
<div class="row" style="top:68.8px"><svg class="ic" width="16" height="16" viewBox="0 0 16 16"><path d="M0.8,0.9 L15.4,7.6 L15.4,15.4 L0.8,15.4 Z" fill="#fdfc4c" stroke="#e6e23e" stroke-width="0.6"/></svg><span class="rt">KEL. BANGKA, RT 005, RW 001</span></div>
<div class="row" style="top:91.8px"><svg class="ic" width="16" height="16" viewBox="0 0 16 16"><path d="M0.8,0.9 L15.4,7.6 L15.4,15.4 L0.8,15.4 Z" fill="#fdfc4c" stroke="#e6e23e" stroke-width="0.6"/></svg><span class="rt">KEL. BANGKA, RT 003, RW 002</span></div>
<div class="row" style="top:114.8px"><svg class="ic" width="16" height="16" viewBox="0 0 16 16"><path d="M0.8,0.9 L15.4,7.6 L15.4,15.4 L0.8,15.4 Z" fill="#fdfc4c" stroke="#e6e23e" stroke-width="0.6"/></svg><span class="rt">KEL. BANGKA, RT 005, RW 005</span></div>
<div class="row" style="top:137.7px"><svg class="ic" width="16" height="16" viewBox="0 0 16 16"><path d="M0.8,0.9 L15.4,7.6 L15.4,15.4 L0.8,15.4 Z" fill="#fdfc4c" stroke="#e6e23e" stroke-width="0.6"/></svg><span class="rt">KEL. BANGKA, RT 009, RW 005</span></div>
<div class="row" style="top:160.7px"><svg class="ic" width="16" height="16" viewBox="0 0 16 16"><path d="M0.8,0.9 L15.4,7.6 L15.4,15.4 L0.8,15.4 Z" fill="#fdfc4c" stroke="#e6e23e" stroke-width="0.6"/></svg><span class="rt"></span></div>
<div class="sbar"><div class="sthumb"></div></div>
</div></div><div class="card" style="left:1063px;top:521.8px;width:259px;height:257.20000000000005px">
<div class="chead" style="height:84.70000000000005px"><div class="ct1" style="margin-top:-0.8px">RT Zona Rawan</div><div class="ct2" style="margin-top:-0.8px">Jakarta Utara</div><div class="cnum" style="top:38.3px;font-size:41.3px">358</div></div>
<div class="clist" style="top:84.70000000000005px;height:172.5px">
<div class="row" style="top:-0.0px"><svg class="ic" width="16" height="16" viewBox="0 0 16 16"><path d="M0.8,0.9 L15.4,7.6 L15.4,15.4 L0.8,15.4 Z" fill="#fcb846" stroke="#f2ac3c" stroke-width="0.6"/></svg><span class="rt">KEL. KAPUK MUARA, RT 004, RW 003</span></div>
<div class="row" style="top:22.9px"><svg class="ic" width="16" height="16" viewBox="0 0 16 16"><path d="M0.8,0.9 L15.4,7.6 L15.4,15.4 L0.8,15.4 Z" fill="#fcb846" stroke="#f2ac3c" stroke-width="0.6"/></svg><span class="rt">KEL. PADEMANGAN BARAT, RT 004, RW 014</span></div>
<div class="row" style="top:45.9px"><svg class="ic" width="16" height="16" viewBox="0 0 16 16"><path d="M0.8,0.9 L15.4,7.6 L15.4,15.4 L0.8,15.4 Z" fill="#fcb846" stroke="#f2ac3c" stroke-width="0.6"/></svg><span class="rt">KEL. PENJARINGAN, RT 002, RW 012</span></div>
<div class="row" style="top:68.9px"><svg class="ic" width="16" height="16" viewBox="0 0 16 16"><path d="M0.8,0.9 L15.4,7.6 L15.4,15.4 L0.8,15.4 Z" fill="#fdfc4c" stroke="#e6e23e" stroke-width="0.6"/></svg><span class="rt">KEL. ANCOL, RT 010, RW 010</span></div>
<div class="row" style="top:91.8px"><svg class="ic" width="16" height="16" viewBox="0 0 16 16"><path d="M0.8,0.9 L15.4,7.6 L15.4,15.4 L0.8,15.4 Z" fill="#fdfc4c" stroke="#e6e23e" stroke-width="0.6"/></svg><span class="rt">KEL. ANCOL, RT 007, RW 010</span></div>
<div class="row" style="top:114.8px"><svg class="ic" width="16" height="16" viewBox="0 0 16 16"><path d="M0.8,0.9 L15.4,7.6 L15.4,15.4 L0.8,15.4 Z" fill="#fdfc4c" stroke="#e6e23e" stroke-width="0.6"/></svg><span class="rt">KEL. ANCOL, RT 001, RW 010</span></div>
<div class="row" style="top:137.7px"><svg class="ic" width="16" height="16" viewBox="0 0 16 16"><path d="M0.8,0.9 L15.4,7.6 L15.4,15.4 L0.8,15.4 Z" fill="#fdfc4c" stroke="#e6e23e" stroke-width="0.6"/></svg><span class="rt">KEL. ANCOL, RT 004, RW 001</span></div>
<div class="row" style="top:160.7px"><svg class="ic" width="16" height="16" viewBox="0 0 16 16"><path d="M0.8,0.9 L15.4,7.6 L15.4,15.4 L0.8,15.4 Z" fill="#fdfc4c" stroke="#e6e23e" stroke-width="0.6"/></svg><span class="rt"></span></div>
<div class="sbar"><div class="sthumb"></div></div>
</div></div><div class="card" style="left:1331px;top:521.8px;width:259.5px;height:257.20000000000005px">
<div class="chead" style="height:82.70000000000005px"><div class="ct1" style="margin-top:-0.8px">RT Zona Rawan</div><div class="ct2" style="margin-top:-0.8px">Kab. Kep. Seribu</div><div class="cnum" style="top:38.5px;font-size:41.3px">4</div></div>
<div class="clist" style="top:82.70000000000005px;height:174.5px">
<div class="row" style="top:-0.0px"><svg class="ic" width="16" height="16" viewBox="0 0 16 16"><path d="M0.8,0.9 L15.4,7.6 L15.4,15.4 L0.8,15.4 Z" fill="#fdfc4c" stroke="#e6e23e" stroke-width="0.6"/></svg><span class="rt">KEL. PULAU PANGGANG, RT 001, RW 001</span></div>
<div class="row" style="top:22.9px"><svg class="ic" width="16" height="16" viewBox="0 0 16 16"><path d="M0.8,0.9 L15.4,7.6 L15.4,15.4 L0.8,15.4 Z" fill="#fdfc4c" stroke="#e6e23e" stroke-width="0.6"/></svg><span class="rt">KEL. PULAU PANGGANG, RT 001, RW 004</span></div>
<div class="row" style="top:45.9px"><svg class="ic" width="16" height="16" viewBox="0 0 16 16"><path d="M0.8,0.9 L15.4,7.6 L15.4,15.4 L0.8,15.4 Z" fill="#fdfc4c" stroke="#e6e23e" stroke-width="0.6"/></svg><span class="rt">KEL. PULAU PANGGANG, RT 003, RW 004</span></div>
<div class="row" style="top:68.9px"><svg class="ic" width="16" height="16" viewBox="0 0 16 16"><path d="M0.8,0.9 L15.4,7.6 L15.4,15.4 L0.8,15.4 Z" fill="#fdfc4c" stroke="#e6e23e" stroke-width="0.6"/></svg><span class="rt">KEL. PULAU PANGGANG, RT 004, RW 004</span></div>
</div></div>
</body></html>
